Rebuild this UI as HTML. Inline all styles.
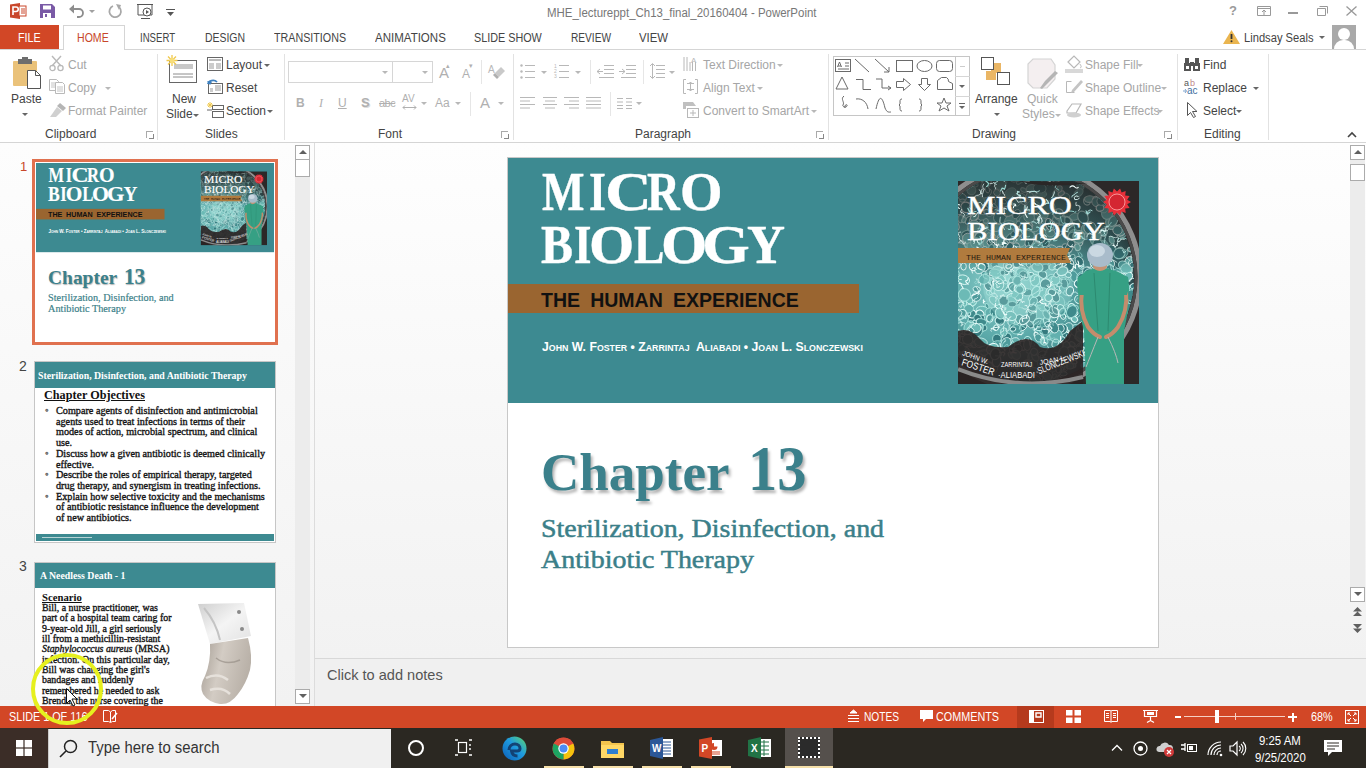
<!DOCTYPE html>
<html><head><meta charset="utf-8">
<style>
*{margin:0;padding:0;box-sizing:border-box}
html,body{width:1366px;height:768px;overflow:hidden;background:#fff;font-family:"Liberation Sans",sans-serif;color:#444}
.a{position:absolute}
.t{position:absolute;white-space:nowrap;line-height:1}
svg{position:absolute;overflow:visible}
.tab{position:absolute;top:32px;font-size:12px;line-height:1;color:#444;white-space:nowrap;transform-origin:0 0;transform:scaleX(0.82)}
.gl{position:absolute;top:128px;font-size:12px;line-height:1;color:#444;white-space:nowrap}
.sep{position:absolute;top:54px;width:1px;height:86px;background:#e2e2e2}
.rb{position:absolute;font-size:12px;line-height:1;color:#444;white-space:nowrap}
.dis{color:#a6a6a6}
.dd{position:absolute;width:0;height:0;border-left:3px solid transparent;border-right:3px solid transparent;border-top:3px solid #666}
.ddd{border-top-color:#b8b8b8}
.lau{position:absolute;width:7px;height:7px;border-left:1px solid #aaa;border-top:1px solid #aaa}
.lau:after{content:"";position:absolute;left:2px;top:2px;width:4px;height:4px;border-right:1px solid #888;border-bottom:1px solid #888}
</style></head><body>
<!-- backgrounds -->
<div class="a" style="left:0;top:0;width:1366px;height:49px;background:#fff"></div>
<div class="a" style="left:0;top:49px;width:1366px;height:94px;background:#fff;border-top:1px solid #d5d5d5;border-bottom:1px solid #d5d5d5"></div>
<div class="a" style="left:315px;top:143px;width:1051px;height:515px;background:linear-gradient(#fefefe,#f2f2f2)"></div>
<div class="a" style="left:315px;top:658px;width:1051px;height:48px;background:#f0f0f0;border-top:1px solid #d8d8d8"></div>
<div class="a" style="left:0;top:143px;width:315px;height:563px;background:linear-gradient(#fdfdfd,#f2f2f2);border-right:1px solid #dcdcdc"></div>
<div class="a" style="left:0;top:706px;width:1366px;height:22px;background:#d24726"></div>
<div class="a" style="left:0;top:728px;width:1366px;height:40px;background:#2b2822"></div>
<!-- title bar icons -->
<svg style="left:9px;top:3px" width="18" height="16" viewBox="0 0 18 16">
<path d="M1 1.5 L11 0 L11 16 L1 14.5 Z" fill="#c9472b"/>
<rect x="10" y="3" width="7" height="10" fill="#fff" stroke="#c9472b" stroke-width="1"/>
<path d="M12 6h4M12 8h4M12 10h4" stroke="#c9472b" stroke-width="1"/>
<path d="M4 12V4h3a2 2 0 0 1 0 4.5H4" fill="none" stroke="#fff" stroke-width="1.6"/>
</svg>
<svg style="left:40px;top:4px" width="15" height="14" viewBox="0 0 15 14">
<path d="M0 0h12l3 3v11H0z" fill="#7a5aa6"/>
<rect x="3" y="1.5" width="8" height="4" fill="#fff"/>
<rect x="3" y="9" width="8" height="5" fill="#fff"/>
<rect x="5" y="10" width="2" height="3" fill="#7a5aa6"/>
</svg>
<svg style="left:69px;top:4px" width="16" height="13" viewBox="0 0 16 13">
<path d="M4 5h6a4 4 0 0 1 0 8H8" fill="none" stroke="#8d8d8d" stroke-width="1.8"/>
<path d="M0 5l5-4.5v9z" fill="#8d8d8d"/>
</svg>
<div class="dd ddd" style="left:89px;top:10px;border-top-color:#a0a0a0"></div>
<svg style="left:108px;top:4px" width="15" height="14" viewBox="0 0 15 14">
<path d="M11.5 3.5A5.8 5.8 0 1 1 5 2" fill="none" stroke="#a8a8a8" stroke-width="1.8"/>
<path d="M8 0l5 1-2 5z" fill="#a8a8a8"/>
</svg>
<svg style="left:137px;top:4px" width="17" height="15" viewBox="0 0 17 15">
<path d="M0 .5h16M1 1v10h14V1" fill="none" stroke="#555" stroke-width="1"/>
<circle cx="10" cy="8" r="4" fill="#fff" stroke="#555" stroke-width="1"/>
<path d="M9 6v4l3-2z" fill="#555"/>
<path d="M4 14.5h9" stroke="#555" stroke-width="1"/>
</svg>
<svg style="left:166px;top:9px" width="9" height="7" viewBox="0 0 9 7">
<path d="M0 .5h9" stroke="#555" stroke-width="1"/><path d="M1 3h7l-3.5 4z" fill="#555"/>
</svg>
<div class="t" style="left:547px;top:7px;font-size:12px;color:#777;transform-origin:0 0;transform:scaleX(0.955)">MHE_lectureppt_Ch13_final_20160404 - PowerPoint</div>
<!-- window controls -->
<div class="t" style="left:1229px;top:4px;font-size:13px;font-weight:bold;color:#9a9a9a">?</div>
<svg style="left:1257px;top:6px" width="14" height="10" viewBox="0 0 14 10"><path d="M.5 .5h13v9H.5zM.5 2.5h13" fill="none" stroke="#999" stroke-width="1"/><path d="M7 4v5M5 6l2-2 2 2" fill="none" stroke="#999" stroke-width="1"/></svg>
<div class="a" style="left:1288px;top:12px;width:10px;height:1.5px;background:#999"></div>
<svg style="left:1317px;top:6px" width="11" height="10" viewBox="0 0 11 10"><path d="M.5 2.5h8v7h-8zM2.5 .5h8v7" fill="none" stroke="#999" stroke-width="1"/></svg>
<svg style="left:1346px;top:6px" width="11" height="10" viewBox="0 0 11 10"><path d="M.5 .5l10 9M10.5 .5l-10 9" fill="none" stroke="#999" stroke-width="1.3"/></svg>

<!-- tabs -->
<div class="a" style="left:0;top:25px;width:59px;height:24px;background:#d24726"></div>
<div class="tab" style="left:18px;color:#fff;transform:scaleX(0.9)">FILE</div>
<div class="a" style="left:63px;top:25px;width:62px;height:25px;background:#fff;border:1px solid #d5d5d5;border-bottom:none"></div>
<div class="tab" style="left:77px;color:#c8472a;transform:scaleX(0.88)">HOME</div>
<div class="tab" style="left:140px;transform:scaleX(0.8)">INSERT</div>
<div class="tab" style="left:205px;transform:scaleX(0.87)">DESIGN</div>
<div class="tab" style="left:274px;transform:scaleX(0.893)">TRANSITIONS</div>
<div class="tab" style="left:375px;transform:scaleX(0.96)">ANIMATIONS</div>
<div class="tab" style="left:474px;transform:scaleX(0.9)">SLIDE SHOW</div>
<div class="tab" style="left:571px;transform:scaleX(0.846)">REVIEW</div>
<div class="tab" style="left:639px;transform:scaleX(0.946)">VIEW</div>
<!-- account -->
<svg style="left:1223px;top:30px" width="17" height="14" viewBox="0 0 17 14"><path d="M8.5 0L17 14H0z" fill="#eab54f"/><path d="M8.5 4v5" stroke="#333" stroke-width="1.8"/><circle cx="8.5" cy="11.3" r="1" fill="#333"/></svg>
<div class="t" style="left:1244px;top:32px;font-size:12px;color:#444;transform-origin:0 0;transform:scaleX(0.93)">Lindsay Seals</div>
<div class="dd" style="left:1319px;top:36px"></div>
<div class="a" style="left:1332px;top:25px;width:24px;height:24px;background:#a9a9a9;overflow:hidden">
 <div class="a" style="left:6px;top:3px;width:12px;height:12px;border-radius:50%;background:#fff"></div>
 <div class="a" style="left:2px;top:15px;width:20px;height:14px;border-radius:9px 9px 0 0;background:#fff"></div>
</div>
<!-- ribbon: clipboard -->
<svg style="left:12px;top:57px" width="30" height="32" viewBox="0 0 30 32">
<rect x="1" y="4" width="24" height="25" rx="1" fill="#eac27a"/>
<rect x="6" y="2" width="14" height="5" fill="#6d6d6d"/><rect x="10" y="0" width="6" height="3" fill="#6d6d6d"/>
<path d="M15.5 13.5h8l5 5v13h-13z" fill="#fff" stroke="#555" stroke-width="1"/>
<path d="M23.5 13.5v5h5" fill="none" stroke="#555" stroke-width="1"/>
</svg>
<div class="rb" style="left:11px;top:93px">Paste</div>
<div class="dd" style="left:22px;top:113px"></div>
<svg style="left:49px;top:56px" width="15" height="15" viewBox="0 0 15 15">
<path d="M3 0l9 10M12 0L3 10" stroke="#b9b9b9" stroke-width="1.4"/>
<circle cx="3.5" cy="12" r="2.6" fill="none" stroke="#b9b9b9" stroke-width="1.3"/><circle cx="11.5" cy="12" r="2.6" fill="none" stroke="#b9b9b9" stroke-width="1.3"/>
</svg>
<div class="rb dis" style="left:68px;top:59px">Cut</div>
<svg style="left:49px;top:79px" width="16" height="15" viewBox="0 0 16 15">
<path d="M.5 .5h7l2 2v9H.5z" fill="#fff" stroke="#b9b9b9"/><path d="M6.5 3.5h7l2 2v9h-9z" fill="#fff" stroke="#b9b9b9"/>
<path d="M8 8h6M8 10h6M8 12h6M2 4h4M2 6h4M2 8h4" stroke="#c4c4c4"/>
</svg>
<div class="rb dis" style="left:68px;top:82px">Copy</div>
<div class="dd ddd" style="left:105px;top:87px"></div>
<svg style="left:50px;top:103px" width="16" height="14" viewBox="0 0 16 14">
<path d="M10 0l6 5-3 3-6-5z" fill="#b5b5b5"/><path d="M7 4l5 4-6 6H0z" fill="#d0d0d0"/>
</svg>
<div class="rb dis" style="left:68px;top:105px">Format Painter</div>
<div class="gl" style="left:45px">Clipboard</div>
<div class="lau" style="left:146px;top:131px"></div>
<div class="sep" style="left:157px"></div>

<!-- slides -->
<svg style="left:166px;top:55px" width="33" height="29" viewBox="0 0 33 29">
<rect x="3.5" y="5.5" width="27" height="22" fill="#fff" stroke="#666" stroke-width="1"/>
<rect x="8" y="9" width="19" height="5" fill="#c8c8c8"/>
<path d="M7 19h20M7 22h20" stroke="#8c8c8c" stroke-width="1"/>
<g stroke="#f0c84a" stroke-width="1.3"><path d="M6 0v11M0.5 5.5h11M2 1.5l8 8M10 1.5l-8 8"/></g>
<circle cx="6" cy="5.5" r="2.5" fill="#f7de7a"/>
</svg>
<div class="rb" style="left:172px;top:93px">New</div>
<div class="rb" style="left:166px;top:108px">Slide</div>
<div class="dd" style="left:193px;top:114px"></div>
<svg style="left:207px;top:57px" width="16" height="14" viewBox="0 0 16 14">
<rect x=".5" y=".5" width="15" height="13" fill="#fff" stroke="#666"/><rect x="2" y="2" width="12" height="2" fill="#bbb"/>
<rect x="2" y="6" width="5" height="6" fill="#ccc"/><path d="M9 7h5M9 9h5M9 11h5" stroke="#999"/>
</svg>
<div class="rb" style="left:226px;top:59px">Layout</div>
<div class="dd" style="left:264px;top:64px"></div>
<svg style="left:207px;top:79px" width="16" height="15" viewBox="0 0 16 15">
<rect x="1.5" y="4.5" width="14" height="10" fill="#fff" stroke="#666"/><path d="M8 7h6M8 9h6M8 11h6M3 10h3M3 12h3" stroke="#999"/>
<path d="M1 5a5 4 0 0 1 9-2" fill="none" stroke="#3d80c0" stroke-width="1.8"/><path d="M0 2l3 4 2-3z" fill="#3d80c0"/>
</svg>
<div class="rb" style="left:226px;top:82px">Reset</div>
<svg style="left:207px;top:102px" width="17" height="16" viewBox="0 0 17 16">
<rect x="5.5" y="3.5" width="11" height="4" fill="#fff" stroke="#666"/><rect x="5.5" y="9.5" width="11" height="6" fill="#fff" stroke="#666"/>
<g stroke="#f0c84a" stroke-width="1"><path d="M3 0v6M0 3h6M1 1l4 4M5 1L1 5"/></g><path d="M0 8h5" stroke="#666"/>
</svg>
<div class="rb" style="left:226px;top:105px">Section</div>
<div class="dd" style="left:267px;top:110px"></div>
<div class="gl" style="left:205px">Slides</div>
<div class="sep" style="left:284px"></div>

<!-- font -->
<div class="a" style="left:288px;top:61px;width:105px;height:22px;border:1px solid #d6d6d6;background:#fff"></div>
<div class="a" style="left:392px;top:61px;width:41px;height:22px;border:1px solid #d6d6d6;background:#fff"></div>
<div class="dd ddd" style="left:382px;top:71px"></div>
<div class="dd ddd" style="left:422px;top:71px"></div>
<div class="t" style="left:439px;top:65px;font-size:15px;color:#b0b0b0">A</div>
<div class="t" style="left:446px;top:62px;font-size:7px;color:#b0b0b0">▴</div>
<div class="t" style="left:462px;top:68px;font-size:12px;color:#b0b0b0">A</div>
<div class="t" style="left:469px;top:62px;font-size:7px;color:#b0b0b0">▾</div>
<div class="a" style="left:481px;top:60px;width:1px;height:24px;background:#e6e6e6"></div>
<svg style="left:488px;top:63px" width="17" height="17" viewBox="0 0 17 17">
<text x="0" y="10" font-size="10" fill="#b8b8b8" font-family="Liberation Sans">A</text>
<path d="M7 10l6-6 4 4-6 6z" fill="#c9c9c9"/><path d="M5 12l2-2 4 4-2 2z" fill="#b0b0b0"/>
</svg>
<div class="t" style="left:296px;top:97px;font-size:12px;font-weight:bold;color:#b0b0b0">B</div>
<div class="t" style="left:319px;top:97px;font-size:12px;font-style:italic;color:#b0b0b0;font-family:'Liberation Serif'">I</div>
<div class="t" style="left:338px;top:97px;font-size:12px;color:#b0b0b0;text-decoration:underline">U</div>
<div class="t" style="left:361px;top:96px;font-size:13px;font-weight:bold;color:#b0b0b0;text-shadow:1px 1px 0 #ddd">S</div>
<div class="t" style="left:379px;top:98px;font-size:11px;color:#b0b0b0;text-decoration:line-through;letter-spacing:-0.5px">abc</div>
<div class="t" style="left:402px;top:94px;font-size:10px;color:#b0b0b0">AV</div>
<svg style="left:402px;top:105px" width="15" height="5" viewBox="0 0 15 5"><path d="M1 2.5h13M3 .5l-2 2 2 2M12 .5l2 2-2 2" fill="none" stroke="#b0b0b0"/></svg>
<div class="dd ddd" style="left:421px;top:102px"></div>
<div class="t" style="left:435px;top:97px;font-size:12px;color:#b0b0b0">Aa</div>
<div class="dd ddd" style="left:455px;top:102px"></div>
<div class="a" style="left:470px;top:92px;width:1px;height:24px;background:#e6e6e6"></div>
<div class="t" style="left:480px;top:95px;font-size:15px;color:#b0b0b0">A</div>
<div class="dd ddd" style="left:498px;top:102px"></div>
<div class="gl" style="left:378px">Font</div>
<div class="lau" style="left:501px;top:131px"></div>
<div class="sep" style="left:513px"></div>
<!-- paragraph -->
<svg style="left:520px;top:64px" width="16" height="15" viewBox="0 0 16 15"><g fill="#b8b8b8"><circle cx="1.5" cy="1.5" r="1.2"/><circle cx="1.5" cy="7.5" r="1.2"/><circle cx="1.5" cy="13.5" r="1.2"/></g><path d="M5 1.5h10M5 7.5h10M5 13.5h10" stroke="#b8b8b8"/></svg>
<div class="dd ddd" style="left:541px;top:71px"></div>
<svg style="left:554px;top:63px" width="16" height="16" viewBox="0 0 16 16"><text x="0" y="5" font-size="5" fill="#b8b8b8" font-family="Liberation Sans">1</text><text x="0" y="10" font-size="5" fill="#b8b8b8" font-family="Liberation Sans">2</text><text x="0" y="15" font-size="5" fill="#b8b8b8" font-family="Liberation Sans">3</text><path d="M5 2.5h10M5 8.5h10M5 14.5h10" stroke="#b8b8b8"/></svg>
<div class="dd ddd" style="left:575px;top:71px"></div>
<div class="a" style="left:590px;top:60px;width:1px;height:24px;background:#e6e6e6"></div>
<svg style="left:597px;top:65px" width="17" height="13" viewBox="0 0 17 13"><path d="M7 .5h10M7 4.5h10M7 8.5h10M2 12.5h15M0 6.5h6M3 4l-3 2.5 3 2.5" fill="none" stroke="#b8b8b8"/></svg>
<svg style="left:619px;top:65px" width="17" height="13" viewBox="0 0 17 13"><path d="M7 .5h10M7 4.5h10M7 8.5h10M2 12.5h15M0 6.5h6M3 4l3 2.5-3 2.5" fill="none" stroke="#b8b8b8"/></svg>
<div class="a" style="left:643px;top:60px;width:1px;height:24px;background:#e6e6e6"></div>
<svg style="left:650px;top:63px" width="15" height="16" viewBox="0 0 15 16"><path d="M6 2.5h9M6 6.5h9M6 10.5h9M6 14.5h9M2.5 1v14M0 3l2.5-2.5L5 3M0 13l2.5 2.5L5 13" fill="none" stroke="#b8b8b8"/></svg>
<div class="dd ddd" style="left:669px;top:71px"></div>
<svg style="left:683px;top:56px" width="15" height="16" viewBox="0 0 15 16"><path d="M1 1v14M4 1v14M7 6v9M9.5 6v9M12.5 6v9" stroke="#b8b8b8"/><text x="8" y="7" font-size="8" fill="#b8b8b8" font-family="Liberation Sans">A</text></svg>
<div class="rb dis" style="left:703px;top:59px">Text Direction</div>
<div class="dd ddd" style="left:777px;top:64px"></div>
<svg style="left:683px;top:79px" width="15" height="15" viewBox="0 0 15 15"><path d="M3 .5H.5v14H3M12 .5h2.5v14H12M4 4.5h7M4 10.5h7M7.5 3v9M6 4.5l1.5-1.5L9 4.5M6 10.5l1.5 1.5 1.5-1.5" fill="none" stroke="#b8b8b8"/></svg>
<div class="rb dis" style="left:703px;top:82px">Align Text</div>
<div class="dd ddd" style="left:757px;top:87px"></div>
<svg style="left:683px;top:101px" width="16" height="17" viewBox="0 0 16 17"><path d="M0 1h10l3 4H3v3H0z" fill="#c0c0c0"/><rect x="4.5" y="7.5" width="11" height="9" fill="#fff" stroke="#b8b8b8"/><path d="M10 9v6M7 12h6" stroke="#b8b8b8"/></svg>
<div class="rb dis" style="left:703px;top:105px">Convert to SmartArt</div>
<div class="dd ddd" style="left:811px;top:110px"></div>
<svg style="left:520px;top:97px" width="82" height="12" viewBox="0 0 82 12"><g stroke="#b8b8b8" fill="none">
<path d="M0 .5h15M0 4h10M0 7.5h15M0 11h10"/>
<path d="M23 .5h14M25 4h10M23 7.5h14M25 11h10"/>
<path d="M44 .5h15M49 4h10M44 7.5h15M49 11h10"/>
<path d="M66 .5h15M66 4h15M66 7.5h15M66 11h15"/></g></svg>
<div class="a" style="left:610px;top:92px;width:1px;height:24px;background:#e6e6e6"></div>
<svg style="left:617px;top:98px" width="15" height="11" viewBox="0 0 15 11"><path d="M0 .5h6M0 4h6M0 7.5h6M0 10.5h6M9 .5h6M9 4h6M9 7.5h6M9 10.5h6" stroke="#b8b8b8"/></svg>
<div class="dd ddd" style="left:636px;top:102px"></div>
<div class="gl" style="left:635px">Paragraph</div>
<div class="lau" style="left:816px;top:131px"></div>
<div class="sep" style="left:828px"></div>

<!-- drawing -->
<div class="a" style="left:833px;top:56px;width:137px;height:60px;border:1px solid #c6c6c6;background:#fff"></div>
<div class="a" style="left:955px;top:56px;width:1px;height:60px;background:#c6c6c6"></div>
<div class="a" style="left:955px;top:76px;width:15px;height:1px;background:#d6d6d6"></div>
<div class="a" style="left:955px;top:96px;width:15px;height:1px;background:#d6d6d6"></div>
<div class="a" style="left:960px;top:66px;width:5px;height:1px;background:#ccc"></div>
<div class="dd" style="left:959px;top:85px"></div>
<div class="a" style="left:959px;top:103px;width:6px;height:1px;background:#666"></div>
<div class="dd" style="left:959px;top:106px"></div>
<svg style="left:833px;top:56px" width="122" height="60" viewBox="0 0 122 60"><g fill="none" stroke="#6a6a6a" stroke-width="1">
<rect x="2.5" y="3.5" width="15" height="12"/><path d="M5 10h3M12 7h4M12 10h4M5 13h11"/><path d="M4.5 11l2-5 2 5" />
<path d="M22 3l14 13"/>
<path d="M42 3l14 13M56 11v5h-5"/>
<rect x="63.5" y="4.5" width="16" height="11"/>
<ellipse cx="91.5" cy="10" rx="7.5" ry="5.5"/>
<rect x="103.5" y="4.5" width="16" height="11" rx="3"/>
<path d="M3 33l6-12 6 12z"/>
<path d="M23 23.5h7v10h8"/>
<path d="M43 23h6v9h9M55 30l3 2-3 2"/>
<path d="M63.5 25.5h7v-3l7 6-7 6v-3h-7z"/>
<path d="M88.5 22.5h6v6h3l-6 6-6-6h3z"/>
<path d="M104.5 24.5l4-3h5a4 4 0 0 1 2 4l4 2v6h-15z"/>
<path d="M11 40c-4 3 1 6-1 9-1 2 3 3 4 1s-3-2-2 2"/>
<path d="M23 43c6-1 11 3 12 10"/>
<path d="M43 53c3-14 6-14 9-1 2 5 4 4 6 4"/>
<path d="M69 43c-2 0-2 1-2 3v2l-1 1 1 1v2c0 2 0 3 2 3"/>
<path d="M86 43c2 0 2 1 2 3v2l1 1-1 1v2c0 2 0 3-2 3"/>
<path d="M111 42l2 5h5l-4 3 2 5-5-3-5 3 2-5-4-3h5z"/>
</g></svg>
<svg style="left:981px;top:57px" width="29" height="28" viewBox="0 0 29 28">
<rect x="10" y="6" width="10" height="10" fill="#eab665"/><rect x="5" y="14" width="10" height="9" fill="#eab665"/>
<rect x=".5" y=".5" width="12" height="12" fill="#fff" stroke="#555"/><rect x="16.5" y="15.5" width="12" height="12" fill="#fff" stroke="#555"/>
</svg>
<div class="rb" style="left:975px;top:93px">Arrange</div>
<div class="dd" style="left:994px;top:113px"></div>
<svg style="left:1027px;top:58px" width="31" height="31" viewBox="0 0 31 31">
<path d="M6 1h18l4 6v14l-8 9H6l-5-5V6z" fill="#f4eff0" stroke="#d4d4d4" stroke-width="1.2"/>
<path d="M13 30l5-7 10-10 3 2-10 10-6 6z" fill="#b5b5b5"/>
</svg>
<div class="rb dis" style="left:1027px;top:93px">Quick</div>
<div class="rb dis" style="left:1022px;top:108px">Styles</div>
<div class="dd ddd" style="left:1055px;top:114px"></div>
<svg style="left:1065px;top:55px" width="18" height="18" viewBox="0 0 18 18"><path d="M3 7l6-6 6 6-6 6z" fill="#fff" stroke="#b8b8b8" stroke-width="1.2"/><path d="M15 9c1 2 2 3 0 4" stroke="#b8b8b8" fill="none"/><rect x="0" y="14" width="18" height="4" fill="#d8d8d8"/></svg>
<div class="rb dis" style="left:1085px;top:59px">Shape Fill</div>
<div class="dd ddd" style="left:1137px;top:64px"></div>
<svg style="left:1066px;top:78px" width="17" height="15" viewBox="0 0 17 15"><path d="M.5 3.5v11h8M.5 3.5h5" fill="none" stroke="#b8b8b8"/><path d="M6 12l9-10 2 2-9 10-3 1z" fill="#c4c4c4"/></svg>
<div class="rb dis" style="left:1085px;top:82px">Shape Outline</div>
<div class="dd ddd" style="left:1161px;top:87px"></div>
<svg style="left:1066px;top:103px" width="16" height="15" viewBox="0 0 16 15"><path d="M1 8l5-7h9l-5 9H1z" fill="#fff" stroke="#b8b8b8" stroke-width="1.2"/><ellipse cx="8" cy="12" rx="7" ry="2.5" fill="#d0d0d0"/></svg>
<div class="rb dis" style="left:1085px;top:105px">Shape Effects</div>
<div class="dd ddd" style="left:1157px;top:110px"></div>
<div class="gl" style="left:972px">Drawing</div>
<div class="lau" style="left:1164px;top:131px"></div>
<div class="sep" style="left:1177px"></div>

<!-- editing -->
<svg style="left:1184px;top:57px" width="16" height="14" viewBox="0 0 16 14"><g fill="#555"><rect x="0" y="6" width="7" height="8"/><rect x="9" y="6" width="7" height="8"/><rect x="1" y="1" width="4" height="5"/><rect x="11" y="1" width="4" height="5"/><rect x="6" y="5" width="4" height="4"/></g><rect x="2" y="9" width="3" height="3" fill="#fff"/><rect x="11" y="9" width="3" height="3" fill="#fff"/></svg>
<div class="rb" style="left:1203px;top:59px">Find</div>
<svg style="left:1183px;top:78px" width="18" height="17" viewBox="0 0 18 17"><text x="1" y="8" font-size="9" fill="#555" font-family="Liberation Sans">a</text><text x="7" y="8" font-size="9" fill="#c08a8a" font-family="Liberation Sans">b</text><text x="4" y="16" font-size="10" fill="#3f6fa0" font-family="Liberation Sans">ac</text><path d="M0 13h3M2 11l1.5 2L2 15" stroke="#5a8bc0" fill="none" stroke-width="0.8"/></svg>
<div class="rb" style="left:1203px;top:82px">Replace</div>
<div class="dd" style="left:1253px;top:87px"></div>
<svg style="left:1187px;top:102px" width="11" height="16" viewBox="0 0 11 16"><path d="M.5 .5v13l3-3 3 5 2-1-3-5h4.5z" fill="#fff" stroke="#555"/></svg>
<div class="rb" style="left:1203px;top:105px">Select</div>
<div class="dd" style="left:1236px;top:110px"></div>
<div class="gl" style="left:1204px">Editing</div>
<div class="sep" style="left:1268px"></div>
<svg style="left:1347px;top:131px" width="10" height="7" viewBox="0 0 10 7"><path d="M1 6l4-4 4 4" fill="none" stroke="#444" stroke-width="1.6"/></svg>
<div class="a" style="left:507px;top:157px;width:652px;height:491px;border:1px solid #c8c8c8;background:#fff"></div><div class="a" style="left:508px;top:158px;width:650px;height:489px"><div class="a" style="left:0;top:0;width:650px;height:489px;background:#fff;overflow:hidden"><div class="a" style="left:0;top:0;width:650px;height:245px;background:#3d8a91"></div><div class="t" style="left:33.57px;top:6px;font-family:Liberation Serif;font-weight:bold;font-size:55px;color:#fff;-webkit-text-stroke:0.4px #fff;transform-origin:0 0;transform:scaleX(0.818)">M</div><div class="t" style="left:80.62px;top:6px;font-family:Liberation Serif;font-weight:bold;font-size:55px;color:#fff;-webkit-text-stroke:0.4px #fff;transform-origin:0 0;transform:scaleX(0.791)">I</div><div class="t" style="left:97.02px;top:6px;font-family:Liberation Serif;font-weight:bold;font-size:55px;color:#fff;-webkit-text-stroke:0.4px #fff;transform-origin:0 0;transform:scaleX(1.177)">C</div><div class="t" style="left:139.36px;top:6px;font-family:Liberation Serif;font-weight:bold;font-size:55px;color:#fff;-webkit-text-stroke:0.4px #fff;transform-origin:0 0;transform:scaleX(0.825)">R</div><div class="t" style="left:171.79px;top:6px;font-family:Liberation Serif;font-weight:bold;font-size:55px;color:#fff;-webkit-text-stroke:0.4px #fff;transform-origin:0 0;transform:scaleX(0.993)">O</div><div class="t" style="left:33.10px;top:59px;font-family:Liberation Serif;font-weight:bold;font-size:55px;color:#fff;-webkit-text-stroke:0.4px #fff;transform-origin:0 0;transform:scaleX(0.871)">B</div><div class="t" style="left:65.76px;top:59px;font-family:Liberation Serif;font-weight:bold;font-size:55px;color:#fff;-webkit-text-stroke:0.4px #fff;transform-origin:0 0;transform:scaleX(0.816)">I</div><div class="t" style="left:81.05px;top:59px;font-family:Liberation Serif;font-weight:bold;font-size:55px;color:#fff;-webkit-text-stroke:0.4px #fff;transform-origin:0 0;transform:scaleX(1.058)">O</div><div class="t" style="left:125.75px;top:59px;font-family:Liberation Serif;font-weight:bold;font-size:55px;color:#fff;-webkit-text-stroke:0.4px #fff;transform-origin:0 0;transform:scaleX(0.829)">L</div><div class="t" style="left:153.39px;top:59px;font-family:Liberation Serif;font-weight:bold;font-size:55px;color:#fff;-webkit-text-stroke:0.4px #fff;transform-origin:0 0;transform:scaleX(1.083)">O</div><div class="t" style="left:193.82px;top:59px;font-family:Liberation Serif;font-weight:bold;font-size:55px;color:#fff;-webkit-text-stroke:0.4px #fff;transform-origin:0 0;transform:scaleX(1.116)">G</div><div class="t" style="left:239.34px;top:59px;font-family:Liberation Serif;font-weight:bold;font-size:55px;color:#fff;-webkit-text-stroke:0.4px #fff;transform-origin:0 0;transform:scaleX(0.958)">Y</div><div class="a" style="left:0;top:126px;width:351px;height:29px;background:#9a6530"></div><div class="t" style="left:33px;top:131px;font-family:'Liberation Sans';font-weight:bold;font-size:21px;color:#111;transform-origin:0 0;transform:scaleX(0.93);word-spacing:5px">THE HUMAN EXPERIENCE</div><div class="t" style="left:34px;top:183px;font-family:'Liberation Sans';font-weight:bold;font-size:12.5px;color:#fff;font-variant:small-caps;transform-origin:0 0;transform:scaleX(0.978)">John W. Foster • Zarrintaj&nbsp; Aliabadi • Joan L. Slonczewski</div><div class="a" style="left:450px;top:23px;width:181px;height:203px;overflow:hidden"><svg width="181" height="203" viewBox="0 0 181 203" style="left:0;top:0"><defs><radialGradient id="cg" cx="0.4" cy="0.52" r="0.62"><stop offset="0" stop-color="#8fd2ce"/><stop offset="0.45" stop-color="#5aa8a8"/><stop offset="0.85" stop-color="#356c70"/><stop offset="1" stop-color="#2a4446"/></radialGradient><clipPath id="cc"><circle cx="70" cy="96" r="106"/></clipPath></defs><rect width="181" height="203" fill="#2c2828"/><circle cx="70" cy="96" r="112" fill="none" stroke="#8e8e8e" stroke-width="5"/><circle cx="70" cy="96" r="108" fill="none" stroke="#4a4a4a" stroke-width="3"/><circle cx="70" cy="96" r="106" fill="url(#cg)"/><defs><linearGradient id="tg" x1="0" y1="0" x2="0" y2="1"><stop offset="0" stop-color="#262424" stop-opacity="0.8"/><stop offset="0.3" stop-color="#262424" stop-opacity="0.35"/><stop offset="0.45" stop-color="#262424" stop-opacity="0"/></linearGradient></defs><g clip-path="url(#cc)"><ellipse cx="6.3" cy="70.9" rx="6.2" ry="5.0" fill="#357a7e" stroke="#a0dcd6" stroke-width="1.1" transform="rotate(48 6.3 70.9)"/><ellipse cx="28.3" cy="92.9" rx="5.0" ry="3.9" fill="#4f9c9c" stroke="#d6f6f2" stroke-width="0.7" transform="rotate(23 28.3 92.9)"/><ellipse cx="128.2" cy="48.1" rx="5.0" ry="5.0" fill="#6cbab6" stroke="#a0dcd6" stroke-width="1.1" transform="rotate(157 128.2 48.1)"/><ellipse cx="10.2" cy="37.6" rx="5.8" ry="3.6" fill="#3f8a8c" stroke="#d6f6f2" stroke-width="0.7" transform="rotate(153 10.2 37.6)"/><ellipse cx="55.0" cy="99.5" rx="4.3" ry="3.6" fill="#4f9c9c" stroke="#b8ece6" stroke-width="0.9" transform="rotate(1 55.0 99.5)"/><ellipse cx="-11.5" cy="118.4" rx="3.6" ry="3.2" fill="#6cbab6" stroke="#d6f6f2" stroke-width="0.9" transform="rotate(58 -11.5 118.4)"/><ellipse cx="142.1" cy="109.6" rx="4.8" ry="3.1" fill="#3f8a8c" stroke="#a0dcd6" stroke-width="0.9" transform="rotate(98 142.1 109.6)"/><ellipse cx="93.8" cy="98.5" rx="5.2" ry="5.1" fill="#4f9c9c" stroke="#b8ece6" stroke-width="0.7" transform="rotate(120 93.8 98.5)"/><ellipse cx="54.2" cy="36.2" rx="4.2" ry="3.8" fill="#6cbab6" stroke="#b8ece6" stroke-width="0.9" transform="rotate(86 54.2 36.2)"/><ellipse cx="56.3" cy="120.1" rx="6.4" ry="4.4" fill="#3f8a8c" stroke="#b8ece6" stroke-width="0.7" transform="rotate(2 56.3 120.1)"/><ellipse cx="76.6" cy="74.4" rx="3.2" ry="2.5" fill="#6cbab6" stroke="#b8ece6" stroke-width="0.7" transform="rotate(33 76.6 74.4)"/><ellipse cx="21.0" cy="139.8" rx="4.1" ry="2.9" fill="#4f9c9c" stroke="#d6f6f2" stroke-width="1.1" transform="rotate(77 21.0 139.8)"/><ellipse cx="175.1" cy="109.0" rx="3.2" ry="2.0" fill="#6cbab6" stroke="#d6f6f2" stroke-width="0.7" transform="rotate(54 175.1 109.0)"/><ellipse cx="137.5" cy="100.1" rx="4.9" ry="3.1" fill="#62b0ae" stroke="#a0dcd6" stroke-width="0.7" transform="rotate(53 137.5 100.1)"/><ellipse cx="73.5" cy="174.7" rx="4.9" ry="3.2" fill="#62b0ae" stroke="#a0dcd6" stroke-width="1.1" transform="rotate(123 73.5 174.7)"/><ellipse cx="133.0" cy="168.2" rx="4.0" ry="3.9" fill="#4f9c9c" stroke="#f0fffd" stroke-width="1.1" transform="rotate(63 133.0 168.2)"/><ellipse cx="118.3" cy="170.6" rx="5.0" ry="4.4" fill="#6cbab6" stroke="#b8ece6" stroke-width="0.9" transform="rotate(123 118.3 170.6)"/><ellipse cx="-0.7" cy="134.0" rx="2.9" ry="2.0" fill="#3f8a8c" stroke="#f0fffd" stroke-width="1.1" transform="rotate(100 -0.7 134.0)"/><ellipse cx="92.4" cy="51.1" rx="4.9" ry="4.7" fill="#62b0ae" stroke="#b8ece6" stroke-width="0.7" transform="rotate(32 92.4 51.1)"/><ellipse cx="26.2" cy="78.9" rx="5.9" ry="4.2" fill="#6cbab6" stroke="#d6f6f2" stroke-width="0.7" transform="rotate(4 26.2 78.9)"/><ellipse cx="49.3" cy="108.9" rx="3.5" ry="2.5" fill="#3f8a8c" stroke="#b8ece6" stroke-width="1.1" transform="rotate(146 49.3 108.9)"/><ellipse cx="157.4" cy="153.2" rx="3.1" ry="2.6" fill="#357a7e" stroke="#f0fffd" stroke-width="1.1" transform="rotate(133 157.4 153.2)"/><ellipse cx="120.2" cy="156.9" rx="2.6" ry="2.5" fill="#3f8a8c" stroke="#a0dcd6" stroke-width="1.1" transform="rotate(79 120.2 156.9)"/><ellipse cx="172.9" cy="109.8" rx="5.0" ry="4.5" fill="#357a7e" stroke="#d6f6f2" stroke-width="0.9" transform="rotate(34 172.9 109.8)"/><ellipse cx="164.3" cy="144.3" rx="4.7" ry="4.3" fill="#3f8a8c" stroke="#b8ece6" stroke-width="0.9" transform="rotate(90 164.3 144.3)"/><ellipse cx="43.1" cy="100.6" rx="2.8" ry="2.7" fill="#357a7e" stroke="#d6f6f2" stroke-width="1.1" transform="rotate(3 43.1 100.6)"/><ellipse cx="9.5" cy="151.2" rx="4.8" ry="3.1" fill="#6cbab6" stroke="#d6f6f2" stroke-width="1.1" transform="rotate(29 9.5 151.2)"/><ellipse cx="146.9" cy="23.6" rx="5.4" ry="4.2" fill="#357a7e" stroke="#a0dcd6" stroke-width="1.1" transform="rotate(21 146.9 23.6)"/><ellipse cx="-3.6" cy="89.3" rx="3.7" ry="2.3" fill="#3f8a8c" stroke="#a0dcd6" stroke-width="1.1" transform="rotate(28 -3.6 89.3)"/><ellipse cx="15.7" cy="48.4" rx="6.2" ry="4.6" fill="#62b0ae" stroke="#d6f6f2" stroke-width="0.7" transform="rotate(173 15.7 48.4)"/><ellipse cx="-10.4" cy="86.7" rx="5.5" ry="4.4" fill="#62b0ae" stroke="#a0dcd6" stroke-width="0.7" transform="rotate(83 -10.4 86.7)"/><ellipse cx="69.8" cy="160.5" rx="5.0" ry="3.8" fill="#4f9c9c" stroke="#b8ece6" stroke-width="1.1" transform="rotate(81 69.8 160.5)"/><ellipse cx="99.8" cy="129.6" rx="3.9" ry="3.8" fill="#3f8a8c" stroke="#d6f6f2" stroke-width="0.9" transform="rotate(43 99.8 129.6)"/><ellipse cx="38.6" cy="101.7" rx="6.2" ry="5.3" fill="#357a7e" stroke="#a0dcd6" stroke-width="0.9" transform="rotate(172 38.6 101.7)"/><ellipse cx="99.8" cy="48.4" rx="6.4" ry="4.0" fill="#357a7e" stroke="#f0fffd" stroke-width="0.7" transform="rotate(71 99.8 48.4)"/><ellipse cx="165.0" cy="121.4" rx="5.3" ry="3.9" fill="#6cbab6" stroke="#f0fffd" stroke-width="1.1" transform="rotate(4 165.0 121.4)"/><ellipse cx="1.3" cy="142.6" rx="3.3" ry="3.0" fill="#62b0ae" stroke="#b8ece6" stroke-width="0.7" transform="rotate(161 1.3 142.6)"/><ellipse cx="95.0" cy="116.4" rx="4.6" ry="4.1" fill="#62b0ae" stroke="#d6f6f2" stroke-width="0.7" transform="rotate(121 95.0 116.4)"/><ellipse cx="58.8" cy="47.2" rx="5.5" ry="3.7" fill="#6cbab6" stroke="#d6f6f2" stroke-width="0.9" transform="rotate(88 58.8 47.2)"/><ellipse cx="141.3" cy="71.2" rx="4.5" ry="4.2" fill="#4f9c9c" stroke="#a0dcd6" stroke-width="1.1" transform="rotate(57 141.3 71.2)"/><ellipse cx="95.3" cy="84.6" rx="5.4" ry="4.2" fill="#4f9c9c" stroke="#a0dcd6" stroke-width="1.1" transform="rotate(1 95.3 84.6)"/><ellipse cx="13.7" cy="70.0" rx="6.0" ry="4.4" fill="#62b0ae" stroke="#a0dcd6" stroke-width="0.7" transform="rotate(25 13.7 70.0)"/><ellipse cx="106.9" cy="15.4" rx="5.1" ry="3.5" fill="#3f8a8c" stroke="#b8ece6" stroke-width="0.9" transform="rotate(22 106.9 15.4)"/><ellipse cx="-31.9" cy="71.9" rx="5.7" ry="5.5" fill="#62b0ae" stroke="#f0fffd" stroke-width="0.7" transform="rotate(89 -31.9 71.9)"/><ellipse cx="140.8" cy="112.8" rx="3.9" ry="3.1" fill="#357a7e" stroke="#f0fffd" stroke-width="0.7" transform="rotate(55 140.8 112.8)"/><ellipse cx="156.8" cy="133.0" rx="5.7" ry="5.0" fill="#4f9c9c" stroke="#f0fffd" stroke-width="0.7" transform="rotate(120 156.8 133.0)"/><ellipse cx="33.0" cy="92.1" rx="5.4" ry="4.5" fill="#357a7e" stroke="#a0dcd6" stroke-width="1.1" transform="rotate(22 33.0 92.1)"/><ellipse cx="-14.5" cy="129.8" rx="4.7" ry="3.8" fill="#6cbab6" stroke="#b8ece6" stroke-width="1.1" transform="rotate(65 -14.5 129.8)"/><ellipse cx="29.0" cy="133.9" rx="5.9" ry="4.2" fill="#6cbab6" stroke="#b8ece6" stroke-width="0.7" transform="rotate(139 29.0 133.9)"/><ellipse cx="3.4" cy="63.1" rx="3.3" ry="2.6" fill="#6cbab6" stroke="#d6f6f2" stroke-width="1.1" transform="rotate(96 3.4 63.1)"/><ellipse cx="84.5" cy="93.2" rx="4.6" ry="3.6" fill="#357a7e" stroke="#d6f6f2" stroke-width="1.1" transform="rotate(42 84.5 93.2)"/><ellipse cx="46.9" cy="90.3" rx="4.2" ry="2.9" fill="#357a7e" stroke="#f0fffd" stroke-width="0.9" transform="rotate(32 46.9 90.3)"/><ellipse cx="117.5" cy="61.9" rx="6.2" ry="4.0" fill="#357a7e" stroke="#f0fffd" stroke-width="0.9" transform="rotate(158 117.5 61.9)"/><ellipse cx="69.0" cy="111.2" rx="5.3" ry="3.6" fill="#3f8a8c" stroke="#d6f6f2" stroke-width="0.7" transform="rotate(3 69.0 111.2)"/><ellipse cx="32.3" cy="173.5" rx="3.9" ry="2.5" fill="#6cbab6" stroke="#a0dcd6" stroke-width="1.1" transform="rotate(149 32.3 173.5)"/><ellipse cx="36.6" cy="93.8" rx="3.5" ry="2.1" fill="#4f9c9c" stroke="#a0dcd6" stroke-width="1.1" transform="rotate(105 36.6 93.8)"/><ellipse cx="-1.2" cy="32.6" rx="4.7" ry="3.8" fill="#6cbab6" stroke="#b8ece6" stroke-width="1.1" transform="rotate(156 -1.2 32.6)"/><ellipse cx="121.7" cy="155.8" rx="6.2" ry="4.5" fill="#62b0ae" stroke="#b8ece6" stroke-width="0.9" transform="rotate(49 121.7 155.8)"/><ellipse cx="115.9" cy="95.5" rx="6.1" ry="4.0" fill="#4f9c9c" stroke="#b8ece6" stroke-width="0.7" transform="rotate(66 115.9 95.5)"/><ellipse cx="12.2" cy="121.1" rx="6.3" ry="4.3" fill="#6cbab6" stroke="#b8ece6" stroke-width="1.1" transform="rotate(175 12.2 121.1)"/><ellipse cx="147.1" cy="149.2" rx="4.8" ry="3.1" fill="#62b0ae" stroke="#f0fffd" stroke-width="1.1" transform="rotate(162 147.1 149.2)"/><ellipse cx="-21.0" cy="94.4" rx="5.2" ry="4.2" fill="#4f9c9c" stroke="#d6f6f2" stroke-width="0.7" transform="rotate(9 -21.0 94.4)"/><ellipse cx="0.9" cy="36.3" rx="6.1" ry="4.1" fill="#357a7e" stroke="#b8ece6" stroke-width="0.7" transform="rotate(52 0.9 36.3)"/><ellipse cx="92.0" cy="129.8" rx="3.6" ry="2.4" fill="#3f8a8c" stroke="#d6f6f2" stroke-width="1.1" transform="rotate(118 92.0 129.8)"/><ellipse cx="91.3" cy="110.8" rx="4.1" ry="3.1" fill="#357a7e" stroke="#f0fffd" stroke-width="1.1" transform="rotate(95 91.3 110.8)"/><ellipse cx="67.0" cy="86.6" rx="5.9" ry="4.6" fill="#4f9c9c" stroke="#a0dcd6" stroke-width="1.1" transform="rotate(94 67.0 86.6)"/><ellipse cx="91.8" cy="156.7" rx="3.2" ry="2.3" fill="#6cbab6" stroke="#d6f6f2" stroke-width="0.7" transform="rotate(180 91.8 156.7)"/><ellipse cx="152.8" cy="42.5" rx="6.3" ry="5.0" fill="#6cbab6" stroke="#b8ece6" stroke-width="0.9" transform="rotate(66 152.8 42.5)"/><ellipse cx="109.2" cy="131.1" rx="5.5" ry="3.6" fill="#4f9c9c" stroke="#a0dcd6" stroke-width="0.9" transform="rotate(137 109.2 131.1)"/><ellipse cx="79.4" cy="9.7" rx="5.6" ry="4.9" fill="#357a7e" stroke="#b8ece6" stroke-width="0.7" transform="rotate(87 79.4 9.7)"/><ellipse cx="114.2" cy="128.5" rx="6.1" ry="4.2" fill="#6cbab6" stroke="#d6f6f2" stroke-width="1.1" transform="rotate(76 114.2 128.5)"/><ellipse cx="38.7" cy="46.8" rx="4.8" ry="3.6" fill="#6cbab6" stroke="#d6f6f2" stroke-width="0.9" transform="rotate(164 38.7 46.8)"/><ellipse cx="103.1" cy="126.9" rx="4.1" ry="2.6" fill="#6cbab6" stroke="#d6f6f2" stroke-width="0.7" transform="rotate(60 103.1 126.9)"/><ellipse cx="29.1" cy="125.1" rx="2.7" ry="1.6" fill="#4f9c9c" stroke="#a0dcd6" stroke-width="0.9" transform="rotate(64 29.1 125.1)"/><ellipse cx="41.8" cy="139.9" rx="4.7" ry="4.0" fill="#357a7e" stroke="#d6f6f2" stroke-width="1.1" transform="rotate(19 41.8 139.9)"/><ellipse cx="32.6" cy="29.5" rx="6.3" ry="4.8" fill="#357a7e" stroke="#b8ece6" stroke-width="0.7" transform="rotate(126 32.6 29.5)"/><ellipse cx="7.8" cy="52.8" rx="4.2" ry="3.0" fill="#357a7e" stroke="#a0dcd6" stroke-width="0.9" transform="rotate(153 7.8 52.8)"/><ellipse cx="15.1" cy="85.4" rx="4.4" ry="3.8" fill="#62b0ae" stroke="#f0fffd" stroke-width="1.1" transform="rotate(75 15.1 85.4)"/><ellipse cx="72.0" cy="81.6" rx="4.8" ry="4.4" fill="#4f9c9c" stroke="#a0dcd6" stroke-width="0.9" transform="rotate(13 72.0 81.6)"/><ellipse cx="69.0" cy="-3.9" rx="2.7" ry="2.5" fill="#62b0ae" stroke="#d6f6f2" stroke-width="0.7" transform="rotate(109 69.0 -3.9)"/><ellipse cx="69.5" cy="184.4" rx="5.5" ry="5.4" fill="#3f8a8c" stroke="#d6f6f2" stroke-width="1.1" transform="rotate(119 69.5 184.4)"/><ellipse cx="105.4" cy="86.9" rx="3.5" ry="3.0" fill="#3f8a8c" stroke="#d6f6f2" stroke-width="0.9" transform="rotate(30 105.4 86.9)"/><ellipse cx="111.8" cy="110.2" rx="4.6" ry="3.6" fill="#3f8a8c" stroke="#f0fffd" stroke-width="1.1" transform="rotate(106 111.8 110.2)"/><ellipse cx="64.8" cy="164.6" rx="4.8" ry="4.4" fill="#357a7e" stroke="#f0fffd" stroke-width="1.1" transform="rotate(35 64.8 164.6)"/><ellipse cx="59.8" cy="-6.7" rx="3.5" ry="3.2" fill="#3f8a8c" stroke="#f0fffd" stroke-width="1.1" transform="rotate(91 59.8 -6.7)"/><ellipse cx="29.8" cy="62.8" rx="5.4" ry="4.6" fill="#6cbab6" stroke="#b8ece6" stroke-width="0.7" transform="rotate(48 29.8 62.8)"/><ellipse cx="-33.2" cy="94.6" rx="5.1" ry="4.4" fill="#4f9c9c" stroke="#d6f6f2" stroke-width="0.7" transform="rotate(69 -33.2 94.6)"/><ellipse cx="119.8" cy="104.5" rx="2.7" ry="1.7" fill="#4f9c9c" stroke="#f0fffd" stroke-width="0.7" transform="rotate(173 119.8 104.5)"/><ellipse cx="73.7" cy="134.6" rx="6.4" ry="4.8" fill="#357a7e" stroke="#a0dcd6" stroke-width="0.9" transform="rotate(87 73.7 134.6)"/><ellipse cx="118.1" cy="149.5" rx="6.0" ry="5.5" fill="#3f8a8c" stroke="#a0dcd6" stroke-width="1.1" transform="rotate(54 118.1 149.5)"/><ellipse cx="68.9" cy="28.2" rx="4.1" ry="2.7" fill="#4f9c9c" stroke="#f0fffd" stroke-width="1.1" transform="rotate(83 68.9 28.2)"/><ellipse cx="73.0" cy="42.3" rx="5.8" ry="5.0" fill="#4f9c9c" stroke="#a0dcd6" stroke-width="1.1" transform="rotate(24 73.0 42.3)"/><ellipse cx="38.9" cy="157.9" rx="4.7" ry="4.3" fill="#357a7e" stroke="#a0dcd6" stroke-width="0.9" transform="rotate(76 38.9 157.9)"/><ellipse cx="165.1" cy="101.6" rx="3.7" ry="3.3" fill="#6cbab6" stroke="#d6f6f2" stroke-width="0.9" transform="rotate(177 165.1 101.6)"/><ellipse cx="112.3" cy="57.2" rx="3.4" ry="3.2" fill="#62b0ae" stroke="#f0fffd" stroke-width="0.9" transform="rotate(112 112.3 57.2)"/><ellipse cx="137.8" cy="57.9" rx="6.3" ry="5.1" fill="#62b0ae" stroke="#a0dcd6" stroke-width="0.9" transform="rotate(117 137.8 57.9)"/><ellipse cx="24.4" cy="129.3" rx="6.2" ry="4.0" fill="#6cbab6" stroke="#b8ece6" stroke-width="0.9" transform="rotate(6 24.4 129.3)"/><ellipse cx="21.9" cy="133.0" rx="4.1" ry="3.7" fill="#4f9c9c" stroke="#f0fffd" stroke-width="1.1" transform="rotate(39 21.9 133.0)"/><ellipse cx="-18.7" cy="59.1" rx="3.2" ry="3.0" fill="#357a7e" stroke="#f0fffd" stroke-width="0.7" transform="rotate(132 -18.7 59.1)"/><ellipse cx="82.0" cy="114.5" rx="3.7" ry="2.3" fill="#3f8a8c" stroke="#a0dcd6" stroke-width="1.1" transform="rotate(78 82.0 114.5)"/><ellipse cx="150.3" cy="142.9" rx="2.8" ry="1.8" fill="#3f8a8c" stroke="#f0fffd" stroke-width="1.1" transform="rotate(167 150.3 142.9)"/><ellipse cx="69.0" cy="59.5" rx="5.1" ry="4.1" fill="#4f9c9c" stroke="#b8ece6" stroke-width="1.1" transform="rotate(86 69.0 59.5)"/><ellipse cx="-2.0" cy="152.3" rx="3.9" ry="3.1" fill="#62b0ae" stroke="#b8ece6" stroke-width="1.1" transform="rotate(18 -2.0 152.3)"/><ellipse cx="145.5" cy="51.4" rx="4.1" ry="3.8" fill="#62b0ae" stroke="#d6f6f2" stroke-width="0.7" transform="rotate(118 145.5 51.4)"/><ellipse cx="4.2" cy="16.1" rx="4.6" ry="3.5" fill="#3f8a8c" stroke="#d6f6f2" stroke-width="0.9" transform="rotate(37 4.2 16.1)"/><ellipse cx="95.7" cy="137.7" rx="5.0" ry="3.4" fill="#4f9c9c" stroke="#f0fffd" stroke-width="0.9" transform="rotate(135 95.7 137.7)"/><ellipse cx="122.9" cy="85.8" rx="2.7" ry="2.0" fill="#62b0ae" stroke="#d6f6f2" stroke-width="0.7" transform="rotate(45 122.9 85.8)"/><ellipse cx="72.0" cy="-4.8" rx="2.6" ry="1.9" fill="#357a7e" stroke="#d6f6f2" stroke-width="0.7" transform="rotate(47 72.0 -4.8)"/><ellipse cx="18.7" cy="64.2" rx="4.9" ry="3.8" fill="#357a7e" stroke="#b8ece6" stroke-width="0.9" transform="rotate(103 18.7 64.2)"/><ellipse cx="71.9" cy="55.7" rx="3.7" ry="3.5" fill="#6cbab6" stroke="#a0dcd6" stroke-width="0.9" transform="rotate(103 71.9 55.7)"/><ellipse cx="14.8" cy="180.5" rx="4.7" ry="4.4" fill="#3f8a8c" stroke="#a0dcd6" stroke-width="0.9" transform="rotate(12 14.8 180.5)"/><ellipse cx="100.4" cy="130.2" rx="5.7" ry="5.2" fill="#6cbab6" stroke="#f0fffd" stroke-width="0.7" transform="rotate(168 100.4 130.2)"/><ellipse cx="149.1" cy="32.4" rx="6.0" ry="5.5" fill="#62b0ae" stroke="#a0dcd6" stroke-width="1.1" transform="rotate(107 149.1 32.4)"/><ellipse cx="114.3" cy="163.2" rx="3.1" ry="2.2" fill="#62b0ae" stroke="#b8ece6" stroke-width="1.1" transform="rotate(33 114.3 163.2)"/><ellipse cx="152.6" cy="92.4" rx="3.6" ry="2.4" fill="#6cbab6" stroke="#d6f6f2" stroke-width="0.7" transform="rotate(0 152.6 92.4)"/><ellipse cx="108.3" cy="73.8" rx="3.1" ry="2.3" fill="#4f9c9c" stroke="#d6f6f2" stroke-width="1.1" transform="rotate(135 108.3 73.8)"/><ellipse cx="40.8" cy="99.7" rx="4.4" ry="2.7" fill="#6cbab6" stroke="#f0fffd" stroke-width="0.7" transform="rotate(106 40.8 99.7)"/><ellipse cx="52.3" cy="56.9" rx="5.6" ry="3.5" fill="#357a7e" stroke="#b8ece6" stroke-width="0.9" transform="rotate(134 52.3 56.9)"/><ellipse cx="137.9" cy="72.3" rx="6.4" ry="4.8" fill="#62b0ae" stroke="#f0fffd" stroke-width="1.1" transform="rotate(78 137.9 72.3)"/><ellipse cx="17.4" cy="4.2" rx="2.8" ry="1.8" fill="#3f8a8c" stroke="#b8ece6" stroke-width="0.9" transform="rotate(173 17.4 4.2)"/><ellipse cx="137.8" cy="81.7" rx="5.8" ry="5.5" fill="#357a7e" stroke="#d6f6f2" stroke-width="1.1" transform="rotate(121 137.8 81.7)"/><ellipse cx="25.8" cy="77.2" rx="4.3" ry="4.2" fill="#3f8a8c" stroke="#b8ece6" stroke-width="0.7" transform="rotate(74 25.8 77.2)"/><ellipse cx="145.8" cy="64.6" rx="5.5" ry="4.5" fill="#62b0ae" stroke="#a0dcd6" stroke-width="0.7" transform="rotate(65 145.8 64.6)"/><ellipse cx="39.8" cy="125.7" rx="2.9" ry="2.4" fill="#62b0ae" stroke="#f0fffd" stroke-width="1.1" transform="rotate(163 39.8 125.7)"/><ellipse cx="96.8" cy="44.8" rx="2.9" ry="1.9" fill="#4f9c9c" stroke="#d6f6f2" stroke-width="1.1" transform="rotate(45 96.8 44.8)"/><ellipse cx="36.3" cy="119.8" rx="5.8" ry="3.7" fill="#6cbab6" stroke="#d6f6f2" stroke-width="0.7" transform="rotate(40 36.3 119.8)"/><ellipse cx="-26.3" cy="138.5" rx="5.6" ry="5.4" fill="#62b0ae" stroke="#a0dcd6" stroke-width="0.7" transform="rotate(165 -26.3 138.5)"/><ellipse cx="96.5" cy="131.6" rx="5.3" ry="5.1" fill="#357a7e" stroke="#f0fffd" stroke-width="1.1" transform="rotate(3 96.5 131.6)"/><ellipse cx="2.6" cy="38.0" rx="3.8" ry="2.7" fill="#4f9c9c" stroke="#d6f6f2" stroke-width="0.7" transform="rotate(87 2.6 38.0)"/><ellipse cx="18.4" cy="116.0" rx="4.7" ry="4.3" fill="#4f9c9c" stroke="#f0fffd" stroke-width="0.7" transform="rotate(156 18.4 116.0)"/><ellipse cx="67.9" cy="184.0" rx="4.7" ry="3.4" fill="#62b0ae" stroke="#b8ece6" stroke-width="1.1" transform="rotate(131 67.9 184.0)"/><ellipse cx="61.8" cy="60.8" rx="6.4" ry="5.3" fill="#6cbab6" stroke="#b8ece6" stroke-width="0.7" transform="rotate(160 61.8 60.8)"/><ellipse cx="84.0" cy="12.9" rx="3.0" ry="2.7" fill="#357a7e" stroke="#a0dcd6" stroke-width="0.9" transform="rotate(23 84.0 12.9)"/><ellipse cx="4.5" cy="173.9" rx="4.4" ry="4.3" fill="#3f8a8c" stroke="#a0dcd6" stroke-width="0.7" transform="rotate(61 4.5 173.9)"/><ellipse cx="-26.6" cy="69.0" rx="4.7" ry="3.2" fill="#6cbab6" stroke="#f0fffd" stroke-width="1.1" transform="rotate(85 -26.6 69.0)"/><ellipse cx="127.5" cy="151.8" rx="5.8" ry="4.0" fill="#62b0ae" stroke="#f0fffd" stroke-width="1.1" transform="rotate(92 127.5 151.8)"/><ellipse cx="107.7" cy="184.0" rx="4.7" ry="2.9" fill="#3f8a8c" stroke="#a0dcd6" stroke-width="0.7" transform="rotate(168 107.7 184.0)"/><ellipse cx="71.4" cy="60.3" rx="5.9" ry="3.9" fill="#357a7e" stroke="#d6f6f2" stroke-width="0.9" transform="rotate(119 71.4 60.3)"/><ellipse cx="54.0" cy="93.2" rx="3.0" ry="2.2" fill="#357a7e" stroke="#b8ece6" stroke-width="0.7" transform="rotate(67 54.0 93.2)"/><ellipse cx="114.4" cy="75.7" rx="2.7" ry="2.1" fill="#3f8a8c" stroke="#b8ece6" stroke-width="0.9" transform="rotate(153 114.4 75.7)"/><ellipse cx="52.9" cy="121.0" rx="6.1" ry="5.5" fill="#6cbab6" stroke="#a0dcd6" stroke-width="0.9" transform="rotate(118 52.9 121.0)"/><ellipse cx="129.0" cy="20.0" rx="4.1" ry="3.4" fill="#357a7e" stroke="#d6f6f2" stroke-width="1.1" transform="rotate(84 129.0 20.0)"/><ellipse cx="2.3" cy="126.7" rx="6.1" ry="4.4" fill="#62b0ae" stroke="#d6f6f2" stroke-width="1.1" transform="rotate(110 2.3 126.7)"/><ellipse cx="-3.0" cy="44.6" rx="5.5" ry="3.8" fill="#62b0ae" stroke="#d6f6f2" stroke-width="0.9" transform="rotate(62 -3.0 44.6)"/><ellipse cx="12.1" cy="139.9" rx="2.7" ry="2.2" fill="#3f8a8c" stroke="#b8ece6" stroke-width="1.1" transform="rotate(101 12.1 139.9)"/><ellipse cx="144.6" cy="25.7" rx="6.5" ry="5.4" fill="#62b0ae" stroke="#a0dcd6" stroke-width="0.7" transform="rotate(56 144.6 25.7)"/><ellipse cx="-3.7" cy="135.6" rx="3.0" ry="2.4" fill="#3f8a8c" stroke="#d6f6f2" stroke-width="0.7" transform="rotate(31 -3.7 135.6)"/><ellipse cx="-17.9" cy="50.6" rx="4.3" ry="3.8" fill="#62b0ae" stroke="#b8ece6" stroke-width="0.7" transform="rotate(83 -17.9 50.6)"/><ellipse cx="32.5" cy="110.6" rx="4.3" ry="2.8" fill="#6cbab6" stroke="#a0dcd6" stroke-width="1.1" transform="rotate(149 32.5 110.6)"/><ellipse cx="53.6" cy="140.4" rx="4.3" ry="3.2" fill="#62b0ae" stroke="#f0fffd" stroke-width="0.7" transform="rotate(120 53.6 140.4)"/><ellipse cx="98.9" cy="190.4" rx="5.9" ry="4.3" fill="#3f8a8c" stroke="#b8ece6" stroke-width="0.9" transform="rotate(120 98.9 190.4)"/><ellipse cx="62.8" cy="87.8" rx="5.3" ry="4.3" fill="#6cbab6" stroke="#b8ece6" stroke-width="0.7" transform="rotate(49 62.8 87.8)"/><ellipse cx="171.9" cy="80.7" rx="5.1" ry="5.0" fill="#62b0ae" stroke="#f0fffd" stroke-width="0.9" transform="rotate(107 171.9 80.7)"/><ellipse cx="128.3" cy="162.0" rx="5.3" ry="3.3" fill="#357a7e" stroke="#a0dcd6" stroke-width="0.7" transform="rotate(78 128.3 162.0)"/><ellipse cx="58.0" cy="65.1" rx="3.6" ry="3.3" fill="#4f9c9c" stroke="#f0fffd" stroke-width="0.9" transform="rotate(169 58.0 65.1)"/><ellipse cx="125.5" cy="145.4" rx="4.6" ry="4.0" fill="#62b0ae" stroke="#b8ece6" stroke-width="0.9" transform="rotate(33 125.5 145.4)"/><ellipse cx="140.0" cy="140.4" rx="6.4" ry="5.2" fill="#357a7e" stroke="#d6f6f2" stroke-width="0.7" transform="rotate(1 140.0 140.4)"/><ellipse cx="52.8" cy="174.1" rx="3.5" ry="2.3" fill="#6cbab6" stroke="#d6f6f2" stroke-width="0.7" transform="rotate(62 52.8 174.1)"/><ellipse cx="65.9" cy="55.0" rx="2.6" ry="2.2" fill="#4f9c9c" stroke="#d6f6f2" stroke-width="1.1" transform="rotate(98 65.9 55.0)"/><ellipse cx="73.2" cy="93.4" rx="2.7" ry="2.0" fill="#3f8a8c" stroke="#f0fffd" stroke-width="0.9" transform="rotate(8 73.2 93.4)"/><ellipse cx="-3.7" cy="93.4" rx="5.9" ry="4.9" fill="#6cbab6" stroke="#b8ece6" stroke-width="0.7" transform="rotate(28 -3.7 93.4)"/><ellipse cx="77.4" cy="176.3" rx="4.3" ry="3.0" fill="#62b0ae" stroke="#b8ece6" stroke-width="1.1" transform="rotate(56 77.4 176.3)"/><ellipse cx="-7.4" cy="37.3" rx="3.5" ry="2.9" fill="#4f9c9c" stroke="#d6f6f2" stroke-width="0.7" transform="rotate(83 -7.4 37.3)"/><ellipse cx="107.4" cy="100.2" rx="4.5" ry="4.0" fill="#357a7e" stroke="#a0dcd6" stroke-width="0.7" transform="rotate(18 107.4 100.2)"/><ellipse cx="84.0" cy="124.9" rx="5.1" ry="4.3" fill="#6cbab6" stroke="#b8ece6" stroke-width="0.7" transform="rotate(79 84.0 124.9)"/><ellipse cx="47.8" cy="33.6" rx="5.8" ry="5.2" fill="#6cbab6" stroke="#f0fffd" stroke-width="0.9" transform="rotate(22 47.8 33.6)"/><ellipse cx="-13.5" cy="90.5" rx="4.0" ry="3.2" fill="#4f9c9c" stroke="#b8ece6" stroke-width="1.1" transform="rotate(152 -13.5 90.5)"/><ellipse cx="156.1" cy="130.8" rx="4.1" ry="3.7" fill="#62b0ae" stroke="#b8ece6" stroke-width="0.7" transform="rotate(32 156.1 130.8)"/><ellipse cx="75.1" cy="24.6" rx="6.4" ry="5.2" fill="#4f9c9c" stroke="#a0dcd6" stroke-width="0.7" transform="rotate(0 75.1 24.6)"/><ellipse cx="107.3" cy="65.2" rx="3.1" ry="2.4" fill="#357a7e" stroke="#f0fffd" stroke-width="0.7" transform="rotate(8 107.3 65.2)"/><ellipse cx="52.4" cy="12.1" rx="6.4" ry="4.6" fill="#6cbab6" stroke="#b8ece6" stroke-width="0.7" transform="rotate(141 52.4 12.1)"/><ellipse cx="-14.7" cy="143.7" rx="2.8" ry="2.1" fill="#4f9c9c" stroke="#f0fffd" stroke-width="1.1" transform="rotate(55 -14.7 143.7)"/><ellipse cx="55.3" cy="106.3" rx="5.1" ry="4.2" fill="#3f8a8c" stroke="#f0fffd" stroke-width="1.1" transform="rotate(45 55.3 106.3)"/><ellipse cx="15.7" cy="139.2" rx="5.9" ry="5.4" fill="#357a7e" stroke="#a0dcd6" stroke-width="0.7" transform="rotate(107 15.7 139.2)"/><ellipse cx="94.0" cy="150.2" rx="4.7" ry="3.2" fill="#4f9c9c" stroke="#a0dcd6" stroke-width="0.7" transform="rotate(152 94.0 150.2)"/><ellipse cx="44.9" cy="161.1" rx="4.3" ry="2.9" fill="#4f9c9c" stroke="#a0dcd6" stroke-width="0.9" transform="rotate(107 44.9 161.1)"/><ellipse cx="61.0" cy="72.6" rx="4.0" ry="3.2" fill="#62b0ae" stroke="#d6f6f2" stroke-width="1.1" transform="rotate(67 61.0 72.6)"/><ellipse cx="3.1" cy="65.9" rx="5.1" ry="3.3" fill="#4f9c9c" stroke="#f0fffd" stroke-width="0.7" transform="rotate(39 3.1 65.9)"/><ellipse cx="85.0" cy="8.2" rx="3.0" ry="1.9" fill="#4f9c9c" stroke="#d6f6f2" stroke-width="0.9" transform="rotate(98 85.0 8.2)"/><ellipse cx="111.7" cy="41.9" rx="4.0" ry="2.9" fill="#62b0ae" stroke="#d6f6f2" stroke-width="1.1" transform="rotate(61 111.7 41.9)"/><ellipse cx="97.3" cy="162.1" rx="4.6" ry="3.1" fill="#4f9c9c" stroke="#d6f6f2" stroke-width="0.9" transform="rotate(108 97.3 162.1)"/><ellipse cx="45.6" cy="29.6" rx="4.6" ry="3.3" fill="#6cbab6" stroke="#f0fffd" stroke-width="0.9" transform="rotate(170 45.6 29.6)"/><ellipse cx="115.2" cy="53.6" rx="5.8" ry="4.4" fill="#6cbab6" stroke="#a0dcd6" stroke-width="0.9" transform="rotate(132 115.2 53.6)"/><ellipse cx="84.7" cy="192.8" rx="3.7" ry="2.4" fill="#62b0ae" stroke="#b8ece6" stroke-width="0.7" transform="rotate(161 84.7 192.8)"/><ellipse cx="140.8" cy="101.1" rx="5.5" ry="5.4" fill="#62b0ae" stroke="#d6f6f2" stroke-width="0.7" transform="rotate(142 140.8 101.1)"/><ellipse cx="26.8" cy="21.2" rx="6.3" ry="5.8" fill="#62b0ae" stroke="#b8ece6" stroke-width="0.9" transform="rotate(23 26.8 21.2)"/><ellipse cx="138.4" cy="160.1" rx="4.5" ry="4.3" fill="#357a7e" stroke="#a0dcd6" stroke-width="0.9" transform="rotate(127 138.4 160.1)"/><ellipse cx="85.5" cy="182.0" rx="6.2" ry="5.6" fill="#4f9c9c" stroke="#a0dcd6" stroke-width="0.9" transform="rotate(170 85.5 182.0)"/><ellipse cx="-17.2" cy="84.7" rx="5.5" ry="4.3" fill="#357a7e" stroke="#b8ece6" stroke-width="0.9" transform="rotate(179 -17.2 84.7)"/><ellipse cx="35.1" cy="186.6" rx="6.2" ry="4.6" fill="#357a7e" stroke="#d6f6f2" stroke-width="0.7" transform="rotate(103 35.1 186.6)"/><ellipse cx="32.9" cy="132.1" rx="5.9" ry="5.2" fill="#62b0ae" stroke="#a0dcd6" stroke-width="0.9" transform="rotate(18 32.9 132.1)"/><ellipse cx="62.3" cy="107.0" rx="6.1" ry="4.3" fill="#6cbab6" stroke="#f0fffd" stroke-width="1.1" transform="rotate(47 62.3 107.0)"/><ellipse cx="7.9" cy="151.2" rx="3.9" ry="3.2" fill="#62b0ae" stroke="#d6f6f2" stroke-width="0.7" transform="rotate(19 7.9 151.2)"/><ellipse cx="10.5" cy="39.5" rx="4.1" ry="2.9" fill="#357a7e" stroke="#d6f6f2" stroke-width="0.9" transform="rotate(115 10.5 39.5)"/><ellipse cx="122.6" cy="62.4" rx="2.7" ry="1.9" fill="#4f9c9c" stroke="#f0fffd" stroke-width="0.9" transform="rotate(121 122.6 62.4)"/><ellipse cx="131.6" cy="180.6" rx="3.3" ry="2.9" fill="#4f9c9c" stroke="#f0fffd" stroke-width="0.7" transform="rotate(133 131.6 180.6)"/><ellipse cx="67.8" cy="95.4" rx="4.1" ry="3.8" fill="#4f9c9c" stroke="#a0dcd6" stroke-width="1.1" transform="rotate(20 67.8 95.4)"/><ellipse cx="-5.9" cy="65.5" rx="5.8" ry="4.3" fill="#62b0ae" stroke="#f0fffd" stroke-width="0.7" transform="rotate(80 -5.9 65.5)"/><ellipse cx="94.6" cy="186.9" rx="4.1" ry="3.8" fill="#4f9c9c" stroke="#b8ece6" stroke-width="0.7" transform="rotate(85 94.6 186.9)"/><ellipse cx="-11.5" cy="100.8" rx="4.8" ry="3.4" fill="#62b0ae" stroke="#a0dcd6" stroke-width="1.1" transform="rotate(171 -11.5 100.8)"/><ellipse cx="76.1" cy="170.8" rx="3.5" ry="3.4" fill="#62b0ae" stroke="#b8ece6" stroke-width="1.1" transform="rotate(32 76.1 170.8)"/><ellipse cx="168.4" cy="89.3" rx="5.8" ry="5.4" fill="#62b0ae" stroke="#d6f6f2" stroke-width="1.1" transform="rotate(173 168.4 89.3)"/><ellipse cx="107.0" cy="156.4" rx="6.0" ry="4.4" fill="#357a7e" stroke="#d6f6f2" stroke-width="0.9" transform="rotate(129 107.0 156.4)"/><ellipse cx="39.0" cy="11.8" rx="3.5" ry="3.1" fill="#62b0ae" stroke="#f0fffd" stroke-width="0.9" transform="rotate(46 39.0 11.8)"/><ellipse cx="73.4" cy="38.1" rx="5.9" ry="5.0" fill="#4f9c9c" stroke="#a0dcd6" stroke-width="0.7" transform="rotate(159 73.4 38.1)"/><ellipse cx="59.3" cy="185.2" rx="3.1" ry="2.7" fill="#4f9c9c" stroke="#a0dcd6" stroke-width="0.9" transform="rotate(59 59.3 185.2)"/><ellipse cx="152.6" cy="82.3" rx="4.4" ry="3.8" fill="#4f9c9c" stroke="#f0fffd" stroke-width="0.9" transform="rotate(64 152.6 82.3)"/><ellipse cx="4.4" cy="145.7" rx="6.2" ry="4.1" fill="#4f9c9c" stroke="#d6f6f2" stroke-width="0.7" transform="rotate(10 4.4 145.7)"/><ellipse cx="43.3" cy="129.7" rx="4.7" ry="3.4" fill="#3f8a8c" stroke="#a0dcd6" stroke-width="0.7" transform="rotate(138 43.3 129.7)"/><ellipse cx="116.2" cy="181.6" rx="2.8" ry="1.9" fill="#357a7e" stroke="#f0fffd" stroke-width="1.1" transform="rotate(158 116.2 181.6)"/><ellipse cx="110.6" cy="146.4" rx="4.8" ry="4.4" fill="#4f9c9c" stroke="#f0fffd" stroke-width="0.7" transform="rotate(113 110.6 146.4)"/><ellipse cx="101.8" cy="121.3" rx="6.2" ry="4.8" fill="#62b0ae" stroke="#a0dcd6" stroke-width="0.7" transform="rotate(82 101.8 121.3)"/><ellipse cx="57.5" cy="194.3" rx="4.8" ry="3.4" fill="#62b0ae" stroke="#a0dcd6" stroke-width="0.7" transform="rotate(20 57.5 194.3)"/><ellipse cx="22.8" cy="149.0" rx="3.5" ry="2.2" fill="#3f8a8c" stroke="#b8ece6" stroke-width="0.9" transform="rotate(171 22.8 149.0)"/><ellipse cx="80.8" cy="119.8" rx="4.4" ry="3.5" fill="#4f9c9c" stroke="#a0dcd6" stroke-width="0.9" transform="rotate(89 80.8 119.8)"/><ellipse cx="-4.8" cy="153.3" rx="2.7" ry="1.9" fill="#6cbab6" stroke="#f0fffd" stroke-width="0.9" transform="rotate(63 -4.8 153.3)"/><ellipse cx="-29.0" cy="132.9" rx="5.8" ry="5.5" fill="#3f8a8c" stroke="#b8ece6" stroke-width="0.7" transform="rotate(137 -29.0 132.9)"/><ellipse cx="99.3" cy="110.8" rx="3.9" ry="2.5" fill="#6cbab6" stroke="#f0fffd" stroke-width="0.9" transform="rotate(2 99.3 110.8)"/><ellipse cx="161.4" cy="134.7" rx="4.0" ry="3.7" fill="#6cbab6" stroke="#f0fffd" stroke-width="1.1" transform="rotate(126 161.4 134.7)"/><ellipse cx="90.9" cy="35.6" rx="5.8" ry="4.4" fill="#3f8a8c" stroke="#a0dcd6" stroke-width="1.1" transform="rotate(104 90.9 35.6)"/><ellipse cx="111.7" cy="69.4" rx="2.6" ry="1.8" fill="#6cbab6" stroke="#b8ece6" stroke-width="0.9" transform="rotate(94 111.7 69.4)"/><ellipse cx="57.8" cy="167.9" rx="6.5" ry="4.7" fill="#357a7e" stroke="#f0fffd" stroke-width="0.7" transform="rotate(167 57.8 167.9)"/><ellipse cx="117.1" cy="127.7" rx="3.8" ry="2.4" fill="#4f9c9c" stroke="#b8ece6" stroke-width="0.7" transform="rotate(139 117.1 127.7)"/><ellipse cx="85.0" cy="149.0" rx="3.9" ry="2.9" fill="#4f9c9c" stroke="#b8ece6" stroke-width="0.7" transform="rotate(110 85.0 149.0)"/><ellipse cx="59.5" cy="103.7" rx="2.7" ry="2.7" fill="#3f8a8c" stroke="#f0fffd" stroke-width="0.7" transform="rotate(5 59.5 103.7)"/><ellipse cx="27.4" cy="185.2" rx="5.5" ry="4.3" fill="#3f8a8c" stroke="#f0fffd" stroke-width="0.7" transform="rotate(127 27.4 185.2)"/><ellipse cx="52.3" cy="33.7" rx="3.2" ry="2.8" fill="#62b0ae" stroke="#d6f6f2" stroke-width="0.9" transform="rotate(46 52.3 33.7)"/><ellipse cx="-21.2" cy="81.5" rx="2.5" ry="1.7" fill="#357a7e" stroke="#d6f6f2" stroke-width="1.1" transform="rotate(88 -21.2 81.5)"/><ellipse cx="131.5" cy="18.1" rx="5.0" ry="3.3" fill="#6cbab6" stroke="#d6f6f2" stroke-width="1.1" transform="rotate(176 131.5 18.1)"/><ellipse cx="-13.0" cy="131.2" rx="4.4" ry="3.3" fill="#357a7e" stroke="#b8ece6" stroke-width="1.1" transform="rotate(146 -13.0 131.2)"/><ellipse cx="86.4" cy="87.0" rx="4.6" ry="3.3" fill="#357a7e" stroke="#a0dcd6" stroke-width="0.7" transform="rotate(152 86.4 87.0)"/><ellipse cx="60.3" cy="115.1" rx="4.6" ry="4.2" fill="#62b0ae" stroke="#f0fffd" stroke-width="0.9" transform="rotate(48 60.3 115.1)"/><ellipse cx="159.4" cy="90.0" rx="4.1" ry="2.6" fill="#4f9c9c" stroke="#a0dcd6" stroke-width="0.7" transform="rotate(166 159.4 90.0)"/><ellipse cx="128.3" cy="168.6" rx="3.0" ry="3.0" fill="#3f8a8c" stroke="#f0fffd" stroke-width="0.7" transform="rotate(47 128.3 168.6)"/><ellipse cx="46.6" cy="0.6" rx="3.5" ry="2.4" fill="#62b0ae" stroke="#a0dcd6" stroke-width="0.7" transform="rotate(109 46.6 0.6)"/><ellipse cx="62.0" cy="138.5" rx="5.1" ry="4.2" fill="#3f8a8c" stroke="#d6f6f2" stroke-width="0.9" transform="rotate(61 62.0 138.5)"/><ellipse cx="45.0" cy="96.5" rx="2.7" ry="2.5" fill="#6cbab6" stroke="#d6f6f2" stroke-width="0.7" transform="rotate(93 45.0 96.5)"/><ellipse cx="49.4" cy="131.5" rx="6.2" ry="4.0" fill="#4f9c9c" stroke="#f0fffd" stroke-width="0.7" transform="rotate(157 49.4 131.5)"/><ellipse cx="106.8" cy="44.8" rx="5.0" ry="3.2" fill="#357a7e" stroke="#d6f6f2" stroke-width="1.1" transform="rotate(52 106.8 44.8)"/><ellipse cx="39.6" cy="164.5" rx="6.3" ry="4.8" fill="#4f9c9c" stroke="#a0dcd6" stroke-width="0.9" transform="rotate(179 39.6 164.5)"/><ellipse cx="31.5" cy="55.1" rx="3.6" ry="3.2" fill="#6cbab6" stroke="#b8ece6" stroke-width="0.7" transform="rotate(32 31.5 55.1)"/><ellipse cx="34.8" cy="76.5" rx="2.7" ry="1.9" fill="#62b0ae" stroke="#d6f6f2" stroke-width="0.9" transform="rotate(156 34.8 76.5)"/><ellipse cx="41.2" cy="172.5" rx="2.5" ry="2.3" fill="#3f8a8c" stroke="#b8ece6" stroke-width="0.9" transform="rotate(79 41.2 172.5)"/><ellipse cx="98.3" cy="183.3" rx="2.8" ry="2.1" fill="#62b0ae" stroke="#a0dcd6" stroke-width="1.1" transform="rotate(104 98.3 183.3)"/><ellipse cx="105.1" cy="135.2" rx="3.0" ry="2.4" fill="#3f8a8c" stroke="#f0fffd" stroke-width="0.9" transform="rotate(60 105.1 135.2)"/><ellipse cx="123.1" cy="144.3" rx="3.0" ry="2.6" fill="#62b0ae" stroke="#d6f6f2" stroke-width="0.9" transform="rotate(57 123.1 144.3)"/><ellipse cx="-7.7" cy="162.2" rx="5.5" ry="4.3" fill="#6cbab6" stroke="#b8ece6" stroke-width="0.7" transform="rotate(93 -7.7 162.2)"/><ellipse cx="57.2" cy="160.4" rx="4.3" ry="3.7" fill="#62b0ae" stroke="#f0fffd" stroke-width="0.7" transform="rotate(172 57.2 160.4)"/><ellipse cx="150.4" cy="103.7" rx="4.0" ry="3.0" fill="#6cbab6" stroke="#f0fffd" stroke-width="0.9" transform="rotate(87 150.4 103.7)"/><ellipse cx="92.0" cy="75.3" rx="5.6" ry="4.4" fill="#3f8a8c" stroke="#d6f6f2" stroke-width="0.7" transform="rotate(22 92.0 75.3)"/><ellipse cx="162.6" cy="105.4" rx="2.6" ry="2.6" fill="#6cbab6" stroke="#f0fffd" stroke-width="0.7" transform="rotate(171 162.6 105.4)"/><ellipse cx="-10.9" cy="111.9" rx="3.9" ry="3.1" fill="#357a7e" stroke="#f0fffd" stroke-width="1.1" transform="rotate(155 -10.9 111.9)"/><ellipse cx="73.9" cy="118.4" rx="2.6" ry="2.4" fill="#357a7e" stroke="#a0dcd6" stroke-width="1.1" transform="rotate(138 73.9 118.4)"/><ellipse cx="157.2" cy="94.7" rx="2.8" ry="2.5" fill="#357a7e" stroke="#a0dcd6" stroke-width="0.7" transform="rotate(132 157.2 94.7)"/><ellipse cx="96.6" cy="198.0" rx="4.0" ry="2.5" fill="#4f9c9c" stroke="#a0dcd6" stroke-width="0.7" transform="rotate(0 96.6 198.0)"/><ellipse cx="46.5" cy="64.1" rx="5.0" ry="4.5" fill="#62b0ae" stroke="#a0dcd6" stroke-width="0.7" transform="rotate(110 46.5 64.1)"/><ellipse cx="139.5" cy="102.9" rx="5.9" ry="4.4" fill="#3f8a8c" stroke="#d6f6f2" stroke-width="1.1" transform="rotate(143 139.5 102.9)"/><ellipse cx="127.5" cy="144.3" rx="5.7" ry="3.5" fill="#62b0ae" stroke="#d6f6f2" stroke-width="0.7" transform="rotate(33 127.5 144.3)"/><ellipse cx="-14.4" cy="90.8" rx="3.7" ry="2.6" fill="#62b0ae" stroke="#b8ece6" stroke-width="0.9" transform="rotate(119 -14.4 90.8)"/><ellipse cx="74.3" cy="116.9" rx="4.3" ry="3.4" fill="#6cbab6" stroke="#d6f6f2" stroke-width="0.7" transform="rotate(128 74.3 116.9)"/><ellipse cx="107.3" cy="89.0" rx="4.6" ry="3.5" fill="#357a7e" stroke="#d6f6f2" stroke-width="0.7" transform="rotate(58 107.3 89.0)"/><ellipse cx="85.8" cy="61.6" rx="5.4" ry="3.9" fill="#357a7e" stroke="#b8ece6" stroke-width="1.1" transform="rotate(7 85.8 61.6)"/><ellipse cx="5.6" cy="98.7" rx="6.1" ry="4.6" fill="#6cbab6" stroke="#d6f6f2" stroke-width="0.9" transform="rotate(20 5.6 98.7)"/><ellipse cx="25.7" cy="85.6" rx="5.1" ry="4.9" fill="#357a7e" stroke="#f0fffd" stroke-width="0.7" transform="rotate(167 25.7 85.6)"/><ellipse cx="-28.2" cy="57.1" rx="3.1" ry="2.3" fill="#6cbab6" stroke="#d6f6f2" stroke-width="0.9" transform="rotate(68 -28.2 57.1)"/><ellipse cx="65.3" cy="185.7" rx="4.0" ry="3.0" fill="#357a7e" stroke="#a0dcd6" stroke-width="1.1" transform="rotate(110 65.3 185.7)"/><ellipse cx="113.1" cy="134.8" rx="3.7" ry="2.5" fill="#6cbab6" stroke="#d6f6f2" stroke-width="0.9" transform="rotate(140 113.1 134.8)"/><ellipse cx="93.8" cy="44.3" rx="5.2" ry="3.8" fill="#62b0ae" stroke="#d6f6f2" stroke-width="0.9" transform="rotate(58 93.8 44.3)"/><ellipse cx="-2.9" cy="83.6" rx="5.4" ry="4.5" fill="#62b0ae" stroke="#a0dcd6" stroke-width="0.7" transform="rotate(1 -2.9 83.6)"/><ellipse cx="16.2" cy="163.4" rx="3.5" ry="3.3" fill="#6cbab6" stroke="#f0fffd" stroke-width="0.7" transform="rotate(155 16.2 163.4)"/><ellipse cx="155.7" cy="127.5" rx="3.2" ry="2.0" fill="#3f8a8c" stroke="#f0fffd" stroke-width="0.7" transform="rotate(54 155.7 127.5)"/><ellipse cx="63.7" cy="145.3" rx="5.7" ry="4.3" fill="#357a7e" stroke="#f0fffd" stroke-width="0.9" transform="rotate(146 63.7 145.3)"/><ellipse cx="143.7" cy="139.9" rx="6.4" ry="3.9" fill="#62b0ae" stroke="#f0fffd" stroke-width="0.7" transform="rotate(39 143.7 139.9)"/><ellipse cx="11.7" cy="23.5" rx="2.7" ry="2.1" fill="#357a7e" stroke="#d6f6f2" stroke-width="0.7" transform="rotate(141 11.7 23.5)"/><ellipse cx="50.8" cy="126.2" rx="5.4" ry="4.5" fill="#6cbab6" stroke="#b8ece6" stroke-width="0.7" transform="rotate(122 50.8 126.2)"/><ellipse cx="41.9" cy="36.7" rx="6.4" ry="5.9" fill="#3f8a8c" stroke="#b8ece6" stroke-width="0.9" transform="rotate(175 41.9 36.7)"/><ellipse cx="4.8" cy="158.9" rx="4.3" ry="3.3" fill="#357a7e" stroke="#d6f6f2" stroke-width="1.1" transform="rotate(18 4.8 158.9)"/><ellipse cx="162.5" cy="70.1" rx="3.9" ry="3.5" fill="#6cbab6" stroke="#d6f6f2" stroke-width="0.9" transform="rotate(79 162.5 70.1)"/><ellipse cx="20.4" cy="25.1" rx="3.0" ry="2.3" fill="#4f9c9c" stroke="#d6f6f2" stroke-width="1.1" transform="rotate(35 20.4 25.1)"/><ellipse cx="138.8" cy="163.4" rx="6.0" ry="3.7" fill="#357a7e" stroke="#a0dcd6" stroke-width="0.9" transform="rotate(96 138.8 163.4)"/><ellipse cx="57.2" cy="54.1" rx="4.5" ry="3.6" fill="#357a7e" stroke="#a0dcd6" stroke-width="0.9" transform="rotate(26 57.2 54.1)"/><ellipse cx="116.7" cy="35.7" rx="5.6" ry="3.4" fill="#62b0ae" stroke="#b8ece6" stroke-width="0.7" transform="rotate(166 116.7 35.7)"/><ellipse cx="20.1" cy="63.7" rx="4.6" ry="3.8" fill="#357a7e" stroke="#a0dcd6" stroke-width="0.9" transform="rotate(91 20.1 63.7)"/><ellipse cx="125.0" cy="169.6" rx="5.3" ry="3.4" fill="#357a7e" stroke="#f0fffd" stroke-width="0.9" transform="rotate(59 125.0 169.6)"/><ellipse cx="21.2" cy="162.4" rx="4.1" ry="4.0" fill="#3f8a8c" stroke="#f0fffd" stroke-width="0.9" transform="rotate(96 21.2 162.4)"/><ellipse cx="81.1" cy="143.4" rx="6.1" ry="6.1" fill="#3f8a8c" stroke="#b8ece6" stroke-width="1.1" transform="rotate(116 81.1 143.4)"/><ellipse cx="116.5" cy="138.3" rx="3.2" ry="2.8" fill="#6cbab6" stroke="#d6f6f2" stroke-width="1.1" transform="rotate(38 116.5 138.3)"/><ellipse cx="64.7" cy="80.1" rx="4.8" ry="3.5" fill="#6cbab6" stroke="#a0dcd6" stroke-width="0.7" transform="rotate(114 64.7 80.1)"/><ellipse cx="79.5" cy="-6.7" rx="5.7" ry="5.2" fill="#3f8a8c" stroke="#b8ece6" stroke-width="0.7" transform="rotate(51 79.5 -6.7)"/><ellipse cx="62.4" cy="-1.3" rx="3.9" ry="3.2" fill="#4f9c9c" stroke="#b8ece6" stroke-width="0.9" transform="rotate(176 62.4 -1.3)"/><ellipse cx="114.2" cy="132.1" rx="5.7" ry="3.6" fill="#62b0ae" stroke="#f0fffd" stroke-width="0.9" transform="rotate(5 114.2 132.1)"/><ellipse cx="101.0" cy="70.2" rx="5.2" ry="4.3" fill="#62b0ae" stroke="#f0fffd" stroke-width="0.9" transform="rotate(124 101.0 70.2)"/><ellipse cx="95.2" cy="100.6" rx="5.7" ry="5.4" fill="#6cbab6" stroke="#b8ece6" stroke-width="0.7" transform="rotate(139 95.2 100.6)"/><ellipse cx="-5.2" cy="34.3" rx="4.7" ry="3.4" fill="#4f9c9c" stroke="#f0fffd" stroke-width="0.9" transform="rotate(92 -5.2 34.3)"/><ellipse cx="-10.8" cy="73.9" rx="4.4" ry="3.9" fill="#62b0ae" stroke="#f0fffd" stroke-width="1.1" transform="rotate(129 -10.8 73.9)"/><ellipse cx="62.4" cy="44.9" rx="6.0" ry="5.0" fill="#3f8a8c" stroke="#d6f6f2" stroke-width="1.1" transform="rotate(18 62.4 44.9)"/><ellipse cx="124.9" cy="96.9" rx="6.2" ry="6.2" fill="#3f8a8c" stroke="#b8ece6" stroke-width="0.9" transform="rotate(90 124.9 96.9)"/><ellipse cx="161.1" cy="133.0" rx="5.2" ry="3.2" fill="#3f8a8c" stroke="#b8ece6" stroke-width="1.1" transform="rotate(36 161.1 133.0)"/><ellipse cx="28.4" cy="-0.4" rx="5.9" ry="4.6" fill="#6cbab6" stroke="#d6f6f2" stroke-width="1.1" transform="rotate(47 28.4 -0.4)"/><ellipse cx="60.6" cy="70.1" rx="5.0" ry="3.8" fill="#4f9c9c" stroke="#d6f6f2" stroke-width="0.9" transform="rotate(49 60.6 70.1)"/><ellipse cx="43.9" cy="98.1" rx="4.7" ry="3.1" fill="#6cbab6" stroke="#d6f6f2" stroke-width="0.9" transform="rotate(65 43.9 98.1)"/><ellipse cx="52.8" cy="40.5" rx="6.3" ry="5.9" fill="#6cbab6" stroke="#b8ece6" stroke-width="0.7" transform="rotate(155 52.8 40.5)"/><ellipse cx="9.7" cy="57.4" rx="5.2" ry="5.1" fill="#6cbab6" stroke="#f0fffd" stroke-width="0.7" transform="rotate(132 9.7 57.4)"/><ellipse cx="102.7" cy="76.1" rx="2.9" ry="2.9" fill="#62b0ae" stroke="#f0fffd" stroke-width="0.7" transform="rotate(106 102.7 76.1)"/><ellipse cx="77.7" cy="82.0" rx="5.3" ry="3.2" fill="#6cbab6" stroke="#d6f6f2" stroke-width="0.7" transform="rotate(55 77.7 82.0)"/><ellipse cx="122.3" cy="5.5" rx="4.1" ry="3.1" fill="#62b0ae" stroke="#b8ece6" stroke-width="0.7" transform="rotate(61 122.3 5.5)"/><ellipse cx="26.4" cy="70.0" rx="4.6" ry="3.6" fill="#62b0ae" stroke="#f0fffd" stroke-width="0.7" transform="rotate(106 26.4 70.0)"/><ellipse cx="93.9" cy="128.9" rx="3.5" ry="3.2" fill="#357a7e" stroke="#b8ece6" stroke-width="0.9" transform="rotate(47 93.9 128.9)"/><ellipse cx="42.8" cy="56.3" rx="3.5" ry="2.9" fill="#6cbab6" stroke="#f0fffd" stroke-width="0.7" transform="rotate(47 42.8 56.3)"/><ellipse cx="121.1" cy="118.4" rx="4.5" ry="4.2" fill="#4f9c9c" stroke="#d6f6f2" stroke-width="1.1" transform="rotate(23 121.1 118.4)"/><ellipse cx="72.2" cy="69.9" rx="3.5" ry="2.7" fill="#4f9c9c" stroke="#d6f6f2" stroke-width="0.7" transform="rotate(94 72.2 69.9)"/><ellipse cx="147.0" cy="132.2" rx="2.8" ry="2.1" fill="#357a7e" stroke="#b8ece6" stroke-width="1.1" transform="rotate(59 147.0 132.2)"/><ellipse cx="84.7" cy="39.5" rx="4.0" ry="3.2" fill="#62b0ae" stroke="#d6f6f2" stroke-width="0.7" transform="rotate(13 84.7 39.5)"/><ellipse cx="17.2" cy="145.4" rx="2.8" ry="1.7" fill="#4f9c9c" stroke="#b8ece6" stroke-width="0.7" transform="rotate(126 17.2 145.4)"/><ellipse cx="164.2" cy="52.7" rx="3.9" ry="3.6" fill="#4f9c9c" stroke="#b8ece6" stroke-width="0.9" transform="rotate(10 164.2 52.7)"/><ellipse cx="98.2" cy="128.3" rx="5.2" ry="3.9" fill="#357a7e" stroke="#f0fffd" stroke-width="0.7" transform="rotate(69 98.2 128.3)"/><ellipse cx="95.3" cy="69.3" rx="6.4" ry="4.2" fill="#62b0ae" stroke="#d6f6f2" stroke-width="0.9" transform="rotate(46 95.3 69.3)"/><ellipse cx="58.2" cy="173.9" rx="4.6" ry="4.2" fill="#6cbab6" stroke="#a0dcd6" stroke-width="1.1" transform="rotate(67 58.2 173.9)"/><ellipse cx="159.7" cy="146.4" rx="3.4" ry="3.4" fill="#3f8a8c" stroke="#f0fffd" stroke-width="1.1" transform="rotate(128 159.7 146.4)"/><ellipse cx="111.0" cy="86.9" rx="5.1" ry="4.0" fill="#3f8a8c" stroke="#f0fffd" stroke-width="1.1" transform="rotate(117 111.0 86.9)"/><ellipse cx="129.5" cy="95.0" rx="4.5" ry="2.9" fill="#3f8a8c" stroke="#b8ece6" stroke-width="0.9" transform="rotate(173 129.5 95.0)"/><ellipse cx="71.1" cy="82.3" rx="4.1" ry="2.7" fill="#3f8a8c" stroke="#f0fffd" stroke-width="0.7" transform="rotate(102 71.1 82.3)"/><ellipse cx="91.4" cy="183.0" rx="2.6" ry="2.4" fill="#4f9c9c" stroke="#a0dcd6" stroke-width="0.9" transform="rotate(156 91.4 183.0)"/><ellipse cx="-11.8" cy="114.2" rx="3.2" ry="2.3" fill="#3f8a8c" stroke="#b8ece6" stroke-width="0.7" transform="rotate(86 -11.8 114.2)"/><ellipse cx="32.9" cy="61.7" rx="4.0" ry="3.4" fill="#357a7e" stroke="#f0fffd" stroke-width="0.9" transform="rotate(42 32.9 61.7)"/><ellipse cx="114.8" cy="55.9" rx="4.8" ry="3.9" fill="#357a7e" stroke="#a0dcd6" stroke-width="0.9" transform="rotate(65 114.8 55.9)"/><ellipse cx="119.5" cy="66.2" rx="3.4" ry="2.7" fill="#6cbab6" stroke="#b8ece6" stroke-width="1.1" transform="rotate(73 119.5 66.2)"/><ellipse cx="153.7" cy="59.1" rx="3.8" ry="2.5" fill="#6cbab6" stroke="#a0dcd6" stroke-width="0.9" transform="rotate(72 153.7 59.1)"/><ellipse cx="14.8" cy="34.2" rx="2.5" ry="2.0" fill="#357a7e" stroke="#d6f6f2" stroke-width="1.1" transform="rotate(166 14.8 34.2)"/><ellipse cx="132.2" cy="96.6" rx="4.5" ry="3.7" fill="#62b0ae" stroke="#a0dcd6" stroke-width="1.1" transform="rotate(145 132.2 96.6)"/><ellipse cx="128.6" cy="133.1" rx="4.5" ry="3.8" fill="#357a7e" stroke="#d6f6f2" stroke-width="0.7" transform="rotate(71 128.6 133.1)"/><ellipse cx="141.7" cy="119.4" rx="3.6" ry="3.0" fill="#3f8a8c" stroke="#b8ece6" stroke-width="0.9" transform="rotate(10 141.7 119.4)"/><ellipse cx="110.9" cy="67.4" rx="4.5" ry="3.7" fill="#357a7e" stroke="#f0fffd" stroke-width="0.7" transform="rotate(125 110.9 67.4)"/><ellipse cx="126.6" cy="175.4" rx="3.8" ry="3.7" fill="#6cbab6" stroke="#f0fffd" stroke-width="1.1" transform="rotate(55 126.6 175.4)"/><ellipse cx="-11.5" cy="124.7" rx="3.7" ry="3.4" fill="#4f9c9c" stroke="#b8ece6" stroke-width="1.1" transform="rotate(70 -11.5 124.7)"/><ellipse cx="99.9" cy="6.5" rx="3.2" ry="2.8" fill="#357a7e" stroke="#f0fffd" stroke-width="0.7" transform="rotate(5 99.9 6.5)"/><ellipse cx="13.4" cy="9.4" rx="4.4" ry="4.3" fill="#6cbab6" stroke="#a0dcd6" stroke-width="1.1" transform="rotate(16 13.4 9.4)"/><ellipse cx="126.2" cy="184.2" rx="3.5" ry="2.6" fill="#62b0ae" stroke="#a0dcd6" stroke-width="0.7" transform="rotate(156 126.2 184.2)"/><ellipse cx="74.4" cy="9.4" rx="6.4" ry="5.8" fill="#6cbab6" stroke="#b8ece6" stroke-width="1.1" transform="rotate(14 74.4 9.4)"/><ellipse cx="13.9" cy="132.9" rx="4.1" ry="4.0" fill="#3f8a8c" stroke="#f0fffd" stroke-width="1.1" transform="rotate(125 13.9 132.9)"/><ellipse cx="58.7" cy="50.7" rx="2.7" ry="2.4" fill="#4f9c9c" stroke="#a0dcd6" stroke-width="0.7" transform="rotate(59 58.7 50.7)"/><ellipse cx="83.3" cy="13.2" rx="5.3" ry="3.8" fill="#6cbab6" stroke="#a0dcd6" stroke-width="0.9" transform="rotate(176 83.3 13.2)"/><ellipse cx="44.7" cy="62.2" rx="5.2" ry="3.8" fill="#3f8a8c" stroke="#f0fffd" stroke-width="0.7" transform="rotate(6 44.7 62.2)"/><ellipse cx="121.3" cy="80.1" rx="5.0" ry="3.7" fill="#357a7e" stroke="#d6f6f2" stroke-width="0.9" transform="rotate(55 121.3 80.1)"/><ellipse cx="-4.0" cy="101.7" rx="2.6" ry="2.1" fill="#6cbab6" stroke="#d6f6f2" stroke-width="1.1" transform="rotate(134 -4.0 101.7)"/><ellipse cx="85.5" cy="142.9" rx="4.8" ry="3.5" fill="#4f9c9c" stroke="#a0dcd6" stroke-width="0.7" transform="rotate(86 85.5 142.9)"/><ellipse cx="57.2" cy="112.5" rx="4.6" ry="3.2" fill="#6cbab6" stroke="#a0dcd6" stroke-width="0.7" transform="rotate(121 57.2 112.5)"/><ellipse cx="158.8" cy="144.2" rx="4.2" ry="3.8" fill="#357a7e" stroke="#a0dcd6" stroke-width="1.1" transform="rotate(164 158.8 144.2)"/><ellipse cx="-31.5" cy="96.0" rx="6.3" ry="6.3" fill="#6cbab6" stroke="#a0dcd6" stroke-width="1.1" transform="rotate(22 -31.5 96.0)"/><ellipse cx="74.3" cy="53.8" rx="2.7" ry="2.2" fill="#4f9c9c" stroke="#b8ece6" stroke-width="0.9" transform="rotate(149 74.3 53.8)"/><ellipse cx="32.5" cy="176.6" rx="5.6" ry="4.4" fill="#3f8a8c" stroke="#d6f6f2" stroke-width="0.9" transform="rotate(27 32.5 176.6)"/><ellipse cx="105.6" cy="192.8" rx="3.5" ry="2.1" fill="#3f8a8c" stroke="#d6f6f2" stroke-width="0.9" transform="rotate(177 105.6 192.8)"/><ellipse cx="125.0" cy="36.3" rx="6.5" ry="4.9" fill="#357a7e" stroke="#b8ece6" stroke-width="1.1" transform="rotate(61 125.0 36.3)"/><ellipse cx="5.9" cy="39.0" rx="2.7" ry="1.9" fill="#6cbab6" stroke="#b8ece6" stroke-width="1.1" transform="rotate(121 5.9 39.0)"/><ellipse cx="22.3" cy="139.1" rx="5.5" ry="3.7" fill="#357a7e" stroke="#d6f6f2" stroke-width="0.7" transform="rotate(124 22.3 139.1)"/><ellipse cx="143.8" cy="21.0" rx="6.2" ry="4.5" fill="#3f8a8c" stroke="#f0fffd" stroke-width="0.7" transform="rotate(130 143.8 21.0)"/><ellipse cx="64.7" cy="17.8" rx="6.0" ry="3.7" fill="#4f9c9c" stroke="#f0fffd" stroke-width="0.7" transform="rotate(68 64.7 17.8)"/><ellipse cx="24.7" cy="146.9" rx="4.2" ry="3.1" fill="#357a7e" stroke="#a0dcd6" stroke-width="1.1" transform="rotate(5 24.7 146.9)"/><ellipse cx="48.5" cy="157.3" rx="5.6" ry="4.8" fill="#357a7e" stroke="#a0dcd6" stroke-width="1.1" transform="rotate(116 48.5 157.3)"/><ellipse cx="33.1" cy="20.2" rx="4.5" ry="4.0" fill="#357a7e" stroke="#d6f6f2" stroke-width="0.9" transform="rotate(58 33.1 20.2)"/><ellipse cx="154.4" cy="68.5" rx="5.1" ry="3.5" fill="#357a7e" stroke="#a0dcd6" stroke-width="0.9" transform="rotate(57 154.4 68.5)"/><ellipse cx="138.9" cy="136.8" rx="4.8" ry="2.9" fill="#62b0ae" stroke="#a0dcd6" stroke-width="0.9" transform="rotate(88 138.9 136.8)"/><ellipse cx="64.6" cy="187.4" rx="5.0" ry="3.6" fill="#4f9c9c" stroke="#a0dcd6" stroke-width="0.7" transform="rotate(111 64.6 187.4)"/><ellipse cx="50.5" cy="84.8" rx="5.8" ry="4.8" fill="#357a7e" stroke="#d6f6f2" stroke-width="1.1" transform="rotate(86 50.5 84.8)"/><ellipse cx="-9.4" cy="53.1" rx="3.5" ry="2.9" fill="#6cbab6" stroke="#a0dcd6" stroke-width="0.7" transform="rotate(34 -9.4 53.1)"/><ellipse cx="-8.2" cy="50.0" rx="5.7" ry="4.1" fill="#6cbab6" stroke="#d6f6f2" stroke-width="1.1" transform="rotate(87 -8.2 50.0)"/><ellipse cx="-4.6" cy="98.3" rx="3.2" ry="2.3" fill="#357a7e" stroke="#a0dcd6" stroke-width="0.9" transform="rotate(173 -4.6 98.3)"/><ellipse cx="41.1" cy="73.4" rx="4.3" ry="3.6" fill="#6cbab6" stroke="#a0dcd6" stroke-width="0.9" transform="rotate(90 41.1 73.4)"/><ellipse cx="133.3" cy="117.4" rx="2.5" ry="2.2" fill="#6cbab6" stroke="#b8ece6" stroke-width="0.7" transform="rotate(97 133.3 117.4)"/><ellipse cx="123.0" cy="165.6" rx="4.8" ry="3.9" fill="#6cbab6" stroke="#d6f6f2" stroke-width="0.9" transform="rotate(168 123.0 165.6)"/><ellipse cx="85.4" cy="33.4" rx="5.0" ry="3.4" fill="#6cbab6" stroke="#b8ece6" stroke-width="0.7" transform="rotate(30 85.4 33.4)"/><ellipse cx="4.4" cy="19.6" rx="2.6" ry="1.6" fill="#4f9c9c" stroke="#f0fffd" stroke-width="0.7" transform="rotate(178 4.4 19.6)"/><ellipse cx="30.2" cy="28.1" rx="3.7" ry="3.1" fill="#62b0ae" stroke="#b8ece6" stroke-width="0.9" transform="rotate(179 30.2 28.1)"/><ellipse cx="91.4" cy="43.4" rx="6.1" ry="3.7" fill="#357a7e" stroke="#f0fffd" stroke-width="1.1" transform="rotate(72 91.4 43.4)"/><ellipse cx="150.4" cy="89.4" rx="3.4" ry="2.2" fill="#4f9c9c" stroke="#f0fffd" stroke-width="0.9" transform="rotate(112 150.4 89.4)"/><ellipse cx="114.7" cy="184.6" rx="3.2" ry="2.5" fill="#6cbab6" stroke="#b8ece6" stroke-width="1.1" transform="rotate(180 114.7 184.6)"/><ellipse cx="77.4" cy="37.1" rx="3.8" ry="2.8" fill="#4f9c9c" stroke="#a0dcd6" stroke-width="0.7" transform="rotate(126 77.4 37.1)"/><ellipse cx="154.5" cy="121.8" rx="5.3" ry="3.4" fill="#3f8a8c" stroke="#d6f6f2" stroke-width="0.7" transform="rotate(151 154.5 121.8)"/><ellipse cx="129.5" cy="90.3" rx="4.9" ry="4.5" fill="#357a7e" stroke="#d6f6f2" stroke-width="0.9" transform="rotate(5 129.5 90.3)"/><ellipse cx="-5.6" cy="29.7" rx="4.7" ry="4.1" fill="#3f8a8c" stroke="#b8ece6" stroke-width="0.9" transform="rotate(13 -5.6 29.7)"/><ellipse cx="53.1" cy="163.7" rx="4.7" ry="3.5" fill="#62b0ae" stroke="#b8ece6" stroke-width="0.7" transform="rotate(74 53.1 163.7)"/><ellipse cx="124.4" cy="101.1" rx="4.0" ry="2.8" fill="#357a7e" stroke="#b8ece6" stroke-width="0.7" transform="rotate(41 124.4 101.1)"/><ellipse cx="-24.9" cy="114.7" rx="4.5" ry="4.0" fill="#62b0ae" stroke="#a0dcd6" stroke-width="1.1" transform="rotate(62 -24.9 114.7)"/><ellipse cx="19.8" cy="137.6" rx="4.5" ry="3.7" fill="#357a7e" stroke="#a0dcd6" stroke-width="1.1" transform="rotate(57 19.8 137.6)"/><ellipse cx="54.8" cy="146.9" rx="4.1" ry="2.9" fill="#3f8a8c" stroke="#a0dcd6" stroke-width="0.7" transform="rotate(94 54.8 146.9)"/><ellipse cx="120.5" cy="11.9" rx="5.2" ry="3.3" fill="#62b0ae" stroke="#a0dcd6" stroke-width="1.1" transform="rotate(141 120.5 11.9)"/><ellipse cx="29.0" cy="73.4" rx="5.1" ry="3.3" fill="#4f9c9c" stroke="#d6f6f2" stroke-width="1.1" transform="rotate(85 29.0 73.4)"/><ellipse cx="-5.5" cy="89.0" rx="3.7" ry="3.7" fill="#62b0ae" stroke="#f0fffd" stroke-width="0.7" transform="rotate(136 -5.5 89.0)"/><ellipse cx="175.2" cy="104.9" rx="3.1" ry="2.4" fill="#357a7e" stroke="#d6f6f2" stroke-width="0.9" transform="rotate(151 175.2 104.9)"/><ellipse cx="-6.5" cy="46.2" rx="4.8" ry="3.8" fill="#4f9c9c" stroke="#d6f6f2" stroke-width="0.7" transform="rotate(172 -6.5 46.2)"/><ellipse cx="136.6" cy="67.6" rx="5.1" ry="3.1" fill="#62b0ae" stroke="#d6f6f2" stroke-width="1.1" transform="rotate(168 136.6 67.6)"/><ellipse cx="-10.6" cy="34.3" rx="3.5" ry="2.3" fill="#62b0ae" stroke="#f0fffd" stroke-width="1.1" transform="rotate(133 -10.6 34.3)"/><ellipse cx="50.4" cy="73.2" rx="3.5" ry="2.2" fill="#4f9c9c" stroke="#b8ece6" stroke-width="0.7" transform="rotate(35 50.4 73.2)"/><ellipse cx="8.1" cy="26.4" rx="5.5" ry="5.0" fill="#357a7e" stroke="#f0fffd" stroke-width="1.1" transform="rotate(47 8.1 26.4)"/><ellipse cx="112.4" cy="133.5" rx="2.5" ry="1.9" fill="#3f8a8c" stroke="#f0fffd" stroke-width="1.1" transform="rotate(64 112.4 133.5)"/><ellipse cx="32.3" cy="45.6" rx="4.2" ry="3.5" fill="#3f8a8c" stroke="#b8ece6" stroke-width="0.9" transform="rotate(51 32.3 45.6)"/><ellipse cx="148.1" cy="130.3" rx="3.2" ry="2.3" fill="#4f9c9c" stroke="#a0dcd6" stroke-width="1.1" transform="rotate(179 148.1 130.3)"/><ellipse cx="47.9" cy="71.4" rx="5.1" ry="4.1" fill="#357a7e" stroke="#f0fffd" stroke-width="0.7" transform="rotate(105 47.9 71.4)"/><ellipse cx="16.5" cy="143.8" rx="4.6" ry="2.8" fill="#3f8a8c" stroke="#d6f6f2" stroke-width="1.1" transform="rotate(95 16.5 143.8)"/><ellipse cx="11.0" cy="145.3" rx="6.3" ry="4.3" fill="#6cbab6" stroke="#b8ece6" stroke-width="0.7" transform="rotate(127 11.0 145.3)"/><ellipse cx="18.1" cy="29.7" rx="5.0" ry="4.0" fill="#357a7e" stroke="#b8ece6" stroke-width="0.7" transform="rotate(19 18.1 29.7)"/><ellipse cx="143.4" cy="77.4" rx="3.0" ry="2.1" fill="#357a7e" stroke="#a0dcd6" stroke-width="0.9" transform="rotate(158 143.4 77.4)"/><ellipse cx="102.1" cy="148.9" rx="4.0" ry="3.7" fill="#3f8a8c" stroke="#f0fffd" stroke-width="0.7" transform="rotate(70 102.1 148.9)"/><ellipse cx="107.9" cy="105.1" rx="2.6" ry="1.7" fill="#357a7e" stroke="#b8ece6" stroke-width="0.7" transform="rotate(35 107.9 105.1)"/><ellipse cx="-7.7" cy="38.4" rx="6.2" ry="4.3" fill="#3f8a8c" stroke="#d6f6f2" stroke-width="0.7" transform="rotate(48 -7.7 38.4)"/><ellipse cx="6.9" cy="122.4" rx="2.8" ry="1.8" fill="#6cbab6" stroke="#b8ece6" stroke-width="1.1" transform="rotate(96 6.9 122.4)"/><ellipse cx="23.2" cy="141.0" rx="5.5" ry="3.3" fill="#3f8a8c" stroke="#a0dcd6" stroke-width="0.9" transform="rotate(10 23.2 141.0)"/><ellipse cx="173.6" cy="114.5" rx="5.7" ry="5.5" fill="#3f8a8c" stroke="#a0dcd6" stroke-width="1.1" transform="rotate(100 173.6 114.5)"/><ellipse cx="58.0" cy="148.3" rx="5.2" ry="4.7" fill="#4f9c9c" stroke="#a0dcd6" stroke-width="0.9" transform="rotate(180 58.0 148.3)"/><ellipse cx="52.2" cy="70.5" rx="3.6" ry="2.5" fill="#62b0ae" stroke="#f0fffd" stroke-width="0.7" transform="rotate(179 52.2 70.5)"/><ellipse cx="14.3" cy="26.1" rx="5.0" ry="3.2" fill="#62b0ae" stroke="#f0fffd" stroke-width="0.7" transform="rotate(106 14.3 26.1)"/><ellipse cx="6.6" cy="170.6" rx="4.9" ry="4.9" fill="#6cbab6" stroke="#f0fffd" stroke-width="0.9" transform="rotate(167 6.6 170.6)"/><ellipse cx="23.6" cy="73.5" rx="3.5" ry="2.3" fill="#357a7e" stroke="#d6f6f2" stroke-width="1.1" transform="rotate(15 23.6 73.5)"/><ellipse cx="11.0" cy="64.2" rx="3.3" ry="2.3" fill="#6cbab6" stroke="#a0dcd6" stroke-width="0.9" transform="rotate(170 11.0 64.2)"/><ellipse cx="167.1" cy="88.0" rx="3.6" ry="2.9" fill="#62b0ae" stroke="#b8ece6" stroke-width="0.9" transform="rotate(50 167.1 88.0)"/><ellipse cx="21.4" cy="57.0" rx="5.4" ry="4.8" fill="#3f8a8c" stroke="#d6f6f2" stroke-width="1.1" transform="rotate(84 21.4 57.0)"/><ellipse cx="-11.5" cy="112.0" rx="4.5" ry="3.5" fill="#3f8a8c" stroke="#d6f6f2" stroke-width="0.7" transform="rotate(123 -11.5 112.0)"/><ellipse cx="30.1" cy="105.5" rx="4.4" ry="3.2" fill="#357a7e" stroke="#f0fffd" stroke-width="0.9" transform="rotate(61 30.1 105.5)"/><ellipse cx="67.1" cy="40.1" rx="4.4" ry="4.2" fill="#6cbab6" stroke="#b8ece6" stroke-width="1.1" transform="rotate(51 67.1 40.1)"/><ellipse cx="42.5" cy="76.3" rx="5.2" ry="4.9" fill="#357a7e" stroke="#a0dcd6" stroke-width="1.1" transform="rotate(49 42.5 76.3)"/><ellipse cx="34.4" cy="26.6" rx="6.4" ry="4.1" fill="#3f8a8c" stroke="#f0fffd" stroke-width="0.7" transform="rotate(35 34.4 26.6)"/><ellipse cx="101.2" cy="34.3" rx="5.2" ry="4.9" fill="#6cbab6" stroke="#a0dcd6" stroke-width="0.9" transform="rotate(28 101.2 34.3)"/><ellipse cx="56.9" cy="78.3" rx="4.4" ry="3.7" fill="#3f8a8c" stroke="#d6f6f2" stroke-width="0.7" transform="rotate(41 56.9 78.3)"/><ellipse cx="121.9" cy="150.0" rx="4.9" ry="3.7" fill="#62b0ae" stroke="#d6f6f2" stroke-width="1.1" transform="rotate(95 121.9 150.0)"/><ellipse cx="-23.4" cy="63.0" rx="4.8" ry="3.5" fill="#3f8a8c" stroke="#f0fffd" stroke-width="0.9" transform="rotate(162 -23.4 63.0)"/><ellipse cx="85.9" cy="160.2" rx="4.3" ry="3.6" fill="#62b0ae" stroke="#a0dcd6" stroke-width="1.1" transform="rotate(40 85.9 160.2)"/><ellipse cx="138.3" cy="122.4" rx="3.0" ry="2.6" fill="#6cbab6" stroke="#f0fffd" stroke-width="1.1" transform="rotate(74 138.3 122.4)"/><ellipse cx="50.4" cy="80.1" rx="4.2" ry="4.1" fill="#62b0ae" stroke="#a0dcd6" stroke-width="1.1" transform="rotate(123 50.4 80.1)"/><ellipse cx="27.9" cy="3.3" rx="5.9" ry="3.7" fill="#3f8a8c" stroke="#d6f6f2" stroke-width="0.9" transform="rotate(136 27.9 3.3)"/><ellipse cx="58.5" cy="72.3" rx="3.1" ry="2.0" fill="#4f9c9c" stroke="#a0dcd6" stroke-width="0.7" transform="rotate(37 58.5 72.3)"/><ellipse cx="51.0" cy="161.2" rx="4.0" ry="2.4" fill="#4f9c9c" stroke="#d6f6f2" stroke-width="0.7" transform="rotate(123 51.0 161.2)"/><ellipse cx="89.0" cy="126.9" rx="3.0" ry="2.0" fill="#3f8a8c" stroke="#b8ece6" stroke-width="0.9" transform="rotate(46 89.0 126.9)"/><ellipse cx="146.3" cy="121.3" rx="6.2" ry="4.8" fill="#62b0ae" stroke="#b8ece6" stroke-width="0.7" transform="rotate(27 146.3 121.3)"/><ellipse cx="145.6" cy="84.4" rx="3.8" ry="3.6" fill="#357a7e" stroke="#b8ece6" stroke-width="1.1" transform="rotate(45 145.6 84.4)"/><ellipse cx="47.9" cy="162.4" rx="6.2" ry="4.7" fill="#4f9c9c" stroke="#d6f6f2" stroke-width="0.7" transform="rotate(117 47.9 162.4)"/><ellipse cx="35.2" cy="169.5" rx="5.4" ry="3.5" fill="#3f8a8c" stroke="#b8ece6" stroke-width="1.1" transform="rotate(131 35.2 169.5)"/><ellipse cx="138.1" cy="18.7" rx="3.5" ry="3.3" fill="#6cbab6" stroke="#f0fffd" stroke-width="1.1" transform="rotate(67 138.1 18.7)"/><ellipse cx="22.8" cy="173.9" rx="4.2" ry="2.6" fill="#4f9c9c" stroke="#a0dcd6" stroke-width="1.1" transform="rotate(24 22.8 173.9)"/><ellipse cx="72.0" cy="143.3" rx="4.2" ry="2.8" fill="#357a7e" stroke="#f0fffd" stroke-width="0.7" transform="rotate(45 72.0 143.3)"/><ellipse cx="33.4" cy="67.0" rx="3.5" ry="2.7" fill="#3f8a8c" stroke="#a0dcd6" stroke-width="1.1" transform="rotate(95 33.4 67.0)"/><ellipse cx="90.0" cy="-2.7" rx="3.0" ry="2.4" fill="#62b0ae" stroke="#f0fffd" stroke-width="1.1" transform="rotate(68 90.0 -2.7)"/><ellipse cx="28.1" cy="12.2" rx="5.9" ry="4.1" fill="#357a7e" stroke="#d6f6f2" stroke-width="0.9" transform="rotate(145 28.1 12.2)"/><ellipse cx="79.0" cy="67.4" rx="6.2" ry="5.3" fill="#62b0ae" stroke="#a0dcd6" stroke-width="1.1" transform="rotate(36 79.0 67.4)"/><ellipse cx="-32.9" cy="75.7" rx="5.0" ry="4.6" fill="#6cbab6" stroke="#f0fffd" stroke-width="0.9" transform="rotate(57 -32.9 75.7)"/><ellipse cx="96.4" cy="107.9" rx="5.3" ry="5.2" fill="#4f9c9c" stroke="#f0fffd" stroke-width="0.9" transform="rotate(78 96.4 107.9)"/><ellipse cx="157.5" cy="112.8" rx="5.1" ry="3.4" fill="#62b0ae" stroke="#a0dcd6" stroke-width="0.7" transform="rotate(107 157.5 112.8)"/><ellipse cx="76.8" cy="71.0" rx="4.9" ry="3.8" fill="#3f8a8c" stroke="#b8ece6" stroke-width="1.1" transform="rotate(124 76.8 71.0)"/><ellipse cx="125.2" cy="108.3" rx="4.2" ry="4.1" fill="#62b0ae" stroke="#f0fffd" stroke-width="0.9" transform="rotate(159 125.2 108.3)"/><ellipse cx="138.5" cy="21.2" rx="4.8" ry="4.4" fill="#4f9c9c" stroke="#f0fffd" stroke-width="0.7" transform="rotate(45 138.5 21.2)"/><ellipse cx="132.9" cy="140.1" rx="2.9" ry="2.1" fill="#357a7e" stroke="#b8ece6" stroke-width="0.9" transform="rotate(147 132.9 140.1)"/><ellipse cx="55.0" cy="148.1" rx="2.8" ry="2.2" fill="#357a7e" stroke="#d6f6f2" stroke-width="0.9" transform="rotate(171 55.0 148.1)"/><ellipse cx="37.3" cy="92.1" rx="6.0" ry="3.8" fill="#6cbab6" stroke="#a0dcd6" stroke-width="0.7" transform="rotate(12 37.3 92.1)"/><ellipse cx="164.9" cy="73.1" rx="5.6" ry="3.7" fill="#3f8a8c" stroke="#a0dcd6" stroke-width="0.7" transform="rotate(144 164.9 73.1)"/><ellipse cx="16.0" cy="39.6" rx="4.9" ry="4.6" fill="#3f8a8c" stroke="#f0fffd" stroke-width="0.7" transform="rotate(126 16.0 39.6)"/><ellipse cx="133.5" cy="138.0" rx="6.0" ry="4.3" fill="#3f8a8c" stroke="#f0fffd" stroke-width="1.1" transform="rotate(151 133.5 138.0)"/><ellipse cx="107.8" cy="178.8" rx="3.8" ry="3.0" fill="#4f9c9c" stroke="#a0dcd6" stroke-width="0.9" transform="rotate(15 107.8 178.8)"/><ellipse cx="136.9" cy="149.1" rx="3.1" ry="1.8" fill="#4f9c9c" stroke="#a0dcd6" stroke-width="0.7" transform="rotate(166 136.9 149.1)"/><ellipse cx="103.7" cy="148.3" rx="5.8" ry="5.1" fill="#357a7e" stroke="#b8ece6" stroke-width="0.9" transform="rotate(149 103.7 148.3)"/><ellipse cx="102.5" cy="126.7" rx="3.2" ry="3.0" fill="#4f9c9c" stroke="#d6f6f2" stroke-width="0.9" transform="rotate(32 102.5 126.7)"/><ellipse cx="154.6" cy="150.3" rx="3.6" ry="2.8" fill="#6cbab6" stroke="#f0fffd" stroke-width="0.9" transform="rotate(6 154.6 150.3)"/><ellipse cx="22.2" cy="146.8" rx="4.3" ry="2.9" fill="#62b0ae" stroke="#b8ece6" stroke-width="1.1" transform="rotate(99 22.2 146.8)"/><ellipse cx="139.6" cy="62.5" rx="4.7" ry="4.4" fill="#357a7e" stroke="#b8ece6" stroke-width="0.7" transform="rotate(20 139.6 62.5)"/><ellipse cx="31.8" cy="137.4" rx="3.7" ry="3.1" fill="#4f9c9c" stroke="#d6f6f2" stroke-width="1.1" transform="rotate(97 31.8 137.4)"/><ellipse cx="93.4" cy="149.3" rx="3.9" ry="2.6" fill="#357a7e" stroke="#b8ece6" stroke-width="0.7" transform="rotate(51 93.4 149.3)"/><ellipse cx="53.1" cy="134.9" rx="5.6" ry="4.4" fill="#62b0ae" stroke="#d6f6f2" stroke-width="0.9" transform="rotate(22 53.1 134.9)"/><ellipse cx="89.0" cy="28.5" rx="3.5" ry="3.0" fill="#3f8a8c" stroke="#f0fffd" stroke-width="1.1" transform="rotate(24 89.0 28.5)"/><ellipse cx="110.1" cy="93.8" rx="3.3" ry="2.6" fill="#4f9c9c" stroke="#d6f6f2" stroke-width="0.9" transform="rotate(19 110.1 93.8)"/><ellipse cx="29.4" cy="8.7" rx="3.3" ry="2.1" fill="#357a7e" stroke="#d6f6f2" stroke-width="0.9" transform="rotate(74 29.4 8.7)"/><ellipse cx="-5.7" cy="152.0" rx="2.8" ry="2.1" fill="#357a7e" stroke="#d6f6f2" stroke-width="0.9" transform="rotate(153 -5.7 152.0)"/><ellipse cx="78.3" cy="154.0" rx="2.8" ry="2.1" fill="#3f8a8c" stroke="#f0fffd" stroke-width="1.1" transform="rotate(74 78.3 154.0)"/><ellipse cx="11.2" cy="70.6" rx="3.7" ry="3.2" fill="#3f8a8c" stroke="#a0dcd6" stroke-width="0.9" transform="rotate(148 11.2 70.6)"/><ellipse cx="18.4" cy="145.8" rx="3.6" ry="2.6" fill="#3f8a8c" stroke="#d6f6f2" stroke-width="0.9" transform="rotate(40 18.4 145.8)"/><ellipse cx="101.7" cy="101.9" rx="4.4" ry="3.3" fill="#3f8a8c" stroke="#d6f6f2" stroke-width="0.9" transform="rotate(137 101.7 101.9)"/><ellipse cx="143.6" cy="107.2" rx="2.9" ry="1.9" fill="#6cbab6" stroke="#a0dcd6" stroke-width="0.9" transform="rotate(69 143.6 107.2)"/><ellipse cx="89.1" cy="25.9" rx="5.8" ry="4.6" fill="#4f9c9c" stroke="#f0fffd" stroke-width="1.1" transform="rotate(148 89.1 25.9)"/><ellipse cx="-25.6" cy="86.4" rx="6.5" ry="5.4" fill="#3f8a8c" stroke="#d6f6f2" stroke-width="0.7" transform="rotate(96 -25.6 86.4)"/><ellipse cx="63.8" cy="92.6" rx="6.1" ry="5.8" fill="#62b0ae" stroke="#b8ece6" stroke-width="0.9" transform="rotate(28 63.8 92.6)"/><ellipse cx="38.6" cy="179.8" rx="6.0" ry="4.2" fill="#3f8a8c" stroke="#f0fffd" stroke-width="1.1" transform="rotate(96 38.6 179.8)"/><ellipse cx="86.8" cy="-1.3" rx="3.6" ry="3.2" fill="#3f8a8c" stroke="#a0dcd6" stroke-width="1.1" transform="rotate(15 86.8 -1.3)"/><ellipse cx="45.8" cy="20.6" rx="2.8" ry="2.0" fill="#357a7e" stroke="#a0dcd6" stroke-width="0.7" transform="rotate(26 45.8 20.6)"/><ellipse cx="12.2" cy="149.2" rx="4.4" ry="3.1" fill="#357a7e" stroke="#b8ece6" stroke-width="1.1" transform="rotate(128 12.2 149.2)"/><ellipse cx="54.2" cy="123.2" rx="4.1" ry="2.7" fill="#357a7e" stroke="#a0dcd6" stroke-width="0.9" transform="rotate(4 54.2 123.2)"/><ellipse cx="155.2" cy="40.0" rx="5.8" ry="4.0" fill="#4f9c9c" stroke="#b8ece6" stroke-width="1.1" transform="rotate(123 155.2 40.0)"/><ellipse cx="22.9" cy="161.2" rx="6.5" ry="4.2" fill="#62b0ae" stroke="#d6f6f2" stroke-width="0.7" transform="rotate(10 22.9 161.2)"/><ellipse cx="138.2" cy="145.4" rx="3.0" ry="2.4" fill="#3f8a8c" stroke="#f0fffd" stroke-width="0.9" transform="rotate(71 138.2 145.4)"/><ellipse cx="48.3" cy="-6.0" rx="4.4" ry="4.3" fill="#62b0ae" stroke="#f0fffd" stroke-width="1.1" transform="rotate(169 48.3 -6.0)"/><ellipse cx="65.5" cy="9.0" rx="3.0" ry="2.0" fill="#62b0ae" stroke="#b8ece6" stroke-width="1.1" transform="rotate(29 65.5 9.0)"/><ellipse cx="161.9" cy="49.4" rx="5.9" ry="5.6" fill="#62b0ae" stroke="#d6f6f2" stroke-width="1.1" transform="rotate(15 161.9 49.4)"/><ellipse cx="87.5" cy="103.1" rx="5.4" ry="5.2" fill="#357a7e" stroke="#d6f6f2" stroke-width="1.1" transform="rotate(114 87.5 103.1)"/><ellipse cx="100.4" cy="188.3" rx="3.8" ry="2.4" fill="#357a7e" stroke="#f0fffd" stroke-width="0.7" transform="rotate(96 100.4 188.3)"/><ellipse cx="98.8" cy="12.1" rx="4.3" ry="3.4" fill="#4f9c9c" stroke="#b8ece6" stroke-width="1.1" transform="rotate(140 98.8 12.1)"/><ellipse cx="119.0" cy="169.4" rx="6.4" ry="4.2" fill="#4f9c9c" stroke="#b8ece6" stroke-width="0.9" transform="rotate(177 119.0 169.4)"/><ellipse cx="122.9" cy="155.2" rx="5.7" ry="5.1" fill="#6cbab6" stroke="#b8ece6" stroke-width="1.1" transform="rotate(44 122.9 155.2)"/><ellipse cx="38.1" cy="146.7" rx="2.8" ry="2.4" fill="#3f8a8c" stroke="#d6f6f2" stroke-width="1.1" transform="rotate(124 38.1 146.7)"/><ellipse cx="161.3" cy="72.4" rx="5.8" ry="5.2" fill="#357a7e" stroke="#a0dcd6" stroke-width="1.1" transform="rotate(157 161.3 72.4)"/><ellipse cx="108.6" cy="166.2" rx="5.8" ry="3.7" fill="#62b0ae" stroke="#f0fffd" stroke-width="1.1" transform="rotate(82 108.6 166.2)"/><ellipse cx="151.5" cy="88.5" rx="4.9" ry="3.8" fill="#3f8a8c" stroke="#b8ece6" stroke-width="1.1" transform="rotate(101 151.5 88.5)"/><ellipse cx="-12.7" cy="66.7" rx="6.2" ry="4.5" fill="#3f8a8c" stroke="#a0dcd6" stroke-width="0.7" transform="rotate(176 -12.7 66.7)"/><ellipse cx="-17.6" cy="50.8" rx="5.5" ry="4.6" fill="#3f8a8c" stroke="#d6f6f2" stroke-width="0.9" transform="rotate(91 -17.6 50.8)"/><ellipse cx="20.0" cy="175.4" rx="6.4" ry="4.4" fill="#4f9c9c" stroke="#f0fffd" stroke-width="0.7" transform="rotate(134 20.0 175.4)"/><ellipse cx="113.4" cy="62.5" rx="3.7" ry="3.2" fill="#357a7e" stroke="#f0fffd" stroke-width="0.9" transform="rotate(16 113.4 62.5)"/><ellipse cx="120.9" cy="55.9" rx="6.3" ry="6.0" fill="#6cbab6" stroke="#b8ece6" stroke-width="1.1" transform="rotate(96 120.9 55.9)"/><ellipse cx="84.7" cy="111.8" rx="5.5" ry="5.1" fill="#6cbab6" stroke="#b8ece6" stroke-width="0.7" transform="rotate(159 84.7 111.8)"/><ellipse cx="4.4" cy="111.3" rx="4.0" ry="2.5" fill="#62b0ae" stroke="#f0fffd" stroke-width="0.9" transform="rotate(98 4.4 111.3)"/><ellipse cx="60.9" cy="1.3" rx="2.6" ry="1.7" fill="#3f8a8c" stroke="#b8ece6" stroke-width="0.9" transform="rotate(155 60.9 1.3)"/><ellipse cx="108.1" cy="41.6" rx="6.4" ry="6.1" fill="#6cbab6" stroke="#b8ece6" stroke-width="1.1" transform="rotate(64 108.1 41.6)"/><ellipse cx="7.3" cy="174.1" rx="4.9" ry="3.1" fill="#3f8a8c" stroke="#a0dcd6" stroke-width="1.1" transform="rotate(32 7.3 174.1)"/><ellipse cx="61.8" cy="50.2" rx="4.8" ry="4.5" fill="#4f9c9c" stroke="#d6f6f2" stroke-width="1.1" transform="rotate(127 61.8 50.2)"/><ellipse cx="-27.3" cy="98.8" rx="4.3" ry="3.7" fill="#62b0ae" stroke="#d6f6f2" stroke-width="0.7" transform="rotate(119 -27.3 98.8)"/><ellipse cx="133.7" cy="153.2" rx="5.4" ry="4.8" fill="#357a7e" stroke="#f0fffd" stroke-width="1.1" transform="rotate(32 133.7 153.2)"/><ellipse cx="5.6" cy="85.5" rx="3.6" ry="2.7" fill="#62b0ae" stroke="#f0fffd" stroke-width="0.9" transform="rotate(93 5.6 85.5)"/><ellipse cx="108.7" cy="74.4" rx="2.9" ry="1.8" fill="#3f8a8c" stroke="#a0dcd6" stroke-width="0.7" transform="rotate(12 108.7 74.4)"/><ellipse cx="25.9" cy="171.6" rx="4.1" ry="2.8" fill="#62b0ae" stroke="#f0fffd" stroke-width="0.7" transform="rotate(4 25.9 171.6)"/><ellipse cx="106.4" cy="102.6" rx="4.5" ry="3.3" fill="#357a7e" stroke="#a0dcd6" stroke-width="0.9" transform="rotate(78 106.4 102.6)"/><ellipse cx="-23.5" cy="76.7" rx="2.9" ry="2.5" fill="#3f8a8c" stroke="#f0fffd" stroke-width="1.1" transform="rotate(12 -23.5 76.7)"/><ellipse cx="104.3" cy="130.6" rx="3.8" ry="2.7" fill="#4f9c9c" stroke="#b8ece6" stroke-width="1.1" transform="rotate(127 104.3 130.6)"/><ellipse cx="159.5" cy="49.3" rx="4.7" ry="4.4" fill="#3f8a8c" stroke="#f0fffd" stroke-width="0.7" transform="rotate(17 159.5 49.3)"/><ellipse cx="53.5" cy="59.5" rx="2.5" ry="2.4" fill="#62b0ae" stroke="#d6f6f2" stroke-width="0.7" transform="rotate(52 53.5 59.5)"/><ellipse cx="77.2" cy="198.7" rx="5.9" ry="4.4" fill="#4f9c9c" stroke="#d6f6f2" stroke-width="0.9" transform="rotate(14 77.2 198.7)"/><ellipse cx="97.4" cy="115.8" rx="5.5" ry="3.8" fill="#357a7e" stroke="#d6f6f2" stroke-width="0.9" transform="rotate(67 97.4 115.8)"/><ellipse cx="65.5" cy="94.4" rx="4.6" ry="4.1" fill="#357a7e" stroke="#b8ece6" stroke-width="0.7" transform="rotate(50 65.5 94.4)"/><ellipse cx="89.9" cy="68.7" rx="3.4" ry="2.6" fill="#3f8a8c" stroke="#f0fffd" stroke-width="0.7" transform="rotate(135 89.9 68.7)"/><ellipse cx="100.4" cy="82.9" rx="5.9" ry="3.9" fill="#357a7e" stroke="#b8ece6" stroke-width="1.1" transform="rotate(115 100.4 82.9)"/><ellipse cx="96.4" cy="195.1" rx="2.5" ry="1.6" fill="#4f9c9c" stroke="#a0dcd6" stroke-width="1.1" transform="rotate(121 96.4 195.1)"/><ellipse cx="133.1" cy="78.5" rx="2.6" ry="1.6" fill="#62b0ae" stroke="#b8ece6" stroke-width="0.9" transform="rotate(164 133.1 78.5)"/><ellipse cx="170.4" cy="95.8" rx="4.9" ry="3.8" fill="#6cbab6" stroke="#f0fffd" stroke-width="0.9" transform="rotate(125 170.4 95.8)"/><ellipse cx="20.1" cy="41.2" rx="3.1" ry="2.9" fill="#357a7e" stroke="#b8ece6" stroke-width="1.1" transform="rotate(55 20.1 41.2)"/><ellipse cx="86.9" cy="149.8" rx="4.3" ry="3.3" fill="#357a7e" stroke="#a0dcd6" stroke-width="0.7" transform="rotate(74 86.9 149.8)"/><ellipse cx="76.2" cy="44.4" rx="6.4" ry="6.1" fill="#62b0ae" stroke="#b8ece6" stroke-width="0.9" transform="rotate(77 76.2 44.4)"/><ellipse cx="144.9" cy="127.6" rx="5.2" ry="4.3" fill="#6cbab6" stroke="#b8ece6" stroke-width="1.1" transform="rotate(16 144.9 127.6)"/><ellipse cx="131.0" cy="93.1" rx="5.5" ry="4.9" fill="#357a7e" stroke="#b8ece6" stroke-width="0.9" transform="rotate(117 131.0 93.1)"/><ellipse cx="90.6" cy="26.2" rx="6.3" ry="5.8" fill="#3f8a8c" stroke="#a0dcd6" stroke-width="1.1" transform="rotate(117 90.6 26.2)"/><ellipse cx="127.6" cy="163.2" rx="4.5" ry="3.0" fill="#357a7e" stroke="#d6f6f2" stroke-width="0.7" transform="rotate(156 127.6 163.2)"/><ellipse cx="46.3" cy="104.5" rx="5.2" ry="3.2" fill="#62b0ae" stroke="#d6f6f2" stroke-width="0.9" transform="rotate(110 46.3 104.5)"/><ellipse cx="69.9" cy="66.8" rx="3.0" ry="2.0" fill="#3f8a8c" stroke="#f0fffd" stroke-width="0.7" transform="rotate(143 69.9 66.8)"/><ellipse cx="103.1" cy="47.2" rx="4.5" ry="3.1" fill="#357a7e" stroke="#b8ece6" stroke-width="0.9" transform="rotate(7 103.1 47.2)"/><ellipse cx="83.5" cy="70.7" rx="4.1" ry="3.4" fill="#3f8a8c" stroke="#f0fffd" stroke-width="0.7" transform="rotate(47 83.5 70.7)"/><ellipse cx="139.0" cy="53.3" rx="5.5" ry="3.9" fill="#62b0ae" stroke="#f0fffd" stroke-width="0.7" transform="rotate(66 139.0 53.3)"/><ellipse cx="103.3" cy="12.4" rx="3.3" ry="2.2" fill="#6cbab6" stroke="#f0fffd" stroke-width="1.1" transform="rotate(149 103.3 12.4)"/><ellipse cx="74.2" cy="82.3" rx="2.6" ry="2.2" fill="#3f8a8c" stroke="#d6f6f2" stroke-width="0.7" transform="rotate(61 74.2 82.3)"/><ellipse cx="78.7" cy="118.3" rx="5.2" ry="3.5" fill="#357a7e" stroke="#f0fffd" stroke-width="0.7" transform="rotate(160 78.7 118.3)"/><ellipse cx="165.2" cy="84.2" rx="4.9" ry="4.1" fill="#4f9c9c" stroke="#b8ece6" stroke-width="0.9" transform="rotate(25 165.2 84.2)"/><ellipse cx="13.7" cy="69.6" rx="3.5" ry="3.1" fill="#357a7e" stroke="#b8ece6" stroke-width="0.7" transform="rotate(170 13.7 69.6)"/><ellipse cx="60.1" cy="106.9" rx="4.2" ry="3.4" fill="#6cbab6" stroke="#f0fffd" stroke-width="1.1" transform="rotate(141 60.1 106.9)"/><ellipse cx="77.9" cy="110.8" rx="5.6" ry="4.0" fill="#6cbab6" stroke="#b8ece6" stroke-width="1.1" transform="rotate(112 77.9 110.8)"/><ellipse cx="113.8" cy="130.6" rx="6.2" ry="5.0" fill="#3f8a8c" stroke="#a0dcd6" stroke-width="0.9" transform="rotate(120 113.8 130.6)"/><ellipse cx="80.0" cy="56.2" rx="2.8" ry="2.6" fill="#4f9c9c" stroke="#f0fffd" stroke-width="0.7" transform="rotate(49 80.0 56.2)"/><ellipse cx="106.4" cy="172.2" rx="5.4" ry="4.2" fill="#6cbab6" stroke="#a0dcd6" stroke-width="0.7" transform="rotate(75 106.4 172.2)"/><ellipse cx="-2.0" cy="84.6" rx="4.6" ry="3.8" fill="#62b0ae" stroke="#d6f6f2" stroke-width="0.9" transform="rotate(157 -2.0 84.6)"/><ellipse cx="71.4" cy="44.5" rx="3.3" ry="3.0" fill="#62b0ae" stroke="#f0fffd" stroke-width="0.9" transform="rotate(140 71.4 44.5)"/><ellipse cx="110.2" cy="84.0" rx="6.4" ry="5.5" fill="#357a7e" stroke="#f0fffd" stroke-width="0.9" transform="rotate(112 110.2 84.0)"/><ellipse cx="97.5" cy="99.0" rx="4.9" ry="4.4" fill="#6cbab6" stroke="#b8ece6" stroke-width="0.9" transform="rotate(124 97.5 99.0)"/><ellipse cx="16.6" cy="36.0" rx="4.7" ry="3.0" fill="#6cbab6" stroke="#f0fffd" stroke-width="1.1" transform="rotate(140 16.6 36.0)"/><ellipse cx="-8.6" cy="134.2" rx="6.4" ry="4.8" fill="#357a7e" stroke="#b8ece6" stroke-width="1.1" transform="rotate(91 -8.6 134.2)"/><ellipse cx="123.7" cy="105.3" rx="3.1" ry="2.6" fill="#4f9c9c" stroke="#b8ece6" stroke-width="0.7" transform="rotate(74 123.7 105.3)"/><ellipse cx="87.7" cy="74.3" rx="2.5" ry="1.6" fill="#4f9c9c" stroke="#a0dcd6" stroke-width="0.9" transform="rotate(41 87.7 74.3)"/><ellipse cx="3.7" cy="167.2" rx="3.6" ry="3.4" fill="#3f8a8c" stroke="#a0dcd6" stroke-width="0.7" transform="rotate(144 3.7 167.2)"/><ellipse cx="34.4" cy="167.6" rx="6.3" ry="4.7" fill="#6cbab6" stroke="#f0fffd" stroke-width="1.1" transform="rotate(150 34.4 167.6)"/><ellipse cx="58.3" cy="80.3" rx="4.5" ry="3.0" fill="#62b0ae" stroke="#a0dcd6" stroke-width="0.7" transform="rotate(53 58.3 80.3)"/><ellipse cx="10.7" cy="127.7" rx="4.9" ry="4.2" fill="#62b0ae" stroke="#a0dcd6" stroke-width="0.9" transform="rotate(162 10.7 127.7)"/><ellipse cx="101.4" cy="7.9" rx="3.4" ry="2.6" fill="#6cbab6" stroke="#f0fffd" stroke-width="0.9" transform="rotate(111 101.4 7.9)"/><ellipse cx="142.1" cy="92.8" rx="4.9" ry="3.7" fill="#6cbab6" stroke="#f0fffd" stroke-width="0.9" transform="rotate(100 142.1 92.8)"/><ellipse cx="13.3" cy="66.0" rx="4.6" ry="3.8" fill="#6cbab6" stroke="#a0dcd6" stroke-width="0.7" transform="rotate(49 13.3 66.0)"/><ellipse cx="98.5" cy="93.8" rx="2.6" ry="2.5" fill="#3f8a8c" stroke="#f0fffd" stroke-width="0.7" transform="rotate(126 98.5 93.8)"/><ellipse cx="40.2" cy="103.4" rx="6.3" ry="5.5" fill="#62b0ae" stroke="#d6f6f2" stroke-width="0.9" transform="rotate(80 40.2 103.4)"/><ellipse cx="100.4" cy="32.6" rx="5.0" ry="4.8" fill="#4f9c9c" stroke="#d6f6f2" stroke-width="1.1" transform="rotate(153 100.4 32.6)"/><ellipse cx="36.4" cy="130.8" rx="4.4" ry="4.3" fill="#3f8a8c" stroke="#a0dcd6" stroke-width="0.9" transform="rotate(57 36.4 130.8)"/><ellipse cx="26.3" cy="98.3" rx="5.7" ry="4.8" fill="#62b0ae" stroke="#b8ece6" stroke-width="0.7" transform="rotate(157 26.3 98.3)"/><ellipse cx="88.6" cy="140.8" rx="4.5" ry="2.7" fill="#3f8a8c" stroke="#b8ece6" stroke-width="1.1" transform="rotate(67 88.6 140.8)"/><ellipse cx="160.5" cy="93.5" rx="3.8" ry="2.6" fill="#357a7e" stroke="#a0dcd6" stroke-width="1.1" transform="rotate(45 160.5 93.5)"/><ellipse cx="67.8" cy="46.5" rx="6.5" ry="4.1" fill="#3f8a8c" stroke="#d6f6f2" stroke-width="1.1" transform="rotate(7 67.8 46.5)"/><ellipse cx="66.4" cy="139.1" rx="5.6" ry="3.7" fill="#357a7e" stroke="#f0fffd" stroke-width="1.1" transform="rotate(141 66.4 139.1)"/><ellipse cx="-6.8" cy="123.6" rx="4.7" ry="2.8" fill="#357a7e" stroke="#b8ece6" stroke-width="0.7" transform="rotate(32 -6.8 123.6)"/><ellipse cx="74.6" cy="122.5" rx="5.0" ry="3.0" fill="#62b0ae" stroke="#f0fffd" stroke-width="0.9" transform="rotate(110 74.6 122.5)"/><ellipse cx="59.4" cy="-4.7" rx="5.2" ry="4.2" fill="#62b0ae" stroke="#d6f6f2" stroke-width="0.9" transform="rotate(67 59.4 -4.7)"/><ellipse cx="51.7" cy="67.7" rx="6.2" ry="3.9" fill="#357a7e" stroke="#f0fffd" stroke-width="0.9" transform="rotate(100 51.7 67.7)"/><ellipse cx="42.0" cy="132.5" rx="5.7" ry="4.4" fill="#62b0ae" stroke="#b8ece6" stroke-width="1.1" transform="rotate(64 42.0 132.5)"/><ellipse cx="168.3" cy="106.9" rx="3.8" ry="3.3" fill="#6cbab6" stroke="#a0dcd6" stroke-width="1.1" transform="rotate(108 168.3 106.9)"/><ellipse cx="19.8" cy="150.3" rx="5.4" ry="4.5" fill="#357a7e" stroke="#a0dcd6" stroke-width="0.9" transform="rotate(109 19.8 150.3)"/><ellipse cx="-32.1" cy="108.9" rx="5.5" ry="4.1" fill="#4f9c9c" stroke="#d6f6f2" stroke-width="0.7" transform="rotate(6 -32.1 108.9)"/><ellipse cx="36.8" cy="83.5" rx="3.7" ry="3.2" fill="#3f8a8c" stroke="#a0dcd6" stroke-width="0.7" transform="rotate(140 36.8 83.5)"/><ellipse cx="153.5" cy="133.7" rx="3.4" ry="2.7" fill="#6cbab6" stroke="#b8ece6" stroke-width="0.7" transform="rotate(145 153.5 133.7)"/><ellipse cx="-9.3" cy="83.3" rx="3.2" ry="2.3" fill="#3f8a8c" stroke="#b8ece6" stroke-width="1.1" transform="rotate(126 -9.3 83.3)"/><ellipse cx="24.6" cy="43.8" rx="4.8" ry="3.7" fill="#357a7e" stroke="#a0dcd6" stroke-width="1.1" transform="rotate(93 24.6 43.8)"/><ellipse cx="168.4" cy="87.3" rx="5.8" ry="4.8" fill="#6cbab6" stroke="#b8ece6" stroke-width="0.7" transform="rotate(169 168.4 87.3)"/><ellipse cx="35.1" cy="55.6" rx="3.1" ry="2.4" fill="#357a7e" stroke="#f0fffd" stroke-width="0.7" transform="rotate(44 35.1 55.6)"/><ellipse cx="51.9" cy="44.0" rx="6.0" ry="4.4" fill="#62b0ae" stroke="#a0dcd6" stroke-width="0.9" transform="rotate(17 51.9 44.0)"/><ellipse cx="25.2" cy="46.8" rx="5.5" ry="4.3" fill="#6cbab6" stroke="#a0dcd6" stroke-width="0.9" transform="rotate(132 25.2 46.8)"/><ellipse cx="37.3" cy="173.1" rx="5.8" ry="4.8" fill="#357a7e" stroke="#b8ece6" stroke-width="1.1" transform="rotate(109 37.3 173.1)"/><ellipse cx="130.7" cy="100.0" rx="3.6" ry="2.3" fill="#357a7e" stroke="#b8ece6" stroke-width="0.7" transform="rotate(174 130.7 100.0)"/><ellipse cx="122.2" cy="102.3" rx="6.0" ry="4.4" fill="#3f8a8c" stroke="#f0fffd" stroke-width="1.1" transform="rotate(172 122.2 102.3)"/><ellipse cx="15.7" cy="45.3" rx="6.3" ry="5.7" fill="#6cbab6" stroke="#d6f6f2" stroke-width="0.7" transform="rotate(126 15.7 45.3)"/><ellipse cx="66.1" cy="38.2" rx="5.2" ry="3.6" fill="#4f9c9c" stroke="#a0dcd6" stroke-width="0.7" transform="rotate(148 66.1 38.2)"/><ellipse cx="25.8" cy="29.1" rx="4.9" ry="4.3" fill="#357a7e" stroke="#a0dcd6" stroke-width="1.1" transform="rotate(146 25.8 29.1)"/><ellipse cx="112.0" cy="185.0" rx="3.7" ry="3.1" fill="#6cbab6" stroke="#d6f6f2" stroke-width="0.9" transform="rotate(173 112.0 185.0)"/><ellipse cx="141.9" cy="93.6" rx="3.9" ry="3.7" fill="#4f9c9c" stroke="#b8ece6" stroke-width="1.1" transform="rotate(160 141.9 93.6)"/><ellipse cx="41.2" cy="75.6" rx="3.6" ry="2.5" fill="#6cbab6" stroke="#a0dcd6" stroke-width="0.7" transform="rotate(90 41.2 75.6)"/><ellipse cx="3.4" cy="133.4" rx="5.5" ry="4.2" fill="#4f9c9c" stroke="#d6f6f2" stroke-width="1.1" transform="rotate(134 3.4 133.4)"/><ellipse cx="49.9" cy="30.3" rx="5.8" ry="5.0" fill="#4f9c9c" stroke="#f0fffd" stroke-width="0.9" transform="rotate(174 49.9 30.3)"/><ellipse cx="12.3" cy="177.6" rx="5.9" ry="5.8" fill="#4f9c9c" stroke="#b8ece6" stroke-width="1.1" transform="rotate(102 12.3 177.6)"/><ellipse cx="65.3" cy="55.2" rx="3.1" ry="2.3" fill="#357a7e" stroke="#f0fffd" stroke-width="0.9" transform="rotate(77 65.3 55.2)"/><ellipse cx="102.3" cy="147.3" rx="4.1" ry="3.8" fill="#3f8a8c" stroke="#f0fffd" stroke-width="0.9" transform="rotate(67 102.3 147.3)"/><ellipse cx="-9.1" cy="134.5" rx="6.4" ry="6.0" fill="#3f8a8c" stroke="#a0dcd6" stroke-width="0.9" transform="rotate(115 -9.1 134.5)"/><ellipse cx="15.6" cy="60.1" rx="2.8" ry="2.1" fill="#62b0ae" stroke="#f0fffd" stroke-width="0.9" transform="rotate(1 15.6 60.1)"/><ellipse cx="-33.9" cy="103.6" rx="5.7" ry="5.1" fill="#3f8a8c" stroke="#a0dcd6" stroke-width="0.7" transform="rotate(161 -33.9 103.6)"/><ellipse cx="94.4" cy="85.4" rx="3.8" ry="2.9" fill="#6cbab6" stroke="#b8ece6" stroke-width="1.1" transform="rotate(114 94.4 85.4)"/><ellipse cx="22.1" cy="87.6" rx="5.9" ry="4.3" fill="#62b0ae" stroke="#f0fffd" stroke-width="0.7" transform="rotate(136 22.1 87.6)"/><ellipse cx="20.6" cy="20.8" rx="6.1" ry="5.7" fill="#62b0ae" stroke="#a0dcd6" stroke-width="1.1" transform="rotate(172 20.6 20.8)"/><ellipse cx="0.5" cy="28.9" rx="5.0" ry="3.5" fill="#357a7e" stroke="#f0fffd" stroke-width="0.9" transform="rotate(73 0.5 28.9)"/><ellipse cx="9.7" cy="158.4" rx="5.2" ry="5.0" fill="#4f9c9c" stroke="#d6f6f2" stroke-width="0.9" transform="rotate(20 9.7 158.4)"/><ellipse cx="36.4" cy="28.9" rx="3.1" ry="2.4" fill="#357a7e" stroke="#f0fffd" stroke-width="0.7" transform="rotate(176 36.4 28.9)"/><ellipse cx="-3.1" cy="156.8" rx="5.8" ry="4.7" fill="#3f8a8c" stroke="#a0dcd6" stroke-width="0.7" transform="rotate(19 -3.1 156.8)"/><ellipse cx="109.3" cy="39.5" rx="3.6" ry="3.2" fill="#357a7e" stroke="#b8ece6" stroke-width="1.1" transform="rotate(37 109.3 39.5)"/><ellipse cx="103.3" cy="158.2" rx="5.1" ry="3.1" fill="#357a7e" stroke="#d6f6f2" stroke-width="1.1" transform="rotate(28 103.3 158.2)"/><ellipse cx="-2.2" cy="155.4" rx="3.8" ry="3.1" fill="#4f9c9c" stroke="#f0fffd" stroke-width="0.9" transform="rotate(86 -2.2 155.4)"/><ellipse cx="133.4" cy="96.8" rx="2.7" ry="2.7" fill="#3f8a8c" stroke="#a0dcd6" stroke-width="0.9" transform="rotate(139 133.4 96.8)"/><ellipse cx="170.9" cy="128.1" rx="5.7" ry="5.2" fill="#3f8a8c" stroke="#a0dcd6" stroke-width="1.1" transform="rotate(104 170.9 128.1)"/><ellipse cx="94.1" cy="79.2" rx="4.3" ry="3.4" fill="#4f9c9c" stroke="#a0dcd6" stroke-width="0.7" transform="rotate(134 94.1 79.2)"/><ellipse cx="42.7" cy="3.8" rx="5.5" ry="5.4" fill="#6cbab6" stroke="#b8ece6" stroke-width="1.1" transform="rotate(84 42.7 3.8)"/><ellipse cx="81.7" cy="7.3" rx="6.4" ry="4.8" fill="#357a7e" stroke="#a0dcd6" stroke-width="0.9" transform="rotate(6 81.7 7.3)"/><ellipse cx="112.1" cy="171.5" rx="6.1" ry="4.9" fill="#4f9c9c" stroke="#d6f6f2" stroke-width="1.1" transform="rotate(116 112.1 171.5)"/><ellipse cx="55.9" cy="73.8" rx="6.2" ry="4.4" fill="#6cbab6" stroke="#a0dcd6" stroke-width="0.7" transform="rotate(105 55.9 73.8)"/><ellipse cx="29.7" cy="187.3" rx="6.1" ry="5.8" fill="#357a7e" stroke="#d6f6f2" stroke-width="1.1" transform="rotate(99 29.7 187.3)"/><ellipse cx="105.5" cy="171.8" rx="6.3" ry="4.9" fill="#4f9c9c" stroke="#b8ece6" stroke-width="0.7" transform="rotate(117 105.5 171.8)"/><ellipse cx="90.0" cy="143.2" rx="3.2" ry="2.7" fill="#3f8a8c" stroke="#d6f6f2" stroke-width="0.9" transform="rotate(170 90.0 143.2)"/><ellipse cx="6.4" cy="113.9" rx="6.2" ry="6.1" fill="#6cbab6" stroke="#a0dcd6" stroke-width="1.1" transform="rotate(78 6.4 113.9)"/><ellipse cx="48.5" cy="197.2" rx="2.8" ry="1.8" fill="#6cbab6" stroke="#d6f6f2" stroke-width="1.1" transform="rotate(76 48.5 197.2)"/><ellipse cx="82.0" cy="57.1" rx="5.0" ry="4.4" fill="#3f8a8c" stroke="#f0fffd" stroke-width="1.1" transform="rotate(28 82.0 57.1)"/><ellipse cx="9.5" cy="151.6" rx="3.0" ry="1.9" fill="#4f9c9c" stroke="#f0fffd" stroke-width="0.9" transform="rotate(179 9.5 151.6)"/><ellipse cx="-2.6" cy="155.8" rx="4.4" ry="4.4" fill="#4f9c9c" stroke="#f0fffd" stroke-width="0.7" transform="rotate(41 -2.6 155.8)"/><ellipse cx="80.4" cy="157.0" rx="4.3" ry="3.3" fill="#4f9c9c" stroke="#d6f6f2" stroke-width="0.7" transform="rotate(65 80.4 157.0)"/><ellipse cx="-22.0" cy="55.5" rx="2.8" ry="2.3" fill="#6cbab6" stroke="#a0dcd6" stroke-width="0.7" transform="rotate(118 -22.0 55.5)"/><ellipse cx="98.0" cy="154.8" rx="6.4" ry="6.3" fill="#62b0ae" stroke="#a0dcd6" stroke-width="0.9" transform="rotate(112 98.0 154.8)"/><ellipse cx="142.0" cy="26.9" rx="3.9" ry="3.3" fill="#3f8a8c" stroke="#f0fffd" stroke-width="1.1" transform="rotate(169 142.0 26.9)"/><ellipse cx="57.5" cy="20.1" rx="5.5" ry="5.4" fill="#4f9c9c" stroke="#a0dcd6" stroke-width="0.9" transform="rotate(92 57.5 20.1)"/><ellipse cx="45.5" cy="194.0" rx="2.8" ry="2.6" fill="#3f8a8c" stroke="#b8ece6" stroke-width="0.7" transform="rotate(165 45.5 194.0)"/><ellipse cx="18.7" cy="108.3" rx="3.7" ry="2.7" fill="#4f9c9c" stroke="#d6f6f2" stroke-width="0.9" transform="rotate(12 18.7 108.3)"/><ellipse cx="42.7" cy="59.7" rx="5.0" ry="3.9" fill="#6cbab6" stroke="#d6f6f2" stroke-width="0.9" transform="rotate(133 42.7 59.7)"/><ellipse cx="89.1" cy="115.9" rx="4.7" ry="3.3" fill="#6cbab6" stroke="#a0dcd6" stroke-width="0.9" transform="rotate(149 89.1 115.9)"/><ellipse cx="174.8" cy="83.7" rx="3.3" ry="2.5" fill="#357a7e" stroke="#f0fffd" stroke-width="0.7" transform="rotate(152 174.8 83.7)"/><ellipse cx="18.0" cy="147.0" rx="5.0" ry="4.6" fill="#6cbab6" stroke="#f0fffd" stroke-width="0.9" transform="rotate(1 18.0 147.0)"/><ellipse cx="34.1" cy="59.4" rx="3.0" ry="2.6" fill="#4f9c9c" stroke="#d6f6f2" stroke-width="0.9" transform="rotate(135 34.1 59.4)"/><ellipse cx="-22.3" cy="77.4" rx="3.9" ry="2.7" fill="#62b0ae" stroke="#d6f6f2" stroke-width="0.9" transform="rotate(82 -22.3 77.4)"/><ellipse cx="124.4" cy="98.8" rx="6.4" ry="5.0" fill="#357a7e" stroke="#b8ece6" stroke-width="0.7" transform="rotate(76 124.4 98.8)"/><ellipse cx="27.8" cy="39.9" rx="2.6" ry="2.3" fill="#62b0ae" stroke="#d6f6f2" stroke-width="0.7" transform="rotate(161 27.8 39.9)"/><ellipse cx="92.4" cy="109.5" rx="5.7" ry="3.6" fill="#6cbab6" stroke="#f0fffd" stroke-width="0.7" transform="rotate(129 92.4 109.5)"/><ellipse cx="75.5" cy="120.4" rx="4.4" ry="3.7" fill="#4f9c9c" stroke="#b8ece6" stroke-width="0.9" transform="rotate(110 75.5 120.4)"/><ellipse cx="58.5" cy="33.1" rx="5.0" ry="3.2" fill="#357a7e" stroke="#d6f6f2" stroke-width="0.7" transform="rotate(121 58.5 33.1)"/><ellipse cx="89.2" cy="195.6" rx="4.9" ry="3.7" fill="#6cbab6" stroke="#b8ece6" stroke-width="0.9" transform="rotate(35 89.2 195.6)"/><ellipse cx="141.9" cy="68.7" rx="2.5" ry="1.6" fill="#357a7e" stroke="#d6f6f2" stroke-width="1.1" transform="rotate(90 141.9 68.7)"/><ellipse cx="51.1" cy="84.3" rx="4.3" ry="2.8" fill="#357a7e" stroke="#a0dcd6" stroke-width="1.1" transform="rotate(131 51.1 84.3)"/><ellipse cx="45.8" cy="151.0" rx="4.1" ry="3.3" fill="#6cbab6" stroke="#b8ece6" stroke-width="0.9" transform="rotate(100 45.8 151.0)"/><ellipse cx="152.6" cy="124.2" rx="5.9" ry="3.9" fill="#357a7e" stroke="#b8ece6" stroke-width="0.9" transform="rotate(160 152.6 124.2)"/><ellipse cx="59.4" cy="82.5" rx="4.2" ry="3.6" fill="#357a7e" stroke="#d6f6f2" stroke-width="0.7" transform="rotate(156 59.4 82.5)"/><ellipse cx="88.4" cy="133.9" rx="4.7" ry="2.8" fill="#4f9c9c" stroke="#b8ece6" stroke-width="0.7" transform="rotate(61 88.4 133.9)"/><ellipse cx="-7.1" cy="75.0" rx="3.0" ry="2.8" fill="#62b0ae" stroke="#b8ece6" stroke-width="1.1" transform="rotate(153 -7.1 75.0)"/><ellipse cx="-7.1" cy="93.0" rx="3.6" ry="2.5" fill="#4f9c9c" stroke="#a0dcd6" stroke-width="0.7" transform="rotate(65 -7.1 93.0)"/><ellipse cx="50.8" cy="85.2" rx="2.8" ry="1.9" fill="#4f9c9c" stroke="#f0fffd" stroke-width="1.1" transform="rotate(159 50.8 85.2)"/><ellipse cx="-0.2" cy="132.6" rx="4.2" ry="3.8" fill="#4f9c9c" stroke="#f0fffd" stroke-width="0.7" transform="rotate(122 -0.2 132.6)"/><ellipse cx="59.2" cy="99.6" rx="4.4" ry="4.2" fill="#4f9c9c" stroke="#a0dcd6" stroke-width="0.9" transform="rotate(116 59.2 99.6)"/><ellipse cx="71.1" cy="36.2" rx="5.6" ry="5.0" fill="#62b0ae" stroke="#b8ece6" stroke-width="0.9" transform="rotate(44 71.1 36.2)"/><ellipse cx="-14.9" cy="137.7" rx="3.7" ry="2.9" fill="#3f8a8c" stroke="#f0fffd" stroke-width="0.7" transform="rotate(153 -14.9 137.7)"/><ellipse cx="124.3" cy="146.7" rx="4.0" ry="3.5" fill="#357a7e" stroke="#d6f6f2" stroke-width="1.1" transform="rotate(169 124.3 146.7)"/><ellipse cx="-27.8" cy="123.5" rx="4.0" ry="2.8" fill="#6cbab6" stroke="#f0fffd" stroke-width="0.7" transform="rotate(128 -27.8 123.5)"/><ellipse cx="84.0" cy="173.1" rx="4.0" ry="2.9" fill="#357a7e" stroke="#d6f6f2" stroke-width="0.7" transform="rotate(158 84.0 173.1)"/><ellipse cx="-23.7" cy="97.2" rx="5.4" ry="5.2" fill="#62b0ae" stroke="#d6f6f2" stroke-width="0.9" transform="rotate(84 -23.7 97.2)"/><ellipse cx="48.7" cy="77.0" rx="5.0" ry="4.0" fill="#6cbab6" stroke="#b8ece6" stroke-width="1.1" transform="rotate(67 48.7 77.0)"/><ellipse cx="143.1" cy="20.1" rx="4.2" ry="4.2" fill="#357a7e" stroke="#d6f6f2" stroke-width="0.7" transform="rotate(59 143.1 20.1)"/><ellipse cx="18.1" cy="62.1" rx="5.6" ry="5.4" fill="#6cbab6" stroke="#a0dcd6" stroke-width="0.7" transform="rotate(56 18.1 62.1)"/><ellipse cx="132.0" cy="46.9" rx="6.2" ry="6.1" fill="#3f8a8c" stroke="#d6f6f2" stroke-width="0.9" transform="rotate(33 132.0 46.9)"/><ellipse cx="71.6" cy="14.9" rx="3.7" ry="3.5" fill="#62b0ae" stroke="#f0fffd" stroke-width="0.7" transform="rotate(133 71.6 14.9)"/><ellipse cx="49.8" cy="75.4" rx="5.5" ry="3.9" fill="#6cbab6" stroke="#f0fffd" stroke-width="0.7" transform="rotate(73 49.8 75.4)"/><ellipse cx="24.5" cy="74.4" rx="3.8" ry="2.4" fill="#4f9c9c" stroke="#d6f6f2" stroke-width="1.1" transform="rotate(118 24.5 74.4)"/><ellipse cx="137.6" cy="162.3" rx="4.6" ry="2.9" fill="#62b0ae" stroke="#f0fffd" stroke-width="1.1" transform="rotate(22 137.6 162.3)"/><ellipse cx="79.4" cy="86.3" rx="5.6" ry="4.5" fill="#62b0ae" stroke="#b8ece6" stroke-width="1.1" transform="rotate(15 79.4 86.3)"/><ellipse cx="90.8" cy="26.0" rx="6.3" ry="6.2" fill="#4f9c9c" stroke="#b8ece6" stroke-width="0.7" transform="rotate(61 90.8 26.0)"/><ellipse cx="28.5" cy="30.7" rx="2.7" ry="2.3" fill="#4f9c9c" stroke="#d6f6f2" stroke-width="1.1" transform="rotate(176 28.5 30.7)"/><ellipse cx="93.9" cy="111.3" rx="3.8" ry="3.1" fill="#357a7e" stroke="#f0fffd" stroke-width="1.1" transform="rotate(18 93.9 111.3)"/><ellipse cx="77.0" cy="99.2" rx="5.8" ry="4.7" fill="#6cbab6" stroke="#b8ece6" stroke-width="1.1" transform="rotate(93 77.0 99.2)"/><ellipse cx="70.6" cy="53.7" rx="5.9" ry="4.1" fill="#4f9c9c" stroke="#b8ece6" stroke-width="0.7" transform="rotate(21 70.6 53.7)"/><ellipse cx="172.0" cy="68.7" rx="2.6" ry="2.0" fill="#62b0ae" stroke="#d6f6f2" stroke-width="1.1" transform="rotate(32 172.0 68.7)"/><ellipse cx="74.4" cy="127.9" rx="4.4" ry="4.4" fill="#3f8a8c" stroke="#d6f6f2" stroke-width="0.9" transform="rotate(32 74.4 127.9)"/><ellipse cx="44.6" cy="91.6" rx="2.7" ry="2.3" fill="#357a7e" stroke="#a0dcd6" stroke-width="0.9" transform="rotate(85 44.6 91.6)"/><ellipse cx="-21.1" cy="94.3" rx="3.5" ry="2.4" fill="#62b0ae" stroke="#d6f6f2" stroke-width="0.7" transform="rotate(89 -21.1 94.3)"/><ellipse cx="104.0" cy="39.6" rx="4.3" ry="2.9" fill="#4f9c9c" stroke="#a0dcd6" stroke-width="0.9" transform="rotate(104 104.0 39.6)"/><ellipse cx="69.1" cy="164.1" rx="5.4" ry="3.5" fill="#4f9c9c" stroke="#f0fffd" stroke-width="0.7" transform="rotate(86 69.1 164.1)"/><ellipse cx="61.7" cy="108.4" rx="4.0" ry="3.8" fill="#4f9c9c" stroke="#b8ece6" stroke-width="1.1" transform="rotate(46 61.7 108.4)"/><ellipse cx="121.4" cy="171.2" rx="6.2" ry="3.8" fill="#3f8a8c" stroke="#b8ece6" stroke-width="0.7" transform="rotate(80 121.4 171.2)"/><ellipse cx="13.5" cy="149.2" rx="3.2" ry="2.0" fill="#3f8a8c" stroke="#d6f6f2" stroke-width="0.9" transform="rotate(46 13.5 149.2)"/><ellipse cx="136.5" cy="98.6" rx="3.9" ry="3.7" fill="#4f9c9c" stroke="#d6f6f2" stroke-width="0.7" transform="rotate(105 136.5 98.6)"/><ellipse cx="95.7" cy="146.3" rx="5.9" ry="4.6" fill="#3f8a8c" stroke="#f0fffd" stroke-width="0.7" transform="rotate(63 95.7 146.3)"/><ellipse cx="90.6" cy="116.7" rx="3.8" ry="3.7" fill="#62b0ae" stroke="#d6f6f2" stroke-width="1.1" transform="rotate(162 90.6 116.7)"/><ellipse cx="-19.4" cy="80.1" rx="4.1" ry="2.9" fill="#3f8a8c" stroke="#a0dcd6" stroke-width="0.7" transform="rotate(161 -19.4 80.1)"/><ellipse cx="74.7" cy="190.7" rx="6.4" ry="4.0" fill="#6cbab6" stroke="#d6f6f2" stroke-width="0.7" transform="rotate(168 74.7 190.7)"/><ellipse cx="99.3" cy="-3.3" rx="5.5" ry="4.0" fill="#3f8a8c" stroke="#f0fffd" stroke-width="1.1" transform="rotate(138 99.3 -3.3)"/><ellipse cx="131.4" cy="134.2" rx="6.1" ry="5.2" fill="#3f8a8c" stroke="#a0dcd6" stroke-width="0.7" transform="rotate(44 131.4 134.2)"/><ellipse cx="56.4" cy="-4.2" rx="5.4" ry="4.8" fill="#357a7e" stroke="#d6f6f2" stroke-width="0.9" transform="rotate(122 56.4 -4.2)"/><ellipse cx="104.3" cy="90.2" rx="5.6" ry="4.2" fill="#62b0ae" stroke="#d6f6f2" stroke-width="1.1" transform="rotate(159 104.3 90.2)"/><ellipse cx="45.7" cy="119.7" rx="4.7" ry="4.7" fill="#357a7e" stroke="#a0dcd6" stroke-width="0.9" transform="rotate(176 45.7 119.7)"/><ellipse cx="149.5" cy="139.2" rx="6.2" ry="4.6" fill="#6cbab6" stroke="#b8ece6" stroke-width="1.1" transform="rotate(50 149.5 139.2)"/></g><ellipse cx="70" cy="105" rx="45" ry="40" fill="#aee8e2" opacity="0.3" clip-path="url(#cc)"/><rect x="0" y="0" width="181" height="203" fill="url(#tg)" clip-path="url(#cc)"/><g clip-path="url(#cc)" fill="none" stroke-linecap="round" stroke-linejoin="round"><path d="M93.0 75.0 Q96.4 74.9 96.2 74.1 Q97.1 73.8 99.0 75.6 Q97.0 77.2 97.9 80.4 M55.3 92.8 Q55.5 95.2 58.0 95.6 Q54.4 98.7 54.3 98.4 Q55.0 99.0 54.8 100.8 M140.9 125.0 Q140.1 125.5 140.4 127.1 Q143.5 126.5 143.9 129.8 Q144.6 132.9 142.7 134.3 M30.6 68.4 Q32.8 68.8 34.5 71.3 Q35.9 70.7 37.3 72.6 M41.0 68.5 Q42.8 69.5 41.8 71.0 Q42.0 68.8 45.2 68.5 M95.1 144.5 Q93.8 142.7 96.2 140.8 Q93.5 140.2 92.9 139.1 M123.5 54.9 Q125.2 58.1 123.9 57.3 Q126.0 56.2 125.8 58.1 Q125.6 58.7 129.2 58.0 M54.1 186.2 Q52.9 185.0 50.7 184.8 Q50.7 185.1 50.8 181.9 M87.6 104.8 Q87.3 104.8 90.9 103.7 Q89.7 104.4 91.6 106.1 Q92.7 107.0 90.3 110.1 M27.2 181.5 Q28.8 182.1 30.7 182.9 Q31.0 183.0 34.2 185.4 M146.7 62.1 Q145.2 59.2 147.1 59.9 Q145.9 58.6 147.6 55.7 Q145.9 53.0 143.4 54.3 M-10.4 57.6 Q-11.4 55.7 -12.3 56.0 Q-10.1 54.9 -10.2 54.0 M57.2 17.4 Q56.2 17.1 54.4 15.9 Q53.3 16.3 53.0 20.4 Q54.2 20.7 53.9 23.8 M34.3 105.6 Q32.7 105.3 32.6 102.9 Q29.7 103.5 30.1 102.7 M23.5 170.7 Q27.2 168.9 28.4 170.1 Q31.6 170.5 31.2 169.0 Q32.7 170.5 32.7 171.8 M138.6 117.0 Q142.2 116.6 142.3 119.3 Q144.1 123.0 144.6 123.3 Q141.9 125.6 142.5 124.7 M80.9 140.1 Q79.1 141.9 77.1 142.7 Q74.9 145.8 75.7 146.0 Q74.0 147.8 75.4 149.4 M11.9 26.6 Q15.0 30.4 14.3 30.8 Q14.4 29.9 11.5 32.6 M98.4 181.9 Q97.6 182.9 100.7 184.7 Q104.1 182.7 103.7 182.6 M72.6 160.7 Q70.8 161.5 72.7 165.1 Q76.3 165.4 76.7 164.8 Q77.0 162.7 75.8 162.6 M38.7 -3.5 Q38.9 -2.1 39.6 0.7 Q37.9 0.5 36.9 2.4 Q39.1 3.5 38.9 3.7 M2.4 134.6 Q5.2 135.8 4.5 136.8 Q6.4 137.8 6.1 134.8 Q6.1 135.8 3.8 134.0 M67.5 87.0 Q67.7 86.8 70.7 90.3 Q70.9 93.5 69.8 95.0 Q72.2 94.8 72.3 98.1" stroke="#b9e8e4" stroke-width="0.7"/><path d="M62.7 119.4 Q63.0 120.1 61.0 123.9 Q61.8 124.7 60.6 127.0 Q60.9 125.3 64.1 127.2 M83.4 162.5 Q84.1 162.2 83.7 159.8 Q82.9 159.8 84.3 157.9 M66.6 51.1 Q65.5 51.1 67.7 48.2 Q69.7 48.1 70.5 47.5 Q73.0 48.9 73.7 48.8 M108.4 114.4 Q106.4 114.5 104.6 111.8 Q105.3 112.5 106.7 109.4 M27.8 0.1 Q28.0 -0.2 30.5 2.3 Q30.5 4.9 28.6 5.6 M116.7 55.4 Q119.2 56.3 119.9 55.7 Q121.9 54.4 124.2 56.1 M57.3 45.7 Q59.8 45.4 60.1 47.7 Q60.9 50.0 61.8 48.9 Q63.3 50.1 63.6 51.2 M61.3 148.2 Q61.6 145.3 62.7 144.2 Q64.2 144.9 66.7 146.4 M68.3 67.5 Q68.1 67.3 69.4 71.0 Q68.8 70.7 71.7 72.9 M31.8 142.3 Q30.7 142.5 33.0 139.2 Q33.9 138.3 34.3 136.7 Q34.2 136.2 34.5 132.3 M71.4 178.6 Q70.6 174.6 70.6 174.1 Q70.9 171.9 68.2 170.9 M128.0 29.9 Q129.4 31.1 128.1 32.1 Q130.1 33.2 132.1 30.8 M21.9 55.7 Q23.5 56.6 23.8 60.3 Q24.3 62.9 21.1 61.9 Q19.9 63.5 22.3 63.7 M94.7 41.5 Q93.3 43.5 93.0 45.2 Q92.0 48.2 93.0 47.7 Q93.2 50.5 91.0 50.7 M122.0 175.1 Q121.1 173.9 119.4 173.9 Q119.7 173.0 117.5 170.0 Q116.9 171.0 114.9 171.0 M50.6 48.2 Q51.8 49.0 52.9 47.6 Q51.5 44.0 54.0 44.0 M77.1 79.5 Q76.7 83.3 77.5 83.8 Q81.2 84.0 81.1 83.9 M125.9 158.0 Q125.4 160.3 123.4 159.0 Q121.0 157.9 119.4 156.1 Q116.8 155.8 116.4 157.2 M43.1 112.9 Q43.5 114.5 45.7 114.2 Q49.1 112.8 50.5 115.4 Q49.3 118.0 49.0 118.4 M103.0 96.9 Q104.2 96.5 106.7 96.8 Q107.0 97.6 110.9 99.1 M88.1 169.8 Q86.3 172.6 87.2 172.8 Q85.8 174.6 83.9 174.4 M82.7 127.2 Q79.2 127.2 78.2 126.7 Q78.5 128.5 76.5 130.8 Q74.2 130.8 72.7 133.9 M9.8 27.2 Q10.4 28.8 12.1 31.6 Q12.5 31.6 15.0 31.5 Q17.9 30.3 18.2 30.3 M42.6 9.9 Q42.6 10.3 44.0 7.1 Q46.5 7.1 46.3 8.4 Q47.0 8.0 47.6 4.2 M-1.5 98.9 Q-1.1 97.8 -4.3 98.7 Q-6.2 99.2 -6.2 101.7 Q-3.0 104.5 -1.8 103.6 M169.2 129.7 Q169.9 132.4 167.3 131.2 Q169.9 130.8 169.7 133.6 M97.6 110.2 Q98.4 109.8 95.8 109.2 Q96.9 109.6 95.0 107.1 Q95.1 105.9 96.7 104.6 M-27.1 120.8 Q-28.2 119.0 -27.4 116.3 Q-28.8 117.0 -27.9 113.7 Q-25.0 114.1 -24.7 112.9 M66.4 88.6 Q67.5 89.4 71.0 87.7 Q72.1 90.5 72.8 89.5 M114.5 118.5 Q112.9 119.0 112.7 120.1 Q109.7 120.6 110.4 122.1 Q106.4 124.6 106.4 124.6 M87.2 49.3 Q86.0 46.7 83.8 46.6 Q83.3 47.4 81.8 47.4 Q78.9 45.1 78.8 46.5" stroke="#9ad8d2" stroke-width="1.1"/><path d="M159.4 91.2 Q159.7 91.6 163.3 92.7 Q166.0 92.6 165.5 93.4 Q166.5 92.1 167.2 92.0 M-28.4 116.2 Q-25.8 115.7 -26.1 117.2 Q-25.6 117.7 -21.3 116.6 M59.5 153.9 Q61.0 152.9 63.4 153.7 Q65.0 151.0 65.0 151.6 M14.7 165.2 Q13.4 164.2 10.8 165.0 Q11.2 165.1 7.9 165.3 M26.5 84.1 Q23.9 81.7 22.0 82.6 Q22.6 80.6 21.4 80.0 Q22.2 77.2 19.8 76.2 M35.2 104.6 Q36.2 103.0 34.5 100.9 Q35.7 100.5 35.1 97.0 M64.8 84.7 Q63.5 83.1 61.9 83.6 Q59.6 80.1 59.8 80.0 M59.6 194.9 Q60.1 197.3 56.5 197.0 Q58.0 199.2 59.5 199.2 M41.7 146.1 Q40.9 145.5 38.1 146.4 Q37.0 146.6 33.2 147.5 M110.4 151.2 Q111.0 152.1 110.9 149.3 Q108.8 149.5 109.4 146.6 M78.2 -5.9 Q75.9 -8.0 76.0 -8.6 Q73.7 -10.3 73.3 -9.5 M62.7 75.5 Q63.2 77.5 67.6 76.0 Q69.2 74.5 70.8 75.2 Q71.3 78.4 71.4 78.7 M82.0 146.0 Q79.6 145.9 79.5 145.5 Q79.2 148.0 76.2 148.8 Q77.6 150.9 77.1 151.8 M96.5 126.8 Q98.3 126.3 99.9 129.1 Q100.7 130.6 100.4 133.9 M-3.1 38.7 Q-4.3 37.6 -5.7 37.7 Q-2.9 34.8 -3.0 34.4 M45.8 174.8 Q45.4 174.2 46.9 172.9 Q45.4 170.5 44.7 171.0 Q44.7 172.1 41.4 171.5 M94.2 150.9 Q94.1 150.2 92.3 149.2 Q92.5 148.9 94.0 147.2 Q91.1 144.3 91.8 144.4 M-3.5 153.3 Q-0.7 154.4 1.0 155.0 Q-0.0 154.7 -1.3 158.0 M1.4 23.8 Q-1.5 22.9 -0.8 24.9 Q0.5 27.7 1.7 27.5 M116.9 54.8 Q120.1 52.4 119.8 53.3 Q121.8 52.4 123.8 52.6 M115.2 83.3 Q112.3 83.0 112.7 82.1 Q111.6 82.2 113.3 79.1 M82.7 57.0 Q84.2 56.0 85.6 54.1 Q86.2 53.2 88.5 56.0" stroke="#dff7f4" stroke-width="1.1"/><path d="M96.4 80.1 Q94.6 79.4 92.9 78.7 Q88.7 77.5 88.2 78.5 M159.5 64.2 Q157.9 64.2 157.0 66.4 Q157.5 63.6 154.7 64.5 Q156.2 65.5 155.9 62.9 M150.2 45.8 Q151.1 44.2 148.0 46.1 Q147.9 48.4 146.9 50.9 Q146.6 48.2 142.7 49.3 M90.0 3.8 Q91.2 1.5 90.6 1.1 Q91.9 0.3 94.0 1.8 Q94.1 4.9 94.3 4.3 M78.7 131.0 Q76.5 129.4 74.1 130.2 Q72.9 130.2 70.1 128.0 Q67.7 130.1 68.0 131.4 M-28.8 63.5 Q-27.4 62.0 -28.6 60.6 Q-32.1 58.5 -33.2 58.9 M44.5 10.1 Q45.2 13.1 45.3 12.1 Q44.1 11.8 46.8 14.3 M108.1 42.6 Q107.8 42.7 107.7 45.1 Q109.3 46.0 112.1 44.3 M46.3 32.1 Q46.1 28.0 45.8 27.5 Q46.4 27.0 48.5 28.0 M83.7 41.4 Q84.9 40.8 83.5 37.1 Q81.7 36.3 80.4 37.6 Q80.8 41.8 80.8 42.5 M40.7 63.1 Q41.2 65.2 37.7 64.1 Q36.2 60.9 35.1 61.3 Q35.5 61.7 33.4 59.9 M37.6 122.2 Q36.7 124.9 37.6 125.8 Q39.2 127.2 40.0 127.7 M100.0 194.0 Q102.3 194.1 102.5 196.3 Q105.8 196.3 106.0 198.2 M18.3 88.4 Q15.8 87.7 16.3 86.5 Q16.8 86.0 13.7 88.1 Q14.1 91.7 14.4 92.1 M106.3 85.2 Q107.0 84.9 108.9 83.6 Q106.1 83.1 106.6 81.5 Q103.7 83.1 102.9 83.2 M94.2 100.4 Q92.0 102.7 92.8 105.0 Q92.0 107.2 89.4 105.4 M88.1 80.0 Q88.5 79.1 90.1 75.6 Q89.0 74.6 87.1 73.9 M124.5 142.1 Q123.4 141.6 123.8 143.9 Q123.3 145.1 124.5 145.8 Q125.8 149.7 125.3 150.2 M20.1 114.2 Q21.8 113.2 20.3 109.4 Q20.2 108.5 18.7 106.6 M-20.2 126.8 Q-18.9 125.7 -17.9 123.0 Q-19.1 119.2 -20.5 119.2 M-16.7 150.7 Q-13.0 152.1 -12.4 151.3 Q-11.4 152.1 -10.6 153.6 M111.6 65.3 Q111.0 66.0 114.3 65.9 Q113.2 63.5 114.3 63.5 M108.9 150.7 Q111.2 151.8 110.8 155.2 Q113.1 155.5 113.2 153.3 M52.9 135.6 Q51.7 135.4 49.9 139.2 Q48.9 140.1 47.6 140.0 Q46.4 136.6 47.1 136.4 M163.4 116.9 Q160.8 117.6 160.4 118.8 Q158.6 119.0 158.5 116.7 M153.6 80.6 Q151.3 77.5 152.0 78.3 Q150.8 77.1 149.8 79.8 Q149.4 80.0 147.8 76.6 M45.8 101.7 Q45.1 101.4 41.0 103.0 Q38.8 101.5 38.8 99.9 Q38.7 99.1 34.8 100.6 M52.6 173.0 Q52.1 171.9 54.8 169.9 Q53.8 167.0 55.6 166.7 Q55.8 168.0 58.2 168.0 M59.6 69.3 Q58.6 65.9 57.8 65.3 Q56.9 66.0 55.9 64.4 Q53.5 68.7 55.1 69.2 M93.6 124.5 Q93.3 123.4 91.1 121.6 Q91.8 123.2 89.5 125.0 Q87.7 126.1 87.2 123.2" stroke="#f2fffd" stroke-width="0.9"/><path d="M64.4 72.6 Q65.3 74.1 63.0 74.2 Q63.7 75.1 64.2 78.2 M62.5 14.4 Q59.5 14.3 58.7 12.6 Q60.8 11.3 59.4 10.7 Q59.7 10.0 61.4 11.0 M3.7 135.8 Q3.9 135.3 7.8 137.5 Q7.6 134.2 11.2 134.6 Q13.2 134.6 12.4 131.7 M14.3 118.7 Q15.3 122.1 13.3 121.7 Q12.9 122.4 10.5 123.0 M30.1 85.5 Q30.5 86.3 30.3 83.4 Q30.8 81.4 28.2 81.5 M70.1 96.2 Q69.8 97.0 65.8 95.9 Q62.8 95.8 62.8 94.0 M85.4 195.7 Q85.1 197.9 84.0 200.0 Q84.4 202.4 85.2 202.1 M-18.8 71.2 Q-17.6 72.4 -15.0 69.6 Q-13.2 67.0 -13.1 68.3 M44.6 89.1 Q45.5 86.5 42.6 86.4 Q41.4 85.2 38.9 85.5 Q38.9 84.0 35.5 86.2 M66.8 18.5 Q66.8 17.0 65.4 16.3 Q62.8 17.0 61.1 14.7 M122.7 175.9 Q123.0 175.4 120.8 171.5 Q120.5 172.3 122.9 170.7 M36.6 112.5 Q35.5 113.0 34.0 112.2 Q33.6 111.1 31.4 109.1 M82.5 152.6 Q83.1 152.0 85.5 155.1 Q86.5 155.9 83.6 157.2 Q81.7 159.1 82.6 159.1 M87.0 23.3 Q88.8 21.5 90.5 22.4 Q91.2 21.8 88.1 18.4 M123.8 158.0 Q123.4 159.5 122.8 162.6 Q120.0 164.6 120.6 165.2 M11.6 144.3 Q14.9 143.8 14.3 143.6 Q16.0 144.2 15.6 141.5 Q11.8 142.4 11.7 140.6 M71.6 29.0 Q70.9 28.6 66.9 29.3 Q67.4 27.6 66.9 24.6 M125.6 83.2 Q125.3 84.1 126.0 85.3 Q123.0 85.9 123.6 86.3 M-8.6 141.4 Q-6.4 140.3 -5.8 137.3 Q-8.4 136.3 -8.3 134.1 M67.6 0.7 Q70.5 -0.3 71.2 0.4 Q71.2 -1.5 74.6 -1.7 M26.4 176.2 Q23.5 175.9 23.7 178.7 Q22.1 175.0 22.2 175.3 M104.9 189.6 Q107.1 187.3 106.2 185.0 Q108.5 185.9 109.0 183.9 Q110.2 184.9 109.5 186.3" stroke="#b9e8e4" stroke-width="1.1"/><path d="M69.2 36.5 Q67.2 33.4 67.1 32.5 Q65.5 29.4 67.1 29.8 Q69.3 28.1 69.3 25.7 M139.5 90.1 Q139.5 86.9 139.5 87.5 Q138.0 85.0 139.7 85.4 M21.5 110.1 Q20.1 113.0 18.9 112.2 Q16.6 113.5 16.8 113.4 Q15.3 113.8 13.9 114.9 M18.8 66.1 Q20.2 65.9 21.2 68.6 Q20.9 67.7 18.6 70.7 M-28.1 108.2 Q-27.8 110.1 -25.7 110.8 Q-25.4 109.2 -23.2 109.3 M47.0 170.0 Q46.7 169.1 46.6 167.9 Q43.3 166.1 42.4 166.5 Q42.2 162.8 41.9 162.2 M48.0 62.4 Q46.3 62.7 44.9 61.3 Q44.1 63.9 44.9 63.4 M83.7 148.2 Q83.5 147.6 86.9 148.5 Q87.4 147.2 91.1 149.2 Q91.6 150.9 90.4 151.3 M155.4 106.7 Q157.8 108.6 157.0 108.0 Q158.6 110.0 157.7 110.8 M168.3 107.0 Q166.6 107.1 166.1 108.1 Q166.2 110.5 163.1 109.7 M35.3 68.4 Q38.1 68.9 38.3 67.4 Q40.3 65.0 38.4 63.5 M25.9 122.2 Q24.4 121.4 26.9 120.3 Q24.7 120.7 25.6 118.7 M1.2 102.4 Q3.7 101.6 3.1 104.0 Q4.8 106.0 5.1 107.4 M43.7 55.2 Q46.2 57.1 46.7 57.9 Q44.8 61.0 46.6 61.7 Q44.9 63.7 44.1 61.9 M102.7 155.2 Q102.4 159.3 102.6 159.7 Q103.7 161.3 105.2 159.3 M112.0 6.1 Q114.5 4.0 116.6 5.7 Q118.2 8.0 120.2 6.3 M48.7 133.6 Q46.1 134.4 45.5 131.6 Q43.9 130.0 43.5 127.7 Q45.2 125.1 44.8 124.3 M55.9 168.2 Q56.3 170.3 54.7 171.4 Q58.4 172.2 58.3 171.7 M71.9 71.6 Q72.8 69.1 71.7 66.9 Q73.7 64.9 73.9 65.3 Q74.7 65.8 75.0 68.8 M-11.4 103.3 Q-11.3 102.2 -8.9 99.8 Q-8.1 100.5 -4.8 100.8 Q-4.5 97.4 -5.5 95.9 M-3.0 32.3 Q-2.2 31.6 -0.7 32.2 Q-1.0 29.2 -0.5 29.7 M29.2 46.8 Q27.6 47.4 26.5 47.7 Q26.2 47.2 23.2 50.2 M55.6 23.0 Q57.6 22.6 57.8 24.7 Q55.6 23.9 55.4 26.8 M24.2 89.0 Q22.6 89.0 20.2 87.3 Q19.6 84.1 21.6 83.1 Q20.8 81.9 21.4 78.2 M10.2 103.2 Q7.1 101.0 7.8 99.8 Q9.9 99.9 10.2 96.8 M3.9 175.7 Q3.4 175.8 4.0 173.0 Q4.9 170.9 5.3 170.5 M129.7 159.5 Q128.2 157.6 127.3 159.2 Q127.2 160.6 124.4 161.3 Q125.8 160.7 123.3 157.0 M67.2 179.9 Q67.6 181.8 71.3 180.8 Q72.0 182.9 70.0 185.0 Q73.1 185.9 72.4 187.8 M133.9 168.3 Q134.4 167.8 132.0 165.3 Q132.5 164.1 133.2 163.5 Q133.5 164.8 137.8 163.2 M88.1 162.8 Q87.9 160.7 85.7 162.1 Q86.8 160.1 85.9 157.2 Q83.8 156.4 83.6 154.9 M143.3 123.3 Q143.8 125.9 144.8 127.8 Q145.3 129.7 147.5 131.6 Q146.4 131.3 145.9 134.3 M122.7 85.3 Q121.7 84.8 120.7 85.6 Q121.0 82.7 119.8 83.6 Q121.6 83.8 119.9 80.1 M69.2 133.4 Q68.0 137.2 69.0 137.1 Q65.5 136.8 64.4 137.8 Q63.9 137.8 64.8 140.6 M82.0 25.8 Q81.9 24.9 78.2 23.8 Q76.6 21.9 76.5 22.0 M84.6 118.7 Q85.1 117.7 81.6 120.4 Q83.8 122.6 83.5 122.2 Q85.4 122.9 88.1 122.8 M115.2 85.6 Q117.1 86.6 117.7 87.3 Q116.4 83.4 119.0 83.0 M112.5 75.1 Q111.7 74.9 109.1 76.3 Q110.6 77.7 110.9 78.8 Q112.7 76.7 113.1 77.7 M-28.8 62.6 Q-30.5 61.1 -30.3 59.0 Q-30.5 59.5 -30.7 56.2" stroke="#f2fffd" stroke-width="1.1"/><path d="M128.6 86.3 Q128.5 85.8 131.6 86.8 Q133.4 85.7 134.0 83.7 Q133.5 82.7 135.5 85.0 M20.1 178.7 Q20.4 179.8 22.1 177.0 Q21.5 176.4 24.5 174.7 Q24.1 174.1 23.3 172.7 M-2.1 156.7 Q0.6 154.5 2.1 155.3 Q3.6 151.8 3.1 152.0 Q3.2 153.9 7.1 153.3 M44.5 66.6 Q46.0 65.9 45.4 62.7 Q46.6 61.6 47.3 61.4 Q49.9 64.7 50.0 64.1 M-7.0 129.8 Q-5.4 127.7 -4.0 128.2 Q-0.3 130.4 -0.3 128.9 Q0.6 128.7 1.4 130.3 M46.5 144.0 Q44.7 145.0 45.7 146.7 Q45.6 148.1 45.6 150.0 Q44.5 150.7 43.2 151.2 M-5.8 168.2 Q-4.9 167.7 -1.7 168.3 Q-3.0 165.4 -2.8 165.5 Q-6.0 168.0 -5.8 166.9 M21.5 8.7 Q23.3 9.9 22.4 13.2 Q20.2 14.6 18.5 14.4 Q16.3 14.8 16.3 17.5 M3.5 28.0 Q3.4 28.0 2.5 31.2 Q5.0 31.5 6.5 33.4 Q5.8 35.8 5.5 36.0 M62.5 163.0 Q62.6 160.9 62.9 160.2 Q63.5 157.6 65.7 158.7 M118.2 20.9 Q117.5 20.9 118.0 24.7 Q118.9 23.5 122.0 25.3 Q122.5 27.6 120.5 30.0 M18.2 97.8 Q18.8 97.4 20.4 99.8 Q19.5 102.7 21.5 101.5 Q23.5 102.5 22.5 104.4 M-11.0 30.1 Q-11.6 31.4 -15.8 28.7 Q-17.7 27.4 -15.8 26.4 Q-15.6 27.9 -19.1 25.9 M1.4 125.2 Q3.1 127.3 3.5 126.1 Q2.0 123.7 4.3 123.8 M64.5 -0.6 Q63.9 0.5 66.8 0.2 Q66.6 2.6 68.2 2.2 Q70.9 1.3 71.0 -0.9 M59.2 122.0 Q60.9 119.3 61.5 118.0 Q63.2 118.4 64.4 121.8 Q63.8 119.6 66.5 120.8 M28.9 82.4 Q31.8 80.4 30.6 77.8 Q33.7 80.5 34.4 80.5 M126.3 170.9 Q129.9 170.3 129.9 168.0 Q127.0 167.9 127.5 165.8 Q127.7 167.0 125.2 165.9 M16.0 122.0 Q16.6 120.4 16.2 118.2 Q19.2 117.6 19.9 116.3 M60.0 86.7 Q59.4 86.6 55.7 86.3 Q55.5 88.3 52.5 88.6 M37.3 148.6 Q36.6 149.0 33.7 147.6 Q31.8 150.5 33.3 150.5 M25.7 3.0 Q23.7 6.0 25.6 7.2 Q26.8 7.5 25.2 10.9 Q23.8 13.8 24.4 15.7 M-3.2 166.8 Q-1.3 163.3 -0.7 162.5 Q2.1 160.5 1.7 159.9 Q2.8 157.9 3.0 156.0 M78.7 12.0 Q76.8 9.5 77.0 10.2 Q76.0 10.2 73.0 10.7 Q71.8 10.3 69.1 10.5 M7.4 61.0 Q7.6 61.6 6.4 63.2 Q5.3 62.9 3.8 60.2 Q1.8 60.3 1.1 56.9 M100.7 185.8 Q101.6 184.5 104.2 185.3 Q106.4 189.1 106.0 189.0 M67.0 20.8 Q65.2 20.0 63.3 20.8 Q63.4 20.2 60.0 21.3 Q59.0 18.1 57.1 17.4 M162.9 118.9 Q162.3 118.3 164.5 120.6 Q166.0 123.7 165.1 123.9 M36.9 73.1 Q36.2 75.3 34.8 73.7 Q35.3 76.3 36.7 76.5 M2.8 51.1 Q3.3 50.0 -0.1 52.3 Q0.9 54.4 1.7 55.8 M-1.5 60.7 Q-1.1 63.9 -0.6 64.9 Q0.2 67.6 -2.1 67.0 Q-0.2 69.3 0.3 68.6 M32.1 91.4 Q30.6 91.6 31.8 94.8 Q33.7 94.8 33.9 94.6" stroke="#f2fffd" stroke-width="0.7"/><path d="M81.6 36.5 Q80.9 36.5 81.5 40.2 Q80.6 39.5 78.5 42.5 Q76.0 39.8 73.9 40.8 M104.3 102.5 Q103.1 101.1 99.8 102.3 Q99.8 102.8 98.8 106.1 M60.1 190.0 Q59.5 188.7 59.0 187.2 Q56.1 187.9 55.9 187.1 Q55.6 186.9 51.9 187.5 M151.1 114.1 Q152.2 115.4 153.0 115.7 Q151.0 116.6 151.6 118.1 M76.5 121.7 Q73.7 122.5 74.8 122.9 Q74.9 125.5 72.2 125.5 M16.2 161.5 Q14.8 161.3 13.1 163.4 Q12.9 164.5 14.2 165.9 Q11.7 167.1 11.4 166.4 M34.7 47.2 Q33.9 45.4 36.1 44.4 Q35.4 45.2 36.2 42.3 M32.0 106.3 Q33.9 109.6 33.1 110.3 Q30.3 109.9 31.6 112.6 Q31.4 113.3 34.7 114.2 M121.8 113.5 Q121.9 112.8 118.2 111.9 Q118.7 110.1 115.4 111.4 Q112.4 112.1 113.1 115.3 M-3.3 55.3 Q-3.1 58.4 -4.0 58.3 Q-6.8 56.7 -7.8 55.7 Q-10.8 54.1 -10.4 53.5 M89.4 164.8 Q90.1 166.2 90.6 167.1 Q87.9 168.6 88.7 171.6 M96.9 171.4 Q99.9 172.3 101.2 171.7 Q102.6 169.0 101.9 168.7 M68.9 79.6 Q70.3 78.3 72.2 76.7 Q75.4 73.2 75.0 73.4 Q77.5 74.6 78.6 72.7 M148.1 54.4 Q145.7 52.9 146.3 51.5 Q144.7 49.1 143.2 48.8 M76.9 198.5 Q76.3 198.5 75.2 197.0 Q72.6 198.7 70.3 196.4 Q69.3 195.0 69.2 192.3 M-7.5 160.4 Q-4.1 160.0 -2.7 160.1 Q-2.4 159.0 -0.5 159.8 M71.4 11.7 Q74.2 9.9 73.5 10.4 Q77.0 10.4 78.3 10.7 Q78.5 11.4 81.4 9.9 M156.4 125.3 Q153.4 126.1 153.5 128.6 Q153.3 127.7 151.6 127.5 Q151.0 127.7 147.5 130.2 M129.8 33.9 Q129.0 30.2 130.6 29.5 Q132.2 28.3 134.1 29.6 M108.5 153.8 Q108.1 156.7 108.3 156.4 Q108.9 155.1 111.5 156.1 M51.9 97.5 Q49.7 98.4 50.2 102.0 Q46.4 104.0 46.5 102.3 M164.3 69.5 Q166.4 70.1 165.5 71.8 Q165.9 72.4 167.9 70.2 M81.6 105.4 Q82.1 108.1 80.5 110.2 Q78.8 110.4 77.9 111.7 Q74.5 113.0 73.8 114.4 M84.5 106.9 Q83.6 106.5 85.1 109.2 Q81.8 110.0 81.4 110.7 M113.8 16.0 Q113.6 14.1 115.9 14.0 Q116.8 12.3 119.5 11.3 M19.1 82.1 Q19.1 82.6 16.6 81.0 Q17.7 80.1 16.4 76.9 M46.1 0.4 Q45.7 -1.4 49.1 -2.4 Q49.7 -3.7 50.3 -4.5 M59.9 93.6 Q56.8 89.9 56.9 90.0 Q57.0 88.4 56.6 87.2 Q59.0 87.8 61.1 86.7 M80.1 64.5 Q81.5 64.6 82.5 62.8 Q80.2 59.7 81.9 60.6 Q79.2 59.4 77.1 60.0 M151.9 82.3 Q153.4 82.6 153.0 86.8 Q153.8 89.8 154.5 91.5 M-32.0 91.8 Q-30.6 91.9 -29.9 91.2 Q-27.0 89.1 -26.8 89.1 Q-27.7 87.9 -25.1 85.2" stroke="#b9e8e4" stroke-width="0.9"/><path d="M93.4 17.0 Q94.9 16.0 95.9 13.1 Q96.3 11.9 96.4 10.9 M134.2 56.6 Q136.4 55.2 135.5 53.8 Q134.1 53.7 131.5 52.1 Q128.1 53.9 128.8 56.2 M151.4 135.2 Q152.5 136.9 150.0 137.3 Q149.0 135.8 145.9 137.0 M-10.4 58.6 Q-11.4 56.8 -10.6 53.7 Q-10.5 51.8 -7.4 51.8 M102.8 179.2 Q104.3 179.0 103.3 174.9 Q101.0 174.5 100.3 174.9 M147.6 75.8 Q148.1 72.4 149.6 72.3 Q150.9 68.3 150.9 68.0 M16.6 60.6 Q15.4 61.3 15.5 58.2 Q14.0 56.7 12.3 58.9 M-30.6 122.5 Q-32.0 119.4 -33.3 120.0 Q-33.1 116.4 -33.0 115.5 M94.8 117.7 Q93.0 118.4 92.9 119.9 Q93.0 120.3 92.7 122.3 M41.2 99.9 Q39.5 99.7 37.6 102.5 Q39.8 103.0 38.9 106.7 Q39.0 107.1 41.7 105.6 M95.8 86.1 Q96.3 85.7 99.6 83.7 Q100.6 82.8 101.8 84.0 Q102.8 81.7 102.5 79.7 M158.9 64.2 Q160.7 60.7 159.2 60.6 Q162.5 61.3 162.7 58.3 Q164.4 58.0 166.4 58.2 M46.2 115.5 Q45.9 113.0 44.9 113.5 Q44.5 116.1 42.3 114.7 Q44.2 116.4 42.3 117.5 M15.7 35.8 Q17.8 36.2 18.1 33.5 Q18.9 31.6 22.0 32.0 M58.7 76.1 Q59.2 73.7 58.1 73.0 Q61.5 74.1 61.5 73.0 M72.4 165.6 Q70.9 162.3 71.8 161.8 Q70.9 159.9 70.3 158.1 M19.5 31.7 Q21.8 31.0 23.0 29.9 Q24.6 27.7 25.2 28.8 M3.4 98.6 Q0.3 98.8 0.4 97.7 Q-1.7 95.4 -0.2 93.8 M53.0 91.8 Q54.4 91.9 52.6 89.7 Q52.5 87.8 54.1 88.3 Q54.7 88.1 56.1 90.2 M14.8 125.4 Q12.8 124.7 13.3 123.8 Q10.2 123.3 9.4 121.6 M171.6 100.5 Q171.1 97.5 174.1 97.5 Q173.8 97.2 176.8 97.5 Q177.5 99.7 179.7 98.3 M34.8 25.4 Q33.1 25.3 34.3 23.2 Q31.7 22.5 31.7 20.2 M70.1 126.9 Q68.3 125.9 69.0 124.6 Q68.0 124.3 67.0 124.6 M24.2 8.0 Q22.7 9.9 23.0 11.3 Q23.6 13.8 23.8 13.2 M80.1 32.1 Q82.1 32.6 82.5 35.3 Q80.4 34.9 79.5 37.6 Q78.9 37.2 80.0 39.7 M97.3 72.4 Q99.5 74.1 98.5 76.3 Q102.1 75.7 101.6 78.5 Q102.3 79.2 102.6 82.9 M125.9 108.5 Q126.7 108.5 128.8 104.6 Q128.9 104.2 125.9 103.7 Q125.3 100.6 128.0 99.8 M93.0 142.9 Q90.7 142.7 90.7 145.4 Q91.6 143.4 89.1 143.8 M3.0 145.0 Q2.4 143.0 5.2 143.9 Q2.9 141.5 2.4 140.6 M121.3 17.4 Q119.9 19.0 116.8 18.6 Q115.4 15.7 117.1 15.7 Q117.3 14.1 120.2 15.4 M60.7 50.5 Q59.0 48.0 60.9 48.3 Q61.2 48.2 63.5 49.2 M20.9 62.1 Q18.7 62.1 19.4 59.1 Q16.5 58.2 15.8 60.3 Q17.1 61.2 16.0 62.6 M141.1 52.1 Q143.4 51.3 143.8 48.9 Q147.8 50.4 148.0 50.0 Q149.2 49.9 150.3 48.7 M48.9 117.4 Q49.3 117.1 49.0 115.1 Q51.6 112.9 51.2 113.5 Q51.6 112.5 54.2 112.5" stroke="#dff7f4" stroke-width="0.9"/><path d="M22.3 73.2 Q20.0 73.1 17.7 72.6 Q18.6 74.0 15.6 75.1 M44.1 174.0 Q41.8 175.9 41.7 175.2 Q40.9 174.9 37.4 174.8 M44.2 130.0 Q46.7 128.2 46.2 129.9 Q48.9 127.8 48.1 128.5 Q48.0 129.3 46.8 126.5 M99.0 56.1 Q98.8 56.5 96.3 55.8 Q97.4 56.1 95.5 59.9 Q98.9 59.8 99.2 59.3 M149.1 125.9 Q145.9 125.2 146.6 127.5 Q146.5 126.3 142.5 127.0 M130.5 161.5 Q133.1 159.7 133.5 158.2 Q136.0 159.0 135.1 156.9 M98.8 195.7 Q101.5 196.1 102.7 192.7 Q100.9 189.9 102.7 190.0 M29.3 98.1 Q26.0 96.8 25.2 96.1 Q26.1 93.1 26.1 92.2 Q26.9 92.3 29.5 92.3 M83.5 61.4 Q84.4 64.1 85.0 65.7 Q85.6 68.3 87.4 69.1 M37.8 161.8 Q39.0 163.4 40.4 164.9 Q41.4 164.2 38.5 167.0 M159.5 59.5 Q159.8 56.5 161.1 57.3 Q164.5 57.4 164.4 57.2 Q166.4 56.8 168.4 57.8 M107.0 186.4 Q104.6 186.8 105.1 188.3 Q105.1 190.6 102.1 189.0 M87.0 182.3 Q85.6 181.2 83.4 181.1 Q82.7 179.3 82.2 176.3 Q83.7 173.2 81.9 173.6 M136.7 129.1 Q139.0 126.8 139.2 128.0 Q139.6 123.7 138.6 123.1 Q140.5 121.7 141.8 122.4 M44.4 87.8 Q45.2 89.4 42.8 90.2 Q40.0 93.3 39.4 93.1 M-17.7 145.3 Q-18.6 141.9 -21.2 142.1 Q-21.9 142.2 -22.2 144.0 M111.4 30.1 Q112.5 29.7 116.0 30.6 Q116.2 32.2 118.0 30.8 M92.0 39.8 Q92.7 43.5 94.1 43.7 Q93.0 45.9 94.2 46.5 Q91.3 45.6 90.2 45.1 M144.7 87.6 Q147.8 88.2 147.5 89.8 Q147.0 88.8 150.2 87.9 M56.9 94.3 Q54.6 97.1 53.5 96.8 Q53.3 98.3 55.9 98.4 M71.3 82.3 Q69.5 83.4 67.9 83.4 Q66.6 82.5 66.5 81.5 Q66.0 83.9 64.4 82.4 M124.3 131.4 Q123.3 133.0 121.5 134.5 Q121.9 135.4 119.3 136.5 M72.3 103.7 Q72.1 105.3 73.4 107.2 Q71.4 106.8 69.4 109.1 Q67.6 108.5 66.9 110.1 M-21.8 133.1 Q-20.7 136.0 -21.0 136.7 Q-18.2 138.3 -18.4 139.8 M98.8 29.8 Q98.2 29.0 98.4 31.9 Q95.8 31.9 94.7 30.0 Q96.3 33.2 94.3 33.4 M111.9 46.2 Q110.7 46.7 109.6 50.6 Q106.5 51.2 105.0 48.8 M52.1 106.4 Q53.0 105.7 54.0 104.5 Q54.6 102.9 56.9 103.0 M-28.4 86.3 Q-27.8 86.7 -26.4 89.1 Q-26.8 90.3 -24.2 88.0 M47.8 160.0 Q45.5 161.1 45.4 162.0 Q44.2 162.6 43.9 165.9 M106.3 132.7 Q103.8 134.0 105.1 136.6 Q105.4 136.1 108.3 137.6 Q108.5 138.7 106.7 140.6" stroke="#9ad8d2" stroke-width="0.9"/><path d="M-6.6 78.1 Q-7.4 77.6 -9.9 75.3 Q-8.6 72.2 -8.5 72.3 M42.3 36.2 Q42.0 37.5 41.8 41.2 Q43.1 41.7 43.9 45.0 Q45.9 45.9 46.5 48.7 M-3.5 118.6 Q-1.2 120.2 -0.4 119.1 Q2.9 119.1 4.1 119.8 Q3.6 122.8 6.1 122.7 M62.6 200.6 Q60.8 199.7 59.2 199.1 Q57.0 200.0 57.5 202.1 M101.5 160.2 Q99.2 158.2 99.2 158.1 Q95.2 157.6 94.6 159.9 M46.9 128.9 Q48.8 128.9 47.8 126.5 Q48.0 128.0 44.1 126.3 M51.2 144.6 Q51.0 148.2 50.8 149.5 Q47.4 151.1 47.9 149.7 Q48.7 146.1 48.2 146.5 M-19.0 68.5 Q-17.5 68.2 -17.5 70.2 Q-16.8 70.5 -16.5 72.1 Q-18.5 74.1 -18.9 73.2 M109.4 188.6 Q108.7 190.3 106.9 190.5 Q105.9 189.1 105.0 188.0 Q108.4 189.4 108.5 187.1 M62.1 100.4 Q61.9 100.5 64.3 96.7 Q63.5 98.4 66.7 97.5 Q66.9 95.1 67.0 93.5 M31.8 2.7 Q35.7 2.7 36.1 1.2 Q37.6 3.3 36.4 5.4 Q38.5 7.0 37.4 8.2 M14.2 180.2 Q14.7 180.6 17.2 179.8 Q17.2 180.8 20.3 181.0 Q21.5 180.9 23.2 180.5 M27.0 21.3 Q26.3 24.8 24.2 24.4 Q24.8 23.2 22.1 21.2 Q19.5 23.1 18.7 21.8 M151.5 77.9 Q152.0 78.0 149.7 76.0 Q151.5 72.7 152.1 73.2 Q150.2 72.1 151.7 70.9 M57.8 60.2 Q59.1 59.9 59.4 58.8 Q58.5 59.0 57.0 56.8 Q56.9 54.5 54.0 55.4 M0.0 173.9 Q1.7 172.8 4.5 173.0 Q6.3 174.4 6.5 177.1 M151.0 55.5 Q152.5 54.3 155.7 56.4 Q157.3 57.3 159.9 55.8 Q161.4 58.1 159.8 59.8 M71.4 124.5 Q69.1 127.3 68.4 128.1 Q64.9 128.7 64.3 126.8 M55.0 76.2 Q52.9 74.9 52.6 77.3 Q51.0 80.9 49.8 80.6 M71.9 100.1 Q73.0 100.9 76.4 98.8 Q75.8 97.2 76.6 96.1 Q76.7 94.6 79.0 94.9 M-16.4 41.5 Q-14.6 41.3 -11.6 42.7 Q-8.2 43.9 -7.8 43.5 M36.5 111.9 Q39.6 114.2 39.6 115.8 Q38.0 116.0 37.5 116.4 Q38.9 118.2 37.8 120.5 M104.3 53.5 Q106.5 50.6 105.0 50.2 Q106.7 47.7 106.4 47.9 Q107.1 51.3 110.1 50.9 M45.7 152.7 Q43.8 153.5 44.2 156.1 Q44.8 156.0 47.1 158.7 Q48.4 159.1 46.0 160.9 M127.6 156.7 Q126.7 158.5 124.8 158.1 Q126.1 160.1 124.8 160.1 Q124.0 160.4 123.8 161.9 M173.9 80.1 Q172.8 78.8 173.1 78.2 Q173.3 74.3 173.1 73.7 Q175.6 72.4 175.6 74.3 M158.8 81.2 Q156.2 78.9 154.3 79.0 Q150.3 77.4 150.2 79.2 M101.2 110.2 Q99.7 108.2 99.1 108.5 Q98.1 109.7 96.8 106.9 M170.3 83.8 Q169.7 79.9 172.2 79.3 Q169.7 78.5 170.3 78.3 Q167.5 75.5 168.2 75.7 M-5.1 106.8 Q-2.4 109.3 -3.2 109.6 Q-0.7 106.9 -0.9 106.6 Q-2.0 105.0 -1.8 104.0 M16.6 144.6 Q18.8 143.1 18.3 142.0 Q19.2 138.8 18.0 139.3 Q19.1 139.7 20.3 137.5 M3.1 76.9 Q1.4 77.8 1.1 74.8 Q-3.1 73.7 -3.9 74.4 Q-7.7 71.8 -7.7 71.7" stroke="#dff7f4" stroke-width="0.7"/><path d="M102.4 35.7 Q103.1 38.2 103.3 40.4 Q103.6 41.4 105.6 42.9 Q106.2 40.9 107.9 42.6 M98.4 2.2 Q97.6 5.8 97.3 6.3 Q98.4 7.6 100.8 9.1 M45.9 166.0 Q47.3 163.7 49.3 163.2 Q50.2 165.9 51.8 166.1 Q51.4 167.7 49.8 166.8 M145.6 162.9 Q148.1 160.5 147.8 161.9 Q151.0 161.9 150.9 160.9 Q150.9 160.1 151.2 158.8 M63.3 152.0 Q62.9 150.3 65.7 152.4 Q65.1 151.2 65.9 150.3 M19.7 98.7 Q18.9 100.1 16.6 101.1 Q16.1 100.6 17.7 103.0 Q19.2 102.6 20.6 99.3 M19.8 47.3 Q20.6 46.1 24.5 48.5 Q27.1 49.1 25.9 46.6 Q29.1 45.1 30.2 46.5 M123.5 118.7 Q123.3 116.9 119.5 116.8 Q118.1 119.9 117.4 120.6 M94.5 57.4 Q94.5 57.6 91.6 60.8 Q88.9 59.7 88.3 61.9 Q86.3 63.7 86.5 63.3 M157.4 85.9 Q160.5 87.4 159.8 87.7 Q161.3 86.5 161.7 89.0 M38.8 141.8 Q40.3 142.9 41.5 143.2 Q43.3 141.4 45.6 142.4 M66.4 58.1 Q66.1 58.1 68.6 55.2 Q69.4 56.9 71.7 55.4 M132.1 134.9 Q131.8 136.0 130.6 136.2 Q129.2 133.8 129.4 134.5 M153.5 115.2 Q153.4 112.3 152.3 112.5 Q154.4 109.8 154.6 110.3 M81.5 142.4 Q78.6 145.4 78.7 145.7 Q78.7 147.5 81.2 147.2 M94.6 15.5 Q95.9 17.2 93.7 17.9 Q93.8 21.4 92.2 22.6 M57.9 105.8 Q59.9 104.5 62.2 105.6 Q62.0 104.4 64.4 104.8 M106.9 130.7 Q106.1 128.0 106.5 126.5 Q108.8 125.3 110.3 123.9 Q107.3 121.2 107.2 120.9 M153.4 41.5 Q153.6 42.4 150.4 44.8 Q149.6 45.8 146.2 46.0 M97.2 157.1 Q95.9 156.2 93.5 157.9 Q93.1 155.0 90.2 154.8 Q90.8 152.9 94.4 152.6 M75.3 78.8 Q75.2 77.2 74.7 76.0 Q75.5 75.8 73.1 72.0 M36.8 28.7 Q37.2 28.1 40.8 29.7 Q43.3 31.5 42.6 30.5 M116.1 42.2 Q115.0 43.3 116.2 45.3 Q117.4 47.4 116.6 50.3 Q118.8 53.4 120.0 52.7 M70.3 61.3 Q71.2 65.1 72.1 65.5 Q75.5 65.7 75.0 63.1 Q75.1 63.6 76.8 62.1 M120.1 71.7 Q121.6 75.5 121.9 76.4 Q122.1 77.1 124.2 75.5 Q124.5 72.9 121.7 71.4" stroke="#9ad8d2" stroke-width="0.7"/></g><path d="M0 150 Q12 146 22 158 Q30 168 50 166 Q70 150 82 166 Q100 172 112 150 L125 140 L125 203 L0 203z" fill="#2a2222" opacity="0.9"/><path d="M0 188 Q60 212 125 196" fill="none" stroke="#8a8a8a" stroke-width="4"/><path d="M60 0 Q90 8 130 2 L60 0z" fill="#2a2727"/><polygon points="173.0,21.0 169.2,23.3 171.6,27.1 167.2,27.5 167.7,31.9 163.6,30.5 162.1,34.6 159.0,31.5 155.9,34.6 154.4,30.5 150.3,31.9 150.8,27.5 146.4,27.1 148.8,23.3 145.0,21.0 148.8,18.7 146.4,14.9 150.8,14.5 150.3,10.1 154.4,11.5 155.9,7.4 159.0,10.5 162.1,7.4 163.6,11.5 167.7,10.1 167.2,14.5 171.6,14.9 169.2,18.7" fill="#e8303a"/><circle cx="159" cy="21" r="8" fill="#d42632" stroke="#ffb0b0" stroke-width="0.8"/><path d="M128 90 Q142 84 158 90 Q170 94 171 108 L170 130 L166 150 L166 203 L128 203 L126 150 L121 130 L120 108 Q121 94 128 90z" fill="#36a084"/><path d="M136 92 L140 150 M152 92 L150 150" stroke="#2c8a70" stroke-width="1" fill="none"/><path d="M124 110 Q121 130 130 146 Q136 154 142 156" stroke="#c48c6c" stroke-width="4" fill="none" stroke-linecap="round"/><path d="M168 110 Q170 130 160 146 Q154 154 148 156" stroke="#c48c6c" stroke-width="4" fill="none" stroke-linecap="round"/><path d="M120 96 Q118 106 121 114 L128 114 L128 92z M170 96 Q172 106 169 114 L162 114 L162 92z" fill="#36a084"/><path d="M140 156 Q132 176 128 186 M150 156 Q158 172 160 182" stroke="#b8b8b8" stroke-width="1" fill="none"/><ellipse cx="142" cy="85" rx="7" ry="5" fill="#c79374"/><ellipse cx="142" cy="74" rx="13" ry="12" fill="#a9bccb"/><ellipse cx="139" cy="70" rx="8" ry="6" fill="#cad8e2"/><text x="9" y="33" font-family="Liberation Serif" font-size="26" fill="#fff" stroke="#fff" stroke-width="0.3" textLength="105" lengthAdjust="spacingAndGlyphs">MICRO</text><text x="9" y="59" font-family="Liberation Serif" font-size="26" fill="#fff" stroke="#fff" stroke-width="0.3" textLength="138" lengthAdjust="spacingAndGlyphs">BIOLOGY</text><path d="M0 67 H112 L109 74 L113 82 H0z" fill="#b07b3e"/><text x="8" y="78.5" font-family="Liberation Mono" font-size="8" fill="#2a1a10" textLength="100" lengthAdjust="spacingAndGlyphs">THE HUMAN EXPERIENCE</text><g font-family="Liberation Sans" fill="#fff"><text x="4" y="174" font-size="7" transform="rotate(20 4 174)" textLength="27" lengthAdjust="spacingAndGlyphs">JOHN W.</text><text x="3" y="184" font-size="10" transform="rotate(18 3 184)" textLength="34" lengthAdjust="spacingAndGlyphs">FOSTER</text><text x="43" y="186" font-size="7" textLength="31" lengthAdjust="spacingAndGlyphs">ZARRINTAJ</text><text x="40" y="197" font-size="9.5" textLength="37" lengthAdjust="spacingAndGlyphs">·ALIABADI</text><text x="82" y="184" font-size="7" transform="rotate(-10 82 184)" textLength="27" lengthAdjust="spacingAndGlyphs">JOAN L.</text><text x="79" y="194" font-size="9.5" transform="rotate(-22 79 194)" textLength="52" lengthAdjust="spacingAndGlyphs">·SLONCZEWSKI</text></g></svg>
</div><div class="t" style="left:33px;top:289px;font-family:'Liberation Serif';font-weight:bold;font-size:52px;color:#3b808b;text-shadow:2px 3px 3px rgba(0,0,0,0.3);transform-origin:0 0;transform:scaleX(1.02)">Chapter</div><div class="t" style="left:240px;top:280px;font-family:'Liberation Serif';font-weight:bold;font-size:62.7px;color:#3b808b;text-shadow:2px 3px 3px rgba(0,0,0,0.3);transform-origin:0 0;transform:scaleX(0.934)">13</div><div class="t" style="left:33px;top:357.5px;font-family:'Liberation Serif';font-weight:normal;font-size:26px;color:#3b7f89;-webkit-text-stroke:0.5px #3b7f89;transform-origin:0 0;transform:scaleX(1.075)">Sterilization, Disinfection, and</div><div class="t" style="left:33px;top:388.5px;font-family:'Liberation Serif';font-weight:normal;font-size:26px;color:#3b7f89;-webkit-text-stroke:0.5px #3b7f89;transform-origin:0 0;transform:scaleX(1.075)">Antibiotic Therapy</div></div></div><div class="a" style="left:32px;top:159px;width:246px;height:186px;background:#fff"></div><div class="a" style="left:36px;top:163px;width:650px;height:489px;transform-origin:0 0;transform:scale(0.36615,0.36401)"><div class="a" style="left:0;top:0;width:650px;height:489px;background:#fff;overflow:hidden"><div class="a" style="left:0;top:0;width:650px;height:245px;background:#3d8a91"></div><div class="t" style="left:33.57px;top:6px;font-family:Liberation Serif;font-weight:bold;font-size:55px;color:#fff;-webkit-text-stroke:0.4px #fff;transform-origin:0 0;transform:scaleX(0.818)">M</div><div class="t" style="left:80.62px;top:6px;font-family:Liberation Serif;font-weight:bold;font-size:55px;color:#fff;-webkit-text-stroke:0.4px #fff;transform-origin:0 0;transform:scaleX(0.791)">I</div><div class="t" style="left:97.02px;top:6px;font-family:Liberation Serif;font-weight:bold;font-size:55px;color:#fff;-webkit-text-stroke:0.4px #fff;transform-origin:0 0;transform:scaleX(1.177)">C</div><div class="t" style="left:139.36px;top:6px;font-family:Liberation Serif;font-weight:bold;font-size:55px;color:#fff;-webkit-text-stroke:0.4px #fff;transform-origin:0 0;transform:scaleX(0.825)">R</div><div class="t" style="left:171.79px;top:6px;font-family:Liberation Serif;font-weight:bold;font-size:55px;color:#fff;-webkit-text-stroke:0.4px #fff;transform-origin:0 0;transform:scaleX(0.993)">O</div><div class="t" style="left:33.10px;top:59px;font-family:Liberation Serif;font-weight:bold;font-size:55px;color:#fff;-webkit-text-stroke:0.4px #fff;transform-origin:0 0;transform:scaleX(0.871)">B</div><div class="t" style="left:65.76px;top:59px;font-family:Liberation Serif;font-weight:bold;font-size:55px;color:#fff;-webkit-text-stroke:0.4px #fff;transform-origin:0 0;transform:scaleX(0.816)">I</div><div class="t" style="left:81.05px;top:59px;font-family:Liberation Serif;font-weight:bold;font-size:55px;color:#fff;-webkit-text-stroke:0.4px #fff;transform-origin:0 0;transform:scaleX(1.058)">O</div><div class="t" style="left:125.75px;top:59px;font-family:Liberation Serif;font-weight:bold;font-size:55px;color:#fff;-webkit-text-stroke:0.4px #fff;transform-origin:0 0;transform:scaleX(0.829)">L</div><div class="t" style="left:153.39px;top:59px;font-family:Liberation Serif;font-weight:bold;font-size:55px;color:#fff;-webkit-text-stroke:0.4px #fff;transform-origin:0 0;transform:scaleX(1.083)">O</div><div class="t" style="left:193.82px;top:59px;font-family:Liberation Serif;font-weight:bold;font-size:55px;color:#fff;-webkit-text-stroke:0.4px #fff;transform-origin:0 0;transform:scaleX(1.116)">G</div><div class="t" style="left:239.34px;top:59px;font-family:Liberation Serif;font-weight:bold;font-size:55px;color:#fff;-webkit-text-stroke:0.4px #fff;transform-origin:0 0;transform:scaleX(0.958)">Y</div><div class="a" style="left:0;top:126px;width:351px;height:29px;background:#9a6530"></div><div class="t" style="left:33px;top:131px;font-family:'Liberation Sans';font-weight:bold;font-size:21px;color:#111;transform-origin:0 0;transform:scaleX(0.93);word-spacing:5px">THE HUMAN EXPERIENCE</div><div class="t" style="left:34px;top:183px;font-family:'Liberation Sans';font-weight:bold;font-size:12.5px;color:#fff;font-variant:small-caps;transform-origin:0 0;transform:scaleX(0.978)">John W. Foster • Zarrintaj&nbsp; Aliabadi • Joan L. Slonczewski</div><div class="a" style="left:450px;top:23px;width:181px;height:203px;overflow:hidden"><svg width="181" height="203" viewBox="0 0 181 203" style="left:0;top:0"><defs><radialGradient id="cg" cx="0.4" cy="0.52" r="0.62"><stop offset="0" stop-color="#8fd2ce"/><stop offset="0.45" stop-color="#5aa8a8"/><stop offset="0.85" stop-color="#356c70"/><stop offset="1" stop-color="#2a4446"/></radialGradient><clipPath id="cc"><circle cx="70" cy="96" r="106"/></clipPath></defs><rect width="181" height="203" fill="#2c2828"/><circle cx="70" cy="96" r="112" fill="none" stroke="#8e8e8e" stroke-width="5"/><circle cx="70" cy="96" r="108" fill="none" stroke="#4a4a4a" stroke-width="3"/><circle cx="70" cy="96" r="106" fill="url(#cg)"/><defs><linearGradient id="tg" x1="0" y1="0" x2="0" y2="1"><stop offset="0" stop-color="#262424" stop-opacity="0.8"/><stop offset="0.3" stop-color="#262424" stop-opacity="0.35"/><stop offset="0.45" stop-color="#262424" stop-opacity="0"/></linearGradient></defs><g clip-path="url(#cc)"><ellipse cx="6.3" cy="70.9" rx="6.2" ry="5.0" fill="#357a7e" stroke="#a0dcd6" stroke-width="1.1" transform="rotate(48 6.3 70.9)"/><ellipse cx="28.3" cy="92.9" rx="5.0" ry="3.9" fill="#4f9c9c" stroke="#d6f6f2" stroke-width="0.7" transform="rotate(23 28.3 92.9)"/><ellipse cx="128.2" cy="48.1" rx="5.0" ry="5.0" fill="#6cbab6" stroke="#a0dcd6" stroke-width="1.1" transform="rotate(157 128.2 48.1)"/><ellipse cx="10.2" cy="37.6" rx="5.8" ry="3.6" fill="#3f8a8c" stroke="#d6f6f2" stroke-width="0.7" transform="rotate(153 10.2 37.6)"/><ellipse cx="55.0" cy="99.5" rx="4.3" ry="3.6" fill="#4f9c9c" stroke="#b8ece6" stroke-width="0.9" transform="rotate(1 55.0 99.5)"/><ellipse cx="-11.5" cy="118.4" rx="3.6" ry="3.2" fill="#6cbab6" stroke="#d6f6f2" stroke-width="0.9" transform="rotate(58 -11.5 118.4)"/><ellipse cx="142.1" cy="109.6" rx="4.8" ry="3.1" fill="#3f8a8c" stroke="#a0dcd6" stroke-width="0.9" transform="rotate(98 142.1 109.6)"/><ellipse cx="93.8" cy="98.5" rx="5.2" ry="5.1" fill="#4f9c9c" stroke="#b8ece6" stroke-width="0.7" transform="rotate(120 93.8 98.5)"/><ellipse cx="54.2" cy="36.2" rx="4.2" ry="3.8" fill="#6cbab6" stroke="#b8ece6" stroke-width="0.9" transform="rotate(86 54.2 36.2)"/><ellipse cx="56.3" cy="120.1" rx="6.4" ry="4.4" fill="#3f8a8c" stroke="#b8ece6" stroke-width="0.7" transform="rotate(2 56.3 120.1)"/><ellipse cx="76.6" cy="74.4" rx="3.2" ry="2.5" fill="#6cbab6" stroke="#b8ece6" stroke-width="0.7" transform="rotate(33 76.6 74.4)"/><ellipse cx="21.0" cy="139.8" rx="4.1" ry="2.9" fill="#4f9c9c" stroke="#d6f6f2" stroke-width="1.1" transform="rotate(77 21.0 139.8)"/><ellipse cx="175.1" cy="109.0" rx="3.2" ry="2.0" fill="#6cbab6" stroke="#d6f6f2" stroke-width="0.7" transform="rotate(54 175.1 109.0)"/><ellipse cx="137.5" cy="100.1" rx="4.9" ry="3.1" fill="#62b0ae" stroke="#a0dcd6" stroke-width="0.7" transform="rotate(53 137.5 100.1)"/><ellipse cx="73.5" cy="174.7" rx="4.9" ry="3.2" fill="#62b0ae" stroke="#a0dcd6" stroke-width="1.1" transform="rotate(123 73.5 174.7)"/><ellipse cx="133.0" cy="168.2" rx="4.0" ry="3.9" fill="#4f9c9c" stroke="#f0fffd" stroke-width="1.1" transform="rotate(63 133.0 168.2)"/><ellipse cx="118.3" cy="170.6" rx="5.0" ry="4.4" fill="#6cbab6" stroke="#b8ece6" stroke-width="0.9" transform="rotate(123 118.3 170.6)"/><ellipse cx="-0.7" cy="134.0" rx="2.9" ry="2.0" fill="#3f8a8c" stroke="#f0fffd" stroke-width="1.1" transform="rotate(100 -0.7 134.0)"/><ellipse cx="92.4" cy="51.1" rx="4.9" ry="4.7" fill="#62b0ae" stroke="#b8ece6" stroke-width="0.7" transform="rotate(32 92.4 51.1)"/><ellipse cx="26.2" cy="78.9" rx="5.9" ry="4.2" fill="#6cbab6" stroke="#d6f6f2" stroke-width="0.7" transform="rotate(4 26.2 78.9)"/><ellipse cx="49.3" cy="108.9" rx="3.5" ry="2.5" fill="#3f8a8c" stroke="#b8ece6" stroke-width="1.1" transform="rotate(146 49.3 108.9)"/><ellipse cx="157.4" cy="153.2" rx="3.1" ry="2.6" fill="#357a7e" stroke="#f0fffd" stroke-width="1.1" transform="rotate(133 157.4 153.2)"/><ellipse cx="120.2" cy="156.9" rx="2.6" ry="2.5" fill="#3f8a8c" stroke="#a0dcd6" stroke-width="1.1" transform="rotate(79 120.2 156.9)"/><ellipse cx="172.9" cy="109.8" rx="5.0" ry="4.5" fill="#357a7e" stroke="#d6f6f2" stroke-width="0.9" transform="rotate(34 172.9 109.8)"/><ellipse cx="164.3" cy="144.3" rx="4.7" ry="4.3" fill="#3f8a8c" stroke="#b8ece6" stroke-width="0.9" transform="rotate(90 164.3 144.3)"/><ellipse cx="43.1" cy="100.6" rx="2.8" ry="2.7" fill="#357a7e" stroke="#d6f6f2" stroke-width="1.1" transform="rotate(3 43.1 100.6)"/><ellipse cx="9.5" cy="151.2" rx="4.8" ry="3.1" fill="#6cbab6" stroke="#d6f6f2" stroke-width="1.1" transform="rotate(29 9.5 151.2)"/><ellipse cx="146.9" cy="23.6" rx="5.4" ry="4.2" fill="#357a7e" stroke="#a0dcd6" stroke-width="1.1" transform="rotate(21 146.9 23.6)"/><ellipse cx="-3.6" cy="89.3" rx="3.7" ry="2.3" fill="#3f8a8c" stroke="#a0dcd6" stroke-width="1.1" transform="rotate(28 -3.6 89.3)"/><ellipse cx="15.7" cy="48.4" rx="6.2" ry="4.6" fill="#62b0ae" stroke="#d6f6f2" stroke-width="0.7" transform="rotate(173 15.7 48.4)"/><ellipse cx="-10.4" cy="86.7" rx="5.5" ry="4.4" fill="#62b0ae" stroke="#a0dcd6" stroke-width="0.7" transform="rotate(83 -10.4 86.7)"/><ellipse cx="69.8" cy="160.5" rx="5.0" ry="3.8" fill="#4f9c9c" stroke="#b8ece6" stroke-width="1.1" transform="rotate(81 69.8 160.5)"/><ellipse cx="99.8" cy="129.6" rx="3.9" ry="3.8" fill="#3f8a8c" stroke="#d6f6f2" stroke-width="0.9" transform="rotate(43 99.8 129.6)"/><ellipse cx="38.6" cy="101.7" rx="6.2" ry="5.3" fill="#357a7e" stroke="#a0dcd6" stroke-width="0.9" transform="rotate(172 38.6 101.7)"/><ellipse cx="99.8" cy="48.4" rx="6.4" ry="4.0" fill="#357a7e" stroke="#f0fffd" stroke-width="0.7" transform="rotate(71 99.8 48.4)"/><ellipse cx="165.0" cy="121.4" rx="5.3" ry="3.9" fill="#6cbab6" stroke="#f0fffd" stroke-width="1.1" transform="rotate(4 165.0 121.4)"/><ellipse cx="1.3" cy="142.6" rx="3.3" ry="3.0" fill="#62b0ae" stroke="#b8ece6" stroke-width="0.7" transform="rotate(161 1.3 142.6)"/><ellipse cx="95.0" cy="116.4" rx="4.6" ry="4.1" fill="#62b0ae" stroke="#d6f6f2" stroke-width="0.7" transform="rotate(121 95.0 116.4)"/><ellipse cx="58.8" cy="47.2" rx="5.5" ry="3.7" fill="#6cbab6" stroke="#d6f6f2" stroke-width="0.9" transform="rotate(88 58.8 47.2)"/><ellipse cx="141.3" cy="71.2" rx="4.5" ry="4.2" fill="#4f9c9c" stroke="#a0dcd6" stroke-width="1.1" transform="rotate(57 141.3 71.2)"/><ellipse cx="95.3" cy="84.6" rx="5.4" ry="4.2" fill="#4f9c9c" stroke="#a0dcd6" stroke-width="1.1" transform="rotate(1 95.3 84.6)"/><ellipse cx="13.7" cy="70.0" rx="6.0" ry="4.4" fill="#62b0ae" stroke="#a0dcd6" stroke-width="0.7" transform="rotate(25 13.7 70.0)"/><ellipse cx="106.9" cy="15.4" rx="5.1" ry="3.5" fill="#3f8a8c" stroke="#b8ece6" stroke-width="0.9" transform="rotate(22 106.9 15.4)"/><ellipse cx="-31.9" cy="71.9" rx="5.7" ry="5.5" fill="#62b0ae" stroke="#f0fffd" stroke-width="0.7" transform="rotate(89 -31.9 71.9)"/><ellipse cx="140.8" cy="112.8" rx="3.9" ry="3.1" fill="#357a7e" stroke="#f0fffd" stroke-width="0.7" transform="rotate(55 140.8 112.8)"/><ellipse cx="156.8" cy="133.0" rx="5.7" ry="5.0" fill="#4f9c9c" stroke="#f0fffd" stroke-width="0.7" transform="rotate(120 156.8 133.0)"/><ellipse cx="33.0" cy="92.1" rx="5.4" ry="4.5" fill="#357a7e" stroke="#a0dcd6" stroke-width="1.1" transform="rotate(22 33.0 92.1)"/><ellipse cx="-14.5" cy="129.8" rx="4.7" ry="3.8" fill="#6cbab6" stroke="#b8ece6" stroke-width="1.1" transform="rotate(65 -14.5 129.8)"/><ellipse cx="29.0" cy="133.9" rx="5.9" ry="4.2" fill="#6cbab6" stroke="#b8ece6" stroke-width="0.7" transform="rotate(139 29.0 133.9)"/><ellipse cx="3.4" cy="63.1" rx="3.3" ry="2.6" fill="#6cbab6" stroke="#d6f6f2" stroke-width="1.1" transform="rotate(96 3.4 63.1)"/><ellipse cx="84.5" cy="93.2" rx="4.6" ry="3.6" fill="#357a7e" stroke="#d6f6f2" stroke-width="1.1" transform="rotate(42 84.5 93.2)"/><ellipse cx="46.9" cy="90.3" rx="4.2" ry="2.9" fill="#357a7e" stroke="#f0fffd" stroke-width="0.9" transform="rotate(32 46.9 90.3)"/><ellipse cx="117.5" cy="61.9" rx="6.2" ry="4.0" fill="#357a7e" stroke="#f0fffd" stroke-width="0.9" transform="rotate(158 117.5 61.9)"/><ellipse cx="69.0" cy="111.2" rx="5.3" ry="3.6" fill="#3f8a8c" stroke="#d6f6f2" stroke-width="0.7" transform="rotate(3 69.0 111.2)"/><ellipse cx="32.3" cy="173.5" rx="3.9" ry="2.5" fill="#6cbab6" stroke="#a0dcd6" stroke-width="1.1" transform="rotate(149 32.3 173.5)"/><ellipse cx="36.6" cy="93.8" rx="3.5" ry="2.1" fill="#4f9c9c" stroke="#a0dcd6" stroke-width="1.1" transform="rotate(105 36.6 93.8)"/><ellipse cx="-1.2" cy="32.6" rx="4.7" ry="3.8" fill="#6cbab6" stroke="#b8ece6" stroke-width="1.1" transform="rotate(156 -1.2 32.6)"/><ellipse cx="121.7" cy="155.8" rx="6.2" ry="4.5" fill="#62b0ae" stroke="#b8ece6" stroke-width="0.9" transform="rotate(49 121.7 155.8)"/><ellipse cx="115.9" cy="95.5" rx="6.1" ry="4.0" fill="#4f9c9c" stroke="#b8ece6" stroke-width="0.7" transform="rotate(66 115.9 95.5)"/><ellipse cx="12.2" cy="121.1" rx="6.3" ry="4.3" fill="#6cbab6" stroke="#b8ece6" stroke-width="1.1" transform="rotate(175 12.2 121.1)"/><ellipse cx="147.1" cy="149.2" rx="4.8" ry="3.1" fill="#62b0ae" stroke="#f0fffd" stroke-width="1.1" transform="rotate(162 147.1 149.2)"/><ellipse cx="-21.0" cy="94.4" rx="5.2" ry="4.2" fill="#4f9c9c" stroke="#d6f6f2" stroke-width="0.7" transform="rotate(9 -21.0 94.4)"/><ellipse cx="0.9" cy="36.3" rx="6.1" ry="4.1" fill="#357a7e" stroke="#b8ece6" stroke-width="0.7" transform="rotate(52 0.9 36.3)"/><ellipse cx="92.0" cy="129.8" rx="3.6" ry="2.4" fill="#3f8a8c" stroke="#d6f6f2" stroke-width="1.1" transform="rotate(118 92.0 129.8)"/><ellipse cx="91.3" cy="110.8" rx="4.1" ry="3.1" fill="#357a7e" stroke="#f0fffd" stroke-width="1.1" transform="rotate(95 91.3 110.8)"/><ellipse cx="67.0" cy="86.6" rx="5.9" ry="4.6" fill="#4f9c9c" stroke="#a0dcd6" stroke-width="1.1" transform="rotate(94 67.0 86.6)"/><ellipse cx="91.8" cy="156.7" rx="3.2" ry="2.3" fill="#6cbab6" stroke="#d6f6f2" stroke-width="0.7" transform="rotate(180 91.8 156.7)"/><ellipse cx="152.8" cy="42.5" rx="6.3" ry="5.0" fill="#6cbab6" stroke="#b8ece6" stroke-width="0.9" transform="rotate(66 152.8 42.5)"/><ellipse cx="109.2" cy="131.1" rx="5.5" ry="3.6" fill="#4f9c9c" stroke="#a0dcd6" stroke-width="0.9" transform="rotate(137 109.2 131.1)"/><ellipse cx="79.4" cy="9.7" rx="5.6" ry="4.9" fill="#357a7e" stroke="#b8ece6" stroke-width="0.7" transform="rotate(87 79.4 9.7)"/><ellipse cx="114.2" cy="128.5" rx="6.1" ry="4.2" fill="#6cbab6" stroke="#d6f6f2" stroke-width="1.1" transform="rotate(76 114.2 128.5)"/><ellipse cx="38.7" cy="46.8" rx="4.8" ry="3.6" fill="#6cbab6" stroke="#d6f6f2" stroke-width="0.9" transform="rotate(164 38.7 46.8)"/><ellipse cx="103.1" cy="126.9" rx="4.1" ry="2.6" fill="#6cbab6" stroke="#d6f6f2" stroke-width="0.7" transform="rotate(60 103.1 126.9)"/><ellipse cx="29.1" cy="125.1" rx="2.7" ry="1.6" fill="#4f9c9c" stroke="#a0dcd6" stroke-width="0.9" transform="rotate(64 29.1 125.1)"/><ellipse cx="41.8" cy="139.9" rx="4.7" ry="4.0" fill="#357a7e" stroke="#d6f6f2" stroke-width="1.1" transform="rotate(19 41.8 139.9)"/><ellipse cx="32.6" cy="29.5" rx="6.3" ry="4.8" fill="#357a7e" stroke="#b8ece6" stroke-width="0.7" transform="rotate(126 32.6 29.5)"/><ellipse cx="7.8" cy="52.8" rx="4.2" ry="3.0" fill="#357a7e" stroke="#a0dcd6" stroke-width="0.9" transform="rotate(153 7.8 52.8)"/><ellipse cx="15.1" cy="85.4" rx="4.4" ry="3.8" fill="#62b0ae" stroke="#f0fffd" stroke-width="1.1" transform="rotate(75 15.1 85.4)"/><ellipse cx="72.0" cy="81.6" rx="4.8" ry="4.4" fill="#4f9c9c" stroke="#a0dcd6" stroke-width="0.9" transform="rotate(13 72.0 81.6)"/><ellipse cx="69.0" cy="-3.9" rx="2.7" ry="2.5" fill="#62b0ae" stroke="#d6f6f2" stroke-width="0.7" transform="rotate(109 69.0 -3.9)"/><ellipse cx="69.5" cy="184.4" rx="5.5" ry="5.4" fill="#3f8a8c" stroke="#d6f6f2" stroke-width="1.1" transform="rotate(119 69.5 184.4)"/><ellipse cx="105.4" cy="86.9" rx="3.5" ry="3.0" fill="#3f8a8c" stroke="#d6f6f2" stroke-width="0.9" transform="rotate(30 105.4 86.9)"/><ellipse cx="111.8" cy="110.2" rx="4.6" ry="3.6" fill="#3f8a8c" stroke="#f0fffd" stroke-width="1.1" transform="rotate(106 111.8 110.2)"/><ellipse cx="64.8" cy="164.6" rx="4.8" ry="4.4" fill="#357a7e" stroke="#f0fffd" stroke-width="1.1" transform="rotate(35 64.8 164.6)"/><ellipse cx="59.8" cy="-6.7" rx="3.5" ry="3.2" fill="#3f8a8c" stroke="#f0fffd" stroke-width="1.1" transform="rotate(91 59.8 -6.7)"/><ellipse cx="29.8" cy="62.8" rx="5.4" ry="4.6" fill="#6cbab6" stroke="#b8ece6" stroke-width="0.7" transform="rotate(48 29.8 62.8)"/><ellipse cx="-33.2" cy="94.6" rx="5.1" ry="4.4" fill="#4f9c9c" stroke="#d6f6f2" stroke-width="0.7" transform="rotate(69 -33.2 94.6)"/><ellipse cx="119.8" cy="104.5" rx="2.7" ry="1.7" fill="#4f9c9c" stroke="#f0fffd" stroke-width="0.7" transform="rotate(173 119.8 104.5)"/><ellipse cx="73.7" cy="134.6" rx="6.4" ry="4.8" fill="#357a7e" stroke="#a0dcd6" stroke-width="0.9" transform="rotate(87 73.7 134.6)"/><ellipse cx="118.1" cy="149.5" rx="6.0" ry="5.5" fill="#3f8a8c" stroke="#a0dcd6" stroke-width="1.1" transform="rotate(54 118.1 149.5)"/><ellipse cx="68.9" cy="28.2" rx="4.1" ry="2.7" fill="#4f9c9c" stroke="#f0fffd" stroke-width="1.1" transform="rotate(83 68.9 28.2)"/><ellipse cx="73.0" cy="42.3" rx="5.8" ry="5.0" fill="#4f9c9c" stroke="#a0dcd6" stroke-width="1.1" transform="rotate(24 73.0 42.3)"/><ellipse cx="38.9" cy="157.9" rx="4.7" ry="4.3" fill="#357a7e" stroke="#a0dcd6" stroke-width="0.9" transform="rotate(76 38.9 157.9)"/><ellipse cx="165.1" cy="101.6" rx="3.7" ry="3.3" fill="#6cbab6" stroke="#d6f6f2" stroke-width="0.9" transform="rotate(177 165.1 101.6)"/><ellipse cx="112.3" cy="57.2" rx="3.4" ry="3.2" fill="#62b0ae" stroke="#f0fffd" stroke-width="0.9" transform="rotate(112 112.3 57.2)"/><ellipse cx="137.8" cy="57.9" rx="6.3" ry="5.1" fill="#62b0ae" stroke="#a0dcd6" stroke-width="0.9" transform="rotate(117 137.8 57.9)"/><ellipse cx="24.4" cy="129.3" rx="6.2" ry="4.0" fill="#6cbab6" stroke="#b8ece6" stroke-width="0.9" transform="rotate(6 24.4 129.3)"/><ellipse cx="21.9" cy="133.0" rx="4.1" ry="3.7" fill="#4f9c9c" stroke="#f0fffd" stroke-width="1.1" transform="rotate(39 21.9 133.0)"/><ellipse cx="-18.7" cy="59.1" rx="3.2" ry="3.0" fill="#357a7e" stroke="#f0fffd" stroke-width="0.7" transform="rotate(132 -18.7 59.1)"/><ellipse cx="82.0" cy="114.5" rx="3.7" ry="2.3" fill="#3f8a8c" stroke="#a0dcd6" stroke-width="1.1" transform="rotate(78 82.0 114.5)"/><ellipse cx="150.3" cy="142.9" rx="2.8" ry="1.8" fill="#3f8a8c" stroke="#f0fffd" stroke-width="1.1" transform="rotate(167 150.3 142.9)"/><ellipse cx="69.0" cy="59.5" rx="5.1" ry="4.1" fill="#4f9c9c" stroke="#b8ece6" stroke-width="1.1" transform="rotate(86 69.0 59.5)"/><ellipse cx="-2.0" cy="152.3" rx="3.9" ry="3.1" fill="#62b0ae" stroke="#b8ece6" stroke-width="1.1" transform="rotate(18 -2.0 152.3)"/><ellipse cx="145.5" cy="51.4" rx="4.1" ry="3.8" fill="#62b0ae" stroke="#d6f6f2" stroke-width="0.7" transform="rotate(118 145.5 51.4)"/><ellipse cx="4.2" cy="16.1" rx="4.6" ry="3.5" fill="#3f8a8c" stroke="#d6f6f2" stroke-width="0.9" transform="rotate(37 4.2 16.1)"/><ellipse cx="95.7" cy="137.7" rx="5.0" ry="3.4" fill="#4f9c9c" stroke="#f0fffd" stroke-width="0.9" transform="rotate(135 95.7 137.7)"/><ellipse cx="122.9" cy="85.8" rx="2.7" ry="2.0" fill="#62b0ae" stroke="#d6f6f2" stroke-width="0.7" transform="rotate(45 122.9 85.8)"/><ellipse cx="72.0" cy="-4.8" rx="2.6" ry="1.9" fill="#357a7e" stroke="#d6f6f2" stroke-width="0.7" transform="rotate(47 72.0 -4.8)"/><ellipse cx="18.7" cy="64.2" rx="4.9" ry="3.8" fill="#357a7e" stroke="#b8ece6" stroke-width="0.9" transform="rotate(103 18.7 64.2)"/><ellipse cx="71.9" cy="55.7" rx="3.7" ry="3.5" fill="#6cbab6" stroke="#a0dcd6" stroke-width="0.9" transform="rotate(103 71.9 55.7)"/><ellipse cx="14.8" cy="180.5" rx="4.7" ry="4.4" fill="#3f8a8c" stroke="#a0dcd6" stroke-width="0.9" transform="rotate(12 14.8 180.5)"/><ellipse cx="100.4" cy="130.2" rx="5.7" ry="5.2" fill="#6cbab6" stroke="#f0fffd" stroke-width="0.7" transform="rotate(168 100.4 130.2)"/><ellipse cx="149.1" cy="32.4" rx="6.0" ry="5.5" fill="#62b0ae" stroke="#a0dcd6" stroke-width="1.1" transform="rotate(107 149.1 32.4)"/><ellipse cx="114.3" cy="163.2" rx="3.1" ry="2.2" fill="#62b0ae" stroke="#b8ece6" stroke-width="1.1" transform="rotate(33 114.3 163.2)"/><ellipse cx="152.6" cy="92.4" rx="3.6" ry="2.4" fill="#6cbab6" stroke="#d6f6f2" stroke-width="0.7" transform="rotate(0 152.6 92.4)"/><ellipse cx="108.3" cy="73.8" rx="3.1" ry="2.3" fill="#4f9c9c" stroke="#d6f6f2" stroke-width="1.1" transform="rotate(135 108.3 73.8)"/><ellipse cx="40.8" cy="99.7" rx="4.4" ry="2.7" fill="#6cbab6" stroke="#f0fffd" stroke-width="0.7" transform="rotate(106 40.8 99.7)"/><ellipse cx="52.3" cy="56.9" rx="5.6" ry="3.5" fill="#357a7e" stroke="#b8ece6" stroke-width="0.9" transform="rotate(134 52.3 56.9)"/><ellipse cx="137.9" cy="72.3" rx="6.4" ry="4.8" fill="#62b0ae" stroke="#f0fffd" stroke-width="1.1" transform="rotate(78 137.9 72.3)"/><ellipse cx="17.4" cy="4.2" rx="2.8" ry="1.8" fill="#3f8a8c" stroke="#b8ece6" stroke-width="0.9" transform="rotate(173 17.4 4.2)"/><ellipse cx="137.8" cy="81.7" rx="5.8" ry="5.5" fill="#357a7e" stroke="#d6f6f2" stroke-width="1.1" transform="rotate(121 137.8 81.7)"/><ellipse cx="25.8" cy="77.2" rx="4.3" ry="4.2" fill="#3f8a8c" stroke="#b8ece6" stroke-width="0.7" transform="rotate(74 25.8 77.2)"/><ellipse cx="145.8" cy="64.6" rx="5.5" ry="4.5" fill="#62b0ae" stroke="#a0dcd6" stroke-width="0.7" transform="rotate(65 145.8 64.6)"/><ellipse cx="39.8" cy="125.7" rx="2.9" ry="2.4" fill="#62b0ae" stroke="#f0fffd" stroke-width="1.1" transform="rotate(163 39.8 125.7)"/><ellipse cx="96.8" cy="44.8" rx="2.9" ry="1.9" fill="#4f9c9c" stroke="#d6f6f2" stroke-width="1.1" transform="rotate(45 96.8 44.8)"/><ellipse cx="36.3" cy="119.8" rx="5.8" ry="3.7" fill="#6cbab6" stroke="#d6f6f2" stroke-width="0.7" transform="rotate(40 36.3 119.8)"/><ellipse cx="-26.3" cy="138.5" rx="5.6" ry="5.4" fill="#62b0ae" stroke="#a0dcd6" stroke-width="0.7" transform="rotate(165 -26.3 138.5)"/><ellipse cx="96.5" cy="131.6" rx="5.3" ry="5.1" fill="#357a7e" stroke="#f0fffd" stroke-width="1.1" transform="rotate(3 96.5 131.6)"/><ellipse cx="2.6" cy="38.0" rx="3.8" ry="2.7" fill="#4f9c9c" stroke="#d6f6f2" stroke-width="0.7" transform="rotate(87 2.6 38.0)"/><ellipse cx="18.4" cy="116.0" rx="4.7" ry="4.3" fill="#4f9c9c" stroke="#f0fffd" stroke-width="0.7" transform="rotate(156 18.4 116.0)"/><ellipse cx="67.9" cy="184.0" rx="4.7" ry="3.4" fill="#62b0ae" stroke="#b8ece6" stroke-width="1.1" transform="rotate(131 67.9 184.0)"/><ellipse cx="61.8" cy="60.8" rx="6.4" ry="5.3" fill="#6cbab6" stroke="#b8ece6" stroke-width="0.7" transform="rotate(160 61.8 60.8)"/><ellipse cx="84.0" cy="12.9" rx="3.0" ry="2.7" fill="#357a7e" stroke="#a0dcd6" stroke-width="0.9" transform="rotate(23 84.0 12.9)"/><ellipse cx="4.5" cy="173.9" rx="4.4" ry="4.3" fill="#3f8a8c" stroke="#a0dcd6" stroke-width="0.7" transform="rotate(61 4.5 173.9)"/><ellipse cx="-26.6" cy="69.0" rx="4.7" ry="3.2" fill="#6cbab6" stroke="#f0fffd" stroke-width="1.1" transform="rotate(85 -26.6 69.0)"/><ellipse cx="127.5" cy="151.8" rx="5.8" ry="4.0" fill="#62b0ae" stroke="#f0fffd" stroke-width="1.1" transform="rotate(92 127.5 151.8)"/><ellipse cx="107.7" cy="184.0" rx="4.7" ry="2.9" fill="#3f8a8c" stroke="#a0dcd6" stroke-width="0.7" transform="rotate(168 107.7 184.0)"/><ellipse cx="71.4" cy="60.3" rx="5.9" ry="3.9" fill="#357a7e" stroke="#d6f6f2" stroke-width="0.9" transform="rotate(119 71.4 60.3)"/><ellipse cx="54.0" cy="93.2" rx="3.0" ry="2.2" fill="#357a7e" stroke="#b8ece6" stroke-width="0.7" transform="rotate(67 54.0 93.2)"/><ellipse cx="114.4" cy="75.7" rx="2.7" ry="2.1" fill="#3f8a8c" stroke="#b8ece6" stroke-width="0.9" transform="rotate(153 114.4 75.7)"/><ellipse cx="52.9" cy="121.0" rx="6.1" ry="5.5" fill="#6cbab6" stroke="#a0dcd6" stroke-width="0.9" transform="rotate(118 52.9 121.0)"/><ellipse cx="129.0" cy="20.0" rx="4.1" ry="3.4" fill="#357a7e" stroke="#d6f6f2" stroke-width="1.1" transform="rotate(84 129.0 20.0)"/><ellipse cx="2.3" cy="126.7" rx="6.1" ry="4.4" fill="#62b0ae" stroke="#d6f6f2" stroke-width="1.1" transform="rotate(110 2.3 126.7)"/><ellipse cx="-3.0" cy="44.6" rx="5.5" ry="3.8" fill="#62b0ae" stroke="#d6f6f2" stroke-width="0.9" transform="rotate(62 -3.0 44.6)"/><ellipse cx="12.1" cy="139.9" rx="2.7" ry="2.2" fill="#3f8a8c" stroke="#b8ece6" stroke-width="1.1" transform="rotate(101 12.1 139.9)"/><ellipse cx="144.6" cy="25.7" rx="6.5" ry="5.4" fill="#62b0ae" stroke="#a0dcd6" stroke-width="0.7" transform="rotate(56 144.6 25.7)"/><ellipse cx="-3.7" cy="135.6" rx="3.0" ry="2.4" fill="#3f8a8c" stroke="#d6f6f2" stroke-width="0.7" transform="rotate(31 -3.7 135.6)"/><ellipse cx="-17.9" cy="50.6" rx="4.3" ry="3.8" fill="#62b0ae" stroke="#b8ece6" stroke-width="0.7" transform="rotate(83 -17.9 50.6)"/><ellipse cx="32.5" cy="110.6" rx="4.3" ry="2.8" fill="#6cbab6" stroke="#a0dcd6" stroke-width="1.1" transform="rotate(149 32.5 110.6)"/><ellipse cx="53.6" cy="140.4" rx="4.3" ry="3.2" fill="#62b0ae" stroke="#f0fffd" stroke-width="0.7" transform="rotate(120 53.6 140.4)"/><ellipse cx="98.9" cy="190.4" rx="5.9" ry="4.3" fill="#3f8a8c" stroke="#b8ece6" stroke-width="0.9" transform="rotate(120 98.9 190.4)"/><ellipse cx="62.8" cy="87.8" rx="5.3" ry="4.3" fill="#6cbab6" stroke="#b8ece6" stroke-width="0.7" transform="rotate(49 62.8 87.8)"/><ellipse cx="171.9" cy="80.7" rx="5.1" ry="5.0" fill="#62b0ae" stroke="#f0fffd" stroke-width="0.9" transform="rotate(107 171.9 80.7)"/><ellipse cx="128.3" cy="162.0" rx="5.3" ry="3.3" fill="#357a7e" stroke="#a0dcd6" stroke-width="0.7" transform="rotate(78 128.3 162.0)"/><ellipse cx="58.0" cy="65.1" rx="3.6" ry="3.3" fill="#4f9c9c" stroke="#f0fffd" stroke-width="0.9" transform="rotate(169 58.0 65.1)"/><ellipse cx="125.5" cy="145.4" rx="4.6" ry="4.0" fill="#62b0ae" stroke="#b8ece6" stroke-width="0.9" transform="rotate(33 125.5 145.4)"/><ellipse cx="140.0" cy="140.4" rx="6.4" ry="5.2" fill="#357a7e" stroke="#d6f6f2" stroke-width="0.7" transform="rotate(1 140.0 140.4)"/><ellipse cx="52.8" cy="174.1" rx="3.5" ry="2.3" fill="#6cbab6" stroke="#d6f6f2" stroke-width="0.7" transform="rotate(62 52.8 174.1)"/><ellipse cx="65.9" cy="55.0" rx="2.6" ry="2.2" fill="#4f9c9c" stroke="#d6f6f2" stroke-width="1.1" transform="rotate(98 65.9 55.0)"/><ellipse cx="73.2" cy="93.4" rx="2.7" ry="2.0" fill="#3f8a8c" stroke="#f0fffd" stroke-width="0.9" transform="rotate(8 73.2 93.4)"/><ellipse cx="-3.7" cy="93.4" rx="5.9" ry="4.9" fill="#6cbab6" stroke="#b8ece6" stroke-width="0.7" transform="rotate(28 -3.7 93.4)"/><ellipse cx="77.4" cy="176.3" rx="4.3" ry="3.0" fill="#62b0ae" stroke="#b8ece6" stroke-width="1.1" transform="rotate(56 77.4 176.3)"/><ellipse cx="-7.4" cy="37.3" rx="3.5" ry="2.9" fill="#4f9c9c" stroke="#d6f6f2" stroke-width="0.7" transform="rotate(83 -7.4 37.3)"/><ellipse cx="107.4" cy="100.2" rx="4.5" ry="4.0" fill="#357a7e" stroke="#a0dcd6" stroke-width="0.7" transform="rotate(18 107.4 100.2)"/><ellipse cx="84.0" cy="124.9" rx="5.1" ry="4.3" fill="#6cbab6" stroke="#b8ece6" stroke-width="0.7" transform="rotate(79 84.0 124.9)"/><ellipse cx="47.8" cy="33.6" rx="5.8" ry="5.2" fill="#6cbab6" stroke="#f0fffd" stroke-width="0.9" transform="rotate(22 47.8 33.6)"/><ellipse cx="-13.5" cy="90.5" rx="4.0" ry="3.2" fill="#4f9c9c" stroke="#b8ece6" stroke-width="1.1" transform="rotate(152 -13.5 90.5)"/><ellipse cx="156.1" cy="130.8" rx="4.1" ry="3.7" fill="#62b0ae" stroke="#b8ece6" stroke-width="0.7" transform="rotate(32 156.1 130.8)"/><ellipse cx="75.1" cy="24.6" rx="6.4" ry="5.2" fill="#4f9c9c" stroke="#a0dcd6" stroke-width="0.7" transform="rotate(0 75.1 24.6)"/><ellipse cx="107.3" cy="65.2" rx="3.1" ry="2.4" fill="#357a7e" stroke="#f0fffd" stroke-width="0.7" transform="rotate(8 107.3 65.2)"/><ellipse cx="52.4" cy="12.1" rx="6.4" ry="4.6" fill="#6cbab6" stroke="#b8ece6" stroke-width="0.7" transform="rotate(141 52.4 12.1)"/><ellipse cx="-14.7" cy="143.7" rx="2.8" ry="2.1" fill="#4f9c9c" stroke="#f0fffd" stroke-width="1.1" transform="rotate(55 -14.7 143.7)"/><ellipse cx="55.3" cy="106.3" rx="5.1" ry="4.2" fill="#3f8a8c" stroke="#f0fffd" stroke-width="1.1" transform="rotate(45 55.3 106.3)"/><ellipse cx="15.7" cy="139.2" rx="5.9" ry="5.4" fill="#357a7e" stroke="#a0dcd6" stroke-width="0.7" transform="rotate(107 15.7 139.2)"/><ellipse cx="94.0" cy="150.2" rx="4.7" ry="3.2" fill="#4f9c9c" stroke="#a0dcd6" stroke-width="0.7" transform="rotate(152 94.0 150.2)"/><ellipse cx="44.9" cy="161.1" rx="4.3" ry="2.9" fill="#4f9c9c" stroke="#a0dcd6" stroke-width="0.9" transform="rotate(107 44.9 161.1)"/><ellipse cx="61.0" cy="72.6" rx="4.0" ry="3.2" fill="#62b0ae" stroke="#d6f6f2" stroke-width="1.1" transform="rotate(67 61.0 72.6)"/><ellipse cx="3.1" cy="65.9" rx="5.1" ry="3.3" fill="#4f9c9c" stroke="#f0fffd" stroke-width="0.7" transform="rotate(39 3.1 65.9)"/><ellipse cx="85.0" cy="8.2" rx="3.0" ry="1.9" fill="#4f9c9c" stroke="#d6f6f2" stroke-width="0.9" transform="rotate(98 85.0 8.2)"/><ellipse cx="111.7" cy="41.9" rx="4.0" ry="2.9" fill="#62b0ae" stroke="#d6f6f2" stroke-width="1.1" transform="rotate(61 111.7 41.9)"/><ellipse cx="97.3" cy="162.1" rx="4.6" ry="3.1" fill="#4f9c9c" stroke="#d6f6f2" stroke-width="0.9" transform="rotate(108 97.3 162.1)"/><ellipse cx="45.6" cy="29.6" rx="4.6" ry="3.3" fill="#6cbab6" stroke="#f0fffd" stroke-width="0.9" transform="rotate(170 45.6 29.6)"/><ellipse cx="115.2" cy="53.6" rx="5.8" ry="4.4" fill="#6cbab6" stroke="#a0dcd6" stroke-width="0.9" transform="rotate(132 115.2 53.6)"/><ellipse cx="84.7" cy="192.8" rx="3.7" ry="2.4" fill="#62b0ae" stroke="#b8ece6" stroke-width="0.7" transform="rotate(161 84.7 192.8)"/><ellipse cx="140.8" cy="101.1" rx="5.5" ry="5.4" fill="#62b0ae" stroke="#d6f6f2" stroke-width="0.7" transform="rotate(142 140.8 101.1)"/><ellipse cx="26.8" cy="21.2" rx="6.3" ry="5.8" fill="#62b0ae" stroke="#b8ece6" stroke-width="0.9" transform="rotate(23 26.8 21.2)"/><ellipse cx="138.4" cy="160.1" rx="4.5" ry="4.3" fill="#357a7e" stroke="#a0dcd6" stroke-width="0.9" transform="rotate(127 138.4 160.1)"/><ellipse cx="85.5" cy="182.0" rx="6.2" ry="5.6" fill="#4f9c9c" stroke="#a0dcd6" stroke-width="0.9" transform="rotate(170 85.5 182.0)"/><ellipse cx="-17.2" cy="84.7" rx="5.5" ry="4.3" fill="#357a7e" stroke="#b8ece6" stroke-width="0.9" transform="rotate(179 -17.2 84.7)"/><ellipse cx="35.1" cy="186.6" rx="6.2" ry="4.6" fill="#357a7e" stroke="#d6f6f2" stroke-width="0.7" transform="rotate(103 35.1 186.6)"/><ellipse cx="32.9" cy="132.1" rx="5.9" ry="5.2" fill="#62b0ae" stroke="#a0dcd6" stroke-width="0.9" transform="rotate(18 32.9 132.1)"/><ellipse cx="62.3" cy="107.0" rx="6.1" ry="4.3" fill="#6cbab6" stroke="#f0fffd" stroke-width="1.1" transform="rotate(47 62.3 107.0)"/><ellipse cx="7.9" cy="151.2" rx="3.9" ry="3.2" fill="#62b0ae" stroke="#d6f6f2" stroke-width="0.7" transform="rotate(19 7.9 151.2)"/><ellipse cx="10.5" cy="39.5" rx="4.1" ry="2.9" fill="#357a7e" stroke="#d6f6f2" stroke-width="0.9" transform="rotate(115 10.5 39.5)"/><ellipse cx="122.6" cy="62.4" rx="2.7" ry="1.9" fill="#4f9c9c" stroke="#f0fffd" stroke-width="0.9" transform="rotate(121 122.6 62.4)"/><ellipse cx="131.6" cy="180.6" rx="3.3" ry="2.9" fill="#4f9c9c" stroke="#f0fffd" stroke-width="0.7" transform="rotate(133 131.6 180.6)"/><ellipse cx="67.8" cy="95.4" rx="4.1" ry="3.8" fill="#4f9c9c" stroke="#a0dcd6" stroke-width="1.1" transform="rotate(20 67.8 95.4)"/><ellipse cx="-5.9" cy="65.5" rx="5.8" ry="4.3" fill="#62b0ae" stroke="#f0fffd" stroke-width="0.7" transform="rotate(80 -5.9 65.5)"/><ellipse cx="94.6" cy="186.9" rx="4.1" ry="3.8" fill="#4f9c9c" stroke="#b8ece6" stroke-width="0.7" transform="rotate(85 94.6 186.9)"/><ellipse cx="-11.5" cy="100.8" rx="4.8" ry="3.4" fill="#62b0ae" stroke="#a0dcd6" stroke-width="1.1" transform="rotate(171 -11.5 100.8)"/><ellipse cx="76.1" cy="170.8" rx="3.5" ry="3.4" fill="#62b0ae" stroke="#b8ece6" stroke-width="1.1" transform="rotate(32 76.1 170.8)"/><ellipse cx="168.4" cy="89.3" rx="5.8" ry="5.4" fill="#62b0ae" stroke="#d6f6f2" stroke-width="1.1" transform="rotate(173 168.4 89.3)"/><ellipse cx="107.0" cy="156.4" rx="6.0" ry="4.4" fill="#357a7e" stroke="#d6f6f2" stroke-width="0.9" transform="rotate(129 107.0 156.4)"/><ellipse cx="39.0" cy="11.8" rx="3.5" ry="3.1" fill="#62b0ae" stroke="#f0fffd" stroke-width="0.9" transform="rotate(46 39.0 11.8)"/><ellipse cx="73.4" cy="38.1" rx="5.9" ry="5.0" fill="#4f9c9c" stroke="#a0dcd6" stroke-width="0.7" transform="rotate(159 73.4 38.1)"/><ellipse cx="59.3" cy="185.2" rx="3.1" ry="2.7" fill="#4f9c9c" stroke="#a0dcd6" stroke-width="0.9" transform="rotate(59 59.3 185.2)"/><ellipse cx="152.6" cy="82.3" rx="4.4" ry="3.8" fill="#4f9c9c" stroke="#f0fffd" stroke-width="0.9" transform="rotate(64 152.6 82.3)"/><ellipse cx="4.4" cy="145.7" rx="6.2" ry="4.1" fill="#4f9c9c" stroke="#d6f6f2" stroke-width="0.7" transform="rotate(10 4.4 145.7)"/><ellipse cx="43.3" cy="129.7" rx="4.7" ry="3.4" fill="#3f8a8c" stroke="#a0dcd6" stroke-width="0.7" transform="rotate(138 43.3 129.7)"/><ellipse cx="116.2" cy="181.6" rx="2.8" ry="1.9" fill="#357a7e" stroke="#f0fffd" stroke-width="1.1" transform="rotate(158 116.2 181.6)"/><ellipse cx="110.6" cy="146.4" rx="4.8" ry="4.4" fill="#4f9c9c" stroke="#f0fffd" stroke-width="0.7" transform="rotate(113 110.6 146.4)"/><ellipse cx="101.8" cy="121.3" rx="6.2" ry="4.8" fill="#62b0ae" stroke="#a0dcd6" stroke-width="0.7" transform="rotate(82 101.8 121.3)"/><ellipse cx="57.5" cy="194.3" rx="4.8" ry="3.4" fill="#62b0ae" stroke="#a0dcd6" stroke-width="0.7" transform="rotate(20 57.5 194.3)"/><ellipse cx="22.8" cy="149.0" rx="3.5" ry="2.2" fill="#3f8a8c" stroke="#b8ece6" stroke-width="0.9" transform="rotate(171 22.8 149.0)"/><ellipse cx="80.8" cy="119.8" rx="4.4" ry="3.5" fill="#4f9c9c" stroke="#a0dcd6" stroke-width="0.9" transform="rotate(89 80.8 119.8)"/><ellipse cx="-4.8" cy="153.3" rx="2.7" ry="1.9" fill="#6cbab6" stroke="#f0fffd" stroke-width="0.9" transform="rotate(63 -4.8 153.3)"/><ellipse cx="-29.0" cy="132.9" rx="5.8" ry="5.5" fill="#3f8a8c" stroke="#b8ece6" stroke-width="0.7" transform="rotate(137 -29.0 132.9)"/><ellipse cx="99.3" cy="110.8" rx="3.9" ry="2.5" fill="#6cbab6" stroke="#f0fffd" stroke-width="0.9" transform="rotate(2 99.3 110.8)"/><ellipse cx="161.4" cy="134.7" rx="4.0" ry="3.7" fill="#6cbab6" stroke="#f0fffd" stroke-width="1.1" transform="rotate(126 161.4 134.7)"/><ellipse cx="90.9" cy="35.6" rx="5.8" ry="4.4" fill="#3f8a8c" stroke="#a0dcd6" stroke-width="1.1" transform="rotate(104 90.9 35.6)"/><ellipse cx="111.7" cy="69.4" rx="2.6" ry="1.8" fill="#6cbab6" stroke="#b8ece6" stroke-width="0.9" transform="rotate(94 111.7 69.4)"/><ellipse cx="57.8" cy="167.9" rx="6.5" ry="4.7" fill="#357a7e" stroke="#f0fffd" stroke-width="0.7" transform="rotate(167 57.8 167.9)"/><ellipse cx="117.1" cy="127.7" rx="3.8" ry="2.4" fill="#4f9c9c" stroke="#b8ece6" stroke-width="0.7" transform="rotate(139 117.1 127.7)"/><ellipse cx="85.0" cy="149.0" rx="3.9" ry="2.9" fill="#4f9c9c" stroke="#b8ece6" stroke-width="0.7" transform="rotate(110 85.0 149.0)"/><ellipse cx="59.5" cy="103.7" rx="2.7" ry="2.7" fill="#3f8a8c" stroke="#f0fffd" stroke-width="0.7" transform="rotate(5 59.5 103.7)"/><ellipse cx="27.4" cy="185.2" rx="5.5" ry="4.3" fill="#3f8a8c" stroke="#f0fffd" stroke-width="0.7" transform="rotate(127 27.4 185.2)"/><ellipse cx="52.3" cy="33.7" rx="3.2" ry="2.8" fill="#62b0ae" stroke="#d6f6f2" stroke-width="0.9" transform="rotate(46 52.3 33.7)"/><ellipse cx="-21.2" cy="81.5" rx="2.5" ry="1.7" fill="#357a7e" stroke="#d6f6f2" stroke-width="1.1" transform="rotate(88 -21.2 81.5)"/><ellipse cx="131.5" cy="18.1" rx="5.0" ry="3.3" fill="#6cbab6" stroke="#d6f6f2" stroke-width="1.1" transform="rotate(176 131.5 18.1)"/><ellipse cx="-13.0" cy="131.2" rx="4.4" ry="3.3" fill="#357a7e" stroke="#b8ece6" stroke-width="1.1" transform="rotate(146 -13.0 131.2)"/><ellipse cx="86.4" cy="87.0" rx="4.6" ry="3.3" fill="#357a7e" stroke="#a0dcd6" stroke-width="0.7" transform="rotate(152 86.4 87.0)"/><ellipse cx="60.3" cy="115.1" rx="4.6" ry="4.2" fill="#62b0ae" stroke="#f0fffd" stroke-width="0.9" transform="rotate(48 60.3 115.1)"/><ellipse cx="159.4" cy="90.0" rx="4.1" ry="2.6" fill="#4f9c9c" stroke="#a0dcd6" stroke-width="0.7" transform="rotate(166 159.4 90.0)"/><ellipse cx="128.3" cy="168.6" rx="3.0" ry="3.0" fill="#3f8a8c" stroke="#f0fffd" stroke-width="0.7" transform="rotate(47 128.3 168.6)"/><ellipse cx="46.6" cy="0.6" rx="3.5" ry="2.4" fill="#62b0ae" stroke="#a0dcd6" stroke-width="0.7" transform="rotate(109 46.6 0.6)"/><ellipse cx="62.0" cy="138.5" rx="5.1" ry="4.2" fill="#3f8a8c" stroke="#d6f6f2" stroke-width="0.9" transform="rotate(61 62.0 138.5)"/><ellipse cx="45.0" cy="96.5" rx="2.7" ry="2.5" fill="#6cbab6" stroke="#d6f6f2" stroke-width="0.7" transform="rotate(93 45.0 96.5)"/><ellipse cx="49.4" cy="131.5" rx="6.2" ry="4.0" fill="#4f9c9c" stroke="#f0fffd" stroke-width="0.7" transform="rotate(157 49.4 131.5)"/><ellipse cx="106.8" cy="44.8" rx="5.0" ry="3.2" fill="#357a7e" stroke="#d6f6f2" stroke-width="1.1" transform="rotate(52 106.8 44.8)"/><ellipse cx="39.6" cy="164.5" rx="6.3" ry="4.8" fill="#4f9c9c" stroke="#a0dcd6" stroke-width="0.9" transform="rotate(179 39.6 164.5)"/><ellipse cx="31.5" cy="55.1" rx="3.6" ry="3.2" fill="#6cbab6" stroke="#b8ece6" stroke-width="0.7" transform="rotate(32 31.5 55.1)"/><ellipse cx="34.8" cy="76.5" rx="2.7" ry="1.9" fill="#62b0ae" stroke="#d6f6f2" stroke-width="0.9" transform="rotate(156 34.8 76.5)"/><ellipse cx="41.2" cy="172.5" rx="2.5" ry="2.3" fill="#3f8a8c" stroke="#b8ece6" stroke-width="0.9" transform="rotate(79 41.2 172.5)"/><ellipse cx="98.3" cy="183.3" rx="2.8" ry="2.1" fill="#62b0ae" stroke="#a0dcd6" stroke-width="1.1" transform="rotate(104 98.3 183.3)"/><ellipse cx="105.1" cy="135.2" rx="3.0" ry="2.4" fill="#3f8a8c" stroke="#f0fffd" stroke-width="0.9" transform="rotate(60 105.1 135.2)"/><ellipse cx="123.1" cy="144.3" rx="3.0" ry="2.6" fill="#62b0ae" stroke="#d6f6f2" stroke-width="0.9" transform="rotate(57 123.1 144.3)"/><ellipse cx="-7.7" cy="162.2" rx="5.5" ry="4.3" fill="#6cbab6" stroke="#b8ece6" stroke-width="0.7" transform="rotate(93 -7.7 162.2)"/><ellipse cx="57.2" cy="160.4" rx="4.3" ry="3.7" fill="#62b0ae" stroke="#f0fffd" stroke-width="0.7" transform="rotate(172 57.2 160.4)"/><ellipse cx="150.4" cy="103.7" rx="4.0" ry="3.0" fill="#6cbab6" stroke="#f0fffd" stroke-width="0.9" transform="rotate(87 150.4 103.7)"/><ellipse cx="92.0" cy="75.3" rx="5.6" ry="4.4" fill="#3f8a8c" stroke="#d6f6f2" stroke-width="0.7" transform="rotate(22 92.0 75.3)"/><ellipse cx="162.6" cy="105.4" rx="2.6" ry="2.6" fill="#6cbab6" stroke="#f0fffd" stroke-width="0.7" transform="rotate(171 162.6 105.4)"/><ellipse cx="-10.9" cy="111.9" rx="3.9" ry="3.1" fill="#357a7e" stroke="#f0fffd" stroke-width="1.1" transform="rotate(155 -10.9 111.9)"/><ellipse cx="73.9" cy="118.4" rx="2.6" ry="2.4" fill="#357a7e" stroke="#a0dcd6" stroke-width="1.1" transform="rotate(138 73.9 118.4)"/><ellipse cx="157.2" cy="94.7" rx="2.8" ry="2.5" fill="#357a7e" stroke="#a0dcd6" stroke-width="0.7" transform="rotate(132 157.2 94.7)"/><ellipse cx="96.6" cy="198.0" rx="4.0" ry="2.5" fill="#4f9c9c" stroke="#a0dcd6" stroke-width="0.7" transform="rotate(0 96.6 198.0)"/><ellipse cx="46.5" cy="64.1" rx="5.0" ry="4.5" fill="#62b0ae" stroke="#a0dcd6" stroke-width="0.7" transform="rotate(110 46.5 64.1)"/><ellipse cx="139.5" cy="102.9" rx="5.9" ry="4.4" fill="#3f8a8c" stroke="#d6f6f2" stroke-width="1.1" transform="rotate(143 139.5 102.9)"/><ellipse cx="127.5" cy="144.3" rx="5.7" ry="3.5" fill="#62b0ae" stroke="#d6f6f2" stroke-width="0.7" transform="rotate(33 127.5 144.3)"/><ellipse cx="-14.4" cy="90.8" rx="3.7" ry="2.6" fill="#62b0ae" stroke="#b8ece6" stroke-width="0.9" transform="rotate(119 -14.4 90.8)"/><ellipse cx="74.3" cy="116.9" rx="4.3" ry="3.4" fill="#6cbab6" stroke="#d6f6f2" stroke-width="0.7" transform="rotate(128 74.3 116.9)"/><ellipse cx="107.3" cy="89.0" rx="4.6" ry="3.5" fill="#357a7e" stroke="#d6f6f2" stroke-width="0.7" transform="rotate(58 107.3 89.0)"/><ellipse cx="85.8" cy="61.6" rx="5.4" ry="3.9" fill="#357a7e" stroke="#b8ece6" stroke-width="1.1" transform="rotate(7 85.8 61.6)"/><ellipse cx="5.6" cy="98.7" rx="6.1" ry="4.6" fill="#6cbab6" stroke="#d6f6f2" stroke-width="0.9" transform="rotate(20 5.6 98.7)"/><ellipse cx="25.7" cy="85.6" rx="5.1" ry="4.9" fill="#357a7e" stroke="#f0fffd" stroke-width="0.7" transform="rotate(167 25.7 85.6)"/><ellipse cx="-28.2" cy="57.1" rx="3.1" ry="2.3" fill="#6cbab6" stroke="#d6f6f2" stroke-width="0.9" transform="rotate(68 -28.2 57.1)"/><ellipse cx="65.3" cy="185.7" rx="4.0" ry="3.0" fill="#357a7e" stroke="#a0dcd6" stroke-width="1.1" transform="rotate(110 65.3 185.7)"/><ellipse cx="113.1" cy="134.8" rx="3.7" ry="2.5" fill="#6cbab6" stroke="#d6f6f2" stroke-width="0.9" transform="rotate(140 113.1 134.8)"/><ellipse cx="93.8" cy="44.3" rx="5.2" ry="3.8" fill="#62b0ae" stroke="#d6f6f2" stroke-width="0.9" transform="rotate(58 93.8 44.3)"/><ellipse cx="-2.9" cy="83.6" rx="5.4" ry="4.5" fill="#62b0ae" stroke="#a0dcd6" stroke-width="0.7" transform="rotate(1 -2.9 83.6)"/><ellipse cx="16.2" cy="163.4" rx="3.5" ry="3.3" fill="#6cbab6" stroke="#f0fffd" stroke-width="0.7" transform="rotate(155 16.2 163.4)"/><ellipse cx="155.7" cy="127.5" rx="3.2" ry="2.0" fill="#3f8a8c" stroke="#f0fffd" stroke-width="0.7" transform="rotate(54 155.7 127.5)"/><ellipse cx="63.7" cy="145.3" rx="5.7" ry="4.3" fill="#357a7e" stroke="#f0fffd" stroke-width="0.9" transform="rotate(146 63.7 145.3)"/><ellipse cx="143.7" cy="139.9" rx="6.4" ry="3.9" fill="#62b0ae" stroke="#f0fffd" stroke-width="0.7" transform="rotate(39 143.7 139.9)"/><ellipse cx="11.7" cy="23.5" rx="2.7" ry="2.1" fill="#357a7e" stroke="#d6f6f2" stroke-width="0.7" transform="rotate(141 11.7 23.5)"/><ellipse cx="50.8" cy="126.2" rx="5.4" ry="4.5" fill="#6cbab6" stroke="#b8ece6" stroke-width="0.7" transform="rotate(122 50.8 126.2)"/><ellipse cx="41.9" cy="36.7" rx="6.4" ry="5.9" fill="#3f8a8c" stroke="#b8ece6" stroke-width="0.9" transform="rotate(175 41.9 36.7)"/><ellipse cx="4.8" cy="158.9" rx="4.3" ry="3.3" fill="#357a7e" stroke="#d6f6f2" stroke-width="1.1" transform="rotate(18 4.8 158.9)"/><ellipse cx="162.5" cy="70.1" rx="3.9" ry="3.5" fill="#6cbab6" stroke="#d6f6f2" stroke-width="0.9" transform="rotate(79 162.5 70.1)"/><ellipse cx="20.4" cy="25.1" rx="3.0" ry="2.3" fill="#4f9c9c" stroke="#d6f6f2" stroke-width="1.1" transform="rotate(35 20.4 25.1)"/><ellipse cx="138.8" cy="163.4" rx="6.0" ry="3.7" fill="#357a7e" stroke="#a0dcd6" stroke-width="0.9" transform="rotate(96 138.8 163.4)"/><ellipse cx="57.2" cy="54.1" rx="4.5" ry="3.6" fill="#357a7e" stroke="#a0dcd6" stroke-width="0.9" transform="rotate(26 57.2 54.1)"/><ellipse cx="116.7" cy="35.7" rx="5.6" ry="3.4" fill="#62b0ae" stroke="#b8ece6" stroke-width="0.7" transform="rotate(166 116.7 35.7)"/><ellipse cx="20.1" cy="63.7" rx="4.6" ry="3.8" fill="#357a7e" stroke="#a0dcd6" stroke-width="0.9" transform="rotate(91 20.1 63.7)"/><ellipse cx="125.0" cy="169.6" rx="5.3" ry="3.4" fill="#357a7e" stroke="#f0fffd" stroke-width="0.9" transform="rotate(59 125.0 169.6)"/><ellipse cx="21.2" cy="162.4" rx="4.1" ry="4.0" fill="#3f8a8c" stroke="#f0fffd" stroke-width="0.9" transform="rotate(96 21.2 162.4)"/><ellipse cx="81.1" cy="143.4" rx="6.1" ry="6.1" fill="#3f8a8c" stroke="#b8ece6" stroke-width="1.1" transform="rotate(116 81.1 143.4)"/><ellipse cx="116.5" cy="138.3" rx="3.2" ry="2.8" fill="#6cbab6" stroke="#d6f6f2" stroke-width="1.1" transform="rotate(38 116.5 138.3)"/><ellipse cx="64.7" cy="80.1" rx="4.8" ry="3.5" fill="#6cbab6" stroke="#a0dcd6" stroke-width="0.7" transform="rotate(114 64.7 80.1)"/><ellipse cx="79.5" cy="-6.7" rx="5.7" ry="5.2" fill="#3f8a8c" stroke="#b8ece6" stroke-width="0.7" transform="rotate(51 79.5 -6.7)"/><ellipse cx="62.4" cy="-1.3" rx="3.9" ry="3.2" fill="#4f9c9c" stroke="#b8ece6" stroke-width="0.9" transform="rotate(176 62.4 -1.3)"/><ellipse cx="114.2" cy="132.1" rx="5.7" ry="3.6" fill="#62b0ae" stroke="#f0fffd" stroke-width="0.9" transform="rotate(5 114.2 132.1)"/><ellipse cx="101.0" cy="70.2" rx="5.2" ry="4.3" fill="#62b0ae" stroke="#f0fffd" stroke-width="0.9" transform="rotate(124 101.0 70.2)"/><ellipse cx="95.2" cy="100.6" rx="5.7" ry="5.4" fill="#6cbab6" stroke="#b8ece6" stroke-width="0.7" transform="rotate(139 95.2 100.6)"/><ellipse cx="-5.2" cy="34.3" rx="4.7" ry="3.4" fill="#4f9c9c" stroke="#f0fffd" stroke-width="0.9" transform="rotate(92 -5.2 34.3)"/><ellipse cx="-10.8" cy="73.9" rx="4.4" ry="3.9" fill="#62b0ae" stroke="#f0fffd" stroke-width="1.1" transform="rotate(129 -10.8 73.9)"/><ellipse cx="62.4" cy="44.9" rx="6.0" ry="5.0" fill="#3f8a8c" stroke="#d6f6f2" stroke-width="1.1" transform="rotate(18 62.4 44.9)"/><ellipse cx="124.9" cy="96.9" rx="6.2" ry="6.2" fill="#3f8a8c" stroke="#b8ece6" stroke-width="0.9" transform="rotate(90 124.9 96.9)"/><ellipse cx="161.1" cy="133.0" rx="5.2" ry="3.2" fill="#3f8a8c" stroke="#b8ece6" stroke-width="1.1" transform="rotate(36 161.1 133.0)"/><ellipse cx="28.4" cy="-0.4" rx="5.9" ry="4.6" fill="#6cbab6" stroke="#d6f6f2" stroke-width="1.1" transform="rotate(47 28.4 -0.4)"/><ellipse cx="60.6" cy="70.1" rx="5.0" ry="3.8" fill="#4f9c9c" stroke="#d6f6f2" stroke-width="0.9" transform="rotate(49 60.6 70.1)"/><ellipse cx="43.9" cy="98.1" rx="4.7" ry="3.1" fill="#6cbab6" stroke="#d6f6f2" stroke-width="0.9" transform="rotate(65 43.9 98.1)"/><ellipse cx="52.8" cy="40.5" rx="6.3" ry="5.9" fill="#6cbab6" stroke="#b8ece6" stroke-width="0.7" transform="rotate(155 52.8 40.5)"/><ellipse cx="9.7" cy="57.4" rx="5.2" ry="5.1" fill="#6cbab6" stroke="#f0fffd" stroke-width="0.7" transform="rotate(132 9.7 57.4)"/><ellipse cx="102.7" cy="76.1" rx="2.9" ry="2.9" fill="#62b0ae" stroke="#f0fffd" stroke-width="0.7" transform="rotate(106 102.7 76.1)"/><ellipse cx="77.7" cy="82.0" rx="5.3" ry="3.2" fill="#6cbab6" stroke="#d6f6f2" stroke-width="0.7" transform="rotate(55 77.7 82.0)"/><ellipse cx="122.3" cy="5.5" rx="4.1" ry="3.1" fill="#62b0ae" stroke="#b8ece6" stroke-width="0.7" transform="rotate(61 122.3 5.5)"/><ellipse cx="26.4" cy="70.0" rx="4.6" ry="3.6" fill="#62b0ae" stroke="#f0fffd" stroke-width="0.7" transform="rotate(106 26.4 70.0)"/><ellipse cx="93.9" cy="128.9" rx="3.5" ry="3.2" fill="#357a7e" stroke="#b8ece6" stroke-width="0.9" transform="rotate(47 93.9 128.9)"/><ellipse cx="42.8" cy="56.3" rx="3.5" ry="2.9" fill="#6cbab6" stroke="#f0fffd" stroke-width="0.7" transform="rotate(47 42.8 56.3)"/><ellipse cx="121.1" cy="118.4" rx="4.5" ry="4.2" fill="#4f9c9c" stroke="#d6f6f2" stroke-width="1.1" transform="rotate(23 121.1 118.4)"/><ellipse cx="72.2" cy="69.9" rx="3.5" ry="2.7" fill="#4f9c9c" stroke="#d6f6f2" stroke-width="0.7" transform="rotate(94 72.2 69.9)"/><ellipse cx="147.0" cy="132.2" rx="2.8" ry="2.1" fill="#357a7e" stroke="#b8ece6" stroke-width="1.1" transform="rotate(59 147.0 132.2)"/><ellipse cx="84.7" cy="39.5" rx="4.0" ry="3.2" fill="#62b0ae" stroke="#d6f6f2" stroke-width="0.7" transform="rotate(13 84.7 39.5)"/><ellipse cx="17.2" cy="145.4" rx="2.8" ry="1.7" fill="#4f9c9c" stroke="#b8ece6" stroke-width="0.7" transform="rotate(126 17.2 145.4)"/><ellipse cx="164.2" cy="52.7" rx="3.9" ry="3.6" fill="#4f9c9c" stroke="#b8ece6" stroke-width="0.9" transform="rotate(10 164.2 52.7)"/><ellipse cx="98.2" cy="128.3" rx="5.2" ry="3.9" fill="#357a7e" stroke="#f0fffd" stroke-width="0.7" transform="rotate(69 98.2 128.3)"/><ellipse cx="95.3" cy="69.3" rx="6.4" ry="4.2" fill="#62b0ae" stroke="#d6f6f2" stroke-width="0.9" transform="rotate(46 95.3 69.3)"/><ellipse cx="58.2" cy="173.9" rx="4.6" ry="4.2" fill="#6cbab6" stroke="#a0dcd6" stroke-width="1.1" transform="rotate(67 58.2 173.9)"/><ellipse cx="159.7" cy="146.4" rx="3.4" ry="3.4" fill="#3f8a8c" stroke="#f0fffd" stroke-width="1.1" transform="rotate(128 159.7 146.4)"/><ellipse cx="111.0" cy="86.9" rx="5.1" ry="4.0" fill="#3f8a8c" stroke="#f0fffd" stroke-width="1.1" transform="rotate(117 111.0 86.9)"/><ellipse cx="129.5" cy="95.0" rx="4.5" ry="2.9" fill="#3f8a8c" stroke="#b8ece6" stroke-width="0.9" transform="rotate(173 129.5 95.0)"/><ellipse cx="71.1" cy="82.3" rx="4.1" ry="2.7" fill="#3f8a8c" stroke="#f0fffd" stroke-width="0.7" transform="rotate(102 71.1 82.3)"/><ellipse cx="91.4" cy="183.0" rx="2.6" ry="2.4" fill="#4f9c9c" stroke="#a0dcd6" stroke-width="0.9" transform="rotate(156 91.4 183.0)"/><ellipse cx="-11.8" cy="114.2" rx="3.2" ry="2.3" fill="#3f8a8c" stroke="#b8ece6" stroke-width="0.7" transform="rotate(86 -11.8 114.2)"/><ellipse cx="32.9" cy="61.7" rx="4.0" ry="3.4" fill="#357a7e" stroke="#f0fffd" stroke-width="0.9" transform="rotate(42 32.9 61.7)"/><ellipse cx="114.8" cy="55.9" rx="4.8" ry="3.9" fill="#357a7e" stroke="#a0dcd6" stroke-width="0.9" transform="rotate(65 114.8 55.9)"/><ellipse cx="119.5" cy="66.2" rx="3.4" ry="2.7" fill="#6cbab6" stroke="#b8ece6" stroke-width="1.1" transform="rotate(73 119.5 66.2)"/><ellipse cx="153.7" cy="59.1" rx="3.8" ry="2.5" fill="#6cbab6" stroke="#a0dcd6" stroke-width="0.9" transform="rotate(72 153.7 59.1)"/><ellipse cx="14.8" cy="34.2" rx="2.5" ry="2.0" fill="#357a7e" stroke="#d6f6f2" stroke-width="1.1" transform="rotate(166 14.8 34.2)"/><ellipse cx="132.2" cy="96.6" rx="4.5" ry="3.7" fill="#62b0ae" stroke="#a0dcd6" stroke-width="1.1" transform="rotate(145 132.2 96.6)"/><ellipse cx="128.6" cy="133.1" rx="4.5" ry="3.8" fill="#357a7e" stroke="#d6f6f2" stroke-width="0.7" transform="rotate(71 128.6 133.1)"/><ellipse cx="141.7" cy="119.4" rx="3.6" ry="3.0" fill="#3f8a8c" stroke="#b8ece6" stroke-width="0.9" transform="rotate(10 141.7 119.4)"/><ellipse cx="110.9" cy="67.4" rx="4.5" ry="3.7" fill="#357a7e" stroke="#f0fffd" stroke-width="0.7" transform="rotate(125 110.9 67.4)"/><ellipse cx="126.6" cy="175.4" rx="3.8" ry="3.7" fill="#6cbab6" stroke="#f0fffd" stroke-width="1.1" transform="rotate(55 126.6 175.4)"/><ellipse cx="-11.5" cy="124.7" rx="3.7" ry="3.4" fill="#4f9c9c" stroke="#b8ece6" stroke-width="1.1" transform="rotate(70 -11.5 124.7)"/><ellipse cx="99.9" cy="6.5" rx="3.2" ry="2.8" fill="#357a7e" stroke="#f0fffd" stroke-width="0.7" transform="rotate(5 99.9 6.5)"/><ellipse cx="13.4" cy="9.4" rx="4.4" ry="4.3" fill="#6cbab6" stroke="#a0dcd6" stroke-width="1.1" transform="rotate(16 13.4 9.4)"/><ellipse cx="126.2" cy="184.2" rx="3.5" ry="2.6" fill="#62b0ae" stroke="#a0dcd6" stroke-width="0.7" transform="rotate(156 126.2 184.2)"/><ellipse cx="74.4" cy="9.4" rx="6.4" ry="5.8" fill="#6cbab6" stroke="#b8ece6" stroke-width="1.1" transform="rotate(14 74.4 9.4)"/><ellipse cx="13.9" cy="132.9" rx="4.1" ry="4.0" fill="#3f8a8c" stroke="#f0fffd" stroke-width="1.1" transform="rotate(125 13.9 132.9)"/><ellipse cx="58.7" cy="50.7" rx="2.7" ry="2.4" fill="#4f9c9c" stroke="#a0dcd6" stroke-width="0.7" transform="rotate(59 58.7 50.7)"/><ellipse cx="83.3" cy="13.2" rx="5.3" ry="3.8" fill="#6cbab6" stroke="#a0dcd6" stroke-width="0.9" transform="rotate(176 83.3 13.2)"/><ellipse cx="44.7" cy="62.2" rx="5.2" ry="3.8" fill="#3f8a8c" stroke="#f0fffd" stroke-width="0.7" transform="rotate(6 44.7 62.2)"/><ellipse cx="121.3" cy="80.1" rx="5.0" ry="3.7" fill="#357a7e" stroke="#d6f6f2" stroke-width="0.9" transform="rotate(55 121.3 80.1)"/><ellipse cx="-4.0" cy="101.7" rx="2.6" ry="2.1" fill="#6cbab6" stroke="#d6f6f2" stroke-width="1.1" transform="rotate(134 -4.0 101.7)"/><ellipse cx="85.5" cy="142.9" rx="4.8" ry="3.5" fill="#4f9c9c" stroke="#a0dcd6" stroke-width="0.7" transform="rotate(86 85.5 142.9)"/><ellipse cx="57.2" cy="112.5" rx="4.6" ry="3.2" fill="#6cbab6" stroke="#a0dcd6" stroke-width="0.7" transform="rotate(121 57.2 112.5)"/><ellipse cx="158.8" cy="144.2" rx="4.2" ry="3.8" fill="#357a7e" stroke="#a0dcd6" stroke-width="1.1" transform="rotate(164 158.8 144.2)"/><ellipse cx="-31.5" cy="96.0" rx="6.3" ry="6.3" fill="#6cbab6" stroke="#a0dcd6" stroke-width="1.1" transform="rotate(22 -31.5 96.0)"/><ellipse cx="74.3" cy="53.8" rx="2.7" ry="2.2" fill="#4f9c9c" stroke="#b8ece6" stroke-width="0.9" transform="rotate(149 74.3 53.8)"/><ellipse cx="32.5" cy="176.6" rx="5.6" ry="4.4" fill="#3f8a8c" stroke="#d6f6f2" stroke-width="0.9" transform="rotate(27 32.5 176.6)"/><ellipse cx="105.6" cy="192.8" rx="3.5" ry="2.1" fill="#3f8a8c" stroke="#d6f6f2" stroke-width="0.9" transform="rotate(177 105.6 192.8)"/><ellipse cx="125.0" cy="36.3" rx="6.5" ry="4.9" fill="#357a7e" stroke="#b8ece6" stroke-width="1.1" transform="rotate(61 125.0 36.3)"/><ellipse cx="5.9" cy="39.0" rx="2.7" ry="1.9" fill="#6cbab6" stroke="#b8ece6" stroke-width="1.1" transform="rotate(121 5.9 39.0)"/><ellipse cx="22.3" cy="139.1" rx="5.5" ry="3.7" fill="#357a7e" stroke="#d6f6f2" stroke-width="0.7" transform="rotate(124 22.3 139.1)"/><ellipse cx="143.8" cy="21.0" rx="6.2" ry="4.5" fill="#3f8a8c" stroke="#f0fffd" stroke-width="0.7" transform="rotate(130 143.8 21.0)"/><ellipse cx="64.7" cy="17.8" rx="6.0" ry="3.7" fill="#4f9c9c" stroke="#f0fffd" stroke-width="0.7" transform="rotate(68 64.7 17.8)"/><ellipse cx="24.7" cy="146.9" rx="4.2" ry="3.1" fill="#357a7e" stroke="#a0dcd6" stroke-width="1.1" transform="rotate(5 24.7 146.9)"/><ellipse cx="48.5" cy="157.3" rx="5.6" ry="4.8" fill="#357a7e" stroke="#a0dcd6" stroke-width="1.1" transform="rotate(116 48.5 157.3)"/><ellipse cx="33.1" cy="20.2" rx="4.5" ry="4.0" fill="#357a7e" stroke="#d6f6f2" stroke-width="0.9" transform="rotate(58 33.1 20.2)"/><ellipse cx="154.4" cy="68.5" rx="5.1" ry="3.5" fill="#357a7e" stroke="#a0dcd6" stroke-width="0.9" transform="rotate(57 154.4 68.5)"/><ellipse cx="138.9" cy="136.8" rx="4.8" ry="2.9" fill="#62b0ae" stroke="#a0dcd6" stroke-width="0.9" transform="rotate(88 138.9 136.8)"/><ellipse cx="64.6" cy="187.4" rx="5.0" ry="3.6" fill="#4f9c9c" stroke="#a0dcd6" stroke-width="0.7" transform="rotate(111 64.6 187.4)"/><ellipse cx="50.5" cy="84.8" rx="5.8" ry="4.8" fill="#357a7e" stroke="#d6f6f2" stroke-width="1.1" transform="rotate(86 50.5 84.8)"/><ellipse cx="-9.4" cy="53.1" rx="3.5" ry="2.9" fill="#6cbab6" stroke="#a0dcd6" stroke-width="0.7" transform="rotate(34 -9.4 53.1)"/><ellipse cx="-8.2" cy="50.0" rx="5.7" ry="4.1" fill="#6cbab6" stroke="#d6f6f2" stroke-width="1.1" transform="rotate(87 -8.2 50.0)"/><ellipse cx="-4.6" cy="98.3" rx="3.2" ry="2.3" fill="#357a7e" stroke="#a0dcd6" stroke-width="0.9" transform="rotate(173 -4.6 98.3)"/><ellipse cx="41.1" cy="73.4" rx="4.3" ry="3.6" fill="#6cbab6" stroke="#a0dcd6" stroke-width="0.9" transform="rotate(90 41.1 73.4)"/><ellipse cx="133.3" cy="117.4" rx="2.5" ry="2.2" fill="#6cbab6" stroke="#b8ece6" stroke-width="0.7" transform="rotate(97 133.3 117.4)"/><ellipse cx="123.0" cy="165.6" rx="4.8" ry="3.9" fill="#6cbab6" stroke="#d6f6f2" stroke-width="0.9" transform="rotate(168 123.0 165.6)"/><ellipse cx="85.4" cy="33.4" rx="5.0" ry="3.4" fill="#6cbab6" stroke="#b8ece6" stroke-width="0.7" transform="rotate(30 85.4 33.4)"/><ellipse cx="4.4" cy="19.6" rx="2.6" ry="1.6" fill="#4f9c9c" stroke="#f0fffd" stroke-width="0.7" transform="rotate(178 4.4 19.6)"/><ellipse cx="30.2" cy="28.1" rx="3.7" ry="3.1" fill="#62b0ae" stroke="#b8ece6" stroke-width="0.9" transform="rotate(179 30.2 28.1)"/><ellipse cx="91.4" cy="43.4" rx="6.1" ry="3.7" fill="#357a7e" stroke="#f0fffd" stroke-width="1.1" transform="rotate(72 91.4 43.4)"/><ellipse cx="150.4" cy="89.4" rx="3.4" ry="2.2" fill="#4f9c9c" stroke="#f0fffd" stroke-width="0.9" transform="rotate(112 150.4 89.4)"/><ellipse cx="114.7" cy="184.6" rx="3.2" ry="2.5" fill="#6cbab6" stroke="#b8ece6" stroke-width="1.1" transform="rotate(180 114.7 184.6)"/><ellipse cx="77.4" cy="37.1" rx="3.8" ry="2.8" fill="#4f9c9c" stroke="#a0dcd6" stroke-width="0.7" transform="rotate(126 77.4 37.1)"/><ellipse cx="154.5" cy="121.8" rx="5.3" ry="3.4" fill="#3f8a8c" stroke="#d6f6f2" stroke-width="0.7" transform="rotate(151 154.5 121.8)"/><ellipse cx="129.5" cy="90.3" rx="4.9" ry="4.5" fill="#357a7e" stroke="#d6f6f2" stroke-width="0.9" transform="rotate(5 129.5 90.3)"/><ellipse cx="-5.6" cy="29.7" rx="4.7" ry="4.1" fill="#3f8a8c" stroke="#b8ece6" stroke-width="0.9" transform="rotate(13 -5.6 29.7)"/><ellipse cx="53.1" cy="163.7" rx="4.7" ry="3.5" fill="#62b0ae" stroke="#b8ece6" stroke-width="0.7" transform="rotate(74 53.1 163.7)"/><ellipse cx="124.4" cy="101.1" rx="4.0" ry="2.8" fill="#357a7e" stroke="#b8ece6" stroke-width="0.7" transform="rotate(41 124.4 101.1)"/><ellipse cx="-24.9" cy="114.7" rx="4.5" ry="4.0" fill="#62b0ae" stroke="#a0dcd6" stroke-width="1.1" transform="rotate(62 -24.9 114.7)"/><ellipse cx="19.8" cy="137.6" rx="4.5" ry="3.7" fill="#357a7e" stroke="#a0dcd6" stroke-width="1.1" transform="rotate(57 19.8 137.6)"/><ellipse cx="54.8" cy="146.9" rx="4.1" ry="2.9" fill="#3f8a8c" stroke="#a0dcd6" stroke-width="0.7" transform="rotate(94 54.8 146.9)"/><ellipse cx="120.5" cy="11.9" rx="5.2" ry="3.3" fill="#62b0ae" stroke="#a0dcd6" stroke-width="1.1" transform="rotate(141 120.5 11.9)"/><ellipse cx="29.0" cy="73.4" rx="5.1" ry="3.3" fill="#4f9c9c" stroke="#d6f6f2" stroke-width="1.1" transform="rotate(85 29.0 73.4)"/><ellipse cx="-5.5" cy="89.0" rx="3.7" ry="3.7" fill="#62b0ae" stroke="#f0fffd" stroke-width="0.7" transform="rotate(136 -5.5 89.0)"/><ellipse cx="175.2" cy="104.9" rx="3.1" ry="2.4" fill="#357a7e" stroke="#d6f6f2" stroke-width="0.9" transform="rotate(151 175.2 104.9)"/><ellipse cx="-6.5" cy="46.2" rx="4.8" ry="3.8" fill="#4f9c9c" stroke="#d6f6f2" stroke-width="0.7" transform="rotate(172 -6.5 46.2)"/><ellipse cx="136.6" cy="67.6" rx="5.1" ry="3.1" fill="#62b0ae" stroke="#d6f6f2" stroke-width="1.1" transform="rotate(168 136.6 67.6)"/><ellipse cx="-10.6" cy="34.3" rx="3.5" ry="2.3" fill="#62b0ae" stroke="#f0fffd" stroke-width="1.1" transform="rotate(133 -10.6 34.3)"/><ellipse cx="50.4" cy="73.2" rx="3.5" ry="2.2" fill="#4f9c9c" stroke="#b8ece6" stroke-width="0.7" transform="rotate(35 50.4 73.2)"/><ellipse cx="8.1" cy="26.4" rx="5.5" ry="5.0" fill="#357a7e" stroke="#f0fffd" stroke-width="1.1" transform="rotate(47 8.1 26.4)"/><ellipse cx="112.4" cy="133.5" rx="2.5" ry="1.9" fill="#3f8a8c" stroke="#f0fffd" stroke-width="1.1" transform="rotate(64 112.4 133.5)"/><ellipse cx="32.3" cy="45.6" rx="4.2" ry="3.5" fill="#3f8a8c" stroke="#b8ece6" stroke-width="0.9" transform="rotate(51 32.3 45.6)"/><ellipse cx="148.1" cy="130.3" rx="3.2" ry="2.3" fill="#4f9c9c" stroke="#a0dcd6" stroke-width="1.1" transform="rotate(179 148.1 130.3)"/><ellipse cx="47.9" cy="71.4" rx="5.1" ry="4.1" fill="#357a7e" stroke="#f0fffd" stroke-width="0.7" transform="rotate(105 47.9 71.4)"/><ellipse cx="16.5" cy="143.8" rx="4.6" ry="2.8" fill="#3f8a8c" stroke="#d6f6f2" stroke-width="1.1" transform="rotate(95 16.5 143.8)"/><ellipse cx="11.0" cy="145.3" rx="6.3" ry="4.3" fill="#6cbab6" stroke="#b8ece6" stroke-width="0.7" transform="rotate(127 11.0 145.3)"/><ellipse cx="18.1" cy="29.7" rx="5.0" ry="4.0" fill="#357a7e" stroke="#b8ece6" stroke-width="0.7" transform="rotate(19 18.1 29.7)"/><ellipse cx="143.4" cy="77.4" rx="3.0" ry="2.1" fill="#357a7e" stroke="#a0dcd6" stroke-width="0.9" transform="rotate(158 143.4 77.4)"/><ellipse cx="102.1" cy="148.9" rx="4.0" ry="3.7" fill="#3f8a8c" stroke="#f0fffd" stroke-width="0.7" transform="rotate(70 102.1 148.9)"/><ellipse cx="107.9" cy="105.1" rx="2.6" ry="1.7" fill="#357a7e" stroke="#b8ece6" stroke-width="0.7" transform="rotate(35 107.9 105.1)"/><ellipse cx="-7.7" cy="38.4" rx="6.2" ry="4.3" fill="#3f8a8c" stroke="#d6f6f2" stroke-width="0.7" transform="rotate(48 -7.7 38.4)"/><ellipse cx="6.9" cy="122.4" rx="2.8" ry="1.8" fill="#6cbab6" stroke="#b8ece6" stroke-width="1.1" transform="rotate(96 6.9 122.4)"/><ellipse cx="23.2" cy="141.0" rx="5.5" ry="3.3" fill="#3f8a8c" stroke="#a0dcd6" stroke-width="0.9" transform="rotate(10 23.2 141.0)"/><ellipse cx="173.6" cy="114.5" rx="5.7" ry="5.5" fill="#3f8a8c" stroke="#a0dcd6" stroke-width="1.1" transform="rotate(100 173.6 114.5)"/><ellipse cx="58.0" cy="148.3" rx="5.2" ry="4.7" fill="#4f9c9c" stroke="#a0dcd6" stroke-width="0.9" transform="rotate(180 58.0 148.3)"/><ellipse cx="52.2" cy="70.5" rx="3.6" ry="2.5" fill="#62b0ae" stroke="#f0fffd" stroke-width="0.7" transform="rotate(179 52.2 70.5)"/><ellipse cx="14.3" cy="26.1" rx="5.0" ry="3.2" fill="#62b0ae" stroke="#f0fffd" stroke-width="0.7" transform="rotate(106 14.3 26.1)"/><ellipse cx="6.6" cy="170.6" rx="4.9" ry="4.9" fill="#6cbab6" stroke="#f0fffd" stroke-width="0.9" transform="rotate(167 6.6 170.6)"/><ellipse cx="23.6" cy="73.5" rx="3.5" ry="2.3" fill="#357a7e" stroke="#d6f6f2" stroke-width="1.1" transform="rotate(15 23.6 73.5)"/><ellipse cx="11.0" cy="64.2" rx="3.3" ry="2.3" fill="#6cbab6" stroke="#a0dcd6" stroke-width="0.9" transform="rotate(170 11.0 64.2)"/><ellipse cx="167.1" cy="88.0" rx="3.6" ry="2.9" fill="#62b0ae" stroke="#b8ece6" stroke-width="0.9" transform="rotate(50 167.1 88.0)"/><ellipse cx="21.4" cy="57.0" rx="5.4" ry="4.8" fill="#3f8a8c" stroke="#d6f6f2" stroke-width="1.1" transform="rotate(84 21.4 57.0)"/><ellipse cx="-11.5" cy="112.0" rx="4.5" ry="3.5" fill="#3f8a8c" stroke="#d6f6f2" stroke-width="0.7" transform="rotate(123 -11.5 112.0)"/><ellipse cx="30.1" cy="105.5" rx="4.4" ry="3.2" fill="#357a7e" stroke="#f0fffd" stroke-width="0.9" transform="rotate(61 30.1 105.5)"/><ellipse cx="67.1" cy="40.1" rx="4.4" ry="4.2" fill="#6cbab6" stroke="#b8ece6" stroke-width="1.1" transform="rotate(51 67.1 40.1)"/><ellipse cx="42.5" cy="76.3" rx="5.2" ry="4.9" fill="#357a7e" stroke="#a0dcd6" stroke-width="1.1" transform="rotate(49 42.5 76.3)"/><ellipse cx="34.4" cy="26.6" rx="6.4" ry="4.1" fill="#3f8a8c" stroke="#f0fffd" stroke-width="0.7" transform="rotate(35 34.4 26.6)"/><ellipse cx="101.2" cy="34.3" rx="5.2" ry="4.9" fill="#6cbab6" stroke="#a0dcd6" stroke-width="0.9" transform="rotate(28 101.2 34.3)"/><ellipse cx="56.9" cy="78.3" rx="4.4" ry="3.7" fill="#3f8a8c" stroke="#d6f6f2" stroke-width="0.7" transform="rotate(41 56.9 78.3)"/><ellipse cx="121.9" cy="150.0" rx="4.9" ry="3.7" fill="#62b0ae" stroke="#d6f6f2" stroke-width="1.1" transform="rotate(95 121.9 150.0)"/><ellipse cx="-23.4" cy="63.0" rx="4.8" ry="3.5" fill="#3f8a8c" stroke="#f0fffd" stroke-width="0.9" transform="rotate(162 -23.4 63.0)"/><ellipse cx="85.9" cy="160.2" rx="4.3" ry="3.6" fill="#62b0ae" stroke="#a0dcd6" stroke-width="1.1" transform="rotate(40 85.9 160.2)"/><ellipse cx="138.3" cy="122.4" rx="3.0" ry="2.6" fill="#6cbab6" stroke="#f0fffd" stroke-width="1.1" transform="rotate(74 138.3 122.4)"/><ellipse cx="50.4" cy="80.1" rx="4.2" ry="4.1" fill="#62b0ae" stroke="#a0dcd6" stroke-width="1.1" transform="rotate(123 50.4 80.1)"/><ellipse cx="27.9" cy="3.3" rx="5.9" ry="3.7" fill="#3f8a8c" stroke="#d6f6f2" stroke-width="0.9" transform="rotate(136 27.9 3.3)"/><ellipse cx="58.5" cy="72.3" rx="3.1" ry="2.0" fill="#4f9c9c" stroke="#a0dcd6" stroke-width="0.7" transform="rotate(37 58.5 72.3)"/><ellipse cx="51.0" cy="161.2" rx="4.0" ry="2.4" fill="#4f9c9c" stroke="#d6f6f2" stroke-width="0.7" transform="rotate(123 51.0 161.2)"/><ellipse cx="89.0" cy="126.9" rx="3.0" ry="2.0" fill="#3f8a8c" stroke="#b8ece6" stroke-width="0.9" transform="rotate(46 89.0 126.9)"/><ellipse cx="146.3" cy="121.3" rx="6.2" ry="4.8" fill="#62b0ae" stroke="#b8ece6" stroke-width="0.7" transform="rotate(27 146.3 121.3)"/><ellipse cx="145.6" cy="84.4" rx="3.8" ry="3.6" fill="#357a7e" stroke="#b8ece6" stroke-width="1.1" transform="rotate(45 145.6 84.4)"/><ellipse cx="47.9" cy="162.4" rx="6.2" ry="4.7" fill="#4f9c9c" stroke="#d6f6f2" stroke-width="0.7" transform="rotate(117 47.9 162.4)"/><ellipse cx="35.2" cy="169.5" rx="5.4" ry="3.5" fill="#3f8a8c" stroke="#b8ece6" stroke-width="1.1" transform="rotate(131 35.2 169.5)"/><ellipse cx="138.1" cy="18.7" rx="3.5" ry="3.3" fill="#6cbab6" stroke="#f0fffd" stroke-width="1.1" transform="rotate(67 138.1 18.7)"/><ellipse cx="22.8" cy="173.9" rx="4.2" ry="2.6" fill="#4f9c9c" stroke="#a0dcd6" stroke-width="1.1" transform="rotate(24 22.8 173.9)"/><ellipse cx="72.0" cy="143.3" rx="4.2" ry="2.8" fill="#357a7e" stroke="#f0fffd" stroke-width="0.7" transform="rotate(45 72.0 143.3)"/><ellipse cx="33.4" cy="67.0" rx="3.5" ry="2.7" fill="#3f8a8c" stroke="#a0dcd6" stroke-width="1.1" transform="rotate(95 33.4 67.0)"/><ellipse cx="90.0" cy="-2.7" rx="3.0" ry="2.4" fill="#62b0ae" stroke="#f0fffd" stroke-width="1.1" transform="rotate(68 90.0 -2.7)"/><ellipse cx="28.1" cy="12.2" rx="5.9" ry="4.1" fill="#357a7e" stroke="#d6f6f2" stroke-width="0.9" transform="rotate(145 28.1 12.2)"/><ellipse cx="79.0" cy="67.4" rx="6.2" ry="5.3" fill="#62b0ae" stroke="#a0dcd6" stroke-width="1.1" transform="rotate(36 79.0 67.4)"/><ellipse cx="-32.9" cy="75.7" rx="5.0" ry="4.6" fill="#6cbab6" stroke="#f0fffd" stroke-width="0.9" transform="rotate(57 -32.9 75.7)"/><ellipse cx="96.4" cy="107.9" rx="5.3" ry="5.2" fill="#4f9c9c" stroke="#f0fffd" stroke-width="0.9" transform="rotate(78 96.4 107.9)"/><ellipse cx="157.5" cy="112.8" rx="5.1" ry="3.4" fill="#62b0ae" stroke="#a0dcd6" stroke-width="0.7" transform="rotate(107 157.5 112.8)"/><ellipse cx="76.8" cy="71.0" rx="4.9" ry="3.8" fill="#3f8a8c" stroke="#b8ece6" stroke-width="1.1" transform="rotate(124 76.8 71.0)"/><ellipse cx="125.2" cy="108.3" rx="4.2" ry="4.1" fill="#62b0ae" stroke="#f0fffd" stroke-width="0.9" transform="rotate(159 125.2 108.3)"/><ellipse cx="138.5" cy="21.2" rx="4.8" ry="4.4" fill="#4f9c9c" stroke="#f0fffd" stroke-width="0.7" transform="rotate(45 138.5 21.2)"/><ellipse cx="132.9" cy="140.1" rx="2.9" ry="2.1" fill="#357a7e" stroke="#b8ece6" stroke-width="0.9" transform="rotate(147 132.9 140.1)"/><ellipse cx="55.0" cy="148.1" rx="2.8" ry="2.2" fill="#357a7e" stroke="#d6f6f2" stroke-width="0.9" transform="rotate(171 55.0 148.1)"/><ellipse cx="37.3" cy="92.1" rx="6.0" ry="3.8" fill="#6cbab6" stroke="#a0dcd6" stroke-width="0.7" transform="rotate(12 37.3 92.1)"/><ellipse cx="164.9" cy="73.1" rx="5.6" ry="3.7" fill="#3f8a8c" stroke="#a0dcd6" stroke-width="0.7" transform="rotate(144 164.9 73.1)"/><ellipse cx="16.0" cy="39.6" rx="4.9" ry="4.6" fill="#3f8a8c" stroke="#f0fffd" stroke-width="0.7" transform="rotate(126 16.0 39.6)"/><ellipse cx="133.5" cy="138.0" rx="6.0" ry="4.3" fill="#3f8a8c" stroke="#f0fffd" stroke-width="1.1" transform="rotate(151 133.5 138.0)"/><ellipse cx="107.8" cy="178.8" rx="3.8" ry="3.0" fill="#4f9c9c" stroke="#a0dcd6" stroke-width="0.9" transform="rotate(15 107.8 178.8)"/><ellipse cx="136.9" cy="149.1" rx="3.1" ry="1.8" fill="#4f9c9c" stroke="#a0dcd6" stroke-width="0.7" transform="rotate(166 136.9 149.1)"/><ellipse cx="103.7" cy="148.3" rx="5.8" ry="5.1" fill="#357a7e" stroke="#b8ece6" stroke-width="0.9" transform="rotate(149 103.7 148.3)"/><ellipse cx="102.5" cy="126.7" rx="3.2" ry="3.0" fill="#4f9c9c" stroke="#d6f6f2" stroke-width="0.9" transform="rotate(32 102.5 126.7)"/><ellipse cx="154.6" cy="150.3" rx="3.6" ry="2.8" fill="#6cbab6" stroke="#f0fffd" stroke-width="0.9" transform="rotate(6 154.6 150.3)"/><ellipse cx="22.2" cy="146.8" rx="4.3" ry="2.9" fill="#62b0ae" stroke="#b8ece6" stroke-width="1.1" transform="rotate(99 22.2 146.8)"/><ellipse cx="139.6" cy="62.5" rx="4.7" ry="4.4" fill="#357a7e" stroke="#b8ece6" stroke-width="0.7" transform="rotate(20 139.6 62.5)"/><ellipse cx="31.8" cy="137.4" rx="3.7" ry="3.1" fill="#4f9c9c" stroke="#d6f6f2" stroke-width="1.1" transform="rotate(97 31.8 137.4)"/><ellipse cx="93.4" cy="149.3" rx="3.9" ry="2.6" fill="#357a7e" stroke="#b8ece6" stroke-width="0.7" transform="rotate(51 93.4 149.3)"/><ellipse cx="53.1" cy="134.9" rx="5.6" ry="4.4" fill="#62b0ae" stroke="#d6f6f2" stroke-width="0.9" transform="rotate(22 53.1 134.9)"/><ellipse cx="89.0" cy="28.5" rx="3.5" ry="3.0" fill="#3f8a8c" stroke="#f0fffd" stroke-width="1.1" transform="rotate(24 89.0 28.5)"/><ellipse cx="110.1" cy="93.8" rx="3.3" ry="2.6" fill="#4f9c9c" stroke="#d6f6f2" stroke-width="0.9" transform="rotate(19 110.1 93.8)"/><ellipse cx="29.4" cy="8.7" rx="3.3" ry="2.1" fill="#357a7e" stroke="#d6f6f2" stroke-width="0.9" transform="rotate(74 29.4 8.7)"/><ellipse cx="-5.7" cy="152.0" rx="2.8" ry="2.1" fill="#357a7e" stroke="#d6f6f2" stroke-width="0.9" transform="rotate(153 -5.7 152.0)"/><ellipse cx="78.3" cy="154.0" rx="2.8" ry="2.1" fill="#3f8a8c" stroke="#f0fffd" stroke-width="1.1" transform="rotate(74 78.3 154.0)"/><ellipse cx="11.2" cy="70.6" rx="3.7" ry="3.2" fill="#3f8a8c" stroke="#a0dcd6" stroke-width="0.9" transform="rotate(148 11.2 70.6)"/><ellipse cx="18.4" cy="145.8" rx="3.6" ry="2.6" fill="#3f8a8c" stroke="#d6f6f2" stroke-width="0.9" transform="rotate(40 18.4 145.8)"/><ellipse cx="101.7" cy="101.9" rx="4.4" ry="3.3" fill="#3f8a8c" stroke="#d6f6f2" stroke-width="0.9" transform="rotate(137 101.7 101.9)"/><ellipse cx="143.6" cy="107.2" rx="2.9" ry="1.9" fill="#6cbab6" stroke="#a0dcd6" stroke-width="0.9" transform="rotate(69 143.6 107.2)"/><ellipse cx="89.1" cy="25.9" rx="5.8" ry="4.6" fill="#4f9c9c" stroke="#f0fffd" stroke-width="1.1" transform="rotate(148 89.1 25.9)"/><ellipse cx="-25.6" cy="86.4" rx="6.5" ry="5.4" fill="#3f8a8c" stroke="#d6f6f2" stroke-width="0.7" transform="rotate(96 -25.6 86.4)"/><ellipse cx="63.8" cy="92.6" rx="6.1" ry="5.8" fill="#62b0ae" stroke="#b8ece6" stroke-width="0.9" transform="rotate(28 63.8 92.6)"/><ellipse cx="38.6" cy="179.8" rx="6.0" ry="4.2" fill="#3f8a8c" stroke="#f0fffd" stroke-width="1.1" transform="rotate(96 38.6 179.8)"/><ellipse cx="86.8" cy="-1.3" rx="3.6" ry="3.2" fill="#3f8a8c" stroke="#a0dcd6" stroke-width="1.1" transform="rotate(15 86.8 -1.3)"/><ellipse cx="45.8" cy="20.6" rx="2.8" ry="2.0" fill="#357a7e" stroke="#a0dcd6" stroke-width="0.7" transform="rotate(26 45.8 20.6)"/><ellipse cx="12.2" cy="149.2" rx="4.4" ry="3.1" fill="#357a7e" stroke="#b8ece6" stroke-width="1.1" transform="rotate(128 12.2 149.2)"/><ellipse cx="54.2" cy="123.2" rx="4.1" ry="2.7" fill="#357a7e" stroke="#a0dcd6" stroke-width="0.9" transform="rotate(4 54.2 123.2)"/><ellipse cx="155.2" cy="40.0" rx="5.8" ry="4.0" fill="#4f9c9c" stroke="#b8ece6" stroke-width="1.1" transform="rotate(123 155.2 40.0)"/><ellipse cx="22.9" cy="161.2" rx="6.5" ry="4.2" fill="#62b0ae" stroke="#d6f6f2" stroke-width="0.7" transform="rotate(10 22.9 161.2)"/><ellipse cx="138.2" cy="145.4" rx="3.0" ry="2.4" fill="#3f8a8c" stroke="#f0fffd" stroke-width="0.9" transform="rotate(71 138.2 145.4)"/><ellipse cx="48.3" cy="-6.0" rx="4.4" ry="4.3" fill="#62b0ae" stroke="#f0fffd" stroke-width="1.1" transform="rotate(169 48.3 -6.0)"/><ellipse cx="65.5" cy="9.0" rx="3.0" ry="2.0" fill="#62b0ae" stroke="#b8ece6" stroke-width="1.1" transform="rotate(29 65.5 9.0)"/><ellipse cx="161.9" cy="49.4" rx="5.9" ry="5.6" fill="#62b0ae" stroke="#d6f6f2" stroke-width="1.1" transform="rotate(15 161.9 49.4)"/><ellipse cx="87.5" cy="103.1" rx="5.4" ry="5.2" fill="#357a7e" stroke="#d6f6f2" stroke-width="1.1" transform="rotate(114 87.5 103.1)"/><ellipse cx="100.4" cy="188.3" rx="3.8" ry="2.4" fill="#357a7e" stroke="#f0fffd" stroke-width="0.7" transform="rotate(96 100.4 188.3)"/><ellipse cx="98.8" cy="12.1" rx="4.3" ry="3.4" fill="#4f9c9c" stroke="#b8ece6" stroke-width="1.1" transform="rotate(140 98.8 12.1)"/><ellipse cx="119.0" cy="169.4" rx="6.4" ry="4.2" fill="#4f9c9c" stroke="#b8ece6" stroke-width="0.9" transform="rotate(177 119.0 169.4)"/><ellipse cx="122.9" cy="155.2" rx="5.7" ry="5.1" fill="#6cbab6" stroke="#b8ece6" stroke-width="1.1" transform="rotate(44 122.9 155.2)"/><ellipse cx="38.1" cy="146.7" rx="2.8" ry="2.4" fill="#3f8a8c" stroke="#d6f6f2" stroke-width="1.1" transform="rotate(124 38.1 146.7)"/><ellipse cx="161.3" cy="72.4" rx="5.8" ry="5.2" fill="#357a7e" stroke="#a0dcd6" stroke-width="1.1" transform="rotate(157 161.3 72.4)"/><ellipse cx="108.6" cy="166.2" rx="5.8" ry="3.7" fill="#62b0ae" stroke="#f0fffd" stroke-width="1.1" transform="rotate(82 108.6 166.2)"/><ellipse cx="151.5" cy="88.5" rx="4.9" ry="3.8" fill="#3f8a8c" stroke="#b8ece6" stroke-width="1.1" transform="rotate(101 151.5 88.5)"/><ellipse cx="-12.7" cy="66.7" rx="6.2" ry="4.5" fill="#3f8a8c" stroke="#a0dcd6" stroke-width="0.7" transform="rotate(176 -12.7 66.7)"/><ellipse cx="-17.6" cy="50.8" rx="5.5" ry="4.6" fill="#3f8a8c" stroke="#d6f6f2" stroke-width="0.9" transform="rotate(91 -17.6 50.8)"/><ellipse cx="20.0" cy="175.4" rx="6.4" ry="4.4" fill="#4f9c9c" stroke="#f0fffd" stroke-width="0.7" transform="rotate(134 20.0 175.4)"/><ellipse cx="113.4" cy="62.5" rx="3.7" ry="3.2" fill="#357a7e" stroke="#f0fffd" stroke-width="0.9" transform="rotate(16 113.4 62.5)"/><ellipse cx="120.9" cy="55.9" rx="6.3" ry="6.0" fill="#6cbab6" stroke="#b8ece6" stroke-width="1.1" transform="rotate(96 120.9 55.9)"/><ellipse cx="84.7" cy="111.8" rx="5.5" ry="5.1" fill="#6cbab6" stroke="#b8ece6" stroke-width="0.7" transform="rotate(159 84.7 111.8)"/><ellipse cx="4.4" cy="111.3" rx="4.0" ry="2.5" fill="#62b0ae" stroke="#f0fffd" stroke-width="0.9" transform="rotate(98 4.4 111.3)"/><ellipse cx="60.9" cy="1.3" rx="2.6" ry="1.7" fill="#3f8a8c" stroke="#b8ece6" stroke-width="0.9" transform="rotate(155 60.9 1.3)"/><ellipse cx="108.1" cy="41.6" rx="6.4" ry="6.1" fill="#6cbab6" stroke="#b8ece6" stroke-width="1.1" transform="rotate(64 108.1 41.6)"/><ellipse cx="7.3" cy="174.1" rx="4.9" ry="3.1" fill="#3f8a8c" stroke="#a0dcd6" stroke-width="1.1" transform="rotate(32 7.3 174.1)"/><ellipse cx="61.8" cy="50.2" rx="4.8" ry="4.5" fill="#4f9c9c" stroke="#d6f6f2" stroke-width="1.1" transform="rotate(127 61.8 50.2)"/><ellipse cx="-27.3" cy="98.8" rx="4.3" ry="3.7" fill="#62b0ae" stroke="#d6f6f2" stroke-width="0.7" transform="rotate(119 -27.3 98.8)"/><ellipse cx="133.7" cy="153.2" rx="5.4" ry="4.8" fill="#357a7e" stroke="#f0fffd" stroke-width="1.1" transform="rotate(32 133.7 153.2)"/><ellipse cx="5.6" cy="85.5" rx="3.6" ry="2.7" fill="#62b0ae" stroke="#f0fffd" stroke-width="0.9" transform="rotate(93 5.6 85.5)"/><ellipse cx="108.7" cy="74.4" rx="2.9" ry="1.8" fill="#3f8a8c" stroke="#a0dcd6" stroke-width="0.7" transform="rotate(12 108.7 74.4)"/><ellipse cx="25.9" cy="171.6" rx="4.1" ry="2.8" fill="#62b0ae" stroke="#f0fffd" stroke-width="0.7" transform="rotate(4 25.9 171.6)"/><ellipse cx="106.4" cy="102.6" rx="4.5" ry="3.3" fill="#357a7e" stroke="#a0dcd6" stroke-width="0.9" transform="rotate(78 106.4 102.6)"/><ellipse cx="-23.5" cy="76.7" rx="2.9" ry="2.5" fill="#3f8a8c" stroke="#f0fffd" stroke-width="1.1" transform="rotate(12 -23.5 76.7)"/><ellipse cx="104.3" cy="130.6" rx="3.8" ry="2.7" fill="#4f9c9c" stroke="#b8ece6" stroke-width="1.1" transform="rotate(127 104.3 130.6)"/><ellipse cx="159.5" cy="49.3" rx="4.7" ry="4.4" fill="#3f8a8c" stroke="#f0fffd" stroke-width="0.7" transform="rotate(17 159.5 49.3)"/><ellipse cx="53.5" cy="59.5" rx="2.5" ry="2.4" fill="#62b0ae" stroke="#d6f6f2" stroke-width="0.7" transform="rotate(52 53.5 59.5)"/><ellipse cx="77.2" cy="198.7" rx="5.9" ry="4.4" fill="#4f9c9c" stroke="#d6f6f2" stroke-width="0.9" transform="rotate(14 77.2 198.7)"/><ellipse cx="97.4" cy="115.8" rx="5.5" ry="3.8" fill="#357a7e" stroke="#d6f6f2" stroke-width="0.9" transform="rotate(67 97.4 115.8)"/><ellipse cx="65.5" cy="94.4" rx="4.6" ry="4.1" fill="#357a7e" stroke="#b8ece6" stroke-width="0.7" transform="rotate(50 65.5 94.4)"/><ellipse cx="89.9" cy="68.7" rx="3.4" ry="2.6" fill="#3f8a8c" stroke="#f0fffd" stroke-width="0.7" transform="rotate(135 89.9 68.7)"/><ellipse cx="100.4" cy="82.9" rx="5.9" ry="3.9" fill="#357a7e" stroke="#b8ece6" stroke-width="1.1" transform="rotate(115 100.4 82.9)"/><ellipse cx="96.4" cy="195.1" rx="2.5" ry="1.6" fill="#4f9c9c" stroke="#a0dcd6" stroke-width="1.1" transform="rotate(121 96.4 195.1)"/><ellipse cx="133.1" cy="78.5" rx="2.6" ry="1.6" fill="#62b0ae" stroke="#b8ece6" stroke-width="0.9" transform="rotate(164 133.1 78.5)"/><ellipse cx="170.4" cy="95.8" rx="4.9" ry="3.8" fill="#6cbab6" stroke="#f0fffd" stroke-width="0.9" transform="rotate(125 170.4 95.8)"/><ellipse cx="20.1" cy="41.2" rx="3.1" ry="2.9" fill="#357a7e" stroke="#b8ece6" stroke-width="1.1" transform="rotate(55 20.1 41.2)"/><ellipse cx="86.9" cy="149.8" rx="4.3" ry="3.3" fill="#357a7e" stroke="#a0dcd6" stroke-width="0.7" transform="rotate(74 86.9 149.8)"/><ellipse cx="76.2" cy="44.4" rx="6.4" ry="6.1" fill="#62b0ae" stroke="#b8ece6" stroke-width="0.9" transform="rotate(77 76.2 44.4)"/><ellipse cx="144.9" cy="127.6" rx="5.2" ry="4.3" fill="#6cbab6" stroke="#b8ece6" stroke-width="1.1" transform="rotate(16 144.9 127.6)"/><ellipse cx="131.0" cy="93.1" rx="5.5" ry="4.9" fill="#357a7e" stroke="#b8ece6" stroke-width="0.9" transform="rotate(117 131.0 93.1)"/><ellipse cx="90.6" cy="26.2" rx="6.3" ry="5.8" fill="#3f8a8c" stroke="#a0dcd6" stroke-width="1.1" transform="rotate(117 90.6 26.2)"/><ellipse cx="127.6" cy="163.2" rx="4.5" ry="3.0" fill="#357a7e" stroke="#d6f6f2" stroke-width="0.7" transform="rotate(156 127.6 163.2)"/><ellipse cx="46.3" cy="104.5" rx="5.2" ry="3.2" fill="#62b0ae" stroke="#d6f6f2" stroke-width="0.9" transform="rotate(110 46.3 104.5)"/><ellipse cx="69.9" cy="66.8" rx="3.0" ry="2.0" fill="#3f8a8c" stroke="#f0fffd" stroke-width="0.7" transform="rotate(143 69.9 66.8)"/><ellipse cx="103.1" cy="47.2" rx="4.5" ry="3.1" fill="#357a7e" stroke="#b8ece6" stroke-width="0.9" transform="rotate(7 103.1 47.2)"/><ellipse cx="83.5" cy="70.7" rx="4.1" ry="3.4" fill="#3f8a8c" stroke="#f0fffd" stroke-width="0.7" transform="rotate(47 83.5 70.7)"/><ellipse cx="139.0" cy="53.3" rx="5.5" ry="3.9" fill="#62b0ae" stroke="#f0fffd" stroke-width="0.7" transform="rotate(66 139.0 53.3)"/><ellipse cx="103.3" cy="12.4" rx="3.3" ry="2.2" fill="#6cbab6" stroke="#f0fffd" stroke-width="1.1" transform="rotate(149 103.3 12.4)"/><ellipse cx="74.2" cy="82.3" rx="2.6" ry="2.2" fill="#3f8a8c" stroke="#d6f6f2" stroke-width="0.7" transform="rotate(61 74.2 82.3)"/><ellipse cx="78.7" cy="118.3" rx="5.2" ry="3.5" fill="#357a7e" stroke="#f0fffd" stroke-width="0.7" transform="rotate(160 78.7 118.3)"/><ellipse cx="165.2" cy="84.2" rx="4.9" ry="4.1" fill="#4f9c9c" stroke="#b8ece6" stroke-width="0.9" transform="rotate(25 165.2 84.2)"/><ellipse cx="13.7" cy="69.6" rx="3.5" ry="3.1" fill="#357a7e" stroke="#b8ece6" stroke-width="0.7" transform="rotate(170 13.7 69.6)"/><ellipse cx="60.1" cy="106.9" rx="4.2" ry="3.4" fill="#6cbab6" stroke="#f0fffd" stroke-width="1.1" transform="rotate(141 60.1 106.9)"/><ellipse cx="77.9" cy="110.8" rx="5.6" ry="4.0" fill="#6cbab6" stroke="#b8ece6" stroke-width="1.1" transform="rotate(112 77.9 110.8)"/><ellipse cx="113.8" cy="130.6" rx="6.2" ry="5.0" fill="#3f8a8c" stroke="#a0dcd6" stroke-width="0.9" transform="rotate(120 113.8 130.6)"/><ellipse cx="80.0" cy="56.2" rx="2.8" ry="2.6" fill="#4f9c9c" stroke="#f0fffd" stroke-width="0.7" transform="rotate(49 80.0 56.2)"/><ellipse cx="106.4" cy="172.2" rx="5.4" ry="4.2" fill="#6cbab6" stroke="#a0dcd6" stroke-width="0.7" transform="rotate(75 106.4 172.2)"/><ellipse cx="-2.0" cy="84.6" rx="4.6" ry="3.8" fill="#62b0ae" stroke="#d6f6f2" stroke-width="0.9" transform="rotate(157 -2.0 84.6)"/><ellipse cx="71.4" cy="44.5" rx="3.3" ry="3.0" fill="#62b0ae" stroke="#f0fffd" stroke-width="0.9" transform="rotate(140 71.4 44.5)"/><ellipse cx="110.2" cy="84.0" rx="6.4" ry="5.5" fill="#357a7e" stroke="#f0fffd" stroke-width="0.9" transform="rotate(112 110.2 84.0)"/><ellipse cx="97.5" cy="99.0" rx="4.9" ry="4.4" fill="#6cbab6" stroke="#b8ece6" stroke-width="0.9" transform="rotate(124 97.5 99.0)"/><ellipse cx="16.6" cy="36.0" rx="4.7" ry="3.0" fill="#6cbab6" stroke="#f0fffd" stroke-width="1.1" transform="rotate(140 16.6 36.0)"/><ellipse cx="-8.6" cy="134.2" rx="6.4" ry="4.8" fill="#357a7e" stroke="#b8ece6" stroke-width="1.1" transform="rotate(91 -8.6 134.2)"/><ellipse cx="123.7" cy="105.3" rx="3.1" ry="2.6" fill="#4f9c9c" stroke="#b8ece6" stroke-width="0.7" transform="rotate(74 123.7 105.3)"/><ellipse cx="87.7" cy="74.3" rx="2.5" ry="1.6" fill="#4f9c9c" stroke="#a0dcd6" stroke-width="0.9" transform="rotate(41 87.7 74.3)"/><ellipse cx="3.7" cy="167.2" rx="3.6" ry="3.4" fill="#3f8a8c" stroke="#a0dcd6" stroke-width="0.7" transform="rotate(144 3.7 167.2)"/><ellipse cx="34.4" cy="167.6" rx="6.3" ry="4.7" fill="#6cbab6" stroke="#f0fffd" stroke-width="1.1" transform="rotate(150 34.4 167.6)"/><ellipse cx="58.3" cy="80.3" rx="4.5" ry="3.0" fill="#62b0ae" stroke="#a0dcd6" stroke-width="0.7" transform="rotate(53 58.3 80.3)"/><ellipse cx="10.7" cy="127.7" rx="4.9" ry="4.2" fill="#62b0ae" stroke="#a0dcd6" stroke-width="0.9" transform="rotate(162 10.7 127.7)"/><ellipse cx="101.4" cy="7.9" rx="3.4" ry="2.6" fill="#6cbab6" stroke="#f0fffd" stroke-width="0.9" transform="rotate(111 101.4 7.9)"/><ellipse cx="142.1" cy="92.8" rx="4.9" ry="3.7" fill="#6cbab6" stroke="#f0fffd" stroke-width="0.9" transform="rotate(100 142.1 92.8)"/><ellipse cx="13.3" cy="66.0" rx="4.6" ry="3.8" fill="#6cbab6" stroke="#a0dcd6" stroke-width="0.7" transform="rotate(49 13.3 66.0)"/><ellipse cx="98.5" cy="93.8" rx="2.6" ry="2.5" fill="#3f8a8c" stroke="#f0fffd" stroke-width="0.7" transform="rotate(126 98.5 93.8)"/><ellipse cx="40.2" cy="103.4" rx="6.3" ry="5.5" fill="#62b0ae" stroke="#d6f6f2" stroke-width="0.9" transform="rotate(80 40.2 103.4)"/><ellipse cx="100.4" cy="32.6" rx="5.0" ry="4.8" fill="#4f9c9c" stroke="#d6f6f2" stroke-width="1.1" transform="rotate(153 100.4 32.6)"/><ellipse cx="36.4" cy="130.8" rx="4.4" ry="4.3" fill="#3f8a8c" stroke="#a0dcd6" stroke-width="0.9" transform="rotate(57 36.4 130.8)"/><ellipse cx="26.3" cy="98.3" rx="5.7" ry="4.8" fill="#62b0ae" stroke="#b8ece6" stroke-width="0.7" transform="rotate(157 26.3 98.3)"/><ellipse cx="88.6" cy="140.8" rx="4.5" ry="2.7" fill="#3f8a8c" stroke="#b8ece6" stroke-width="1.1" transform="rotate(67 88.6 140.8)"/><ellipse cx="160.5" cy="93.5" rx="3.8" ry="2.6" fill="#357a7e" stroke="#a0dcd6" stroke-width="1.1" transform="rotate(45 160.5 93.5)"/><ellipse cx="67.8" cy="46.5" rx="6.5" ry="4.1" fill="#3f8a8c" stroke="#d6f6f2" stroke-width="1.1" transform="rotate(7 67.8 46.5)"/><ellipse cx="66.4" cy="139.1" rx="5.6" ry="3.7" fill="#357a7e" stroke="#f0fffd" stroke-width="1.1" transform="rotate(141 66.4 139.1)"/><ellipse cx="-6.8" cy="123.6" rx="4.7" ry="2.8" fill="#357a7e" stroke="#b8ece6" stroke-width="0.7" transform="rotate(32 -6.8 123.6)"/><ellipse cx="74.6" cy="122.5" rx="5.0" ry="3.0" fill="#62b0ae" stroke="#f0fffd" stroke-width="0.9" transform="rotate(110 74.6 122.5)"/><ellipse cx="59.4" cy="-4.7" rx="5.2" ry="4.2" fill="#62b0ae" stroke="#d6f6f2" stroke-width="0.9" transform="rotate(67 59.4 -4.7)"/><ellipse cx="51.7" cy="67.7" rx="6.2" ry="3.9" fill="#357a7e" stroke="#f0fffd" stroke-width="0.9" transform="rotate(100 51.7 67.7)"/><ellipse cx="42.0" cy="132.5" rx="5.7" ry="4.4" fill="#62b0ae" stroke="#b8ece6" stroke-width="1.1" transform="rotate(64 42.0 132.5)"/><ellipse cx="168.3" cy="106.9" rx="3.8" ry="3.3" fill="#6cbab6" stroke="#a0dcd6" stroke-width="1.1" transform="rotate(108 168.3 106.9)"/><ellipse cx="19.8" cy="150.3" rx="5.4" ry="4.5" fill="#357a7e" stroke="#a0dcd6" stroke-width="0.9" transform="rotate(109 19.8 150.3)"/><ellipse cx="-32.1" cy="108.9" rx="5.5" ry="4.1" fill="#4f9c9c" stroke="#d6f6f2" stroke-width="0.7" transform="rotate(6 -32.1 108.9)"/><ellipse cx="36.8" cy="83.5" rx="3.7" ry="3.2" fill="#3f8a8c" stroke="#a0dcd6" stroke-width="0.7" transform="rotate(140 36.8 83.5)"/><ellipse cx="153.5" cy="133.7" rx="3.4" ry="2.7" fill="#6cbab6" stroke="#b8ece6" stroke-width="0.7" transform="rotate(145 153.5 133.7)"/><ellipse cx="-9.3" cy="83.3" rx="3.2" ry="2.3" fill="#3f8a8c" stroke="#b8ece6" stroke-width="1.1" transform="rotate(126 -9.3 83.3)"/><ellipse cx="24.6" cy="43.8" rx="4.8" ry="3.7" fill="#357a7e" stroke="#a0dcd6" stroke-width="1.1" transform="rotate(93 24.6 43.8)"/><ellipse cx="168.4" cy="87.3" rx="5.8" ry="4.8" fill="#6cbab6" stroke="#b8ece6" stroke-width="0.7" transform="rotate(169 168.4 87.3)"/><ellipse cx="35.1" cy="55.6" rx="3.1" ry="2.4" fill="#357a7e" stroke="#f0fffd" stroke-width="0.7" transform="rotate(44 35.1 55.6)"/><ellipse cx="51.9" cy="44.0" rx="6.0" ry="4.4" fill="#62b0ae" stroke="#a0dcd6" stroke-width="0.9" transform="rotate(17 51.9 44.0)"/><ellipse cx="25.2" cy="46.8" rx="5.5" ry="4.3" fill="#6cbab6" stroke="#a0dcd6" stroke-width="0.9" transform="rotate(132 25.2 46.8)"/><ellipse cx="37.3" cy="173.1" rx="5.8" ry="4.8" fill="#357a7e" stroke="#b8ece6" stroke-width="1.1" transform="rotate(109 37.3 173.1)"/><ellipse cx="130.7" cy="100.0" rx="3.6" ry="2.3" fill="#357a7e" stroke="#b8ece6" stroke-width="0.7" transform="rotate(174 130.7 100.0)"/><ellipse cx="122.2" cy="102.3" rx="6.0" ry="4.4" fill="#3f8a8c" stroke="#f0fffd" stroke-width="1.1" transform="rotate(172 122.2 102.3)"/><ellipse cx="15.7" cy="45.3" rx="6.3" ry="5.7" fill="#6cbab6" stroke="#d6f6f2" stroke-width="0.7" transform="rotate(126 15.7 45.3)"/><ellipse cx="66.1" cy="38.2" rx="5.2" ry="3.6" fill="#4f9c9c" stroke="#a0dcd6" stroke-width="0.7" transform="rotate(148 66.1 38.2)"/><ellipse cx="25.8" cy="29.1" rx="4.9" ry="4.3" fill="#357a7e" stroke="#a0dcd6" stroke-width="1.1" transform="rotate(146 25.8 29.1)"/><ellipse cx="112.0" cy="185.0" rx="3.7" ry="3.1" fill="#6cbab6" stroke="#d6f6f2" stroke-width="0.9" transform="rotate(173 112.0 185.0)"/><ellipse cx="141.9" cy="93.6" rx="3.9" ry="3.7" fill="#4f9c9c" stroke="#b8ece6" stroke-width="1.1" transform="rotate(160 141.9 93.6)"/><ellipse cx="41.2" cy="75.6" rx="3.6" ry="2.5" fill="#6cbab6" stroke="#a0dcd6" stroke-width="0.7" transform="rotate(90 41.2 75.6)"/><ellipse cx="3.4" cy="133.4" rx="5.5" ry="4.2" fill="#4f9c9c" stroke="#d6f6f2" stroke-width="1.1" transform="rotate(134 3.4 133.4)"/><ellipse cx="49.9" cy="30.3" rx="5.8" ry="5.0" fill="#4f9c9c" stroke="#f0fffd" stroke-width="0.9" transform="rotate(174 49.9 30.3)"/><ellipse cx="12.3" cy="177.6" rx="5.9" ry="5.8" fill="#4f9c9c" stroke="#b8ece6" stroke-width="1.1" transform="rotate(102 12.3 177.6)"/><ellipse cx="65.3" cy="55.2" rx="3.1" ry="2.3" fill="#357a7e" stroke="#f0fffd" stroke-width="0.9" transform="rotate(77 65.3 55.2)"/><ellipse cx="102.3" cy="147.3" rx="4.1" ry="3.8" fill="#3f8a8c" stroke="#f0fffd" stroke-width="0.9" transform="rotate(67 102.3 147.3)"/><ellipse cx="-9.1" cy="134.5" rx="6.4" ry="6.0" fill="#3f8a8c" stroke="#a0dcd6" stroke-width="0.9" transform="rotate(115 -9.1 134.5)"/><ellipse cx="15.6" cy="60.1" rx="2.8" ry="2.1" fill="#62b0ae" stroke="#f0fffd" stroke-width="0.9" transform="rotate(1 15.6 60.1)"/><ellipse cx="-33.9" cy="103.6" rx="5.7" ry="5.1" fill="#3f8a8c" stroke="#a0dcd6" stroke-width="0.7" transform="rotate(161 -33.9 103.6)"/><ellipse cx="94.4" cy="85.4" rx="3.8" ry="2.9" fill="#6cbab6" stroke="#b8ece6" stroke-width="1.1" transform="rotate(114 94.4 85.4)"/><ellipse cx="22.1" cy="87.6" rx="5.9" ry="4.3" fill="#62b0ae" stroke="#f0fffd" stroke-width="0.7" transform="rotate(136 22.1 87.6)"/><ellipse cx="20.6" cy="20.8" rx="6.1" ry="5.7" fill="#62b0ae" stroke="#a0dcd6" stroke-width="1.1" transform="rotate(172 20.6 20.8)"/><ellipse cx="0.5" cy="28.9" rx="5.0" ry="3.5" fill="#357a7e" stroke="#f0fffd" stroke-width="0.9" transform="rotate(73 0.5 28.9)"/><ellipse cx="9.7" cy="158.4" rx="5.2" ry="5.0" fill="#4f9c9c" stroke="#d6f6f2" stroke-width="0.9" transform="rotate(20 9.7 158.4)"/><ellipse cx="36.4" cy="28.9" rx="3.1" ry="2.4" fill="#357a7e" stroke="#f0fffd" stroke-width="0.7" transform="rotate(176 36.4 28.9)"/><ellipse cx="-3.1" cy="156.8" rx="5.8" ry="4.7" fill="#3f8a8c" stroke="#a0dcd6" stroke-width="0.7" transform="rotate(19 -3.1 156.8)"/><ellipse cx="109.3" cy="39.5" rx="3.6" ry="3.2" fill="#357a7e" stroke="#b8ece6" stroke-width="1.1" transform="rotate(37 109.3 39.5)"/><ellipse cx="103.3" cy="158.2" rx="5.1" ry="3.1" fill="#357a7e" stroke="#d6f6f2" stroke-width="1.1" transform="rotate(28 103.3 158.2)"/><ellipse cx="-2.2" cy="155.4" rx="3.8" ry="3.1" fill="#4f9c9c" stroke="#f0fffd" stroke-width="0.9" transform="rotate(86 -2.2 155.4)"/><ellipse cx="133.4" cy="96.8" rx="2.7" ry="2.7" fill="#3f8a8c" stroke="#a0dcd6" stroke-width="0.9" transform="rotate(139 133.4 96.8)"/><ellipse cx="170.9" cy="128.1" rx="5.7" ry="5.2" fill="#3f8a8c" stroke="#a0dcd6" stroke-width="1.1" transform="rotate(104 170.9 128.1)"/><ellipse cx="94.1" cy="79.2" rx="4.3" ry="3.4" fill="#4f9c9c" stroke="#a0dcd6" stroke-width="0.7" transform="rotate(134 94.1 79.2)"/><ellipse cx="42.7" cy="3.8" rx="5.5" ry="5.4" fill="#6cbab6" stroke="#b8ece6" stroke-width="1.1" transform="rotate(84 42.7 3.8)"/><ellipse cx="81.7" cy="7.3" rx="6.4" ry="4.8" fill="#357a7e" stroke="#a0dcd6" stroke-width="0.9" transform="rotate(6 81.7 7.3)"/><ellipse cx="112.1" cy="171.5" rx="6.1" ry="4.9" fill="#4f9c9c" stroke="#d6f6f2" stroke-width="1.1" transform="rotate(116 112.1 171.5)"/><ellipse cx="55.9" cy="73.8" rx="6.2" ry="4.4" fill="#6cbab6" stroke="#a0dcd6" stroke-width="0.7" transform="rotate(105 55.9 73.8)"/><ellipse cx="29.7" cy="187.3" rx="6.1" ry="5.8" fill="#357a7e" stroke="#d6f6f2" stroke-width="1.1" transform="rotate(99 29.7 187.3)"/><ellipse cx="105.5" cy="171.8" rx="6.3" ry="4.9" fill="#4f9c9c" stroke="#b8ece6" stroke-width="0.7" transform="rotate(117 105.5 171.8)"/><ellipse cx="90.0" cy="143.2" rx="3.2" ry="2.7" fill="#3f8a8c" stroke="#d6f6f2" stroke-width="0.9" transform="rotate(170 90.0 143.2)"/><ellipse cx="6.4" cy="113.9" rx="6.2" ry="6.1" fill="#6cbab6" stroke="#a0dcd6" stroke-width="1.1" transform="rotate(78 6.4 113.9)"/><ellipse cx="48.5" cy="197.2" rx="2.8" ry="1.8" fill="#6cbab6" stroke="#d6f6f2" stroke-width="1.1" transform="rotate(76 48.5 197.2)"/><ellipse cx="82.0" cy="57.1" rx="5.0" ry="4.4" fill="#3f8a8c" stroke="#f0fffd" stroke-width="1.1" transform="rotate(28 82.0 57.1)"/><ellipse cx="9.5" cy="151.6" rx="3.0" ry="1.9" fill="#4f9c9c" stroke="#f0fffd" stroke-width="0.9" transform="rotate(179 9.5 151.6)"/><ellipse cx="-2.6" cy="155.8" rx="4.4" ry="4.4" fill="#4f9c9c" stroke="#f0fffd" stroke-width="0.7" transform="rotate(41 -2.6 155.8)"/><ellipse cx="80.4" cy="157.0" rx="4.3" ry="3.3" fill="#4f9c9c" stroke="#d6f6f2" stroke-width="0.7" transform="rotate(65 80.4 157.0)"/><ellipse cx="-22.0" cy="55.5" rx="2.8" ry="2.3" fill="#6cbab6" stroke="#a0dcd6" stroke-width="0.7" transform="rotate(118 -22.0 55.5)"/><ellipse cx="98.0" cy="154.8" rx="6.4" ry="6.3" fill="#62b0ae" stroke="#a0dcd6" stroke-width="0.9" transform="rotate(112 98.0 154.8)"/><ellipse cx="142.0" cy="26.9" rx="3.9" ry="3.3" fill="#3f8a8c" stroke="#f0fffd" stroke-width="1.1" transform="rotate(169 142.0 26.9)"/><ellipse cx="57.5" cy="20.1" rx="5.5" ry="5.4" fill="#4f9c9c" stroke="#a0dcd6" stroke-width="0.9" transform="rotate(92 57.5 20.1)"/><ellipse cx="45.5" cy="194.0" rx="2.8" ry="2.6" fill="#3f8a8c" stroke="#b8ece6" stroke-width="0.7" transform="rotate(165 45.5 194.0)"/><ellipse cx="18.7" cy="108.3" rx="3.7" ry="2.7" fill="#4f9c9c" stroke="#d6f6f2" stroke-width="0.9" transform="rotate(12 18.7 108.3)"/><ellipse cx="42.7" cy="59.7" rx="5.0" ry="3.9" fill="#6cbab6" stroke="#d6f6f2" stroke-width="0.9" transform="rotate(133 42.7 59.7)"/><ellipse cx="89.1" cy="115.9" rx="4.7" ry="3.3" fill="#6cbab6" stroke="#a0dcd6" stroke-width="0.9" transform="rotate(149 89.1 115.9)"/><ellipse cx="174.8" cy="83.7" rx="3.3" ry="2.5" fill="#357a7e" stroke="#f0fffd" stroke-width="0.7" transform="rotate(152 174.8 83.7)"/><ellipse cx="18.0" cy="147.0" rx="5.0" ry="4.6" fill="#6cbab6" stroke="#f0fffd" stroke-width="0.9" transform="rotate(1 18.0 147.0)"/><ellipse cx="34.1" cy="59.4" rx="3.0" ry="2.6" fill="#4f9c9c" stroke="#d6f6f2" stroke-width="0.9" transform="rotate(135 34.1 59.4)"/><ellipse cx="-22.3" cy="77.4" rx="3.9" ry="2.7" fill="#62b0ae" stroke="#d6f6f2" stroke-width="0.9" transform="rotate(82 -22.3 77.4)"/><ellipse cx="124.4" cy="98.8" rx="6.4" ry="5.0" fill="#357a7e" stroke="#b8ece6" stroke-width="0.7" transform="rotate(76 124.4 98.8)"/><ellipse cx="27.8" cy="39.9" rx="2.6" ry="2.3" fill="#62b0ae" stroke="#d6f6f2" stroke-width="0.7" transform="rotate(161 27.8 39.9)"/><ellipse cx="92.4" cy="109.5" rx="5.7" ry="3.6" fill="#6cbab6" stroke="#f0fffd" stroke-width="0.7" transform="rotate(129 92.4 109.5)"/><ellipse cx="75.5" cy="120.4" rx="4.4" ry="3.7" fill="#4f9c9c" stroke="#b8ece6" stroke-width="0.9" transform="rotate(110 75.5 120.4)"/><ellipse cx="58.5" cy="33.1" rx="5.0" ry="3.2" fill="#357a7e" stroke="#d6f6f2" stroke-width="0.7" transform="rotate(121 58.5 33.1)"/><ellipse cx="89.2" cy="195.6" rx="4.9" ry="3.7" fill="#6cbab6" stroke="#b8ece6" stroke-width="0.9" transform="rotate(35 89.2 195.6)"/><ellipse cx="141.9" cy="68.7" rx="2.5" ry="1.6" fill="#357a7e" stroke="#d6f6f2" stroke-width="1.1" transform="rotate(90 141.9 68.7)"/><ellipse cx="51.1" cy="84.3" rx="4.3" ry="2.8" fill="#357a7e" stroke="#a0dcd6" stroke-width="1.1" transform="rotate(131 51.1 84.3)"/><ellipse cx="45.8" cy="151.0" rx="4.1" ry="3.3" fill="#6cbab6" stroke="#b8ece6" stroke-width="0.9" transform="rotate(100 45.8 151.0)"/><ellipse cx="152.6" cy="124.2" rx="5.9" ry="3.9" fill="#357a7e" stroke="#b8ece6" stroke-width="0.9" transform="rotate(160 152.6 124.2)"/><ellipse cx="59.4" cy="82.5" rx="4.2" ry="3.6" fill="#357a7e" stroke="#d6f6f2" stroke-width="0.7" transform="rotate(156 59.4 82.5)"/><ellipse cx="88.4" cy="133.9" rx="4.7" ry="2.8" fill="#4f9c9c" stroke="#b8ece6" stroke-width="0.7" transform="rotate(61 88.4 133.9)"/><ellipse cx="-7.1" cy="75.0" rx="3.0" ry="2.8" fill="#62b0ae" stroke="#b8ece6" stroke-width="1.1" transform="rotate(153 -7.1 75.0)"/><ellipse cx="-7.1" cy="93.0" rx="3.6" ry="2.5" fill="#4f9c9c" stroke="#a0dcd6" stroke-width="0.7" transform="rotate(65 -7.1 93.0)"/><ellipse cx="50.8" cy="85.2" rx="2.8" ry="1.9" fill="#4f9c9c" stroke="#f0fffd" stroke-width="1.1" transform="rotate(159 50.8 85.2)"/><ellipse cx="-0.2" cy="132.6" rx="4.2" ry="3.8" fill="#4f9c9c" stroke="#f0fffd" stroke-width="0.7" transform="rotate(122 -0.2 132.6)"/><ellipse cx="59.2" cy="99.6" rx="4.4" ry="4.2" fill="#4f9c9c" stroke="#a0dcd6" stroke-width="0.9" transform="rotate(116 59.2 99.6)"/><ellipse cx="71.1" cy="36.2" rx="5.6" ry="5.0" fill="#62b0ae" stroke="#b8ece6" stroke-width="0.9" transform="rotate(44 71.1 36.2)"/><ellipse cx="-14.9" cy="137.7" rx="3.7" ry="2.9" fill="#3f8a8c" stroke="#f0fffd" stroke-width="0.7" transform="rotate(153 -14.9 137.7)"/><ellipse cx="124.3" cy="146.7" rx="4.0" ry="3.5" fill="#357a7e" stroke="#d6f6f2" stroke-width="1.1" transform="rotate(169 124.3 146.7)"/><ellipse cx="-27.8" cy="123.5" rx="4.0" ry="2.8" fill="#6cbab6" stroke="#f0fffd" stroke-width="0.7" transform="rotate(128 -27.8 123.5)"/><ellipse cx="84.0" cy="173.1" rx="4.0" ry="2.9" fill="#357a7e" stroke="#d6f6f2" stroke-width="0.7" transform="rotate(158 84.0 173.1)"/><ellipse cx="-23.7" cy="97.2" rx="5.4" ry="5.2" fill="#62b0ae" stroke="#d6f6f2" stroke-width="0.9" transform="rotate(84 -23.7 97.2)"/><ellipse cx="48.7" cy="77.0" rx="5.0" ry="4.0" fill="#6cbab6" stroke="#b8ece6" stroke-width="1.1" transform="rotate(67 48.7 77.0)"/><ellipse cx="143.1" cy="20.1" rx="4.2" ry="4.2" fill="#357a7e" stroke="#d6f6f2" stroke-width="0.7" transform="rotate(59 143.1 20.1)"/><ellipse cx="18.1" cy="62.1" rx="5.6" ry="5.4" fill="#6cbab6" stroke="#a0dcd6" stroke-width="0.7" transform="rotate(56 18.1 62.1)"/><ellipse cx="132.0" cy="46.9" rx="6.2" ry="6.1" fill="#3f8a8c" stroke="#d6f6f2" stroke-width="0.9" transform="rotate(33 132.0 46.9)"/><ellipse cx="71.6" cy="14.9" rx="3.7" ry="3.5" fill="#62b0ae" stroke="#f0fffd" stroke-width="0.7" transform="rotate(133 71.6 14.9)"/><ellipse cx="49.8" cy="75.4" rx="5.5" ry="3.9" fill="#6cbab6" stroke="#f0fffd" stroke-width="0.7" transform="rotate(73 49.8 75.4)"/><ellipse cx="24.5" cy="74.4" rx="3.8" ry="2.4" fill="#4f9c9c" stroke="#d6f6f2" stroke-width="1.1" transform="rotate(118 24.5 74.4)"/><ellipse cx="137.6" cy="162.3" rx="4.6" ry="2.9" fill="#62b0ae" stroke="#f0fffd" stroke-width="1.1" transform="rotate(22 137.6 162.3)"/><ellipse cx="79.4" cy="86.3" rx="5.6" ry="4.5" fill="#62b0ae" stroke="#b8ece6" stroke-width="1.1" transform="rotate(15 79.4 86.3)"/><ellipse cx="90.8" cy="26.0" rx="6.3" ry="6.2" fill="#4f9c9c" stroke="#b8ece6" stroke-width="0.7" transform="rotate(61 90.8 26.0)"/><ellipse cx="28.5" cy="30.7" rx="2.7" ry="2.3" fill="#4f9c9c" stroke="#d6f6f2" stroke-width="1.1" transform="rotate(176 28.5 30.7)"/><ellipse cx="93.9" cy="111.3" rx="3.8" ry="3.1" fill="#357a7e" stroke="#f0fffd" stroke-width="1.1" transform="rotate(18 93.9 111.3)"/><ellipse cx="77.0" cy="99.2" rx="5.8" ry="4.7" fill="#6cbab6" stroke="#b8ece6" stroke-width="1.1" transform="rotate(93 77.0 99.2)"/><ellipse cx="70.6" cy="53.7" rx="5.9" ry="4.1" fill="#4f9c9c" stroke="#b8ece6" stroke-width="0.7" transform="rotate(21 70.6 53.7)"/><ellipse cx="172.0" cy="68.7" rx="2.6" ry="2.0" fill="#62b0ae" stroke="#d6f6f2" stroke-width="1.1" transform="rotate(32 172.0 68.7)"/><ellipse cx="74.4" cy="127.9" rx="4.4" ry="4.4" fill="#3f8a8c" stroke="#d6f6f2" stroke-width="0.9" transform="rotate(32 74.4 127.9)"/><ellipse cx="44.6" cy="91.6" rx="2.7" ry="2.3" fill="#357a7e" stroke="#a0dcd6" stroke-width="0.9" transform="rotate(85 44.6 91.6)"/><ellipse cx="-21.1" cy="94.3" rx="3.5" ry="2.4" fill="#62b0ae" stroke="#d6f6f2" stroke-width="0.7" transform="rotate(89 -21.1 94.3)"/><ellipse cx="104.0" cy="39.6" rx="4.3" ry="2.9" fill="#4f9c9c" stroke="#a0dcd6" stroke-width="0.9" transform="rotate(104 104.0 39.6)"/><ellipse cx="69.1" cy="164.1" rx="5.4" ry="3.5" fill="#4f9c9c" stroke="#f0fffd" stroke-width="0.7" transform="rotate(86 69.1 164.1)"/><ellipse cx="61.7" cy="108.4" rx="4.0" ry="3.8" fill="#4f9c9c" stroke="#b8ece6" stroke-width="1.1" transform="rotate(46 61.7 108.4)"/><ellipse cx="121.4" cy="171.2" rx="6.2" ry="3.8" fill="#3f8a8c" stroke="#b8ece6" stroke-width="0.7" transform="rotate(80 121.4 171.2)"/><ellipse cx="13.5" cy="149.2" rx="3.2" ry="2.0" fill="#3f8a8c" stroke="#d6f6f2" stroke-width="0.9" transform="rotate(46 13.5 149.2)"/><ellipse cx="136.5" cy="98.6" rx="3.9" ry="3.7" fill="#4f9c9c" stroke="#d6f6f2" stroke-width="0.7" transform="rotate(105 136.5 98.6)"/><ellipse cx="95.7" cy="146.3" rx="5.9" ry="4.6" fill="#3f8a8c" stroke="#f0fffd" stroke-width="0.7" transform="rotate(63 95.7 146.3)"/><ellipse cx="90.6" cy="116.7" rx="3.8" ry="3.7" fill="#62b0ae" stroke="#d6f6f2" stroke-width="1.1" transform="rotate(162 90.6 116.7)"/><ellipse cx="-19.4" cy="80.1" rx="4.1" ry="2.9" fill="#3f8a8c" stroke="#a0dcd6" stroke-width="0.7" transform="rotate(161 -19.4 80.1)"/><ellipse cx="74.7" cy="190.7" rx="6.4" ry="4.0" fill="#6cbab6" stroke="#d6f6f2" stroke-width="0.7" transform="rotate(168 74.7 190.7)"/><ellipse cx="99.3" cy="-3.3" rx="5.5" ry="4.0" fill="#3f8a8c" stroke="#f0fffd" stroke-width="1.1" transform="rotate(138 99.3 -3.3)"/><ellipse cx="131.4" cy="134.2" rx="6.1" ry="5.2" fill="#3f8a8c" stroke="#a0dcd6" stroke-width="0.7" transform="rotate(44 131.4 134.2)"/><ellipse cx="56.4" cy="-4.2" rx="5.4" ry="4.8" fill="#357a7e" stroke="#d6f6f2" stroke-width="0.9" transform="rotate(122 56.4 -4.2)"/><ellipse cx="104.3" cy="90.2" rx="5.6" ry="4.2" fill="#62b0ae" stroke="#d6f6f2" stroke-width="1.1" transform="rotate(159 104.3 90.2)"/><ellipse cx="45.7" cy="119.7" rx="4.7" ry="4.7" fill="#357a7e" stroke="#a0dcd6" stroke-width="0.9" transform="rotate(176 45.7 119.7)"/><ellipse cx="149.5" cy="139.2" rx="6.2" ry="4.6" fill="#6cbab6" stroke="#b8ece6" stroke-width="1.1" transform="rotate(50 149.5 139.2)"/></g><ellipse cx="70" cy="105" rx="45" ry="40" fill="#aee8e2" opacity="0.3" clip-path="url(#cc)"/><rect x="0" y="0" width="181" height="203" fill="url(#tg)" clip-path="url(#cc)"/><g clip-path="url(#cc)" fill="none" stroke-linecap="round" stroke-linejoin="round"><path d="M93.0 75.0 Q96.4 74.9 96.2 74.1 Q97.1 73.8 99.0 75.6 Q97.0 77.2 97.9 80.4 M55.3 92.8 Q55.5 95.2 58.0 95.6 Q54.4 98.7 54.3 98.4 Q55.0 99.0 54.8 100.8 M140.9 125.0 Q140.1 125.5 140.4 127.1 Q143.5 126.5 143.9 129.8 Q144.6 132.9 142.7 134.3 M30.6 68.4 Q32.8 68.8 34.5 71.3 Q35.9 70.7 37.3 72.6 M41.0 68.5 Q42.8 69.5 41.8 71.0 Q42.0 68.8 45.2 68.5 M95.1 144.5 Q93.8 142.7 96.2 140.8 Q93.5 140.2 92.9 139.1 M123.5 54.9 Q125.2 58.1 123.9 57.3 Q126.0 56.2 125.8 58.1 Q125.6 58.7 129.2 58.0 M54.1 186.2 Q52.9 185.0 50.7 184.8 Q50.7 185.1 50.8 181.9 M87.6 104.8 Q87.3 104.8 90.9 103.7 Q89.7 104.4 91.6 106.1 Q92.7 107.0 90.3 110.1 M27.2 181.5 Q28.8 182.1 30.7 182.9 Q31.0 183.0 34.2 185.4 M146.7 62.1 Q145.2 59.2 147.1 59.9 Q145.9 58.6 147.6 55.7 Q145.9 53.0 143.4 54.3 M-10.4 57.6 Q-11.4 55.7 -12.3 56.0 Q-10.1 54.9 -10.2 54.0 M57.2 17.4 Q56.2 17.1 54.4 15.9 Q53.3 16.3 53.0 20.4 Q54.2 20.7 53.9 23.8 M34.3 105.6 Q32.7 105.3 32.6 102.9 Q29.7 103.5 30.1 102.7 M23.5 170.7 Q27.2 168.9 28.4 170.1 Q31.6 170.5 31.2 169.0 Q32.7 170.5 32.7 171.8 M138.6 117.0 Q142.2 116.6 142.3 119.3 Q144.1 123.0 144.6 123.3 Q141.9 125.6 142.5 124.7 M80.9 140.1 Q79.1 141.9 77.1 142.7 Q74.9 145.8 75.7 146.0 Q74.0 147.8 75.4 149.4 M11.9 26.6 Q15.0 30.4 14.3 30.8 Q14.4 29.9 11.5 32.6 M98.4 181.9 Q97.6 182.9 100.7 184.7 Q104.1 182.7 103.7 182.6 M72.6 160.7 Q70.8 161.5 72.7 165.1 Q76.3 165.4 76.7 164.8 Q77.0 162.7 75.8 162.6 M38.7 -3.5 Q38.9 -2.1 39.6 0.7 Q37.9 0.5 36.9 2.4 Q39.1 3.5 38.9 3.7 M2.4 134.6 Q5.2 135.8 4.5 136.8 Q6.4 137.8 6.1 134.8 Q6.1 135.8 3.8 134.0 M67.5 87.0 Q67.7 86.8 70.7 90.3 Q70.9 93.5 69.8 95.0 Q72.2 94.8 72.3 98.1" stroke="#b9e8e4" stroke-width="0.7"/><path d="M62.7 119.4 Q63.0 120.1 61.0 123.9 Q61.8 124.7 60.6 127.0 Q60.9 125.3 64.1 127.2 M83.4 162.5 Q84.1 162.2 83.7 159.8 Q82.9 159.8 84.3 157.9 M66.6 51.1 Q65.5 51.1 67.7 48.2 Q69.7 48.1 70.5 47.5 Q73.0 48.9 73.7 48.8 M108.4 114.4 Q106.4 114.5 104.6 111.8 Q105.3 112.5 106.7 109.4 M27.8 0.1 Q28.0 -0.2 30.5 2.3 Q30.5 4.9 28.6 5.6 M116.7 55.4 Q119.2 56.3 119.9 55.7 Q121.9 54.4 124.2 56.1 M57.3 45.7 Q59.8 45.4 60.1 47.7 Q60.9 50.0 61.8 48.9 Q63.3 50.1 63.6 51.2 M61.3 148.2 Q61.6 145.3 62.7 144.2 Q64.2 144.9 66.7 146.4 M68.3 67.5 Q68.1 67.3 69.4 71.0 Q68.8 70.7 71.7 72.9 M31.8 142.3 Q30.7 142.5 33.0 139.2 Q33.9 138.3 34.3 136.7 Q34.2 136.2 34.5 132.3 M71.4 178.6 Q70.6 174.6 70.6 174.1 Q70.9 171.9 68.2 170.9 M128.0 29.9 Q129.4 31.1 128.1 32.1 Q130.1 33.2 132.1 30.8 M21.9 55.7 Q23.5 56.6 23.8 60.3 Q24.3 62.9 21.1 61.9 Q19.9 63.5 22.3 63.7 M94.7 41.5 Q93.3 43.5 93.0 45.2 Q92.0 48.2 93.0 47.7 Q93.2 50.5 91.0 50.7 M122.0 175.1 Q121.1 173.9 119.4 173.9 Q119.7 173.0 117.5 170.0 Q116.9 171.0 114.9 171.0 M50.6 48.2 Q51.8 49.0 52.9 47.6 Q51.5 44.0 54.0 44.0 M77.1 79.5 Q76.7 83.3 77.5 83.8 Q81.2 84.0 81.1 83.9 M125.9 158.0 Q125.4 160.3 123.4 159.0 Q121.0 157.9 119.4 156.1 Q116.8 155.8 116.4 157.2 M43.1 112.9 Q43.5 114.5 45.7 114.2 Q49.1 112.8 50.5 115.4 Q49.3 118.0 49.0 118.4 M103.0 96.9 Q104.2 96.5 106.7 96.8 Q107.0 97.6 110.9 99.1 M88.1 169.8 Q86.3 172.6 87.2 172.8 Q85.8 174.6 83.9 174.4 M82.7 127.2 Q79.2 127.2 78.2 126.7 Q78.5 128.5 76.5 130.8 Q74.2 130.8 72.7 133.9 M9.8 27.2 Q10.4 28.8 12.1 31.6 Q12.5 31.6 15.0 31.5 Q17.9 30.3 18.2 30.3 M42.6 9.9 Q42.6 10.3 44.0 7.1 Q46.5 7.1 46.3 8.4 Q47.0 8.0 47.6 4.2 M-1.5 98.9 Q-1.1 97.8 -4.3 98.7 Q-6.2 99.2 -6.2 101.7 Q-3.0 104.5 -1.8 103.6 M169.2 129.7 Q169.9 132.4 167.3 131.2 Q169.9 130.8 169.7 133.6 M97.6 110.2 Q98.4 109.8 95.8 109.2 Q96.9 109.6 95.0 107.1 Q95.1 105.9 96.7 104.6 M-27.1 120.8 Q-28.2 119.0 -27.4 116.3 Q-28.8 117.0 -27.9 113.7 Q-25.0 114.1 -24.7 112.9 M66.4 88.6 Q67.5 89.4 71.0 87.7 Q72.1 90.5 72.8 89.5 M114.5 118.5 Q112.9 119.0 112.7 120.1 Q109.7 120.6 110.4 122.1 Q106.4 124.6 106.4 124.6 M87.2 49.3 Q86.0 46.7 83.8 46.6 Q83.3 47.4 81.8 47.4 Q78.9 45.1 78.8 46.5" stroke="#9ad8d2" stroke-width="1.1"/><path d="M159.4 91.2 Q159.7 91.6 163.3 92.7 Q166.0 92.6 165.5 93.4 Q166.5 92.1 167.2 92.0 M-28.4 116.2 Q-25.8 115.7 -26.1 117.2 Q-25.6 117.7 -21.3 116.6 M59.5 153.9 Q61.0 152.9 63.4 153.7 Q65.0 151.0 65.0 151.6 M14.7 165.2 Q13.4 164.2 10.8 165.0 Q11.2 165.1 7.9 165.3 M26.5 84.1 Q23.9 81.7 22.0 82.6 Q22.6 80.6 21.4 80.0 Q22.2 77.2 19.8 76.2 M35.2 104.6 Q36.2 103.0 34.5 100.9 Q35.7 100.5 35.1 97.0 M64.8 84.7 Q63.5 83.1 61.9 83.6 Q59.6 80.1 59.8 80.0 M59.6 194.9 Q60.1 197.3 56.5 197.0 Q58.0 199.2 59.5 199.2 M41.7 146.1 Q40.9 145.5 38.1 146.4 Q37.0 146.6 33.2 147.5 M110.4 151.2 Q111.0 152.1 110.9 149.3 Q108.8 149.5 109.4 146.6 M78.2 -5.9 Q75.9 -8.0 76.0 -8.6 Q73.7 -10.3 73.3 -9.5 M62.7 75.5 Q63.2 77.5 67.6 76.0 Q69.2 74.5 70.8 75.2 Q71.3 78.4 71.4 78.7 M82.0 146.0 Q79.6 145.9 79.5 145.5 Q79.2 148.0 76.2 148.8 Q77.6 150.9 77.1 151.8 M96.5 126.8 Q98.3 126.3 99.9 129.1 Q100.7 130.6 100.4 133.9 M-3.1 38.7 Q-4.3 37.6 -5.7 37.7 Q-2.9 34.8 -3.0 34.4 M45.8 174.8 Q45.4 174.2 46.9 172.9 Q45.4 170.5 44.7 171.0 Q44.7 172.1 41.4 171.5 M94.2 150.9 Q94.1 150.2 92.3 149.2 Q92.5 148.9 94.0 147.2 Q91.1 144.3 91.8 144.4 M-3.5 153.3 Q-0.7 154.4 1.0 155.0 Q-0.0 154.7 -1.3 158.0 M1.4 23.8 Q-1.5 22.9 -0.8 24.9 Q0.5 27.7 1.7 27.5 M116.9 54.8 Q120.1 52.4 119.8 53.3 Q121.8 52.4 123.8 52.6 M115.2 83.3 Q112.3 83.0 112.7 82.1 Q111.6 82.2 113.3 79.1 M82.7 57.0 Q84.2 56.0 85.6 54.1 Q86.2 53.2 88.5 56.0" stroke="#dff7f4" stroke-width="1.1"/><path d="M96.4 80.1 Q94.6 79.4 92.9 78.7 Q88.7 77.5 88.2 78.5 M159.5 64.2 Q157.9 64.2 157.0 66.4 Q157.5 63.6 154.7 64.5 Q156.2 65.5 155.9 62.9 M150.2 45.8 Q151.1 44.2 148.0 46.1 Q147.9 48.4 146.9 50.9 Q146.6 48.2 142.7 49.3 M90.0 3.8 Q91.2 1.5 90.6 1.1 Q91.9 0.3 94.0 1.8 Q94.1 4.9 94.3 4.3 M78.7 131.0 Q76.5 129.4 74.1 130.2 Q72.9 130.2 70.1 128.0 Q67.7 130.1 68.0 131.4 M-28.8 63.5 Q-27.4 62.0 -28.6 60.6 Q-32.1 58.5 -33.2 58.9 M44.5 10.1 Q45.2 13.1 45.3 12.1 Q44.1 11.8 46.8 14.3 M108.1 42.6 Q107.8 42.7 107.7 45.1 Q109.3 46.0 112.1 44.3 M46.3 32.1 Q46.1 28.0 45.8 27.5 Q46.4 27.0 48.5 28.0 M83.7 41.4 Q84.9 40.8 83.5 37.1 Q81.7 36.3 80.4 37.6 Q80.8 41.8 80.8 42.5 M40.7 63.1 Q41.2 65.2 37.7 64.1 Q36.2 60.9 35.1 61.3 Q35.5 61.7 33.4 59.9 M37.6 122.2 Q36.7 124.9 37.6 125.8 Q39.2 127.2 40.0 127.7 M100.0 194.0 Q102.3 194.1 102.5 196.3 Q105.8 196.3 106.0 198.2 M18.3 88.4 Q15.8 87.7 16.3 86.5 Q16.8 86.0 13.7 88.1 Q14.1 91.7 14.4 92.1 M106.3 85.2 Q107.0 84.9 108.9 83.6 Q106.1 83.1 106.6 81.5 Q103.7 83.1 102.9 83.2 M94.2 100.4 Q92.0 102.7 92.8 105.0 Q92.0 107.2 89.4 105.4 M88.1 80.0 Q88.5 79.1 90.1 75.6 Q89.0 74.6 87.1 73.9 M124.5 142.1 Q123.4 141.6 123.8 143.9 Q123.3 145.1 124.5 145.8 Q125.8 149.7 125.3 150.2 M20.1 114.2 Q21.8 113.2 20.3 109.4 Q20.2 108.5 18.7 106.6 M-20.2 126.8 Q-18.9 125.7 -17.9 123.0 Q-19.1 119.2 -20.5 119.2 M-16.7 150.7 Q-13.0 152.1 -12.4 151.3 Q-11.4 152.1 -10.6 153.6 M111.6 65.3 Q111.0 66.0 114.3 65.9 Q113.2 63.5 114.3 63.5 M108.9 150.7 Q111.2 151.8 110.8 155.2 Q113.1 155.5 113.2 153.3 M52.9 135.6 Q51.7 135.4 49.9 139.2 Q48.9 140.1 47.6 140.0 Q46.4 136.6 47.1 136.4 M163.4 116.9 Q160.8 117.6 160.4 118.8 Q158.6 119.0 158.5 116.7 M153.6 80.6 Q151.3 77.5 152.0 78.3 Q150.8 77.1 149.8 79.8 Q149.4 80.0 147.8 76.6 M45.8 101.7 Q45.1 101.4 41.0 103.0 Q38.8 101.5 38.8 99.9 Q38.7 99.1 34.8 100.6 M52.6 173.0 Q52.1 171.9 54.8 169.9 Q53.8 167.0 55.6 166.7 Q55.8 168.0 58.2 168.0 M59.6 69.3 Q58.6 65.9 57.8 65.3 Q56.9 66.0 55.9 64.4 Q53.5 68.7 55.1 69.2 M93.6 124.5 Q93.3 123.4 91.1 121.6 Q91.8 123.2 89.5 125.0 Q87.7 126.1 87.2 123.2" stroke="#f2fffd" stroke-width="0.9"/><path d="M64.4 72.6 Q65.3 74.1 63.0 74.2 Q63.7 75.1 64.2 78.2 M62.5 14.4 Q59.5 14.3 58.7 12.6 Q60.8 11.3 59.4 10.7 Q59.7 10.0 61.4 11.0 M3.7 135.8 Q3.9 135.3 7.8 137.5 Q7.6 134.2 11.2 134.6 Q13.2 134.6 12.4 131.7 M14.3 118.7 Q15.3 122.1 13.3 121.7 Q12.9 122.4 10.5 123.0 M30.1 85.5 Q30.5 86.3 30.3 83.4 Q30.8 81.4 28.2 81.5 M70.1 96.2 Q69.8 97.0 65.8 95.9 Q62.8 95.8 62.8 94.0 M85.4 195.7 Q85.1 197.9 84.0 200.0 Q84.4 202.4 85.2 202.1 M-18.8 71.2 Q-17.6 72.4 -15.0 69.6 Q-13.2 67.0 -13.1 68.3 M44.6 89.1 Q45.5 86.5 42.6 86.4 Q41.4 85.2 38.9 85.5 Q38.9 84.0 35.5 86.2 M66.8 18.5 Q66.8 17.0 65.4 16.3 Q62.8 17.0 61.1 14.7 M122.7 175.9 Q123.0 175.4 120.8 171.5 Q120.5 172.3 122.9 170.7 M36.6 112.5 Q35.5 113.0 34.0 112.2 Q33.6 111.1 31.4 109.1 M82.5 152.6 Q83.1 152.0 85.5 155.1 Q86.5 155.9 83.6 157.2 Q81.7 159.1 82.6 159.1 M87.0 23.3 Q88.8 21.5 90.5 22.4 Q91.2 21.8 88.1 18.4 M123.8 158.0 Q123.4 159.5 122.8 162.6 Q120.0 164.6 120.6 165.2 M11.6 144.3 Q14.9 143.8 14.3 143.6 Q16.0 144.2 15.6 141.5 Q11.8 142.4 11.7 140.6 M71.6 29.0 Q70.9 28.6 66.9 29.3 Q67.4 27.6 66.9 24.6 M125.6 83.2 Q125.3 84.1 126.0 85.3 Q123.0 85.9 123.6 86.3 M-8.6 141.4 Q-6.4 140.3 -5.8 137.3 Q-8.4 136.3 -8.3 134.1 M67.6 0.7 Q70.5 -0.3 71.2 0.4 Q71.2 -1.5 74.6 -1.7 M26.4 176.2 Q23.5 175.9 23.7 178.7 Q22.1 175.0 22.2 175.3 M104.9 189.6 Q107.1 187.3 106.2 185.0 Q108.5 185.9 109.0 183.9 Q110.2 184.9 109.5 186.3" stroke="#b9e8e4" stroke-width="1.1"/><path d="M69.2 36.5 Q67.2 33.4 67.1 32.5 Q65.5 29.4 67.1 29.8 Q69.3 28.1 69.3 25.7 M139.5 90.1 Q139.5 86.9 139.5 87.5 Q138.0 85.0 139.7 85.4 M21.5 110.1 Q20.1 113.0 18.9 112.2 Q16.6 113.5 16.8 113.4 Q15.3 113.8 13.9 114.9 M18.8 66.1 Q20.2 65.9 21.2 68.6 Q20.9 67.7 18.6 70.7 M-28.1 108.2 Q-27.8 110.1 -25.7 110.8 Q-25.4 109.2 -23.2 109.3 M47.0 170.0 Q46.7 169.1 46.6 167.9 Q43.3 166.1 42.4 166.5 Q42.2 162.8 41.9 162.2 M48.0 62.4 Q46.3 62.7 44.9 61.3 Q44.1 63.9 44.9 63.4 M83.7 148.2 Q83.5 147.6 86.9 148.5 Q87.4 147.2 91.1 149.2 Q91.6 150.9 90.4 151.3 M155.4 106.7 Q157.8 108.6 157.0 108.0 Q158.6 110.0 157.7 110.8 M168.3 107.0 Q166.6 107.1 166.1 108.1 Q166.2 110.5 163.1 109.7 M35.3 68.4 Q38.1 68.9 38.3 67.4 Q40.3 65.0 38.4 63.5 M25.9 122.2 Q24.4 121.4 26.9 120.3 Q24.7 120.7 25.6 118.7 M1.2 102.4 Q3.7 101.6 3.1 104.0 Q4.8 106.0 5.1 107.4 M43.7 55.2 Q46.2 57.1 46.7 57.9 Q44.8 61.0 46.6 61.7 Q44.9 63.7 44.1 61.9 M102.7 155.2 Q102.4 159.3 102.6 159.7 Q103.7 161.3 105.2 159.3 M112.0 6.1 Q114.5 4.0 116.6 5.7 Q118.2 8.0 120.2 6.3 M48.7 133.6 Q46.1 134.4 45.5 131.6 Q43.9 130.0 43.5 127.7 Q45.2 125.1 44.8 124.3 M55.9 168.2 Q56.3 170.3 54.7 171.4 Q58.4 172.2 58.3 171.7 M71.9 71.6 Q72.8 69.1 71.7 66.9 Q73.7 64.9 73.9 65.3 Q74.7 65.8 75.0 68.8 M-11.4 103.3 Q-11.3 102.2 -8.9 99.8 Q-8.1 100.5 -4.8 100.8 Q-4.5 97.4 -5.5 95.9 M-3.0 32.3 Q-2.2 31.6 -0.7 32.2 Q-1.0 29.2 -0.5 29.7 M29.2 46.8 Q27.6 47.4 26.5 47.7 Q26.2 47.2 23.2 50.2 M55.6 23.0 Q57.6 22.6 57.8 24.7 Q55.6 23.9 55.4 26.8 M24.2 89.0 Q22.6 89.0 20.2 87.3 Q19.6 84.1 21.6 83.1 Q20.8 81.9 21.4 78.2 M10.2 103.2 Q7.1 101.0 7.8 99.8 Q9.9 99.9 10.2 96.8 M3.9 175.7 Q3.4 175.8 4.0 173.0 Q4.9 170.9 5.3 170.5 M129.7 159.5 Q128.2 157.6 127.3 159.2 Q127.2 160.6 124.4 161.3 Q125.8 160.7 123.3 157.0 M67.2 179.9 Q67.6 181.8 71.3 180.8 Q72.0 182.9 70.0 185.0 Q73.1 185.9 72.4 187.8 M133.9 168.3 Q134.4 167.8 132.0 165.3 Q132.5 164.1 133.2 163.5 Q133.5 164.8 137.8 163.2 M88.1 162.8 Q87.9 160.7 85.7 162.1 Q86.8 160.1 85.9 157.2 Q83.8 156.4 83.6 154.9 M143.3 123.3 Q143.8 125.9 144.8 127.8 Q145.3 129.7 147.5 131.6 Q146.4 131.3 145.9 134.3 M122.7 85.3 Q121.7 84.8 120.7 85.6 Q121.0 82.7 119.8 83.6 Q121.6 83.8 119.9 80.1 M69.2 133.4 Q68.0 137.2 69.0 137.1 Q65.5 136.8 64.4 137.8 Q63.9 137.8 64.8 140.6 M82.0 25.8 Q81.9 24.9 78.2 23.8 Q76.6 21.9 76.5 22.0 M84.6 118.7 Q85.1 117.7 81.6 120.4 Q83.8 122.6 83.5 122.2 Q85.4 122.9 88.1 122.8 M115.2 85.6 Q117.1 86.6 117.7 87.3 Q116.4 83.4 119.0 83.0 M112.5 75.1 Q111.7 74.9 109.1 76.3 Q110.6 77.7 110.9 78.8 Q112.7 76.7 113.1 77.7 M-28.8 62.6 Q-30.5 61.1 -30.3 59.0 Q-30.5 59.5 -30.7 56.2" stroke="#f2fffd" stroke-width="1.1"/><path d="M128.6 86.3 Q128.5 85.8 131.6 86.8 Q133.4 85.7 134.0 83.7 Q133.5 82.7 135.5 85.0 M20.1 178.7 Q20.4 179.8 22.1 177.0 Q21.5 176.4 24.5 174.7 Q24.1 174.1 23.3 172.7 M-2.1 156.7 Q0.6 154.5 2.1 155.3 Q3.6 151.8 3.1 152.0 Q3.2 153.9 7.1 153.3 M44.5 66.6 Q46.0 65.9 45.4 62.7 Q46.6 61.6 47.3 61.4 Q49.9 64.7 50.0 64.1 M-7.0 129.8 Q-5.4 127.7 -4.0 128.2 Q-0.3 130.4 -0.3 128.9 Q0.6 128.7 1.4 130.3 M46.5 144.0 Q44.7 145.0 45.7 146.7 Q45.6 148.1 45.6 150.0 Q44.5 150.7 43.2 151.2 M-5.8 168.2 Q-4.9 167.7 -1.7 168.3 Q-3.0 165.4 -2.8 165.5 Q-6.0 168.0 -5.8 166.9 M21.5 8.7 Q23.3 9.9 22.4 13.2 Q20.2 14.6 18.5 14.4 Q16.3 14.8 16.3 17.5 M3.5 28.0 Q3.4 28.0 2.5 31.2 Q5.0 31.5 6.5 33.4 Q5.8 35.8 5.5 36.0 M62.5 163.0 Q62.6 160.9 62.9 160.2 Q63.5 157.6 65.7 158.7 M118.2 20.9 Q117.5 20.9 118.0 24.7 Q118.9 23.5 122.0 25.3 Q122.5 27.6 120.5 30.0 M18.2 97.8 Q18.8 97.4 20.4 99.8 Q19.5 102.7 21.5 101.5 Q23.5 102.5 22.5 104.4 M-11.0 30.1 Q-11.6 31.4 -15.8 28.7 Q-17.7 27.4 -15.8 26.4 Q-15.6 27.9 -19.1 25.9 M1.4 125.2 Q3.1 127.3 3.5 126.1 Q2.0 123.7 4.3 123.8 M64.5 -0.6 Q63.9 0.5 66.8 0.2 Q66.6 2.6 68.2 2.2 Q70.9 1.3 71.0 -0.9 M59.2 122.0 Q60.9 119.3 61.5 118.0 Q63.2 118.4 64.4 121.8 Q63.8 119.6 66.5 120.8 M28.9 82.4 Q31.8 80.4 30.6 77.8 Q33.7 80.5 34.4 80.5 M126.3 170.9 Q129.9 170.3 129.9 168.0 Q127.0 167.9 127.5 165.8 Q127.7 167.0 125.2 165.9 M16.0 122.0 Q16.6 120.4 16.2 118.2 Q19.2 117.6 19.9 116.3 M60.0 86.7 Q59.4 86.6 55.7 86.3 Q55.5 88.3 52.5 88.6 M37.3 148.6 Q36.6 149.0 33.7 147.6 Q31.8 150.5 33.3 150.5 M25.7 3.0 Q23.7 6.0 25.6 7.2 Q26.8 7.5 25.2 10.9 Q23.8 13.8 24.4 15.7 M-3.2 166.8 Q-1.3 163.3 -0.7 162.5 Q2.1 160.5 1.7 159.9 Q2.8 157.9 3.0 156.0 M78.7 12.0 Q76.8 9.5 77.0 10.2 Q76.0 10.2 73.0 10.7 Q71.8 10.3 69.1 10.5 M7.4 61.0 Q7.6 61.6 6.4 63.2 Q5.3 62.9 3.8 60.2 Q1.8 60.3 1.1 56.9 M100.7 185.8 Q101.6 184.5 104.2 185.3 Q106.4 189.1 106.0 189.0 M67.0 20.8 Q65.2 20.0 63.3 20.8 Q63.4 20.2 60.0 21.3 Q59.0 18.1 57.1 17.4 M162.9 118.9 Q162.3 118.3 164.5 120.6 Q166.0 123.7 165.1 123.9 M36.9 73.1 Q36.2 75.3 34.8 73.7 Q35.3 76.3 36.7 76.5 M2.8 51.1 Q3.3 50.0 -0.1 52.3 Q0.9 54.4 1.7 55.8 M-1.5 60.7 Q-1.1 63.9 -0.6 64.9 Q0.2 67.6 -2.1 67.0 Q-0.2 69.3 0.3 68.6 M32.1 91.4 Q30.6 91.6 31.8 94.8 Q33.7 94.8 33.9 94.6" stroke="#f2fffd" stroke-width="0.7"/><path d="M81.6 36.5 Q80.9 36.5 81.5 40.2 Q80.6 39.5 78.5 42.5 Q76.0 39.8 73.9 40.8 M104.3 102.5 Q103.1 101.1 99.8 102.3 Q99.8 102.8 98.8 106.1 M60.1 190.0 Q59.5 188.7 59.0 187.2 Q56.1 187.9 55.9 187.1 Q55.6 186.9 51.9 187.5 M151.1 114.1 Q152.2 115.4 153.0 115.7 Q151.0 116.6 151.6 118.1 M76.5 121.7 Q73.7 122.5 74.8 122.9 Q74.9 125.5 72.2 125.5 M16.2 161.5 Q14.8 161.3 13.1 163.4 Q12.9 164.5 14.2 165.9 Q11.7 167.1 11.4 166.4 M34.7 47.2 Q33.9 45.4 36.1 44.4 Q35.4 45.2 36.2 42.3 M32.0 106.3 Q33.9 109.6 33.1 110.3 Q30.3 109.9 31.6 112.6 Q31.4 113.3 34.7 114.2 M121.8 113.5 Q121.9 112.8 118.2 111.9 Q118.7 110.1 115.4 111.4 Q112.4 112.1 113.1 115.3 M-3.3 55.3 Q-3.1 58.4 -4.0 58.3 Q-6.8 56.7 -7.8 55.7 Q-10.8 54.1 -10.4 53.5 M89.4 164.8 Q90.1 166.2 90.6 167.1 Q87.9 168.6 88.7 171.6 M96.9 171.4 Q99.9 172.3 101.2 171.7 Q102.6 169.0 101.9 168.7 M68.9 79.6 Q70.3 78.3 72.2 76.7 Q75.4 73.2 75.0 73.4 Q77.5 74.6 78.6 72.7 M148.1 54.4 Q145.7 52.9 146.3 51.5 Q144.7 49.1 143.2 48.8 M76.9 198.5 Q76.3 198.5 75.2 197.0 Q72.6 198.7 70.3 196.4 Q69.3 195.0 69.2 192.3 M-7.5 160.4 Q-4.1 160.0 -2.7 160.1 Q-2.4 159.0 -0.5 159.8 M71.4 11.7 Q74.2 9.9 73.5 10.4 Q77.0 10.4 78.3 10.7 Q78.5 11.4 81.4 9.9 M156.4 125.3 Q153.4 126.1 153.5 128.6 Q153.3 127.7 151.6 127.5 Q151.0 127.7 147.5 130.2 M129.8 33.9 Q129.0 30.2 130.6 29.5 Q132.2 28.3 134.1 29.6 M108.5 153.8 Q108.1 156.7 108.3 156.4 Q108.9 155.1 111.5 156.1 M51.9 97.5 Q49.7 98.4 50.2 102.0 Q46.4 104.0 46.5 102.3 M164.3 69.5 Q166.4 70.1 165.5 71.8 Q165.9 72.4 167.9 70.2 M81.6 105.4 Q82.1 108.1 80.5 110.2 Q78.8 110.4 77.9 111.7 Q74.5 113.0 73.8 114.4 M84.5 106.9 Q83.6 106.5 85.1 109.2 Q81.8 110.0 81.4 110.7 M113.8 16.0 Q113.6 14.1 115.9 14.0 Q116.8 12.3 119.5 11.3 M19.1 82.1 Q19.1 82.6 16.6 81.0 Q17.7 80.1 16.4 76.9 M46.1 0.4 Q45.7 -1.4 49.1 -2.4 Q49.7 -3.7 50.3 -4.5 M59.9 93.6 Q56.8 89.9 56.9 90.0 Q57.0 88.4 56.6 87.2 Q59.0 87.8 61.1 86.7 M80.1 64.5 Q81.5 64.6 82.5 62.8 Q80.2 59.7 81.9 60.6 Q79.2 59.4 77.1 60.0 M151.9 82.3 Q153.4 82.6 153.0 86.8 Q153.8 89.8 154.5 91.5 M-32.0 91.8 Q-30.6 91.9 -29.9 91.2 Q-27.0 89.1 -26.8 89.1 Q-27.7 87.9 -25.1 85.2" stroke="#b9e8e4" stroke-width="0.9"/><path d="M93.4 17.0 Q94.9 16.0 95.9 13.1 Q96.3 11.9 96.4 10.9 M134.2 56.6 Q136.4 55.2 135.5 53.8 Q134.1 53.7 131.5 52.1 Q128.1 53.9 128.8 56.2 M151.4 135.2 Q152.5 136.9 150.0 137.3 Q149.0 135.8 145.9 137.0 M-10.4 58.6 Q-11.4 56.8 -10.6 53.7 Q-10.5 51.8 -7.4 51.8 M102.8 179.2 Q104.3 179.0 103.3 174.9 Q101.0 174.5 100.3 174.9 M147.6 75.8 Q148.1 72.4 149.6 72.3 Q150.9 68.3 150.9 68.0 M16.6 60.6 Q15.4 61.3 15.5 58.2 Q14.0 56.7 12.3 58.9 M-30.6 122.5 Q-32.0 119.4 -33.3 120.0 Q-33.1 116.4 -33.0 115.5 M94.8 117.7 Q93.0 118.4 92.9 119.9 Q93.0 120.3 92.7 122.3 M41.2 99.9 Q39.5 99.7 37.6 102.5 Q39.8 103.0 38.9 106.7 Q39.0 107.1 41.7 105.6 M95.8 86.1 Q96.3 85.7 99.6 83.7 Q100.6 82.8 101.8 84.0 Q102.8 81.7 102.5 79.7 M158.9 64.2 Q160.7 60.7 159.2 60.6 Q162.5 61.3 162.7 58.3 Q164.4 58.0 166.4 58.2 M46.2 115.5 Q45.9 113.0 44.9 113.5 Q44.5 116.1 42.3 114.7 Q44.2 116.4 42.3 117.5 M15.7 35.8 Q17.8 36.2 18.1 33.5 Q18.9 31.6 22.0 32.0 M58.7 76.1 Q59.2 73.7 58.1 73.0 Q61.5 74.1 61.5 73.0 M72.4 165.6 Q70.9 162.3 71.8 161.8 Q70.9 159.9 70.3 158.1 M19.5 31.7 Q21.8 31.0 23.0 29.9 Q24.6 27.7 25.2 28.8 M3.4 98.6 Q0.3 98.8 0.4 97.7 Q-1.7 95.4 -0.2 93.8 M53.0 91.8 Q54.4 91.9 52.6 89.7 Q52.5 87.8 54.1 88.3 Q54.7 88.1 56.1 90.2 M14.8 125.4 Q12.8 124.7 13.3 123.8 Q10.2 123.3 9.4 121.6 M171.6 100.5 Q171.1 97.5 174.1 97.5 Q173.8 97.2 176.8 97.5 Q177.5 99.7 179.7 98.3 M34.8 25.4 Q33.1 25.3 34.3 23.2 Q31.7 22.5 31.7 20.2 M70.1 126.9 Q68.3 125.9 69.0 124.6 Q68.0 124.3 67.0 124.6 M24.2 8.0 Q22.7 9.9 23.0 11.3 Q23.6 13.8 23.8 13.2 M80.1 32.1 Q82.1 32.6 82.5 35.3 Q80.4 34.9 79.5 37.6 Q78.9 37.2 80.0 39.7 M97.3 72.4 Q99.5 74.1 98.5 76.3 Q102.1 75.7 101.6 78.5 Q102.3 79.2 102.6 82.9 M125.9 108.5 Q126.7 108.5 128.8 104.6 Q128.9 104.2 125.9 103.7 Q125.3 100.6 128.0 99.8 M93.0 142.9 Q90.7 142.7 90.7 145.4 Q91.6 143.4 89.1 143.8 M3.0 145.0 Q2.4 143.0 5.2 143.9 Q2.9 141.5 2.4 140.6 M121.3 17.4 Q119.9 19.0 116.8 18.6 Q115.4 15.7 117.1 15.7 Q117.3 14.1 120.2 15.4 M60.7 50.5 Q59.0 48.0 60.9 48.3 Q61.2 48.2 63.5 49.2 M20.9 62.1 Q18.7 62.1 19.4 59.1 Q16.5 58.2 15.8 60.3 Q17.1 61.2 16.0 62.6 M141.1 52.1 Q143.4 51.3 143.8 48.9 Q147.8 50.4 148.0 50.0 Q149.2 49.9 150.3 48.7 M48.9 117.4 Q49.3 117.1 49.0 115.1 Q51.6 112.9 51.2 113.5 Q51.6 112.5 54.2 112.5" stroke="#dff7f4" stroke-width="0.9"/><path d="M22.3 73.2 Q20.0 73.1 17.7 72.6 Q18.6 74.0 15.6 75.1 M44.1 174.0 Q41.8 175.9 41.7 175.2 Q40.9 174.9 37.4 174.8 M44.2 130.0 Q46.7 128.2 46.2 129.9 Q48.9 127.8 48.1 128.5 Q48.0 129.3 46.8 126.5 M99.0 56.1 Q98.8 56.5 96.3 55.8 Q97.4 56.1 95.5 59.9 Q98.9 59.8 99.2 59.3 M149.1 125.9 Q145.9 125.2 146.6 127.5 Q146.5 126.3 142.5 127.0 M130.5 161.5 Q133.1 159.7 133.5 158.2 Q136.0 159.0 135.1 156.9 M98.8 195.7 Q101.5 196.1 102.7 192.7 Q100.9 189.9 102.7 190.0 M29.3 98.1 Q26.0 96.8 25.2 96.1 Q26.1 93.1 26.1 92.2 Q26.9 92.3 29.5 92.3 M83.5 61.4 Q84.4 64.1 85.0 65.7 Q85.6 68.3 87.4 69.1 M37.8 161.8 Q39.0 163.4 40.4 164.9 Q41.4 164.2 38.5 167.0 M159.5 59.5 Q159.8 56.5 161.1 57.3 Q164.5 57.4 164.4 57.2 Q166.4 56.8 168.4 57.8 M107.0 186.4 Q104.6 186.8 105.1 188.3 Q105.1 190.6 102.1 189.0 M87.0 182.3 Q85.6 181.2 83.4 181.1 Q82.7 179.3 82.2 176.3 Q83.7 173.2 81.9 173.6 M136.7 129.1 Q139.0 126.8 139.2 128.0 Q139.6 123.7 138.6 123.1 Q140.5 121.7 141.8 122.4 M44.4 87.8 Q45.2 89.4 42.8 90.2 Q40.0 93.3 39.4 93.1 M-17.7 145.3 Q-18.6 141.9 -21.2 142.1 Q-21.9 142.2 -22.2 144.0 M111.4 30.1 Q112.5 29.7 116.0 30.6 Q116.2 32.2 118.0 30.8 M92.0 39.8 Q92.7 43.5 94.1 43.7 Q93.0 45.9 94.2 46.5 Q91.3 45.6 90.2 45.1 M144.7 87.6 Q147.8 88.2 147.5 89.8 Q147.0 88.8 150.2 87.9 M56.9 94.3 Q54.6 97.1 53.5 96.8 Q53.3 98.3 55.9 98.4 M71.3 82.3 Q69.5 83.4 67.9 83.4 Q66.6 82.5 66.5 81.5 Q66.0 83.9 64.4 82.4 M124.3 131.4 Q123.3 133.0 121.5 134.5 Q121.9 135.4 119.3 136.5 M72.3 103.7 Q72.1 105.3 73.4 107.2 Q71.4 106.8 69.4 109.1 Q67.6 108.5 66.9 110.1 M-21.8 133.1 Q-20.7 136.0 -21.0 136.7 Q-18.2 138.3 -18.4 139.8 M98.8 29.8 Q98.2 29.0 98.4 31.9 Q95.8 31.9 94.7 30.0 Q96.3 33.2 94.3 33.4 M111.9 46.2 Q110.7 46.7 109.6 50.6 Q106.5 51.2 105.0 48.8 M52.1 106.4 Q53.0 105.7 54.0 104.5 Q54.6 102.9 56.9 103.0 M-28.4 86.3 Q-27.8 86.7 -26.4 89.1 Q-26.8 90.3 -24.2 88.0 M47.8 160.0 Q45.5 161.1 45.4 162.0 Q44.2 162.6 43.9 165.9 M106.3 132.7 Q103.8 134.0 105.1 136.6 Q105.4 136.1 108.3 137.6 Q108.5 138.7 106.7 140.6" stroke="#9ad8d2" stroke-width="0.9"/><path d="M-6.6 78.1 Q-7.4 77.6 -9.9 75.3 Q-8.6 72.2 -8.5 72.3 M42.3 36.2 Q42.0 37.5 41.8 41.2 Q43.1 41.7 43.9 45.0 Q45.9 45.9 46.5 48.7 M-3.5 118.6 Q-1.2 120.2 -0.4 119.1 Q2.9 119.1 4.1 119.8 Q3.6 122.8 6.1 122.7 M62.6 200.6 Q60.8 199.7 59.2 199.1 Q57.0 200.0 57.5 202.1 M101.5 160.2 Q99.2 158.2 99.2 158.1 Q95.2 157.6 94.6 159.9 M46.9 128.9 Q48.8 128.9 47.8 126.5 Q48.0 128.0 44.1 126.3 M51.2 144.6 Q51.0 148.2 50.8 149.5 Q47.4 151.1 47.9 149.7 Q48.7 146.1 48.2 146.5 M-19.0 68.5 Q-17.5 68.2 -17.5 70.2 Q-16.8 70.5 -16.5 72.1 Q-18.5 74.1 -18.9 73.2 M109.4 188.6 Q108.7 190.3 106.9 190.5 Q105.9 189.1 105.0 188.0 Q108.4 189.4 108.5 187.1 M62.1 100.4 Q61.9 100.5 64.3 96.7 Q63.5 98.4 66.7 97.5 Q66.9 95.1 67.0 93.5 M31.8 2.7 Q35.7 2.7 36.1 1.2 Q37.6 3.3 36.4 5.4 Q38.5 7.0 37.4 8.2 M14.2 180.2 Q14.7 180.6 17.2 179.8 Q17.2 180.8 20.3 181.0 Q21.5 180.9 23.2 180.5 M27.0 21.3 Q26.3 24.8 24.2 24.4 Q24.8 23.2 22.1 21.2 Q19.5 23.1 18.7 21.8 M151.5 77.9 Q152.0 78.0 149.7 76.0 Q151.5 72.7 152.1 73.2 Q150.2 72.1 151.7 70.9 M57.8 60.2 Q59.1 59.9 59.4 58.8 Q58.5 59.0 57.0 56.8 Q56.9 54.5 54.0 55.4 M0.0 173.9 Q1.7 172.8 4.5 173.0 Q6.3 174.4 6.5 177.1 M151.0 55.5 Q152.5 54.3 155.7 56.4 Q157.3 57.3 159.9 55.8 Q161.4 58.1 159.8 59.8 M71.4 124.5 Q69.1 127.3 68.4 128.1 Q64.9 128.7 64.3 126.8 M55.0 76.2 Q52.9 74.9 52.6 77.3 Q51.0 80.9 49.8 80.6 M71.9 100.1 Q73.0 100.9 76.4 98.8 Q75.8 97.2 76.6 96.1 Q76.7 94.6 79.0 94.9 M-16.4 41.5 Q-14.6 41.3 -11.6 42.7 Q-8.2 43.9 -7.8 43.5 M36.5 111.9 Q39.6 114.2 39.6 115.8 Q38.0 116.0 37.5 116.4 Q38.9 118.2 37.8 120.5 M104.3 53.5 Q106.5 50.6 105.0 50.2 Q106.7 47.7 106.4 47.9 Q107.1 51.3 110.1 50.9 M45.7 152.7 Q43.8 153.5 44.2 156.1 Q44.8 156.0 47.1 158.7 Q48.4 159.1 46.0 160.9 M127.6 156.7 Q126.7 158.5 124.8 158.1 Q126.1 160.1 124.8 160.1 Q124.0 160.4 123.8 161.9 M173.9 80.1 Q172.8 78.8 173.1 78.2 Q173.3 74.3 173.1 73.7 Q175.6 72.4 175.6 74.3 M158.8 81.2 Q156.2 78.9 154.3 79.0 Q150.3 77.4 150.2 79.2 M101.2 110.2 Q99.7 108.2 99.1 108.5 Q98.1 109.7 96.8 106.9 M170.3 83.8 Q169.7 79.9 172.2 79.3 Q169.7 78.5 170.3 78.3 Q167.5 75.5 168.2 75.7 M-5.1 106.8 Q-2.4 109.3 -3.2 109.6 Q-0.7 106.9 -0.9 106.6 Q-2.0 105.0 -1.8 104.0 M16.6 144.6 Q18.8 143.1 18.3 142.0 Q19.2 138.8 18.0 139.3 Q19.1 139.7 20.3 137.5 M3.1 76.9 Q1.4 77.8 1.1 74.8 Q-3.1 73.7 -3.9 74.4 Q-7.7 71.8 -7.7 71.7" stroke="#dff7f4" stroke-width="0.7"/><path d="M102.4 35.7 Q103.1 38.2 103.3 40.4 Q103.6 41.4 105.6 42.9 Q106.2 40.9 107.9 42.6 M98.4 2.2 Q97.6 5.8 97.3 6.3 Q98.4 7.6 100.8 9.1 M45.9 166.0 Q47.3 163.7 49.3 163.2 Q50.2 165.9 51.8 166.1 Q51.4 167.7 49.8 166.8 M145.6 162.9 Q148.1 160.5 147.8 161.9 Q151.0 161.9 150.9 160.9 Q150.9 160.1 151.2 158.8 M63.3 152.0 Q62.9 150.3 65.7 152.4 Q65.1 151.2 65.9 150.3 M19.7 98.7 Q18.9 100.1 16.6 101.1 Q16.1 100.6 17.7 103.0 Q19.2 102.6 20.6 99.3 M19.8 47.3 Q20.6 46.1 24.5 48.5 Q27.1 49.1 25.9 46.6 Q29.1 45.1 30.2 46.5 M123.5 118.7 Q123.3 116.9 119.5 116.8 Q118.1 119.9 117.4 120.6 M94.5 57.4 Q94.5 57.6 91.6 60.8 Q88.9 59.7 88.3 61.9 Q86.3 63.7 86.5 63.3 M157.4 85.9 Q160.5 87.4 159.8 87.7 Q161.3 86.5 161.7 89.0 M38.8 141.8 Q40.3 142.9 41.5 143.2 Q43.3 141.4 45.6 142.4 M66.4 58.1 Q66.1 58.1 68.6 55.2 Q69.4 56.9 71.7 55.4 M132.1 134.9 Q131.8 136.0 130.6 136.2 Q129.2 133.8 129.4 134.5 M153.5 115.2 Q153.4 112.3 152.3 112.5 Q154.4 109.8 154.6 110.3 M81.5 142.4 Q78.6 145.4 78.7 145.7 Q78.7 147.5 81.2 147.2 M94.6 15.5 Q95.9 17.2 93.7 17.9 Q93.8 21.4 92.2 22.6 M57.9 105.8 Q59.9 104.5 62.2 105.6 Q62.0 104.4 64.4 104.8 M106.9 130.7 Q106.1 128.0 106.5 126.5 Q108.8 125.3 110.3 123.9 Q107.3 121.2 107.2 120.9 M153.4 41.5 Q153.6 42.4 150.4 44.8 Q149.6 45.8 146.2 46.0 M97.2 157.1 Q95.9 156.2 93.5 157.9 Q93.1 155.0 90.2 154.8 Q90.8 152.9 94.4 152.6 M75.3 78.8 Q75.2 77.2 74.7 76.0 Q75.5 75.8 73.1 72.0 M36.8 28.7 Q37.2 28.1 40.8 29.7 Q43.3 31.5 42.6 30.5 M116.1 42.2 Q115.0 43.3 116.2 45.3 Q117.4 47.4 116.6 50.3 Q118.8 53.4 120.0 52.7 M70.3 61.3 Q71.2 65.1 72.1 65.5 Q75.5 65.7 75.0 63.1 Q75.1 63.6 76.8 62.1 M120.1 71.7 Q121.6 75.5 121.9 76.4 Q122.1 77.1 124.2 75.5 Q124.5 72.9 121.7 71.4" stroke="#9ad8d2" stroke-width="0.7"/></g><path d="M0 150 Q12 146 22 158 Q30 168 50 166 Q70 150 82 166 Q100 172 112 150 L125 140 L125 203 L0 203z" fill="#2a2222" opacity="0.9"/><path d="M0 188 Q60 212 125 196" fill="none" stroke="#8a8a8a" stroke-width="4"/><path d="M60 0 Q90 8 130 2 L60 0z" fill="#2a2727"/><polygon points="173.0,21.0 169.2,23.3 171.6,27.1 167.2,27.5 167.7,31.9 163.6,30.5 162.1,34.6 159.0,31.5 155.9,34.6 154.4,30.5 150.3,31.9 150.8,27.5 146.4,27.1 148.8,23.3 145.0,21.0 148.8,18.7 146.4,14.9 150.8,14.5 150.3,10.1 154.4,11.5 155.9,7.4 159.0,10.5 162.1,7.4 163.6,11.5 167.7,10.1 167.2,14.5 171.6,14.9 169.2,18.7" fill="#e8303a"/><circle cx="159" cy="21" r="8" fill="#d42632" stroke="#ffb0b0" stroke-width="0.8"/><path d="M128 90 Q142 84 158 90 Q170 94 171 108 L170 130 L166 150 L166 203 L128 203 L126 150 L121 130 L120 108 Q121 94 128 90z" fill="#36a084"/><path d="M136 92 L140 150 M152 92 L150 150" stroke="#2c8a70" stroke-width="1" fill="none"/><path d="M124 110 Q121 130 130 146 Q136 154 142 156" stroke="#c48c6c" stroke-width="4" fill="none" stroke-linecap="round"/><path d="M168 110 Q170 130 160 146 Q154 154 148 156" stroke="#c48c6c" stroke-width="4" fill="none" stroke-linecap="round"/><path d="M120 96 Q118 106 121 114 L128 114 L128 92z M170 96 Q172 106 169 114 L162 114 L162 92z" fill="#36a084"/><path d="M140 156 Q132 176 128 186 M150 156 Q158 172 160 182" stroke="#b8b8b8" stroke-width="1" fill="none"/><ellipse cx="142" cy="85" rx="7" ry="5" fill="#c79374"/><ellipse cx="142" cy="74" rx="13" ry="12" fill="#a9bccb"/><ellipse cx="139" cy="70" rx="8" ry="6" fill="#cad8e2"/><text x="9" y="33" font-family="Liberation Serif" font-size="26" fill="#fff" stroke="#fff" stroke-width="0.3" textLength="105" lengthAdjust="spacingAndGlyphs">MICRO</text><text x="9" y="59" font-family="Liberation Serif" font-size="26" fill="#fff" stroke="#fff" stroke-width="0.3" textLength="138" lengthAdjust="spacingAndGlyphs">BIOLOGY</text><path d="M0 67 H112 L109 74 L113 82 H0z" fill="#b07b3e"/><text x="8" y="78.5" font-family="Liberation Mono" font-size="8" fill="#2a1a10" textLength="100" lengthAdjust="spacingAndGlyphs">THE HUMAN EXPERIENCE</text><g font-family="Liberation Sans" fill="#fff"><text x="4" y="174" font-size="7" transform="rotate(20 4 174)" textLength="27" lengthAdjust="spacingAndGlyphs">JOHN W.</text><text x="3" y="184" font-size="10" transform="rotate(18 3 184)" textLength="34" lengthAdjust="spacingAndGlyphs">FOSTER</text><text x="43" y="186" font-size="7" textLength="31" lengthAdjust="spacingAndGlyphs">ZARRINTAJ</text><text x="40" y="197" font-size="9.5" textLength="37" lengthAdjust="spacingAndGlyphs">·ALIABADI</text><text x="82" y="184" font-size="7" transform="rotate(-10 82 184)" textLength="27" lengthAdjust="spacingAndGlyphs">JOAN L.</text><text x="79" y="194" font-size="9.5" transform="rotate(-22 79 194)" textLength="52" lengthAdjust="spacingAndGlyphs">·SLONCZEWSKI</text></g></svg>
</div><div class="t" style="left:33px;top:289px;font-family:'Liberation Serif';font-weight:bold;font-size:52px;color:#3b808b;text-shadow:2px 3px 3px rgba(0,0,0,0.3);transform-origin:0 0;transform:scaleX(1.02)">Chapter</div><div class="t" style="left:240px;top:280px;font-family:'Liberation Serif';font-weight:bold;font-size:62.7px;color:#3b808b;text-shadow:2px 3px 3px rgba(0,0,0,0.3);transform-origin:0 0;transform:scaleX(0.934)">13</div><div class="t" style="left:33px;top:357.5px;font-family:'Liberation Serif';font-weight:normal;font-size:26px;color:#3b7f89;-webkit-text-stroke:0.5px #3b7f89;transform-origin:0 0;transform:scaleX(1.075)">Sterilization, Disinfection, and</div><div class="t" style="left:33px;top:388.5px;font-family:'Liberation Serif';font-weight:normal;font-size:26px;color:#3b7f89;-webkit-text-stroke:0.5px #3b7f89;transform-origin:0 0;transform:scaleX(1.075)">Antibiotic Therapy</div></div></div><div class="a" style="left:32px;top:159px;width:246px;height:186px;border:3px solid #e0714f;box-shadow:inset 0 0 0 1px #fff"></div><!-- slide numbers -->
<div class="t" style="left:20px;top:160px;font-size:13px;color:#c8472a">1</div>
<div class="t" style="left:19px;top:359px;font-size:14px;color:#444">2</div>
<div class="t" style="left:19px;top:559px;font-size:14px;color:#444">3</div>
<!-- thumb 2 -->
<div class="a" style="left:34px;top:361px;width:242px;height:182px;border:1px solid #c6c6c6;background:#fff"></div>
<div class="a" style="left:35px;top:362px;width:240px;height:26px;background:#3d8a91"></div>
<div class="t" style="left:38px;top:371px;font-family:'Liberation Serif';font-weight:bold;font-size:9.8px;color:#fff">Sterilization, Disinfection, and Antibiotic Therapy</div>
<div class="t" style="left:44px;top:389px;font-family:'Liberation Serif';font-weight:bold;font-size:12.2px;color:#111;text-decoration:underline">Chapter Objectives</div>
<div style="position:absolute;left:44px;top:406px;width:232px;font-family:'Liberation Serif';font-size:10.2px;line-height:10.7px;color:#1a1a1a;-webkit-text-stroke:0.35px #111">
<div style="position:relative;padding-left:12px;white-space:nowrap"><span style="position:absolute;left:1px;color:#888">•</span>Compare agents of disinfection and antimicrobial<br>agents used to treat infections in terms of their<br>modes of action, microbial spectrum, and clinical<br>use.</div>
<div style="position:relative;padding-left:12px;white-space:nowrap"><span style="position:absolute;left:1px;color:#888">•</span>Discuss how a given antibiotic is deemed clinically<br>effective.</div>
<div style="position:relative;padding-left:12px;white-space:nowrap"><span style="position:absolute;left:1px;color:#888">•</span>Describe the roles of empirical therapy, targeted<br>drug therapy, and synergism in treating infections.</div>
<div style="position:relative;padding-left:12px;white-space:nowrap"><span style="position:absolute;left:1px;color:#888">•</span>Explain how selective toxicity and the mechanisms<br>of antibiotic resistance influence the development<br>of new antibiotics.</div>
</div>
<div class="a" style="left:36px;top:534px;width:238px;height:7px;background:#3d8a91"></div>
<div class="a" style="left:42px;top:537px;width:50px;height:1px;background:#b9d4d6"></div>
<!-- thumb 3 -->
<div class="a" style="left:34px;top:562px;width:242px;height:150px;border:1px solid #c6c6c6;background:#fff"></div>
<div class="a" style="left:35px;top:563px;width:240px;height:25px;background:#3d8a91"></div>
<div class="t" style="left:40px;top:571px;font-family:'Liberation Serif';font-weight:bold;font-size:9.8px;color:#fff">A Needless Death - 1</div>
<div class="t" style="left:42px;top:592px;font-family:'Liberation Serif';font-weight:bold;font-size:10.7px;color:#111;text-decoration:underline">Scenario</div>
<div style="position:absolute;left:42px;top:603px;width:160px;font-family:'Liberation Serif';font-size:9.9px;line-height:10.35px;color:#1a1a1a;white-space:nowrap;-webkit-text-stroke:0.35px #111">Bill, a nurse practitioner, was<br>part of a hospital team caring for<br>9-year-old Jill, a girl seriously<br>ill from a methicillin-resistant<br><i>Staphylococcus aureus</i> (MRSA)<br>infection. On this particular day,<br>Bill was changing the girl's<br>bandages and suddenly<br>remembered he needed to ask<br>Brenda, the nurse covering the</div>
<svg style="left:196px;top:600px" width="58" height="106" viewBox="0 0 58 106">
<defs><linearGradient id="gl" x1="0" y1="0" x2="1" y2="0.3"><stop offset="0" stop-color="#a29a91"/><stop offset="0.45" stop-color="#d3ccc4"/><stop offset="1" stop-color="#b9b1a8"/></linearGradient>
<linearGradient id="cf" x1="0" y1="0" x2="1" y2="1"><stop offset="0" stop-color="#cfcfcf"/><stop offset="0.5" stop-color="#f4f4f4"/><stop offset="1" stop-color="#e2e2e2"/></linearGradient></defs>
<path d="M2 4 L48 3 L55 36 L14 44 Z" fill="url(#cf)"/>
<path d="M8 8 Q20 22 24 40" stroke="#c4c4c4" stroke-width="2" fill="none"/>
<circle cx="43" cy="12" r="2" fill="#8a8a8a"/><circle cx="46" cy="29" r="2" fill="#8a8a8a"/>
<path d="M14 44 L52 38 Q57 56 54 70 Q50 84 42 94 Q34 105 24 104 Q12 102 7 94 Q3 86 9 76 Q15 62 14 44z" fill="url(#gl)"/>
<path d="M10 78 Q22 72 32 80 M14 90 Q26 86 34 94" stroke="#e6e1db" stroke-width="2.5" fill="none"/>
<path d="M20 58 Q30 66 44 60" stroke="#8f877e" stroke-width="1.5" fill="none" opacity="0.6"/>
</svg>
<!-- thumbs scrollbar -->
<div class="a" style="left:295px;top:145px;width:15px;height:559px;background:#ececec"></div>
<div class="a" style="left:295px;top:145px;width:15px;height:15px;background:#fff;border:1px solid #ababab"></div>
<div class="dd" style="left:299px;top:150px;border-top:none;border-bottom:4px solid #606060;border-left-width:4px;border-right-width:4px"></div>
<div class="a" style="left:295px;top:159px;width:15px;height:18px;background:#fff;border:1px solid #ababab"></div>
<div class="a" style="left:295px;top:689px;width:15px;height:15px;background:#fff;border:1px solid #ababab"></div>
<div class="dd" style="left:299px;top:694px;border-top:4px solid #606060;border-left-width:4px;border-right-width:4px"></div>
<!-- right scrollbar -->
<div class="a" style="left:1350px;top:145px;width:15px;height:457px;background:#ececec"></div>
<div class="a" style="left:1350px;top:145px;width:15px;height:15px;background:#fff;border:1px solid #ababab"></div>
<div class="dd" style="left:1354px;top:150px;border-top:none;border-bottom:4px solid #606060;border-left-width:4px;border-right-width:4px"></div>
<div class="a" style="left:1350px;top:164px;width:15px;height:17px;background:#fff;border:1px solid #ababab"></div>
<div class="a" style="left:1350px;top:587px;width:15px;height:15px;background:#fff;border:1px solid #ababab"></div>
<div class="dd" style="left:1354px;top:592px;border-top:4px solid #606060;border-left-width:4px;border-right-width:4px"></div>
<svg style="left:1353px;top:607px" width="9" height="9" viewBox="0 0 9 9"><path d="M0 4.5L4.5 0 9 4.5zM0 9L4.5 4.5 9 9z" fill="#606060"/></svg>
<svg style="left:1353px;top:624px" width="9" height="9" viewBox="0 0 9 9"><path d="M0 0L4.5 4.5 9 0zM0 4.5L4.5 9 9 4.5z" fill="#606060"/></svg>
<!-- notes -->
<div class="t" style="left:327px;top:667px;font-size:15px;color:#555;transform-origin:0 0;transform:scaleX(0.97)">Click to add notes</div>
<!-- status bar -->
<div class="a" style="left:0;top:706px;width:1366px;height:22px;background:#d24726"></div>
<div class="t" style="left:9px;top:711px;font-size:12px;color:#fff;transform-origin:0 0;transform:scaleX(0.9)">SLIDE 1 OF 116</div>
<svg style="left:103px;top:709px" width="15" height="14" viewBox="0 0 15 14"><path d="M.5 1.5h5l2 1.5 2-1.5h3v11h-3l-2 1-2-1h-5z" fill="none" stroke="#fff" stroke-width="1"/><path d="M7.5 3v10" stroke="#fff"/><path d="M9 10l5-6" stroke="#fff" stroke-width="1.5"/></svg>
<svg style="left:848px;top:710px" width="11" height="13" viewBox="0 0 11 13"><path d="M5.5 0L2 3h7zM0 5.5h11M0 8.5h11M0 11.5h11" fill="#fff" stroke="#fff" stroke-width="1"/></svg>
<div class="t" style="left:864px;top:711px;font-size:12px;color:#fff;transform-origin:0 0;transform:scaleX(0.85)">NOTES</div>
<svg style="left:920px;top:710px" width="13" height="13" viewBox="0 0 13 13"><path d="M0 0h13v9H6l-3 3V9H0z" fill="#fff"/></svg>
<div class="t" style="left:936px;top:711px;font-size:12px;color:#fff;transform-origin:0 0;transform:scaleX(0.9)">COMMENTS</div>
<div class="a" style="left:1017px;top:706px;width:37px;height:22px;background:#b53a1d"></div>
<svg style="left:1029px;top:710px" width="15" height="13" viewBox="0 0 15 13"><rect x=".5" y=".5" width="14" height="12" fill="none" stroke="#fff"/><rect x="1" y="1" width="4" height="11" fill="#fff"/><path d="M7 3h5v4H7z" fill="none" stroke="#fff" stroke-width="1.4"/></svg>
<svg style="left:1066px;top:710px" width="15" height="13" viewBox="0 0 15 13"><g fill="#fff"><rect x="0" y="0" width="6.5" height="5.5"/><rect x="8.5" y="0" width="6.5" height="5.5"/><rect x="0" y="7.5" width="6.5" height="5.5"/><rect x="8.5" y="7.5" width="6.5" height="5.5"/></g></svg>
<svg style="left:1104px;top:710px" width="14" height="13" viewBox="0 0 14 13"><path d="M.5 .5h6l.5 1 .5-1h6v11h-6l-.5 1-.5-1h-6zM7 1.5v10M2 3.5h3M2 5.5h3M2 7.5h3M9 3.5h3M9 5.5h3M9 7.5h3" fill="none" stroke="#fff"/></svg>
<svg style="left:1143px;top:710px" width="15" height="13" viewBox="0 0 15 13"><path d="M0 .5h15M1.5 .5v6h12v-6M7.5 6.5v4M4 12.5l3.5-2 3.5 2" fill="none" stroke="#fff" stroke-width="1.2"/><rect x="4" y="2" width="7" height="3" fill="#fff"/></svg>
<div class="a" style="left:1175px;top:716px;width:6px;height:2px;background:#fff"></div>
<div class="a" style="left:1184px;top:716px;width:101px;height:1px;background:#f6d0c4"></div>
<div class="a" style="left:1215px;top:710px;width:4px;height:13px;background:#fff"></div>
<div class="a" style="left:1235px;top:713px;width:1px;height:7px;background:#f6d0c4"></div>
<div class="a" style="left:1288px;top:716px;width:9px;height:2px;background:#fff"></div>
<div class="a" style="left:1291.5px;top:712.5px;width:2px;height:9px;background:#fff"></div>
<div class="t" style="left:1311px;top:711px;font-size:12px;color:#fff;transform-origin:0 0;transform:scaleX(0.9)">68%</div>
<svg style="left:1345px;top:710px" width="14" height="14" viewBox="0 0 14 14"><rect x=".5" y=".5" width="13" height="13" fill="none" stroke="#fff"/><path d="M3 3l3 3M11 3l-3 3M3 11l3-3M11 11l-3-3M3 3h2M3 3v2M11 3h-2M11 3v2M3 11h2M3 11v-2M11 11h-2M11 11v-2" stroke="#fff" fill="none"/></svg>
<!-- taskbar -->
<div class="a" style="left:0;top:728px;width:48px;height:40px;background:#3b2d27"></div>
<svg style="left:16px;top:740px" width="16" height="16" viewBox="0 0 16 16"><g fill="#fff"><rect x="0" y="0" width="7.4" height="7.4"/><rect x="8.6" y="0" width="7.4" height="7.4"/><rect x="0" y="8.6" width="7.4" height="7.4"/><rect x="8.6" y="8.6" width="7.4" height="7.4"/></g></svg>
<div class="a" style="left:48px;top:729px;width:343px;height:39px;background:#f0f0f0;border-left:1px solid #ccc"></div>
<svg style="left:59px;top:739px" width="19" height="19" viewBox="0 0 19 19"><circle cx="11.5" cy="7.5" r="6" fill="none" stroke="#222" stroke-width="1.5"/><path d="M7 12L1 18" stroke="#222" stroke-width="1.6"/></svg>
<div class="t" style="left:88px;top:740px;font-size:16px;color:#333;transform-origin:0 0;transform:scaleX(0.93)">Type here to search</div>
<svg style="left:407px;top:739px" width="18" height="18" viewBox="0 0 18 18"><circle cx="9" cy="9" r="7" fill="none" stroke="#fff" stroke-width="2"/></svg>
<svg style="left:455px;top:739px" width="17" height="17" viewBox="0 0 17 17"><rect x="3.5" y="3.5" width="8" height="10" fill="none" stroke="#fff" stroke-width="1.2"/><path d="M0 1h3M0 16h3M14 1h3M14 16h3M15 5v2M15 9v2" stroke="#fff" stroke-width="1.4"/></svg>
<svg style="left:502px;top:736px" width="25" height="25" viewBox="0 0 25 25"><defs><linearGradient id="eg" x1="0" y1="1" x2="1" y2="0"><stop offset="0" stop-color="#0b5cb5"/><stop offset="0.55" stop-color="#1f9be0"/><stop offset="1" stop-color="#5fd86a"/></linearGradient></defs><circle cx="12.5" cy="12.5" r="12" fill="url(#eg)"/><path d="M7 14c0-4 3-6 6-6 3 0 5 2 5 4.5 0 1.5-1 2.5-3 2.5H9.5c.5 3 3 5 6 5" fill="none" stroke="#123a6a" stroke-width="3" opacity="0.9"/></svg>
<svg style="left:552px;top:737px" width="23" height="23" viewBox="0 0 23 23"><circle cx="11.5" cy="11.5" r="11" fill="#dd4b39"/><path d="M11.5 11.5L1.8 6.5A11 11 0 0 1 21.2 6.5z" fill="#dd4b39"/><path d="M11.5 11.5L21.2 6.5A11 11 0 0 1 11.5 22.5z" fill="#f4c20d"/><path d="M11.5 11.5L11.5 22.5A11 11 0 0 1 1.8 6.5z" fill="#1da462"/><circle cx="11.5" cy="11.5" r="5.2" fill="#fff"/><circle cx="11.5" cy="11.5" r="4" fill="#4c8bf5"/></svg>
<svg style="left:601px;top:739px" width="23" height="19" viewBox="0 0 23 19"><path d="M0 2h9l2 2h12v15H0z" fill="#f3c44e"/><rect x="0" y="6" width="23" height="13" fill="#ffd866"/><rect x="6" y="10" width="11" height="5" fill="#2f7fd0"/></svg>
<svg style="left:650px;top:737px" width="23" height="22" viewBox="0 0 23 22"><rect x="9" y="2" width="14" height="18" fill="#fff"/><path d="M11 5h10M11 8h10M11 11h10M11 14h10M11 17h10" stroke="#2b5797" stroke-width="1"/><path d="M0 3l13-3v22L0 19z" fill="#2b5797"/><text x="2" y="15" font-family="Liberation Sans" font-weight="bold" font-size="10" fill="#fff">W</text></svg>
<svg style="left:699px;top:737px" width="23" height="22" viewBox="0 0 23 22"><rect x="10" y="3" width="13" height="16" fill="#fff"/><path d="M15 6a3.5 3.5 0 1 0 3.5 3.5H15z" fill="#d24726"/><path d="M13 15h8M13 17h8" stroke="#d24726" stroke-width="1"/><path d="M0 2.5l13-2.5v22L0 19.5z" fill="#d24726"/><text x="2.5" y="15" font-family="Liberation Sans" font-weight="bold" font-size="10" fill="#fff">P</text></svg>
<svg style="left:748px;top:737px" width="23" height="22" viewBox="0 0 23 22"><rect x="9" y="2" width="14" height="18" fill="#fff"/><path d="M11 5h10M11 9h10M11 13h10M11 17h10M16 3v16" stroke="#217346" stroke-width="1"/><path d="M0 3l13-3v22L0 19z" fill="#217346"/><text x="3" y="15" font-family="Liberation Sans" font-weight="bold" font-size="10" fill="#fff">X</text></svg>
<div class="a" style="left:785px;top:728px;width:48px;height:40px;background:#55504c"></div>
<div class="a" style="left:798px;top:737px;width:22px;height:21px;border:2px dotted #fff;background:#2b2b2b"></div>
<div class="a" style="left:544px;top:766px;width:40px;height:2px;background:#f5dfa8"></div>
<div class="a" style="left:593px;top:766px;width:40px;height:2px;background:#f5dfa8"></div>
<div class="a" style="left:642px;top:766px;width:40px;height:2px;background:#f5dfa8"></div>
<div class="a" style="left:691px;top:766px;width:40px;height:2px;background:#f5dfa8"></div>
<div class="a" style="left:785px;top:766px;width:48px;height:2px;background:#f5dfa8"></div>
<svg style="left:1111px;top:744px" width="12" height="7" viewBox="0 0 12 7"><path d="M1 6.5l5-5 5 5" fill="none" stroke="#fff" stroke-width="1.3"/></svg>
<svg style="left:1133px;top:741px" width="15" height="15" viewBox="0 0 15 15"><circle cx="7.5" cy="7.5" r="6.5" fill="none" stroke="#fff" stroke-width="1.3"/><circle cx="7.5" cy="7.5" r="2.5" fill="#fff"/></svg>
<svg style="left:1156px;top:741px" width="19" height="16" viewBox="0 0 19 16"><path d="M3 11a3 3 0 0 1 1-6 5 5 0 0 1 9-1 3.5 3.5 0 0 1 1 7z" fill="#cfcfcf"/><circle cx="13" cy="11" r="5" fill="#d03a3a"/><path d="M11 9l4 4M15 9l-4 4" stroke="#fff" stroke-width="1.2"/></svg>
<svg style="left:1181px;top:741px" width="17" height="14" viewBox="0 0 17 14"><path d="M0 4h4M0 8h4M4 2v8" stroke="#fff" stroke-width="1.3"/><rect x="6.5" y="3.5" width="9" height="7" fill="none" stroke="#fff"/><rect x="8" y="5" width="4" height="4" fill="#fff"/></svg>
<svg style="left:1207px;top:741px" width="16" height="15" viewBox="0 0 16 15"><path d="M1 14A13 13 0 0 1 14 1M4 14A10 10 0 0 1 14 4M7 14A7 7 0 0 1 14 7M10 14a4 4 0 0 1 4-4" fill="none" stroke="#fff" stroke-width="1.2"/><circle cx="14" cy="14" r="1.3" fill="#fff"/></svg>
<svg style="left:1229px;top:741px" width="17" height="15" viewBox="0 0 17 15"><path d="M1 5h3l4-4v13l-4-4H1z" fill="none" stroke="#fff" stroke-width="1.2"/><path d="M10 5a3 3 0 0 1 0 5M12 3a6 6 0 0 1 0 9M14 1a9 9 0 0 1 0 13" fill="none" stroke="#fff" stroke-width="1.1"/></svg>
<div class="t" style="left:1259px;top:735px;font-size:12px;color:#fff;transform-origin:0 0;transform:scaleX(0.95)">9:25 AM</div>
<div class="t" style="left:1255px;top:752px;font-size:12px;color:#fff;transform-origin:0 0;transform:scaleX(0.95)">9/25/2020</div>
<svg style="left:1324px;top:740px" width="18" height="17" viewBox="0 0 18 17"><path d="M0 0h18v12H8l-4 4v-4H0z" fill="#fff"/><path d="M3 3h12M3 6h12M3 9h8" stroke="#2f2a27" stroke-width="1.2"/></svg>
<!-- cursor highlight -->
<div class="a" style="left:31px;top:653px;width:72px;height:72px;border-radius:50%;border:4px solid #e6f01e"></div>
<svg style="left:66px;top:688px" width="12" height="18" viewBox="0 0 12 18"><path d="M.5 .5v15l3.5-3.5 3 6 2-1-3-6h5z" fill="#fff" stroke="#111" stroke-width="1"/></svg>
</body></html>
